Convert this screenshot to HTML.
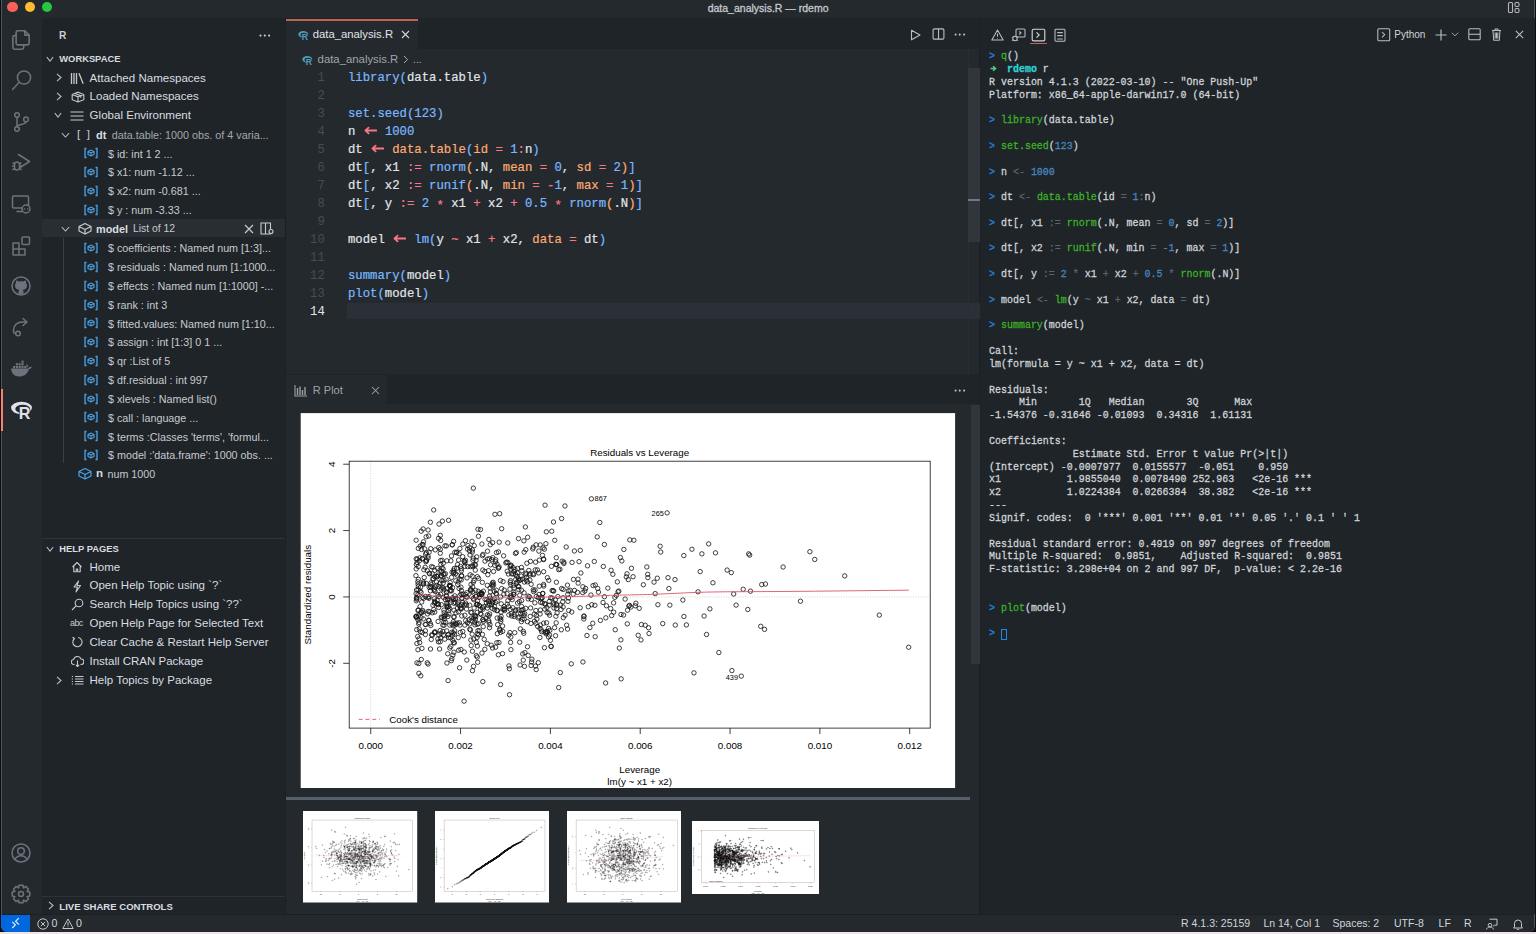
<!DOCTYPE html><html><head><meta charset="utf-8"><style>*{margin:0;padding:0;box-sizing:border-box}
html,body{width:1536px;height:934px;overflow:hidden}
body{background:#efe4e8;position:relative;font-family:"Liberation Sans",sans-serif}
.a{position:absolute}
.t{position:absolute;white-space:pre}
</style></head><body>
<div class="a" style="left:0px;top:0px;width:1536px;height:932px;background:#0c0d0f;"></div>
<div class="a" style="left:1px;top:0px;width:1534px;height:932px;background:#24292e;border-radius:0 0 6px 6px;border-left:1px solid #50555c;border-right:1px solid #50555c"></div>
<div class="a" style="left:2px;top:0px;width:1532px;height:18px;background:#24292e;"></div>
<div class="a" style="left:2px;top:17.5px;width:1532px;height:1px;background:#1b1f23;"></div>
<div class="a" style="left:7.4px;top:1.5999999999999996px;width:10.8px;height:10.8px;border-radius:50%;background:#fe5f57"></div>
<div class="a" style="left:24.6px;top:1.5999999999999996px;width:10.8px;height:10.8px;border-radius:50%;background:#febc2e"></div>
<div class="a" style="left:41.6px;top:1.5999999999999996px;width:10.8px;height:10.8px;border-radius:50%;background:#28c840"></div>
<div class="t" style="left:707.7px;top:1.90px;font-size:10.5px;line-height:12.6px;color:#c5c9ce;font-weight:400;font-family:'Liberation Sans',sans-serif;-webkit-text-stroke:0.3px currentColor">data_analysis.R — rdemo</div>
<svg class="a" style="left:1507px;top:1px;" width="14" height="13" viewBox="0 0 14 13" fill="none"><rect x="1.5" y="1.5" width="4" height="10" rx="1" stroke="#b5b9bd" stroke-width="1.1"/><rect x="8" y="1.5" width="4" height="4" rx="1.2" stroke="#b5b9bd" stroke-width="1.1"/><rect x="8" y="7.5" width="4" height="4" rx="1.2" stroke="#b5b9bd" stroke-width="1.1"/></svg>
<div class="a" style="left:2px;top:18px;width:39.5px;height:896px;background:#24292e;"></div>
<div class="a" style="left:41.5px;top:18px;width:243.5px;height:896px;background:#1f2428;"></div>
<div class="a" style="left:284.5px;top:18px;width:1px;height:896px;background:#1b1f23;"></div>
<div class="a" style="left:285.5px;top:18px;width:694px;height:30.5px;background:#1f2428;"></div>
<div class="a" style="left:285.5px;top:48.5px;width:694px;height:325.5px;background:#24292e;"></div>
<div class="a" style="left:285.5px;top:374px;width:694px;height:30.5px;background:#1f2428;"></div>
<div class="a" style="left:285.5px;top:404px;width:694px;height:510px;background:#24292e;"></div>
<div class="a" style="left:979.5px;top:18px;width:555px;height:896px;background:#1f2428;"></div>
<div class="a" style="left:979.3px;top:18px;width:1px;height:896px;background:#1b1f23;"></div>
<div class="a" style="left:2px;top:914.5px;width:1532px;height:17.3px;background:#24292e;border-radius:0 0 6px 6px"></div>
<div class="a" style="left:1.3px;top:914.5px;width:28.7px;height:17.3px;background:#0068de;border-radius:0 0 0 6px"></div>
<svg class="a" style="left:8.0px;top:26.700000000000003px;" width="26" height="26" viewBox="0 0 24 24" fill="none"><path d="M9 3.5h6.5l4 4V15a1.5 1.5 0 0 1-1.5 1.5H9A1.5 1.5 0 0 1 7.5 15V5A1.5 1.5 0 0 1 9 3.5z" stroke="#6b737c" stroke-width="1.5" stroke-linecap="round" stroke-linejoin="round"/><path d="M15.5 3.5v4h4" stroke="#6b737c" stroke-width="1.5" stroke-linecap="round" stroke-linejoin="round"/><path d="M7.5 8H6A1.5 1.5 0 0 0 4.5 9.5V19A1.5 1.5 0 0 0 6 20.5h7A1.5 1.5 0 0 0 14.5 19v-2.5" stroke="#6b737c" stroke-width="1.5" stroke-linecap="round" stroke-linejoin="round"/></svg>
<svg class="a" style="left:10px;top:68.4px;" width="24" height="24" viewBox="0 0 24 24" fill="none"><circle cx="14" cy="9.5" r="6.6" stroke="#6b737c" stroke-width="1.5" stroke-linecap="round" stroke-linejoin="round"/><path d="M9.4 14.1L2.6 21.4" stroke="#6b737c" stroke-width="1.5" stroke-linecap="round" stroke-linejoin="round"/></svg>
<svg class="a" style="left:9.9px;top:109.6px;" width="24" height="24" viewBox="0 0 24 24" fill="none"><circle cx="7" cy="5" r="2.3" stroke="#6b737c" stroke-width="1.5" stroke-linecap="round" stroke-linejoin="round"/><circle cx="7" cy="19" r="2.3" stroke="#6b737c" stroke-width="1.5" stroke-linecap="round" stroke-linejoin="round"/><circle cx="16" cy="9.4" r="2.3" stroke="#6b737c" stroke-width="1.5" stroke-linecap="round" stroke-linejoin="round"/><path d="M7 7.3v9.4M16 11.7c0 3.5-9 2-9 5" stroke="#6b737c" stroke-width="1.5" stroke-linecap="round" stroke-linejoin="round"/></svg>
<svg class="a" style="left:9.3px;top:150.0px;" width="24" height="24" viewBox="0 0 24 24" fill="none"><path d="M9.5 4.5L20.5 11.5L11 17.5" stroke="#6b737c" stroke-width="1.5" stroke-linecap="round" stroke-linejoin="round"/><path d="M5.5 14.5a2.5 2.5 0 0 1 5 0v3a2.5 2.5 0 0 1-5 0z" stroke="#6b737c" stroke-width="1.5" stroke-linecap="round" stroke-linejoin="round"/><path d="M3.5 16h2M10.5 16h2M3.8 19.5l1.8-.8M12.2 19.5l-1.8-.8M4 13l1.6.8M12 13l-1.6.8" stroke="#6b737c" stroke-width="1.5" stroke-linecap="round" stroke-linejoin="round"/></svg>
<svg class="a" style="left:9.3px;top:192.0px;" width="24" height="24" viewBox="0 0 24 24" fill="none"><rect x="3.5" y="4" width="16" height="12" rx="1" stroke="#6b737c" stroke-width="1.5" stroke-linecap="round" stroke-linejoin="round"/><path d="M8 19.5h5" stroke="#6b737c" stroke-width="1.5" stroke-linecap="round" stroke-linejoin="round"/><circle cx="17" cy="17" r="4" stroke="#6b737c" stroke-width="1.5" fill="#24292e"/><path d="M15.8 16.2l-1 1 1 1M18.2 16.2l1 1-1 1" stroke="#6b737c" stroke-width="1"/></svg>
<svg class="a" style="left:9.3px;top:233.5px;" width="24" height="24" viewBox="0 0 24 24" fill="none"><path d="M4 9h6v6H4zM4 15h6v6H4zM10 15h6v6h-6z" stroke="#6b737c" stroke-width="1.5" stroke-linecap="round" stroke-linejoin="round"/><rect x="13" y="3" width="7.5" height="7.5" rx="1" stroke="#6b737c" stroke-width="1.5" stroke-linecap="round" stroke-linejoin="round"/></svg>
<svg class="a" style="left:9.3px;top:274.0px;" width="24" height="24" viewBox="0 0 24 24" fill="none"><circle cx="12" cy="12" r="9" stroke="#6b737c" stroke-width="1.5" stroke-linecap="round" stroke-linejoin="round"/><path d="M9.5 20.5v-3c0-.8.3-1.4.8-1.8-2.8-.3-4.3-1.5-4.3-4.3 0-1 .4-1.9 1-2.6-.1-.7-.1-1.6.2-2.3 0 0 .9-.2 2.6 1a8 8 0 0 1 4.4 0c1.7-1.2 2.6-1 2.6-1 .3.7.3 1.6.2 2.3.6.7 1 1.6 1 2.6 0 2.8-1.5 4-4.3 4.3.5.4.8 1 .8 1.8v3" fill="#6b737c" stroke="none"/></svg>
<svg class="a" style="left:9.3px;top:315.0px;" width="24" height="24" viewBox="0 0 24 24" fill="none"><path d="M4.5 15c0-5 4-8 9-8h3.5M14 3.5L18 7l-4 3.5" stroke="#6b737c" stroke-width="1.5" stroke-linecap="round" stroke-linejoin="round"/><circle cx="9" cy="18.5" r="2.3" stroke="#6b737c" stroke-width="1.5" stroke-linecap="round" stroke-linejoin="round"/><path d="M4.5 15.5c0 1 .2 2 .6 2.8" stroke="#6b737c" stroke-width="1.5" stroke-linecap="round" stroke-linejoin="round"/></svg>
<svg class="a" style="left:10px;top:360px;" width="23" height="18" viewBox="0 0 23 18" fill="none"><path d="M1 8.5h17.2c.6-1.3 1.8-2 3.6-1.6-.5 1.3-1.6 2-2.8 2.1C17.5 14 14 16.5 9 16.5 4.5 16.5 1.6 13.5 1 8.5z" fill="#6b737c"/><g fill="#6b737c"><rect x="3" y="6" width="2.2" height="2.2"/><rect x="5.8" y="6" width="2.2" height="2.2"/><rect x="8.6" y="6" width="2.2" height="2.2"/><rect x="11.4" y="6" width="2.2" height="2.2"/><rect x="14.2" y="6" width="2.2" height="2.2"/><rect x="5.8" y="3.2" width="2.2" height="2.2"/><rect x="8.6" y="3.2" width="2.2" height="2.2"/><rect x="11.4" y="3.2" width="2.2" height="2.2"/><rect x="11.4" y="0.6" width="2.2" height="2.2"/></g><path d="M16.5 4.5l1.3 2.6" stroke="#6b737c" stroke-width="1.2"/></svg>
<div class="a" style="left:1.2px;top:389px;width:1.8px;height:41.5px;background:#f9826c;"></div>
<svg class="a" style="left:9px;top:398px;" width="26" height="23" viewBox="0 0 26 23" fill="none"><path fill-rule="evenodd" d="M2.0999999999999996 10a10.4 6.2 0 1 0 20.8 0a10.4 6.2 0 1 0 -20.8 0zM6.299999999999999 10.9a7.4 4.2 0 1 0 14.8 0a7.4 4.2 0 1 0 -14.8 0z" fill="#dfe2e6"/><text x="9.8" y="20.7" font-family="Liberation Sans" font-weight="700" font-size="16.2" fill="#dfe2e6" stroke="#24292e" stroke-width="1.4" paint-order="stroke">R</text></svg>
<svg class="a" style="left:9.3px;top:840.5px;" width="24" height="24" viewBox="0 0 24 24" fill="none"><circle cx="12" cy="12" r="9" stroke="#6b737c" stroke-width="1.5" stroke-linecap="round" stroke-linejoin="round"/><circle cx="12" cy="10" r="3.3" stroke="#6b737c" stroke-width="1.5" stroke-linecap="round" stroke-linejoin="round"/><path d="M6 18.5c1.2-2.3 3.4-3.7 6-3.7s4.8 1.4 6 3.7" stroke="#6b737c" stroke-width="1.5" stroke-linecap="round" stroke-linejoin="round"/></svg>
<svg class="a" style="left:9.3px;top:881.5px;" width="24" height="24" viewBox="0 0 24 24" fill="none"><path d="M20.78 10.04 L20.78 13.96 L18.25 14.42 L18.13 14.70 L19.60 16.82 L16.82 19.60 L14.70 18.13 L14.42 18.25 L13.96 20.78 L10.04 20.78 L9.58 18.25 L9.30 18.13 L7.18 19.60 L4.40 16.82 L5.87 14.70 L5.75 14.42 L3.22 13.96 L3.22 10.04 L5.75 9.58 L5.87 9.30 L4.40 7.18 L7.18 4.40 L9.30 5.87 L9.58 5.75 L10.04 3.22 L13.96 3.22 L14.42 5.75 L14.70 5.87 L16.82 4.40 L19.60 7.18 L18.13 9.30 L18.25 9.58Z" stroke="#6b737c" stroke-width="1.5" stroke-linecap="round" stroke-linejoin="round"/><circle cx="12" cy="12" r="2.5" stroke="#6b737c" stroke-width="1.5" stroke-linecap="round" stroke-linejoin="round"/></svg>
<div class="t" style="left:59px;top:29.53px;font-size:10.2px;line-height:12.24px;color:#c9cdd1;font-weight:700;font-family:'Liberation Sans',sans-serif;">R</div>
<svg class="a" style="left:257px;top:31.6px;" width="16" height="7" viewBox="0 0 16 7" fill="none"><circle cx="3.5" cy="3.6" r="1.05" fill="#c9cdd1"/><circle cx="7.8" cy="3.6" r="1.05" fill="#c9cdd1"/><circle cx="12.1" cy="3.6" r="1.05" fill="#c9cdd1"/></svg>
<svg class="a" style="left:45.5px;top:55.6px;" width="8" height="6" viewBox="0 0 8 6" fill="none"><path d="M0.8 1L4.0 5L7.2 1" stroke="#b8bdc2" stroke-width="1.1" fill="none"/></svg>
<div class="t" style="left:59.3px;top:53.64px;font-size:9.35px;line-height:11.22px;color:#d9dde1;font-weight:700;font-family:'Liberation Sans',sans-serif;">WORKSPACE</div>
<svg class="a" style="left:55.5px;top:73.3px;" width="6" height="9" viewBox="0 0 6 9" fill="none"><path d="M1 0.8L5 4.5L1 8.2" stroke="#b8bdc2" stroke-width="1.1" fill="none"/></svg>
<svg class="a" style="left:70px;top:71.5px;" width="15" height="13" viewBox="0 0 15 13" fill="none"><path d="M1.5 1v11M4 1v11M6.5 1v11M9 1.2l4.2 10.6" stroke="#c6cacf" stroke-width="1.3"/></svg>
<div class="t" style="left:89.6px;top:71.52px;font-size:11.55px;line-height:13.86px;color:#d9dde1;font-weight:400;font-family:'Liberation Sans',sans-serif;">Attached Namespaces</div>
<svg class="a" style="left:55.5px;top:92.0px;" width="6" height="9" viewBox="0 0 6 9" fill="none"><path d="M1 0.8L5 4.5L1 8.2" stroke="#b8bdc2" stroke-width="1.1" fill="none"/></svg>
<svg class="a" style="left:70.5px;top:90.5px;" width="14" height="12" viewBox="0 0 14 12" fill="none"><path d="M1.2 3.5L7 1.2l5.8 2.3v5.2L7 11 1.2 8.7z M1.2 3.5L7 5.8l5.8-2.3 M7 5.8V11" stroke="#c6cacf" stroke-width="1.1" fill="none"/><path d="M4 2.4l5.8 2.3v2" stroke="#c6cacf" stroke-width="1.1"/></svg>
<div class="t" style="left:89.6px;top:90.22px;font-size:11.55px;line-height:13.86px;color:#d9dde1;font-weight:400;font-family:'Liberation Sans',sans-serif;">Loaded Namespaces</div>
<svg class="a" style="left:54px;top:112.2px;" width="8" height="6" viewBox="0 0 8 6" fill="none"><path d="M0.8 1L4.0 5L7.2 1" stroke="#b8bdc2" stroke-width="1.1" fill="none"/></svg>
<svg class="a" style="left:70px;top:109.5px;" width="14" height="12" viewBox="0 0 14 12" fill="none"><path d="M0.5 2h13M0.5 6h13M0.5 10h13" stroke="#c6cacf" stroke-width="1.2"/></svg>
<div class="t" style="left:89.6px;top:108.92px;font-size:11.55px;line-height:13.86px;color:#d9dde1;font-weight:400;font-family:'Liberation Sans',sans-serif;">Global Environment</div>
<svg class="a" style="left:60.5px;top:131.6px;" width="9" height="6" viewBox="0 0 9 6" fill="none"><path d="M0.8 1L4.5 5L8.2 1" stroke="#b8bdc2" stroke-width="1.1" fill="none"/></svg>
<div class="t" style="left:77px;top:128.15px;font-size:11.5px;line-height:13.8px;color:#c6cacf;font-weight:400;font-family:'Liberation Sans',sans-serif;letter-spacing:1.7px">[ ]</div>
<div class="t" style="left:96px;top:128.65px;font-size:11.0px;line-height:13.2px;color:#d9dde1;font-weight:700;font-family:'Liberation Sans',sans-serif;">dt</div>
<div class="t" style="left:111.8px;top:128.98px;font-size:10.78px;line-height:12.94px;color:#a3a8ae;font-weight:400;font-family:'Liberation Sans',sans-serif;">data.table: 1000 obs. of 4 varia...</div>
<svg class="a" style="left:84px;top:147.4px;" width="14" height="12" viewBox="0 0 14 12" fill="none"><path d="M2.5 1.5H1v9h1.5M11.5 1.5H13v9h-1.5" stroke="#4aa3e8" stroke-width="1.3" fill="none"/><path d="M4 4.5l3-1.5 3 1.5v3l-3 1.5-3-1.5z M4 4.5l3 1.5 3-1.5 M7 6v3" stroke="#4aa3e8" stroke-width="1.1" fill="none"/></svg>
<div class="t" style="left:108px;top:147.60px;font-size:10.75px;line-height:12.9px;color:#c6cacf;font-weight:400;font-family:'Liberation Sans',sans-serif;">$ id: int 1 2 ...</div>
<svg class="a" style="left:84px;top:166.25px;" width="14" height="12" viewBox="0 0 14 12" fill="none"><path d="M2.5 1.5H1v9h1.5M11.5 1.5H13v9h-1.5" stroke="#4aa3e8" stroke-width="1.3" fill="none"/><path d="M4 4.5l3-1.5 3 1.5v3l-3 1.5-3-1.5z M4 4.5l3 1.5 3-1.5 M7 6v3" stroke="#4aa3e8" stroke-width="1.1" fill="none"/></svg>
<div class="t" style="left:108px;top:166.45px;font-size:10.75px;line-height:12.9px;color:#c6cacf;font-weight:400;font-family:'Liberation Sans',sans-serif;">$ x1: num -1.12 ...</div>
<svg class="a" style="left:84px;top:185.10000000000002px;" width="14" height="12" viewBox="0 0 14 12" fill="none"><path d="M2.5 1.5H1v9h1.5M11.5 1.5H13v9h-1.5" stroke="#4aa3e8" stroke-width="1.3" fill="none"/><path d="M4 4.5l3-1.5 3 1.5v3l-3 1.5-3-1.5z M4 4.5l3 1.5 3-1.5 M7 6v3" stroke="#4aa3e8" stroke-width="1.1" fill="none"/></svg>
<div class="t" style="left:108px;top:185.30px;font-size:10.75px;line-height:12.9px;color:#c6cacf;font-weight:400;font-family:'Liberation Sans',sans-serif;">$ x2: num -0.681 ...</div>
<svg class="a" style="left:84px;top:203.95000000000002px;" width="14" height="12" viewBox="0 0 14 12" fill="none"><path d="M2.5 1.5H1v9h1.5M11.5 1.5H13v9h-1.5" stroke="#4aa3e8" stroke-width="1.3" fill="none"/><path d="M4 4.5l3-1.5 3 1.5v3l-3 1.5-3-1.5z M4 4.5l3 1.5 3-1.5 M7 6v3" stroke="#4aa3e8" stroke-width="1.1" fill="none"/></svg>
<div class="t" style="left:108px;top:204.15px;font-size:10.75px;line-height:12.9px;color:#c6cacf;font-weight:400;font-family:'Liberation Sans',sans-serif;">$ y : num -3.33 ...</div>
<div class="a" style="left:42px;top:218.6px;width:242.5px;height:18.8px;background:#282e34;"></div>
<svg class="a" style="left:60.5px;top:225.7px;" width="9" height="6" viewBox="0 0 9 6" fill="none"><path d="M0.8 1L4.5 5L8.2 1" stroke="#b8bdc2" stroke-width="1.1" fill="none"/></svg>
<svg class="a" style="left:77.5px;top:222.2px;" width="14" height="13" viewBox="0 0 14 13" fill="none"><path d="M1 4.5L7 1.5l6 3v4.5L7 12 1 9z M1 4.5L7 7.5l6-3 M7 7.5V12" stroke="#c6cacf" stroke-width="1.2" fill="none" stroke-linejoin="round"/></svg>
<div class="t" style="left:96px;top:222.81px;font-size:10.9px;line-height:13.08px;color:#d9dde1;font-weight:700;font-family:'Liberation Sans',sans-serif;">model</div>
<div class="t" style="left:133px;top:223.24px;font-size:10.35px;line-height:12.42px;color:#c6cacf;font-weight:400;font-family:'Liberation Sans',sans-serif;">List of 12</div>
<svg class="a" style="left:243.5px;top:223.5px;" width="10" height="10" viewBox="0 0 10 10" fill="none"><path d="M1 1l8 8M9 1L1 9" stroke="#c6cacf" stroke-width="1.2"/></svg>
<svg class="a" style="left:259.5px;top:222px;" width="14" height="13" viewBox="0 0 14 13" fill="none"><path d="M1 1h9.5v11H1zM5.5 1v11" stroke="#c6cacf" stroke-width="1.1" fill="none"/><circle cx="11" cy="9.5" r="2" stroke="#c6cacf" stroke-width="1.1" fill="#282e34"/></svg>
<div class="a" style="left:62.5px;top:238px;width:0.8px;height:225px;background:#3a4047;"></div>
<svg class="a" style="left:84px;top:242.1px;" width="14" height="12" viewBox="0 0 14 12" fill="none"><path d="M2.5 1.5H1v9h1.5M11.5 1.5H13v9h-1.5" stroke="#4aa3e8" stroke-width="1.3" fill="none"/><path d="M4 4.5l3-1.5 3 1.5v3l-3 1.5-3-1.5z M4 4.5l3 1.5 3-1.5 M7 6v3" stroke="#4aa3e8" stroke-width="1.1" fill="none"/></svg>
<div class="t" style="left:108px;top:242.30px;font-size:10.75px;line-height:12.9px;color:#c6cacf;font-weight:400;font-family:'Liberation Sans',sans-serif;">$ coefficients : Named num [1:3]...</div>
<svg class="a" style="left:84px;top:260.92px;" width="14" height="12" viewBox="0 0 14 12" fill="none"><path d="M2.5 1.5H1v9h1.5M11.5 1.5H13v9h-1.5" stroke="#4aa3e8" stroke-width="1.3" fill="none"/><path d="M4 4.5l3-1.5 3 1.5v3l-3 1.5-3-1.5z M4 4.5l3 1.5 3-1.5 M7 6v3" stroke="#4aa3e8" stroke-width="1.1" fill="none"/></svg>
<div class="t" style="left:108px;top:261.12px;font-size:10.75px;line-height:12.9px;color:#c6cacf;font-weight:400;font-family:'Liberation Sans',sans-serif;">$ residuals : Named num [1:1000...</div>
<svg class="a" style="left:84px;top:279.74px;" width="14" height="12" viewBox="0 0 14 12" fill="none"><path d="M2.5 1.5H1v9h1.5M11.5 1.5H13v9h-1.5" stroke="#4aa3e8" stroke-width="1.3" fill="none"/><path d="M4 4.5l3-1.5 3 1.5v3l-3 1.5-3-1.5z M4 4.5l3 1.5 3-1.5 M7 6v3" stroke="#4aa3e8" stroke-width="1.1" fill="none"/></svg>
<div class="t" style="left:108px;top:279.94px;font-size:10.75px;line-height:12.9px;color:#c6cacf;font-weight:400;font-family:'Liberation Sans',sans-serif;">$ effects : Named num [1:1000] -...</div>
<svg class="a" style="left:84px;top:298.56px;" width="14" height="12" viewBox="0 0 14 12" fill="none"><path d="M2.5 1.5H1v9h1.5M11.5 1.5H13v9h-1.5" stroke="#4aa3e8" stroke-width="1.3" fill="none"/><path d="M4 4.5l3-1.5 3 1.5v3l-3 1.5-3-1.5z M4 4.5l3 1.5 3-1.5 M7 6v3" stroke="#4aa3e8" stroke-width="1.1" fill="none"/></svg>
<div class="t" style="left:108px;top:298.76px;font-size:10.75px;line-height:12.9px;color:#c6cacf;font-weight:400;font-family:'Liberation Sans',sans-serif;">$ rank : int 3</div>
<svg class="a" style="left:84px;top:317.38px;" width="14" height="12" viewBox="0 0 14 12" fill="none"><path d="M2.5 1.5H1v9h1.5M11.5 1.5H13v9h-1.5" stroke="#4aa3e8" stroke-width="1.3" fill="none"/><path d="M4 4.5l3-1.5 3 1.5v3l-3 1.5-3-1.5z M4 4.5l3 1.5 3-1.5 M7 6v3" stroke="#4aa3e8" stroke-width="1.1" fill="none"/></svg>
<div class="t" style="left:108px;top:317.58px;font-size:10.75px;line-height:12.9px;color:#c6cacf;font-weight:400;font-family:'Liberation Sans',sans-serif;">$ fitted.values: Named num [1:10...</div>
<svg class="a" style="left:84px;top:336.2px;" width="14" height="12" viewBox="0 0 14 12" fill="none"><path d="M2.5 1.5H1v9h1.5M11.5 1.5H13v9h-1.5" stroke="#4aa3e8" stroke-width="1.3" fill="none"/><path d="M4 4.5l3-1.5 3 1.5v3l-3 1.5-3-1.5z M4 4.5l3 1.5 3-1.5 M7 6v3" stroke="#4aa3e8" stroke-width="1.1" fill="none"/></svg>
<div class="t" style="left:108px;top:336.40px;font-size:10.75px;line-height:12.9px;color:#c6cacf;font-weight:400;font-family:'Liberation Sans',sans-serif;">$ assign : int [1:3] 0 1 ...</div>
<svg class="a" style="left:84px;top:355.02px;" width="14" height="12" viewBox="0 0 14 12" fill="none"><path d="M2.5 1.5H1v9h1.5M11.5 1.5H13v9h-1.5" stroke="#4aa3e8" stroke-width="1.3" fill="none"/><path d="M4 4.5l3-1.5 3 1.5v3l-3 1.5-3-1.5z M4 4.5l3 1.5 3-1.5 M7 6v3" stroke="#4aa3e8" stroke-width="1.1" fill="none"/></svg>
<div class="t" style="left:108px;top:355.22px;font-size:10.75px;line-height:12.9px;color:#c6cacf;font-weight:400;font-family:'Liberation Sans',sans-serif;">$ qr :List of 5</div>
<svg class="a" style="left:84px;top:373.84000000000003px;" width="14" height="12" viewBox="0 0 14 12" fill="none"><path d="M2.5 1.5H1v9h1.5M11.5 1.5H13v9h-1.5" stroke="#4aa3e8" stroke-width="1.3" fill="none"/><path d="M4 4.5l3-1.5 3 1.5v3l-3 1.5-3-1.5z M4 4.5l3 1.5 3-1.5 M7 6v3" stroke="#4aa3e8" stroke-width="1.1" fill="none"/></svg>
<div class="t" style="left:108px;top:374.04px;font-size:10.75px;line-height:12.9px;color:#c6cacf;font-weight:400;font-family:'Liberation Sans',sans-serif;">$ df.residual : int 997</div>
<svg class="a" style="left:84px;top:392.65999999999997px;" width="14" height="12" viewBox="0 0 14 12" fill="none"><path d="M2.5 1.5H1v9h1.5M11.5 1.5H13v9h-1.5" stroke="#4aa3e8" stroke-width="1.3" fill="none"/><path d="M4 4.5l3-1.5 3 1.5v3l-3 1.5-3-1.5z M4 4.5l3 1.5 3-1.5 M7 6v3" stroke="#4aa3e8" stroke-width="1.1" fill="none"/></svg>
<div class="t" style="left:108px;top:392.86px;font-size:10.75px;line-height:12.9px;color:#c6cacf;font-weight:400;font-family:'Liberation Sans',sans-serif;">$ xlevels : Named list()</div>
<svg class="a" style="left:84px;top:411.48px;" width="14" height="12" viewBox="0 0 14 12" fill="none"><path d="M2.5 1.5H1v9h1.5M11.5 1.5H13v9h-1.5" stroke="#4aa3e8" stroke-width="1.3" fill="none"/><path d="M4 4.5l3-1.5 3 1.5v3l-3 1.5-3-1.5z M4 4.5l3 1.5 3-1.5 M7 6v3" stroke="#4aa3e8" stroke-width="1.1" fill="none"/></svg>
<div class="t" style="left:108px;top:411.68px;font-size:10.75px;line-height:12.9px;color:#c6cacf;font-weight:400;font-family:'Liberation Sans',sans-serif;">$ call : language ...</div>
<svg class="a" style="left:84px;top:430.29999999999995px;" width="14" height="12" viewBox="0 0 14 12" fill="none"><path d="M2.5 1.5H1v9h1.5M11.5 1.5H13v9h-1.5" stroke="#4aa3e8" stroke-width="1.3" fill="none"/><path d="M4 4.5l3-1.5 3 1.5v3l-3 1.5-3-1.5z M4 4.5l3 1.5 3-1.5 M7 6v3" stroke="#4aa3e8" stroke-width="1.1" fill="none"/></svg>
<div class="t" style="left:108px;top:430.50px;font-size:10.75px;line-height:12.9px;color:#c6cacf;font-weight:400;font-family:'Liberation Sans',sans-serif;">$ terms :Classes 'terms', 'formul...</div>
<svg class="a" style="left:84px;top:449.12px;" width="14" height="12" viewBox="0 0 14 12" fill="none"><path d="M2.5 1.5H1v9h1.5M11.5 1.5H13v9h-1.5" stroke="#4aa3e8" stroke-width="1.3" fill="none"/><path d="M4 4.5l3-1.5 3 1.5v3l-3 1.5-3-1.5z M4 4.5l3 1.5 3-1.5 M7 6v3" stroke="#4aa3e8" stroke-width="1.1" fill="none"/></svg>
<div class="t" style="left:108px;top:449.32px;font-size:10.75px;line-height:12.9px;color:#c6cacf;font-weight:400;font-family:'Liberation Sans',sans-serif;">$ model :'data.frame': 1000 obs. ...</div>
<svg class="a" style="left:77.5px;top:467.2px;" width="14" height="13" viewBox="0 0 14 13" fill="none"><path d="M1 4.5L7 1.5l6 3v4.5L7 12 1 9z M1 4.5L7 7.5l6-3 M7 7.5V12" stroke="#4aa3e8" stroke-width="1.2" fill="none" stroke-linejoin="round"/></svg>
<div class="t" style="left:96px;top:467.35px;font-size:11.5px;line-height:13.8px;color:#d9dde1;font-weight:700;font-family:'Liberation Sans',sans-serif;">n</div>
<div class="t" style="left:107.6px;top:468.03px;font-size:10.7px;line-height:12.84px;color:#c6cacf;font-weight:400;font-family:'Liberation Sans',sans-serif;">num 1000</div>
<div class="a" style="left:42px;top:538.3px;width:242.5px;height:1px;background:#2d3339;"></div>
<svg class="a" style="left:45.5px;top:545.6px;" width="8" height="6" viewBox="0 0 8 6" fill="none"><path d="M0.8 1L4.0 5L7.2 1" stroke="#b8bdc2" stroke-width="1.1" fill="none"/></svg>
<div class="t" style="left:59.3px;top:543.64px;font-size:9.35px;line-height:11.22px;color:#d9dde1;font-weight:700;font-family:'Liberation Sans',sans-serif;">HELP PAGES</div>
<div class="t" style="left:89.5px;top:560.55px;font-size:11.5px;line-height:13.8px;color:#d9dde1;font-weight:400;font-family:'Liberation Sans',sans-serif;">Home</div>
<div class="t" style="left:89.5px;top:579.45px;font-size:11.5px;line-height:13.8px;color:#d9dde1;font-weight:400;font-family:'Liberation Sans',sans-serif;">Open Help Topic using `?`</div>
<div class="t" style="left:89.5px;top:598.35px;font-size:11.5px;line-height:13.8px;color:#d9dde1;font-weight:400;font-family:'Liberation Sans',sans-serif;">Search Help Topics using `??`</div>
<div class="t" style="left:89.5px;top:617.25px;font-size:11.5px;line-height:13.8px;color:#d9dde1;font-weight:400;font-family:'Liberation Sans',sans-serif;">Open Help Page for Selected Text</div>
<div class="t" style="left:89.5px;top:636.15px;font-size:11.5px;line-height:13.8px;color:#d9dde1;font-weight:400;font-family:'Liberation Sans',sans-serif;">Clear Cache &amp; Restart Help Server</div>
<div class="t" style="left:89.5px;top:655.05px;font-size:11.5px;line-height:13.8px;color:#d9dde1;font-weight:400;font-family:'Liberation Sans',sans-serif;">Install CRAN Package</div>
<div class="t" style="left:89.5px;top:673.95px;font-size:11.5px;line-height:13.8px;color:#d9dde1;font-weight:400;font-family:'Liberation Sans',sans-serif;">Help Topics by Package</div>
<svg class="a" style="left:71px;top:561px;" width="12" height="12" viewBox="0 0 12 12" fill="none"><path d="M1.5 6L6 1.5 10.5 6M2.8 4.8v6h2.5V8h1.4v2.8h2.5v-6" stroke="#c6cacf" stroke-width="1.1" fill="none" stroke-linejoin="round"/></svg>
<svg class="a" style="left:71px;top:579.5px;" width="12" height="13" viewBox="0 0 12 13" fill="none"><path d="M7.5 1L3 7h3.5L5 12l4.5-6.5H6z" stroke="#c6cacf" stroke-width="1.1" fill="none" stroke-linejoin="round"/></svg>
<svg class="a" style="left:70.5px;top:598px;" width="13" height="13" viewBox="0 0 13 13" fill="none"><circle cx="8" cy="5" r="3.8" stroke="#c6cacf" stroke-width="1.1" fill="none" stroke-linejoin="round"/><path d="M5.3 7.7L1 12" stroke="#c6cacf" stroke-width="1.1" fill="none" stroke-linejoin="round"/></svg>
<div class="t" style="left:70px;top:618.35px;font-size:9px;line-height:10.8px;color:#c6cacf;font-weight:400;font-family:'Liberation Sans',sans-serif;letter-spacing:-0.6px">abc</div>
<svg class="a" style="left:71px;top:636px;" width="12" height="12" viewBox="0 0 12 12" fill="none"><path d="M3.5 2.5A4.6 4.6 0 1 0 7 1.5M1.5 1.2l2 1.3-1.2 2" stroke="#c6cacf" stroke-width="1.1" fill="none" stroke-linejoin="round"/></svg>
<svg class="a" style="left:70.5px;top:655px;" width="13" height="12" viewBox="0 0 13 12" fill="none"><path d="M3.5 9.5H3a2.5 2.5 0 0 1-.3-5A3.8 3.8 0 0 1 10 4a2.6 2.6 0 0 1 .2 5.5H9.5M6.5 5.5v6M4.8 9.8l1.7 1.7 1.7-1.7" stroke="#c6cacf" stroke-width="1.1" fill="none" stroke-linejoin="round"/></svg>
<svg class="a" style="left:55.5px;top:675.5px;" width="6" height="9" viewBox="0 0 6 9" fill="none"><path d="M1 0.8L5 4.5L1 8.2" stroke="#b8bdc2" stroke-width="1.1" fill="none"/></svg>
<svg class="a" style="left:70.5px;top:674.5px;" width="13" height="11" viewBox="0 0 13 11" fill="none"><path d="M0.8 1.5h1.2M0.8 4h1.2M0.8 6.5h1.2M0.8 9h1.2M4 1.5h8.5M4 4h8.5M4 6.5h8.5M4 9h8.5" stroke="#c6cacf" stroke-width="1.1"/></svg>
<div class="a" style="left:42px;top:895.5px;width:242.5px;height:1px;background:#2d3339;"></div>
<svg class="a" style="left:48px;top:901.1px;" width="6" height="9" viewBox="0 0 6 9" fill="none"><path d="M1 0.8L5 4.5L1 8.2" stroke="#b8bdc2" stroke-width="1.1" fill="none"/></svg>
<div class="t" style="left:59.3px;top:900.52px;font-size:9.55px;line-height:11.46px;color:#d9dde1;font-weight:700;font-family:'Liberation Sans',sans-serif;">LIVE SHARE CONTROLS</div>
<div class="a" style="left:285.5px;top:18.5px;width:132.5px;height:30px;background:#24292e;"></div>
<div class="a" style="left:285.5px;top:18.9px;width:132.5px;height:1.7px;background:#bd6452;"></div>
<svg class="a" style="left:297.5px;top:29.5px;" width="12.0" height="10.0" viewBox="0 0 12 10" fill="none"><path fill-rule="evenodd" d="M0.2999999999999998 4.3a5.0 3.3 0 1 0 10.0 0a5.0 3.3 0 1 0 -10.0 0zM2.5000000000000004 4.8a3.4 2.1 0 1 0 6.8 0a3.4 2.1 0 1 0 -6.8 0z" fill="#519aba"/><text x="3.7" y="9.6" font-family="Liberation Sans" font-weight="700" font-size="8.6" fill="#519aba" stroke="#24292e" stroke-width="0.9" paint-order="stroke">R</text></svg>
<div class="t" style="left:312.7px;top:27.52px;font-size:11.3px;line-height:13.56px;color:#e1e4e8;font-weight:400;font-family:'Liberation Sans',sans-serif;">data_analysis.R</div>
<svg class="a" style="left:401px;top:30px;" width="9" height="9" viewBox="0 0 9 9" fill="none"><path d="M1 1l7 7M8 1L1 8" stroke="#d1d5da" stroke-width="1.1"/></svg>
<svg class="a" style="left:909.5px;top:28.5px;" width="11" height="12" viewBox="0 0 11 12" fill="none"><path d="M1.5 1.2L10 6 1.5 10.8z" stroke="#b9bec3" stroke-width="1.1" fill="none" stroke-linejoin="round"/></svg>
<svg class="a" style="left:931.5px;top:28.3px;" width="13" height="12" viewBox="0 0 13 12" fill="none"><rect x="1.1" y="0.9" width="10.8" height="10.2" rx="1.2" stroke="#b9bec3" stroke-width="1.1" fill="none"/><path d="M6.5 1v10" stroke="#b9bec3" stroke-width="1.1"/></svg>
<svg class="a" style="left:952px;top:31px;" width="16" height="7" viewBox="0 0 16 7" fill="none"><circle cx="3.6" cy="3.6" r="1.05" fill="#b9bec3"/><circle cx="7.7" cy="3.6" r="1.05" fill="#b9bec3"/><circle cx="12.1" cy="3.6" r="1.05" fill="#b9bec3"/></svg>
<svg class="a" style="left:302px;top:54.5px;" width="12.0" height="10.0" viewBox="0 0 12 10" fill="none"><path fill-rule="evenodd" d="M0.2999999999999998 4.3a5.0 3.3 0 1 0 10.0 0a5.0 3.3 0 1 0 -10.0 0zM2.5000000000000004 4.8a3.4 2.1 0 1 0 6.8 0a3.4 2.1 0 1 0 -6.8 0z" fill="#519aba"/><text x="3.7" y="9.6" font-family="Liberation Sans" font-weight="700" font-size="8.6" fill="#519aba" stroke="#24292e" stroke-width="0.9" paint-order="stroke">R</text></svg>
<div class="t" style="left:317.6px;top:52.79px;font-size:11.35px;line-height:13.62px;color:#a0a5ab;font-weight:400;font-family:'Liberation Sans',sans-serif;">data_analysis.R</div>
<svg class="a" style="left:403px;top:54.5px;" width="6" height="9" viewBox="0 0 6 9" fill="none"><path d="M1 1l3.5 3.5L1 8" stroke="#a8adb2" stroke-width="1" fill="none"/></svg>
<div class="t" style="left:413px;top:53.30px;font-size:10.5px;line-height:12.6px;color:#a8adb2;font-weight:400;font-family:'Liberation Sans',sans-serif;">...</div>
<div class="a" style="left:347px;top:302.6px;width:632.5px;height:16.9px;background:#2b3036;"></div>
<div class="a" style="left:968px;top:48.5px;width:0.8px;height:325.5px;background:#292e34;"></div>
<div class="a" style="left:968px;top:68.2px;width:11.5px;height:173.5px;background:#30363c;"></div>
<div class="a" style="left:968px;top:199.3px;width:11.5px;height:1.8px;background:#6f7a85;"></div>
<div class="t" style="left:317.425px;top:68.75px;font-size:12.29px;line-height:18px;color:#454d55;font-weight:400;font-family:'Liberation Mono',monospace;">1</div>
<div class="t" style="left:348px;top:68.75px;font-size:12.29px;line-height:18px;color:#e1e4e8;font-weight:400;font-family:'Liberation Mono',monospace;-webkit-text-stroke:0.2px currentColor"><span style="color:#79b8ff">library</span><span style="color:#79b8ff">(</span><span style="color:#e1e4e8">data.table</span><span style="color:#79b8ff">)</span></div>
<div class="t" style="left:317.425px;top:86.75px;font-size:12.29px;line-height:18px;color:#454d55;font-weight:400;font-family:'Liberation Mono',monospace;">2</div>
<div class="t" style="left:317.425px;top:104.75px;font-size:12.29px;line-height:18px;color:#454d55;font-weight:400;font-family:'Liberation Mono',monospace;">3</div>
<div class="t" style="left:348px;top:104.75px;font-size:12.29px;line-height:18px;color:#e1e4e8;font-weight:400;font-family:'Liberation Mono',monospace;-webkit-text-stroke:0.2px currentColor"><span style="color:#79b8ff">set.seed</span><span style="color:#79b8ff">(</span><span style="color:#79b8ff">123</span><span style="color:#79b8ff">)</span></div>
<div class="t" style="left:317.425px;top:122.75px;font-size:12.29px;line-height:18px;color:#454d55;font-weight:400;font-family:'Liberation Mono',monospace;">4</div>
<div class="t" style="left:348px;top:122.75px;font-size:12.29px;line-height:18px;color:#e1e4e8;font-weight:400;font-family:'Liberation Mono',monospace;-webkit-text-stroke:0.2px currentColor"><span style="color:#e1e4e8">n </span><span style="display:inline-block;width:14.75px;height:10px;position:relative"><svg style="position:absolute;left:1px;top:1px" width="13" height="9" viewBox="0 0 13 9"><path d="M1.5 4.5h11M4.6 1.6L1.5 4.5 4.6 7.4" stroke="#f97583" stroke-width="1.8" fill="none" stroke-linejoin="round" stroke-linecap="round"/></svg></span><span style="color:#e1e4e8"> </span><span style="color:#79b8ff">1000</span></div>
<div class="t" style="left:317.425px;top:140.75px;font-size:12.29px;line-height:18px;color:#454d55;font-weight:400;font-family:'Liberation Mono',monospace;">5</div>
<div class="t" style="left:348px;top:140.75px;font-size:12.29px;line-height:18px;color:#e1e4e8;font-weight:400;font-family:'Liberation Mono',monospace;-webkit-text-stroke:0.2px currentColor"><span style="color:#e1e4e8">dt </span><span style="display:inline-block;width:14.75px;height:10px;position:relative"><svg style="position:absolute;left:1px;top:1px" width="13" height="9" viewBox="0 0 13 9"><path d="M1.5 4.5h11M4.6 1.6L1.5 4.5 4.6 7.4" stroke="#f97583" stroke-width="1.8" fill="none" stroke-linejoin="round" stroke-linecap="round"/></svg></span><span style="color:#e1e4e8"> </span><span style="color:#ffab70">data.table</span><span style="color:#79b8ff">(</span><span style="color:#ffab70">id</span><span style="color:#e1e4e8"> </span><span style="color:#f97583">=</span><span style="color:#e1e4e8"> </span><span style="color:#79b8ff">1</span><span style="color:#f97583">:</span><span style="color:#e1e4e8">n</span><span style="color:#79b8ff">)</span></div>
<div class="t" style="left:317.425px;top:158.75px;font-size:12.29px;line-height:18px;color:#454d55;font-weight:400;font-family:'Liberation Mono',monospace;">6</div>
<div class="t" style="left:348px;top:158.75px;font-size:12.29px;line-height:18px;color:#e1e4e8;font-weight:400;font-family:'Liberation Mono',monospace;-webkit-text-stroke:0.2px currentColor"><span style="color:#e1e4e8">dt</span><span style="color:#79b8ff">[</span><span style="color:#e1e4e8">, x1 </span><span style="color:#f97583">:=</span><span style="color:#e1e4e8"> </span><span style="color:#79b8ff">rnorm</span><span style="color:#ffab70">(</span><span style="color:#e1e4e8">.N, </span><span style="color:#ffab70">mean</span><span style="color:#e1e4e8"> </span><span style="color:#f97583">=</span><span style="color:#e1e4e8"> </span><span style="color:#79b8ff">0</span><span style="color:#e1e4e8">, </span><span style="color:#ffab70">sd</span><span style="color:#e1e4e8"> </span><span style="color:#f97583">=</span><span style="color:#e1e4e8"> </span><span style="color:#79b8ff">2</span><span style="color:#ffab70">)</span><span style="color:#79b8ff">]</span></div>
<div class="t" style="left:317.425px;top:176.75px;font-size:12.29px;line-height:18px;color:#454d55;font-weight:400;font-family:'Liberation Mono',monospace;">7</div>
<div class="t" style="left:348px;top:176.75px;font-size:12.29px;line-height:18px;color:#e1e4e8;font-weight:400;font-family:'Liberation Mono',monospace;-webkit-text-stroke:0.2px currentColor"><span style="color:#e1e4e8">dt</span><span style="color:#79b8ff">[</span><span style="color:#e1e4e8">, x2 </span><span style="color:#f97583">:=</span><span style="color:#e1e4e8"> </span><span style="color:#79b8ff">runif</span><span style="color:#ffab70">(</span><span style="color:#e1e4e8">.N, </span><span style="color:#ffab70">min</span><span style="color:#e1e4e8"> </span><span style="color:#f97583">=</span><span style="color:#e1e4e8"> </span><span style="color:#f97583">-</span><span style="color:#79b8ff">1</span><span style="color:#e1e4e8">, </span><span style="color:#ffab70">max</span><span style="color:#e1e4e8"> </span><span style="color:#f97583">=</span><span style="color:#e1e4e8"> </span><span style="color:#79b8ff">1</span><span style="color:#ffab70">)</span><span style="color:#79b8ff">]</span></div>
<div class="t" style="left:317.425px;top:194.75px;font-size:12.29px;line-height:18px;color:#454d55;font-weight:400;font-family:'Liberation Mono',monospace;">8</div>
<div class="t" style="left:348px;top:194.75px;font-size:12.29px;line-height:18px;color:#e1e4e8;font-weight:400;font-family:'Liberation Mono',monospace;-webkit-text-stroke:0.2px currentColor"><span style="color:#e1e4e8">dt</span><span style="color:#79b8ff">[</span><span style="color:#e1e4e8">, y </span><span style="color:#f97583">:=</span><span style="color:#e1e4e8"> </span><span style="color:#79b8ff">2</span><span style="color:#e1e4e8"> </span><span style="color:#f97583;position:relative;top:2.5px">*</span><span style="color:#e1e4e8"> x1 </span><span style="color:#f97583">+</span><span style="color:#e1e4e8"> x2 </span><span style="color:#f97583">+</span><span style="color:#e1e4e8"> </span><span style="color:#79b8ff">0.5</span><span style="color:#e1e4e8"> </span><span style="color:#f97583;position:relative;top:2.5px">*</span><span style="color:#e1e4e8"> </span><span style="color:#79b8ff">rnorm</span><span style="color:#ffab70">(</span><span style="color:#e1e4e8">.N</span><span style="color:#ffab70">)</span><span style="color:#79b8ff">]</span></div>
<div class="t" style="left:317.425px;top:212.75px;font-size:12.29px;line-height:18px;color:#454d55;font-weight:400;font-family:'Liberation Mono',monospace;">9</div>
<div class="t" style="left:310.05px;top:230.75px;font-size:12.29px;line-height:18px;color:#454d55;font-weight:400;font-family:'Liberation Mono',monospace;">10</div>
<div class="t" style="left:348px;top:230.75px;font-size:12.29px;line-height:18px;color:#e1e4e8;font-weight:400;font-family:'Liberation Mono',monospace;-webkit-text-stroke:0.2px currentColor"><span style="color:#e1e4e8">model </span><span style="display:inline-block;width:14.75px;height:10px;position:relative"><svg style="position:absolute;left:1px;top:1px" width="13" height="9" viewBox="0 0 13 9"><path d="M1.5 4.5h11M4.6 1.6L1.5 4.5 4.6 7.4" stroke="#f97583" stroke-width="1.8" fill="none" stroke-linejoin="round" stroke-linecap="round"/></svg></span><span style="color:#e1e4e8"> </span><span style="color:#79b8ff">lm</span><span style="color:#79b8ff">(</span><span style="color:#e1e4e8">y </span><span style="color:#f97583">~</span><span style="color:#e1e4e8"> x1 </span><span style="color:#f97583">+</span><span style="color:#e1e4e8"> x2, </span><span style="color:#ffab70">data</span><span style="color:#e1e4e8"> </span><span style="color:#f97583">=</span><span style="color:#e1e4e8"> dt</span><span style="color:#79b8ff">)</span></div>
<div class="t" style="left:310.05px;top:248.75px;font-size:12.29px;line-height:18px;color:#454d55;font-weight:400;font-family:'Liberation Mono',monospace;">11</div>
<div class="t" style="left:310.05px;top:266.75px;font-size:12.29px;line-height:18px;color:#454d55;font-weight:400;font-family:'Liberation Mono',monospace;">12</div>
<div class="t" style="left:348px;top:266.75px;font-size:12.29px;line-height:18px;color:#e1e4e8;font-weight:400;font-family:'Liberation Mono',monospace;-webkit-text-stroke:0.2px currentColor"><span style="color:#79b8ff">summary</span><span style="color:#79b8ff">(</span><span style="color:#e1e4e8">model</span><span style="color:#79b8ff">)</span></div>
<div class="t" style="left:310.05px;top:284.75px;font-size:12.29px;line-height:18px;color:#454d55;font-weight:400;font-family:'Liberation Mono',monospace;">13</div>
<div class="t" style="left:348px;top:284.75px;font-size:12.29px;line-height:18px;color:#e1e4e8;font-weight:400;font-family:'Liberation Mono',monospace;-webkit-text-stroke:0.2px currentColor"><span style="color:#79b8ff">plot</span><span style="color:#79b8ff">(</span><span style="color:#e1e4e8">model</span><span style="color:#79b8ff">)</span></div>
<div class="t" style="left:310.05px;top:302.75px;font-size:12.29px;line-height:18px;color:#e1e4e8;font-weight:400;font-family:'Liberation Mono',monospace;">14</div>
<svg class="a" style="left:991px;top:28.5px;" width="13" height="12" viewBox="0 0 13 12" fill="none"><path d="M6.5 1L12.2 11H0.8z" stroke="#b9bec3" stroke-width="1.05" fill="none" stroke-linejoin="round"/><path d="M6.5 4.5v3.3M6.5 9v.6" stroke="#b9bec3" stroke-width="1.05" fill="none" stroke-linejoin="round"/></svg>
<svg class="a" style="left:1010.5px;top:27.5px;" width="15" height="14" viewBox="0 0 15 14" fill="none"><rect x="5" y="1" width="9" height="8" rx="1" stroke="#b9bec3" stroke-width="1.05" fill="none" stroke-linejoin="round"/><path d="M8.2 3.5l1.8 1.5-1.8 1.5" stroke="#b9bec3" stroke-width="1.05" fill="none" stroke-linejoin="round"/><circle cx="4" cy="10.5" r="2.2" stroke="#b9bec3" stroke-width="1.05" fill="none" stroke-linejoin="round"/><path d="M1 9l1 .6M7 9l-1 .6M1 12.5l1-.5M7 12.5l-1-.5" stroke="#b9bec3" stroke-width="1.05" fill="none" stroke-linejoin="round"/></svg>
<svg class="a" style="left:1031px;top:27.5px;" width="15" height="14" viewBox="0 0 15 14" fill="none"><rect x="1.2" y="1.2" width="12.6" height="11.6" rx="1.3" stroke="#d1d5da" stroke-width="1.15" fill="none"/><path d="M5.5 4.3l2.7 2.7-2.7 2.7" stroke="#d1d5da" stroke-width="1.15" fill="none"/></svg>
<div class="a" style="left:1030px;top:42.8px;width:17.2px;height:1.6px;background:#bf6553;"></div>
<svg class="a" style="left:1053.5px;top:27.5px;" width="12" height="14" viewBox="0 0 12 14" fill="none"><rect x="1" y="1.2" width="10" height="12" rx="1" stroke="#b9bec3" stroke-width="1.05" fill="none" stroke-linejoin="round"/><path d="M3.2 4.6h5.6M3.2 7.6h5.6M3.2 11h5.6" stroke="#b9bec3" stroke-width="1.05" fill="none" stroke-linejoin="round"/></svg>
<svg class="a" style="left:1377px;top:28px;" width="13.5" height="13.5" viewBox="0 0 13.5 13.5" fill="none"><rect x="0.8" y="0.8" width="11.9" height="11.9" rx="1" stroke="#b9bec3" stroke-width="1.05" fill="none" stroke-linejoin="round"/><path d="M5 4l2.7 2.7L5 9.4" stroke="#b9bec3" stroke-width="1.05" fill="none" stroke-linejoin="round"/></svg>
<div class="t" style="left:1394.3px;top:28.60px;font-size:10.0px;line-height:12.0px;color:#d1d5da;font-weight:400;font-family:'Liberation Sans',sans-serif;">Python</div>
<svg class="a" style="left:1434.5px;top:28.5px;" width="12" height="12" viewBox="0 0 12 12" fill="none"><path d="M6 0.5v11M0.5 6h11" stroke="#b9bec3" stroke-width="1.15"/></svg>
<svg class="a" style="left:1450.5px;top:32px;" width="8" height="5" viewBox="0 0 8 5" fill="none"><path d="M0.8 0.8L4 3.8 7.2 0.8" stroke="#9aa0a6" stroke-width="1" fill="none"/></svg>
<svg class="a" style="left:1467.5px;top:28px;" width="13" height="12.5" viewBox="0 0 13 12.5" fill="none"><rect x="0.8" y="0.8" width="11.4" height="10.9" rx="1" stroke="#b9bec3" stroke-width="1.05" fill="none" stroke-linejoin="round"/><path d="M1 6.25h11" stroke="#b9bec3" stroke-width="1.05" fill="none" stroke-linejoin="round"/></svg>
<svg class="a" style="left:1490.5px;top:28px;" width="11" height="13" viewBox="0 0 11 13" fill="none"><path d="M1 2.5h9M4 2.5V1h3v1.5M2 2.5l.7 9.7h5.6L9 2.5M4.2 4.5v6M5.5 4.5v6M6.8 4.5v6" stroke="#b9bec3" stroke-width="1.05" fill="none" stroke-linejoin="round"/></svg>
<svg class="a" style="left:1514.5px;top:29.5px;" width="9" height="9" viewBox="0 0 9 9" fill="none"><path d="M0.8 0.8l7.4 7.4M8.2 0.8L0.8 8.2" stroke="#b9bec3" stroke-width="1.1"/></svg>
<div class="t" style="left:989px;top:51.04px;font-size:9.97px;line-height:12.83px;color:#d1d5da;font-weight:400;font-family:'Liberation Mono',monospace;transform:scaleY(1.17);-webkit-text-stroke:0.25px currentColor"><span style="color:#2188e6">&gt; </span><span style="color:#3db325">q</span>()</div>
<div class="t" style="left:989px;top:63.87px;font-size:9.97px;line-height:12.83px;color:#d1d5da;font-weight:400;font-family:'Liberation Mono',monospace;transform:scaleY(1.17);-webkit-text-stroke:0.25px currentColor">   <span style="color:#2fd3db;font-weight:700">rdemo</span> r</div>
<svg class="a" style="left:989.5px;top:65.2px;" width="7" height="7" viewBox="0 0 7 7" fill="none"><path d="M0.5 3.5h4.2M3 1.2l2.6 2.3L3 5.8" stroke="#4fd07a" stroke-width="1.5" fill="none"/></svg>
<div class="t" style="left:989px;top:76.69px;font-size:9.97px;line-height:12.83px;color:#d1d5da;font-weight:400;font-family:'Liberation Mono',monospace;transform:scaleY(1.17);-webkit-text-stroke:0.25px currentColor">R version 4.1.3 (2022-03-10) -- "One Push-Up"</div>
<div class="t" style="left:989px;top:89.52px;font-size:9.97px;line-height:12.83px;color:#d1d5da;font-weight:400;font-family:'Liberation Mono',monospace;transform:scaleY(1.17);-webkit-text-stroke:0.25px currentColor">Platform: x86_64-apple-darwin17.0 (64-bit)</div>
<div class="t" style="left:989px;top:115.19px;font-size:9.97px;line-height:12.83px;color:#d1d5da;font-weight:400;font-family:'Liberation Mono',monospace;transform:scaleY(1.17);-webkit-text-stroke:0.25px currentColor"><span style="color:#2188e6">&gt; </span><span style="color:#3db325">library</span>(data.table)</div>
<div class="t" style="left:989px;top:140.84px;font-size:9.97px;line-height:12.83px;color:#d1d5da;font-weight:400;font-family:'Liberation Mono',monospace;transform:scaleY(1.17);-webkit-text-stroke:0.25px currentColor"><span style="color:#2188e6">&gt; </span><span style="color:#3db325">set.seed</span>(<span style="color:#4a86c0">123</span>)</div>
<div class="t" style="left:989px;top:166.51px;font-size:9.97px;line-height:12.83px;color:#d1d5da;font-weight:400;font-family:'Liberation Mono',monospace;transform:scaleY(1.17);-webkit-text-stroke:0.25px currentColor"><span style="color:#2188e6">&gt; </span>n <span style="color:#5b636b">&lt;-</span> <span style="color:#4a86c0">1000</span></div>
<div class="t" style="left:989px;top:192.16px;font-size:9.97px;line-height:12.83px;color:#d1d5da;font-weight:400;font-family:'Liberation Mono',monospace;transform:scaleY(1.17);-webkit-text-stroke:0.25px currentColor"><span style="color:#2188e6">&gt; </span>dt <span style="color:#5b636b">&lt;-</span> <span style="color:#3db325">data.table</span>(id <span style="color:#5b636b">=</span> <span style="color:#4a86c0">1</span><span style="color:#5b636b">:</span>n)</div>
<div class="t" style="left:989px;top:217.83px;font-size:9.97px;line-height:12.83px;color:#d1d5da;font-weight:400;font-family:'Liberation Mono',monospace;transform:scaleY(1.17);-webkit-text-stroke:0.25px currentColor"><span style="color:#2188e6">&gt; </span>dt[, x1 <span style="color:#5b636b">:=</span> <span style="color:#3db325">rnorm</span>(.N, mean <span style="color:#5b636b">=</span> <span style="color:#4a86c0">0</span>, sd <span style="color:#5b636b">=</span> <span style="color:#4a86c0">2</span>)]</div>
<div class="t" style="left:989px;top:243.48px;font-size:9.97px;line-height:12.83px;color:#d1d5da;font-weight:400;font-family:'Liberation Mono',monospace;transform:scaleY(1.17);-webkit-text-stroke:0.25px currentColor"><span style="color:#2188e6">&gt; </span>dt[, x2 <span style="color:#5b636b">:=</span> <span style="color:#3db325">runif</span>(.N, min <span style="color:#5b636b">=</span> <span style="color:#4a86c0">-1</span>, max <span style="color:#5b636b">=</span> <span style="color:#4a86c0">1</span>)]</div>
<div class="t" style="left:989px;top:269.14px;font-size:9.97px;line-height:12.83px;color:#d1d5da;font-weight:400;font-family:'Liberation Mono',monospace;transform:scaleY(1.17);-webkit-text-stroke:0.25px currentColor"><span style="color:#2188e6">&gt; </span>dt[, y <span style="color:#5b636b">:=</span> <span style="color:#4a86c0">2</span> <span style="color:#5b636b">*</span> x1 <span style="color:#5b636b">+</span> x2 <span style="color:#5b636b">+</span> <span style="color:#4a86c0">0.5</span> <span style="color:#5b636b">*</span> <span style="color:#3db325">rnorm</span>(.N)]</div>
<div class="t" style="left:989px;top:294.81px;font-size:9.97px;line-height:12.83px;color:#d1d5da;font-weight:400;font-family:'Liberation Mono',monospace;transform:scaleY(1.17);-webkit-text-stroke:0.25px currentColor"><span style="color:#2188e6">&gt; </span>model <span style="color:#5b636b">&lt;-</span> <span style="color:#3db325">lm</span>(y <span style="color:#5b636b">~</span> x1 <span style="color:#5b636b">+</span> x2, data <span style="color:#5b636b">=</span> dt)</div>
<div class="t" style="left:989px;top:320.46px;font-size:9.97px;line-height:12.83px;color:#d1d5da;font-weight:400;font-family:'Liberation Mono',monospace;transform:scaleY(1.17);-webkit-text-stroke:0.25px currentColor"><span style="color:#2188e6">&gt; </span><span style="color:#3db325">summary</span>(model)</div>
<div class="t" style="left:989px;top:346.12px;font-size:9.97px;line-height:12.83px;color:#d1d5da;font-weight:400;font-family:'Liberation Mono',monospace;transform:scaleY(1.17);-webkit-text-stroke:0.25px currentColor">Call:</div>
<div class="t" style="left:989px;top:358.95px;font-size:9.97px;line-height:12.83px;color:#d1d5da;font-weight:400;font-family:'Liberation Mono',monospace;transform:scaleY(1.17);-webkit-text-stroke:0.25px currentColor">lm(formula = y ~ x1 + x2, data = dt)</div>
<div class="t" style="left:989px;top:384.61px;font-size:9.97px;line-height:12.83px;color:#d1d5da;font-weight:400;font-family:'Liberation Mono',monospace;transform:scaleY(1.17);-webkit-text-stroke:0.25px currentColor">Residuals:</div>
<div class="t" style="left:989px;top:397.44px;font-size:9.97px;line-height:12.83px;color:#d1d5da;font-weight:400;font-family:'Liberation Mono',monospace;transform:scaleY(1.17);-webkit-text-stroke:0.25px currentColor">     Min       1Q   Median       3Q      Max </div>
<div class="t" style="left:989px;top:410.27px;font-size:9.97px;line-height:12.83px;color:#d1d5da;font-weight:400;font-family:'Liberation Mono',monospace;transform:scaleY(1.17);-webkit-text-stroke:0.25px currentColor">-1.54376 -0.31646 -0.01093  0.34316  1.61131 </div>
<div class="t" style="left:989px;top:435.93px;font-size:9.97px;line-height:12.83px;color:#d1d5da;font-weight:400;font-family:'Liberation Mono',monospace;transform:scaleY(1.17);-webkit-text-stroke:0.25px currentColor">Coefficients:</div>
<div class="t" style="left:989px;top:448.76px;font-size:9.97px;line-height:12.83px;color:#d1d5da;font-weight:400;font-family:'Liberation Mono',monospace;transform:scaleY(1.17);-webkit-text-stroke:0.25px currentColor">              Estimate Std. Error t value Pr(&gt;|t|)    </div>
<div class="t" style="left:989px;top:461.59px;font-size:9.97px;line-height:12.83px;color:#d1d5da;font-weight:400;font-family:'Liberation Mono',monospace;transform:scaleY(1.17);-webkit-text-stroke:0.25px currentColor">(Intercept) -0.0007977  0.0155577  -0.051    0.959    </div>
<div class="t" style="left:989px;top:474.42px;font-size:9.97px;line-height:12.83px;color:#d1d5da;font-weight:400;font-family:'Liberation Mono',monospace;transform:scaleY(1.17);-webkit-text-stroke:0.25px currentColor">x1           1.9855040  0.0078490 252.963   &lt;2e-16 ***</div>
<div class="t" style="left:989px;top:487.25px;font-size:9.97px;line-height:12.83px;color:#d1d5da;font-weight:400;font-family:'Liberation Mono',monospace;transform:scaleY(1.17);-webkit-text-stroke:0.25px currentColor">x2           1.0224384  0.0266384  38.382   &lt;2e-16 ***</div>
<div class="t" style="left:989px;top:500.08px;font-size:9.97px;line-height:12.83px;color:#d1d5da;font-weight:400;font-family:'Liberation Mono',monospace;transform:scaleY(1.17);-webkit-text-stroke:0.25px currentColor">---</div>
<div class="t" style="left:989px;top:512.92px;font-size:9.97px;line-height:12.83px;color:#d1d5da;font-weight:400;font-family:'Liberation Mono',monospace;transform:scaleY(1.17);-webkit-text-stroke:0.25px currentColor">Signif. codes:  0 '***' 0.001 '**' 0.01 '*' 0.05 '.' 0.1 ' ' 1</div>
<div class="t" style="left:989px;top:538.58px;font-size:9.97px;line-height:12.83px;color:#d1d5da;font-weight:400;font-family:'Liberation Mono',monospace;transform:scaleY(1.17);-webkit-text-stroke:0.25px currentColor">Residual standard error: 0.4919 on 997 degrees of freedom</div>
<div class="t" style="left:989px;top:551.41px;font-size:9.97px;line-height:12.83px;color:#d1d5da;font-weight:400;font-family:'Liberation Mono',monospace;transform:scaleY(1.17);-webkit-text-stroke:0.25px currentColor">Multiple R-squared:  0.9851,    Adjusted R-squared:  0.9851 </div>
<div class="t" style="left:989px;top:564.24px;font-size:9.97px;line-height:12.83px;color:#d1d5da;font-weight:400;font-family:'Liberation Mono',monospace;transform:scaleY(1.17);-webkit-text-stroke:0.25px currentColor">F-statistic: 3.298e+04 on 2 and 997 DF,  p-value: &lt; 2.2e-16</div>
<div class="t" style="left:989px;top:602.73px;font-size:9.97px;line-height:12.83px;color:#d1d5da;font-weight:400;font-family:'Liberation Mono',monospace;transform:scaleY(1.17);-webkit-text-stroke:0.25px currentColor"><span style="color:#2188e6">&gt; </span><span style="color:#3db325">plot</span>(model)</div>
<div class="t" style="left:989px;top:628.39px;font-size:9.97px;line-height:12.83px;color:#d1d5da;font-weight:400;font-family:'Liberation Mono',monospace;transform:scaleY(1.17);-webkit-text-stroke:0.25px currentColor"><span style="color:#2188e6">&gt; </span></div>
<div class="a" style="left:1000.964px;top:628.5000000000001px;width:5.9px;height:11.6px;background:transparent;border:1px solid #2188e6"></div>
<div class="a" style="left:285.5px;top:374.6px;width:101.8px;height:29.9px;background:#24292e;"></div>
<svg class="a" style="left:293.5px;top:383.5px;" width="14" height="13" viewBox="0 0 14 13" fill="none"><path d="M1 1v11h12" stroke="#9aa0a6" stroke-width="1.1" fill="none"/><path d="M3.5 11V4M6 11V2.5M8.5 11V6M11 11V3" stroke="#9aa0a6" stroke-width="1.4"/></svg>
<div class="t" style="left:312.8px;top:383.60px;font-size:11.0px;line-height:13.2px;color:#9da3a9;font-weight:400;font-family:'Liberation Sans',sans-serif;">R Plot</div>
<svg class="a" style="left:370.5px;top:386px;" width="9" height="9" viewBox="0 0 9 9" fill="none"><path d="M1 1l7 7M8 1L1 8" stroke="#9aa0a6" stroke-width="1.05"/></svg>
<svg class="a" style="left:952px;top:386.6px;" width="16" height="7" viewBox="0 0 16 7" fill="none"><circle cx="3.6" cy="3.6" r="1.05" fill="#b9bec3"/><circle cx="7.7" cy="3.6" r="1.05" fill="#b9bec3"/><circle cx="12.1" cy="3.6" r="1.05" fill="#b9bec3"/></svg>
<div class="a" style="left:286px;top:796.6px;width:684px;height:3.4px;background:#56606a;"></div>
<div class="a" style="left:971px;top:404.8px;width:8.5px;height:259.4px;background:#30363c;"></div>
<svg class="a" style="left:0;top:0" width="1536" height="934" viewBox="0 0 1536 934" fill="none"><rect x="300.7" y="413.1" width="654.4" height="374.9" fill="#fff"/><path d="M349.2 596.94H930.2M370.72 461.2V728.1" stroke="#bebebe" stroke-width="0.8" stroke-dasharray="0.8 1.6"/><path d="M492.13 624.67a2.2 2.2 0 1 0 -4.4 0a2.2 2.2 0 1 0 4.4 0M486.03 606.63a2.2 2.2 0 1 0 -4.4 0a2.2 2.2 0 1 0 4.4 0M594.99 623.26a2.2 2.2 0 1 0 -4.4 0a2.2 2.2 0 1 0 4.4 0M418.10 575.63a2.2 2.2 0 1 0 -4.4 0a2.2 2.2 0 1 0 4.4 0M418.44 558.80a2.2 2.2 0 1 0 -4.4 0a2.2 2.2 0 1 0 4.4 0M555.70 521.99a2.2 2.2 0 1 0 -4.4 0a2.2 2.2 0 1 0 4.4 0M428.43 583.47a2.2 2.2 0 1 0 -4.4 0a2.2 2.2 0 1 0 4.4 0M592.10 627.59a2.2 2.2 0 1 0 -4.4 0a2.2 2.2 0 1 0 4.4 0M566.05 562.10a2.2 2.2 0 1 0 -4.4 0a2.2 2.2 0 1 0 4.4 0M467.01 566.37a2.2 2.2 0 1 0 -4.4 0a2.2 2.2 0 1 0 4.4 0M546.86 603.60a2.2 2.2 0 1 0 -4.4 0a2.2 2.2 0 1 0 4.4 0M452.00 648.06a2.2 2.2 0 1 0 -4.4 0a2.2 2.2 0 1 0 4.4 0M429.59 570.71a2.2 2.2 0 1 0 -4.4 0a2.2 2.2 0 1 0 4.4 0M424.54 558.89a2.2 2.2 0 1 0 -4.4 0a2.2 2.2 0 1 0 4.4 0M563.23 609.44a2.2 2.2 0 1 0 -4.4 0a2.2 2.2 0 1 0 4.4 0M615.08 574.31a2.2 2.2 0 1 0 -4.4 0a2.2 2.2 0 1 0 4.4 0M461.75 605.99a2.2 2.2 0 1 0 -4.4 0a2.2 2.2 0 1 0 4.4 0M628.50 576.88a2.2 2.2 0 1 0 -4.4 0a2.2 2.2 0 1 0 4.4 0M455.61 598.95a2.2 2.2 0 1 0 -4.4 0a2.2 2.2 0 1 0 4.4 0M556.12 607.95a2.2 2.2 0 1 0 -4.4 0a2.2 2.2 0 1 0 4.4 0M606.67 596.71a2.2 2.2 0 1 0 -4.4 0a2.2 2.2 0 1 0 4.4 0M422.17 606.68a2.2 2.2 0 1 0 -4.4 0a2.2 2.2 0 1 0 4.4 0M602.59 620.39a2.2 2.2 0 1 0 -4.4 0a2.2 2.2 0 1 0 4.4 0M489.58 608.06a2.2 2.2 0 1 0 -4.4 0a2.2 2.2 0 1 0 4.4 0M513.77 597.20a2.2 2.2 0 1 0 -4.4 0a2.2 2.2 0 1 0 4.4 0M579.73 592.42a2.2 2.2 0 1 0 -4.4 0a2.2 2.2 0 1 0 4.4 0M465.04 544.06a2.2 2.2 0 1 0 -4.4 0a2.2 2.2 0 1 0 4.4 0M421.88 642.64a2.2 2.2 0 1 0 -4.4 0a2.2 2.2 0 1 0 4.4 0M481.64 605.60a2.2 2.2 0 1 0 -4.4 0a2.2 2.2 0 1 0 4.4 0M513.81 573.79a2.2 2.2 0 1 0 -4.4 0a2.2 2.2 0 1 0 4.4 0M428.32 536.81a2.2 2.2 0 1 0 -4.4 0a2.2 2.2 0 1 0 4.4 0M425.74 583.32a2.2 2.2 0 1 0 -4.4 0a2.2 2.2 0 1 0 4.4 0M456.99 595.87a2.2 2.2 0 1 0 -4.4 0a2.2 2.2 0 1 0 4.4 0M493.62 604.71a2.2 2.2 0 1 0 -4.4 0a2.2 2.2 0 1 0 4.4 0M532.11 580.07a2.2 2.2 0 1 0 -4.4 0a2.2 2.2 0 1 0 4.4 0M467.16 562.86a2.2 2.2 0 1 0 -4.4 0a2.2 2.2 0 1 0 4.4 0M437.44 602.34a2.2 2.2 0 1 0 -4.4 0a2.2 2.2 0 1 0 4.4 0M526.31 592.84a2.2 2.2 0 1 0 -4.4 0a2.2 2.2 0 1 0 4.4 0M535.78 591.55a2.2 2.2 0 1 0 -4.4 0a2.2 2.2 0 1 0 4.4 0M457.70 573.75a2.2 2.2 0 1 0 -4.4 0a2.2 2.2 0 1 0 4.4 0M442.76 560.53a2.2 2.2 0 1 0 -4.4 0a2.2 2.2 0 1 0 4.4 0M474.85 586.88a2.2 2.2 0 1 0 -4.4 0a2.2 2.2 0 1 0 4.4 0M494.47 601.74a2.2 2.2 0 1 0 -4.4 0a2.2 2.2 0 1 0 4.4 0M662.33 546.24a2.2 2.2 0 1 0 -4.4 0a2.2 2.2 0 1 0 4.4 0M572.24 590.22a2.2 2.2 0 1 0 -4.4 0a2.2 2.2 0 1 0 4.4 0M568.38 546.99a2.2 2.2 0 1 0 -4.4 0a2.2 2.2 0 1 0 4.4 0M479.76 600.72a2.2 2.2 0 1 0 -4.4 0a2.2 2.2 0 1 0 4.4 0M474.49 576.16a2.2 2.2 0 1 0 -4.4 0a2.2 2.2 0 1 0 4.4 0M553.27 646.23a2.2 2.2 0 1 0 -4.4 0a2.2 2.2 0 1 0 4.4 0M418.48 600.77a2.2 2.2 0 1 0 -4.4 0a2.2 2.2 0 1 0 4.4 0M424.69 597.40a2.2 2.2 0 1 0 -4.4 0a2.2 2.2 0 1 0 4.4 0M502.93 621.33a2.2 2.2 0 1 0 -4.4 0a2.2 2.2 0 1 0 4.4 0M525.97 633.33a2.2 2.2 0 1 0 -4.4 0a2.2 2.2 0 1 0 4.4 0M564.30 561.13a2.2 2.2 0 1 0 -4.4 0a2.2 2.2 0 1 0 4.4 0M515.50 567.72a2.2 2.2 0 1 0 -4.4 0a2.2 2.2 0 1 0 4.4 0M597.37 636.69a2.2 2.2 0 1 0 -4.4 0a2.2 2.2 0 1 0 4.4 0M545.94 586.07a2.2 2.2 0 1 0 -4.4 0a2.2 2.2 0 1 0 4.4 0M474.35 634.16a2.2 2.2 0 1 0 -4.4 0a2.2 2.2 0 1 0 4.4 0M455.44 632.92a2.2 2.2 0 1 0 -4.4 0a2.2 2.2 0 1 0 4.4 0M435.35 579.25a2.2 2.2 0 1 0 -4.4 0a2.2 2.2 0 1 0 4.4 0M502.17 618.14a2.2 2.2 0 1 0 -4.4 0a2.2 2.2 0 1 0 4.4 0M497.02 565.38a2.2 2.2 0 1 0 -4.4 0a2.2 2.2 0 1 0 4.4 0M431.23 596.59a2.2 2.2 0 1 0 -4.4 0a2.2 2.2 0 1 0 4.4 0M529.51 581.78a2.2 2.2 0 1 0 -4.4 0a2.2 2.2 0 1 0 4.4 0M526.25 615.67a2.2 2.2 0 1 0 -4.4 0a2.2 2.2 0 1 0 4.4 0M548.29 633.70a2.2 2.2 0 1 0 -4.4 0a2.2 2.2 0 1 0 4.4 0M443.09 564.60a2.2 2.2 0 1 0 -4.4 0a2.2 2.2 0 1 0 4.4 0M445.57 588.05a2.2 2.2 0 1 0 -4.4 0a2.2 2.2 0 1 0 4.4 0M509.43 604.14a2.2 2.2 0 1 0 -4.4 0a2.2 2.2 0 1 0 4.4 0M700.27 591.83a2.2 2.2 0 1 0 -4.4 0a2.2 2.2 0 1 0 4.4 0M500.66 551.94a2.2 2.2 0 1 0 -4.4 0a2.2 2.2 0 1 0 4.4 0M762.91 626.32a2.2 2.2 0 1 0 -4.4 0a2.2 2.2 0 1 0 4.4 0M467.84 620.53a2.2 2.2 0 1 0 -4.4 0a2.2 2.2 0 1 0 4.4 0M446.47 618.88a2.2 2.2 0 1 0 -4.4 0a2.2 2.2 0 1 0 4.4 0M456.11 652.23a2.2 2.2 0 1 0 -4.4 0a2.2 2.2 0 1 0 4.4 0M500.57 568.00a2.2 2.2 0 1 0 -4.4 0a2.2 2.2 0 1 0 4.4 0M422.31 591.01a2.2 2.2 0 1 0 -4.4 0a2.2 2.2 0 1 0 4.4 0M492.57 591.96a2.2 2.2 0 1 0 -4.4 0a2.2 2.2 0 1 0 4.4 0M533.51 599.40a2.2 2.2 0 1 0 -4.4 0a2.2 2.2 0 1 0 4.4 0M524.93 613.02a2.2 2.2 0 1 0 -4.4 0a2.2 2.2 0 1 0 4.4 0M480.63 623.62a2.2 2.2 0 1 0 -4.4 0a2.2 2.2 0 1 0 4.4 0M444.23 567.97a2.2 2.2 0 1 0 -4.4 0a2.2 2.2 0 1 0 4.4 0M453.01 646.44a2.2 2.2 0 1 0 -4.4 0a2.2 2.2 0 1 0 4.4 0M517.93 579.56a2.2 2.2 0 1 0 -4.4 0a2.2 2.2 0 1 0 4.4 0M420.95 623.95a2.2 2.2 0 1 0 -4.4 0a2.2 2.2 0 1 0 4.4 0M432.91 587.14a2.2 2.2 0 1 0 -4.4 0a2.2 2.2 0 1 0 4.4 0M477.50 619.43a2.2 2.2 0 1 0 -4.4 0a2.2 2.2 0 1 0 4.4 0M551.80 615.20a2.2 2.2 0 1 0 -4.4 0a2.2 2.2 0 1 0 4.4 0M440.73 538.34a2.2 2.2 0 1 0 -4.4 0a2.2 2.2 0 1 0 4.4 0M495.75 571.50a2.2 2.2 0 1 0 -4.4 0a2.2 2.2 0 1 0 4.4 0M526.67 666.35a2.2 2.2 0 1 0 -4.4 0a2.2 2.2 0 1 0 4.4 0M452.09 590.94a2.2 2.2 0 1 0 -4.4 0a2.2 2.2 0 1 0 4.4 0M506.80 610.45a2.2 2.2 0 1 0 -4.4 0a2.2 2.2 0 1 0 4.4 0M551.81 635.09a2.2 2.2 0 1 0 -4.4 0a2.2 2.2 0 1 0 4.4 0M521.04 586.56a2.2 2.2 0 1 0 -4.4 0a2.2 2.2 0 1 0 4.4 0M467.65 594.40a2.2 2.2 0 1 0 -4.4 0a2.2 2.2 0 1 0 4.4 0M738.29 605.11a2.2 2.2 0 1 0 -4.4 0a2.2 2.2 0 1 0 4.4 0M527.57 526.98a2.2 2.2 0 1 0 -4.4 0a2.2 2.2 0 1 0 4.4 0M421.07 673.29a2.2 2.2 0 1 0 -4.4 0a2.2 2.2 0 1 0 4.4 0M562.15 569.25a2.2 2.2 0 1 0 -4.4 0a2.2 2.2 0 1 0 4.4 0M451.76 608.42a2.2 2.2 0 1 0 -4.4 0a2.2 2.2 0 1 0 4.4 0M431.85 573.78a2.2 2.2 0 1 0 -4.4 0a2.2 2.2 0 1 0 4.4 0M423.73 612.46a2.2 2.2 0 1 0 -4.4 0a2.2 2.2 0 1 0 4.4 0M539.14 619.03a2.2 2.2 0 1 0 -4.4 0a2.2 2.2 0 1 0 4.4 0M479.51 657.05a2.2 2.2 0 1 0 -4.4 0a2.2 2.2 0 1 0 4.4 0M443.57 604.70a2.2 2.2 0 1 0 -4.4 0a2.2 2.2 0 1 0 4.4 0M501.92 513.70a2.2 2.2 0 1 0 -4.4 0a2.2 2.2 0 1 0 4.4 0M589.75 565.79a2.2 2.2 0 1 0 -4.4 0a2.2 2.2 0 1 0 4.4 0M501.39 542.18a2.2 2.2 0 1 0 -4.4 0a2.2 2.2 0 1 0 4.4 0M513.39 565.20a2.2 2.2 0 1 0 -4.4 0a2.2 2.2 0 1 0 4.4 0M460.78 560.05a2.2 2.2 0 1 0 -4.4 0a2.2 2.2 0 1 0 4.4 0M459.74 564.55a2.2 2.2 0 1 0 -4.4 0a2.2 2.2 0 1 0 4.4 0M580.38 583.10a2.2 2.2 0 1 0 -4.4 0a2.2 2.2 0 1 0 4.4 0M418.08 616.63a2.2 2.2 0 1 0 -4.4 0a2.2 2.2 0 1 0 4.4 0M429.62 613.92a2.2 2.2 0 1 0 -4.4 0a2.2 2.2 0 1 0 4.4 0M463.08 649.49a2.2 2.2 0 1 0 -4.4 0a2.2 2.2 0 1 0 4.4 0M454.89 597.67a2.2 2.2 0 1 0 -4.4 0a2.2 2.2 0 1 0 4.4 0M553.69 566.30a2.2 2.2 0 1 0 -4.4 0a2.2 2.2 0 1 0 4.4 0M477.37 564.34a2.2 2.2 0 1 0 -4.4 0a2.2 2.2 0 1 0 4.4 0M531.69 596.71a2.2 2.2 0 1 0 -4.4 0a2.2 2.2 0 1 0 4.4 0M516.41 616.46a2.2 2.2 0 1 0 -4.4 0a2.2 2.2 0 1 0 4.4 0M475.55 488.13a2.2 2.2 0 1 0 -4.4 0a2.2 2.2 0 1 0 4.4 0M456.27 572.28a2.2 2.2 0 1 0 -4.4 0a2.2 2.2 0 1 0 4.4 0M462.08 548.57a2.2 2.2 0 1 0 -4.4 0a2.2 2.2 0 1 0 4.4 0M637.49 605.80a2.2 2.2 0 1 0 -4.4 0a2.2 2.2 0 1 0 4.4 0M554.31 598.00a2.2 2.2 0 1 0 -4.4 0a2.2 2.2 0 1 0 4.4 0M484.53 582.33a2.2 2.2 0 1 0 -4.4 0a2.2 2.2 0 1 0 4.4 0M418.34 540.23a2.2 2.2 0 1 0 -4.4 0a2.2 2.2 0 1 0 4.4 0M463.23 609.08a2.2 2.2 0 1 0 -4.4 0a2.2 2.2 0 1 0 4.4 0M517.11 569.50a2.2 2.2 0 1 0 -4.4 0a2.2 2.2 0 1 0 4.4 0M573.49 663.84a2.2 2.2 0 1 0 -4.4 0a2.2 2.2 0 1 0 4.4 0M434.45 612.75a2.2 2.2 0 1 0 -4.4 0a2.2 2.2 0 1 0 4.4 0M486.43 639.33a2.2 2.2 0 1 0 -4.4 0a2.2 2.2 0 1 0 4.4 0M489.64 559.05a2.2 2.2 0 1 0 -4.4 0a2.2 2.2 0 1 0 4.4 0M633.10 607.01a2.2 2.2 0 1 0 -4.4 0a2.2 2.2 0 1 0 4.4 0M476.33 608.04a2.2 2.2 0 1 0 -4.4 0a2.2 2.2 0 1 0 4.4 0M517.68 553.41a2.2 2.2 0 1 0 -4.4 0a2.2 2.2 0 1 0 4.4 0M491.58 558.68a2.2 2.2 0 1 0 -4.4 0a2.2 2.2 0 1 0 4.4 0M688.60 624.93a2.2 2.2 0 1 0 -4.4 0a2.2 2.2 0 1 0 4.4 0M515.67 585.30a2.2 2.2 0 1 0 -4.4 0a2.2 2.2 0 1 0 4.4 0M460.47 637.60a2.2 2.2 0 1 0 -4.4 0a2.2 2.2 0 1 0 4.4 0M473.91 612.49a2.2 2.2 0 1 0 -4.4 0a2.2 2.2 0 1 0 4.4 0M542.41 544.90a2.2 2.2 0 1 0 -4.4 0a2.2 2.2 0 1 0 4.4 0M626.04 549.44a2.2 2.2 0 1 0 -4.4 0a2.2 2.2 0 1 0 4.4 0M596.50 561.47a2.2 2.2 0 1 0 -4.4 0a2.2 2.2 0 1 0 4.4 0M513.93 615.99a2.2 2.2 0 1 0 -4.4 0a2.2 2.2 0 1 0 4.4 0M540.51 662.65a2.2 2.2 0 1 0 -4.4 0a2.2 2.2 0 1 0 4.4 0M445.54 634.88a2.2 2.2 0 1 0 -4.4 0a2.2 2.2 0 1 0 4.4 0M624.09 560.96a2.2 2.2 0 1 0 -4.4 0a2.2 2.2 0 1 0 4.4 0M520.42 609.85a2.2 2.2 0 1 0 -4.4 0a2.2 2.2 0 1 0 4.4 0M461.75 667.82a2.2 2.2 0 1 0 -4.4 0a2.2 2.2 0 1 0 4.4 0M555.87 602.88a2.2 2.2 0 1 0 -4.4 0a2.2 2.2 0 1 0 4.4 0M442.57 549.23a2.2 2.2 0 1 0 -4.4 0a2.2 2.2 0 1 0 4.4 0M523.32 576.09a2.2 2.2 0 1 0 -4.4 0a2.2 2.2 0 1 0 4.4 0M427.39 624.43a2.2 2.2 0 1 0 -4.4 0a2.2 2.2 0 1 0 4.4 0M441.75 649.01a2.2 2.2 0 1 0 -4.4 0a2.2 2.2 0 1 0 4.4 0M432.55 623.55a2.2 2.2 0 1 0 -4.4 0a2.2 2.2 0 1 0 4.4 0M481.22 597.43a2.2 2.2 0 1 0 -4.4 0a2.2 2.2 0 1 0 4.4 0M499.25 564.17a2.2 2.2 0 1 0 -4.4 0a2.2 2.2 0 1 0 4.4 0M429.42 662.79a2.2 2.2 0 1 0 -4.4 0a2.2 2.2 0 1 0 4.4 0M581.25 561.66a2.2 2.2 0 1 0 -4.4 0a2.2 2.2 0 1 0 4.4 0M540.58 597.61a2.2 2.2 0 1 0 -4.4 0a2.2 2.2 0 1 0 4.4 0M502.72 580.50a2.2 2.2 0 1 0 -4.4 0a2.2 2.2 0 1 0 4.4 0M910.88 647.22a2.2 2.2 0 1 0 -4.4 0a2.2 2.2 0 1 0 4.4 0M431.22 620.47a2.2 2.2 0 1 0 -4.4 0a2.2 2.2 0 1 0 4.4 0M551.06 612.95a2.2 2.2 0 1 0 -4.4 0a2.2 2.2 0 1 0 4.4 0M545.77 558.98a2.2 2.2 0 1 0 -4.4 0a2.2 2.2 0 1 0 4.4 0M558.35 564.57a2.2 2.2 0 1 0 -4.4 0a2.2 2.2 0 1 0 4.4 0M460.46 581.93a2.2 2.2 0 1 0 -4.4 0a2.2 2.2 0 1 0 4.4 0M425.71 541.83a2.2 2.2 0 1 0 -4.4 0a2.2 2.2 0 1 0 4.4 0M482.63 613.66a2.2 2.2 0 1 0 -4.4 0a2.2 2.2 0 1 0 4.4 0M419.27 562.43a2.2 2.2 0 1 0 -4.4 0a2.2 2.2 0 1 0 4.4 0M469.22 597.21a2.2 2.2 0 1 0 -4.4 0a2.2 2.2 0 1 0 4.4 0M625.80 615.06a2.2 2.2 0 1 0 -4.4 0a2.2 2.2 0 1 0 4.4 0M500.57 568.12a2.2 2.2 0 1 0 -4.4 0a2.2 2.2 0 1 0 4.4 0M576.59 550.98a2.2 2.2 0 1 0 -4.4 0a2.2 2.2 0 1 0 4.4 0M433.69 566.64a2.2 2.2 0 1 0 -4.4 0a2.2 2.2 0 1 0 4.4 0M483.33 614.51a2.2 2.2 0 1 0 -4.4 0a2.2 2.2 0 1 0 4.4 0M538.06 610.51a2.2 2.2 0 1 0 -4.4 0a2.2 2.2 0 1 0 4.4 0M474.48 552.15a2.2 2.2 0 1 0 -4.4 0a2.2 2.2 0 1 0 4.4 0M587.79 588.44a2.2 2.2 0 1 0 -4.4 0a2.2 2.2 0 1 0 4.4 0M501.36 566.88a2.2 2.2 0 1 0 -4.4 0a2.2 2.2 0 1 0 4.4 0M549.08 607.52a2.2 2.2 0 1 0 -4.4 0a2.2 2.2 0 1 0 4.4 0M453.74 555.91a2.2 2.2 0 1 0 -4.4 0a2.2 2.2 0 1 0 4.4 0M446.20 625.30a2.2 2.2 0 1 0 -4.4 0a2.2 2.2 0 1 0 4.4 0M535.77 574.71a2.2 2.2 0 1 0 -4.4 0a2.2 2.2 0 1 0 4.4 0M533.16 623.36a2.2 2.2 0 1 0 -4.4 0a2.2 2.2 0 1 0 4.4 0M450.28 680.59a2.2 2.2 0 1 0 -4.4 0a2.2 2.2 0 1 0 4.4 0M473.01 640.03a2.2 2.2 0 1 0 -4.4 0a2.2 2.2 0 1 0 4.4 0M463.15 594.00a2.2 2.2 0 1 0 -4.4 0a2.2 2.2 0 1 0 4.4 0M435.15 567.19a2.2 2.2 0 1 0 -4.4 0a2.2 2.2 0 1 0 4.4 0M478.51 655.66a2.2 2.2 0 1 0 -4.4 0a2.2 2.2 0 1 0 4.4 0M433.44 639.44a2.2 2.2 0 1 0 -4.4 0a2.2 2.2 0 1 0 4.4 0M556.96 540.31a2.2 2.2 0 1 0 -4.4 0a2.2 2.2 0 1 0 4.4 0M567.25 615.18a2.2 2.2 0 1 0 -4.4 0a2.2 2.2 0 1 0 4.4 0M635.27 576.71a2.2 2.2 0 1 0 -4.4 0a2.2 2.2 0 1 0 4.4 0M451.13 614.06a2.2 2.2 0 1 0 -4.4 0a2.2 2.2 0 1 0 4.4 0M496.71 609.69a2.2 2.2 0 1 0 -4.4 0a2.2 2.2 0 1 0 4.4 0M440.18 594.84a2.2 2.2 0 1 0 -4.4 0a2.2 2.2 0 1 0 4.4 0M552.83 597.71a2.2 2.2 0 1 0 -4.4 0a2.2 2.2 0 1 0 4.4 0M685.06 600.06a2.2 2.2 0 1 0 -4.4 0a2.2 2.2 0 1 0 4.4 0M517.68 610.84a2.2 2.2 0 1 0 -4.4 0a2.2 2.2 0 1 0 4.4 0M466.28 701.17a2.2 2.2 0 1 0 -4.4 0a2.2 2.2 0 1 0 4.4 0M553.95 531.21a2.2 2.2 0 1 0 -4.4 0a2.2 2.2 0 1 0 4.4 0M480.63 536.25a2.2 2.2 0 1 0 -4.4 0a2.2 2.2 0 1 0 4.4 0M434.56 635.27a2.2 2.2 0 1 0 -4.4 0a2.2 2.2 0 1 0 4.4 0M537.02 602.84a2.2 2.2 0 1 0 -4.4 0a2.2 2.2 0 1 0 4.4 0M458.79 552.25a2.2 2.2 0 1 0 -4.4 0a2.2 2.2 0 1 0 4.4 0M541.53 560.11a2.2 2.2 0 1 0 -4.4 0a2.2 2.2 0 1 0 4.4 0M442.48 553.24a2.2 2.2 0 1 0 -4.4 0a2.2 2.2 0 1 0 4.4 0M424.38 632.49a2.2 2.2 0 1 0 -4.4 0a2.2 2.2 0 1 0 4.4 0M435.89 509.95a2.2 2.2 0 1 0 -4.4 0a2.2 2.2 0 1 0 4.4 0M548.17 631.74a2.2 2.2 0 1 0 -4.4 0a2.2 2.2 0 1 0 4.4 0M509.44 571.24a2.2 2.2 0 1 0 -4.4 0a2.2 2.2 0 1 0 4.4 0M465.27 594.16a2.2 2.2 0 1 0 -4.4 0a2.2 2.2 0 1 0 4.4 0M631.04 606.05a2.2 2.2 0 1 0 -4.4 0a2.2 2.2 0 1 0 4.4 0M512.53 609.33a2.2 2.2 0 1 0 -4.4 0a2.2 2.2 0 1 0 4.4 0M454.12 632.19a2.2 2.2 0 1 0 -4.4 0a2.2 2.2 0 1 0 4.4 0M492.44 544.70a2.2 2.2 0 1 0 -4.4 0a2.2 2.2 0 1 0 4.4 0M513.03 595.79a2.2 2.2 0 1 0 -4.4 0a2.2 2.2 0 1 0 4.4 0M461.26 588.55a2.2 2.2 0 1 0 -4.4 0a2.2 2.2 0 1 0 4.4 0M443.26 589.00a2.2 2.2 0 1 0 -4.4 0a2.2 2.2 0 1 0 4.4 0M528.00 608.39a2.2 2.2 0 1 0 -4.4 0a2.2 2.2 0 1 0 4.4 0M547.38 632.45a2.2 2.2 0 1 0 -4.4 0a2.2 2.2 0 1 0 4.4 0M554.26 590.51a2.2 2.2 0 1 0 -4.4 0a2.2 2.2 0 1 0 4.4 0M537.71 666.05a2.2 2.2 0 1 0 -4.4 0a2.2 2.2 0 1 0 4.4 0M493.44 645.20a2.2 2.2 0 1 0 -4.4 0a2.2 2.2 0 1 0 4.4 0M456.73 634.10a2.2 2.2 0 1 0 -4.4 0a2.2 2.2 0 1 0 4.4 0M516.94 632.66a2.2 2.2 0 1 0 -4.4 0a2.2 2.2 0 1 0 4.4 0M516.16 594.29a2.2 2.2 0 1 0 -4.4 0a2.2 2.2 0 1 0 4.4 0M632.00 539.88a2.2 2.2 0 1 0 -4.4 0a2.2 2.2 0 1 0 4.4 0M487.02 649.32a2.2 2.2 0 1 0 -4.4 0a2.2 2.2 0 1 0 4.4 0M420.05 581.74a2.2 2.2 0 1 0 -4.4 0a2.2 2.2 0 1 0 4.4 0M456.51 568.41a2.2 2.2 0 1 0 -4.4 0a2.2 2.2 0 1 0 4.4 0M448.90 630.88a2.2 2.2 0 1 0 -4.4 0a2.2 2.2 0 1 0 4.4 0M499.37 601.14a2.2 2.2 0 1 0 -4.4 0a2.2 2.2 0 1 0 4.4 0M524.08 570.76a2.2 2.2 0 1 0 -4.4 0a2.2 2.2 0 1 0 4.4 0M459.77 603.92a2.2 2.2 0 1 0 -4.4 0a2.2 2.2 0 1 0 4.4 0M542.72 602.26a2.2 2.2 0 1 0 -4.4 0a2.2 2.2 0 1 0 4.4 0M565.33 589.43a2.2 2.2 0 1 0 -4.4 0a2.2 2.2 0 1 0 4.4 0M476.03 599.73a2.2 2.2 0 1 0 -4.4 0a2.2 2.2 0 1 0 4.4 0M443.46 617.09a2.2 2.2 0 1 0 -4.4 0a2.2 2.2 0 1 0 4.4 0M617.02 597.35a2.2 2.2 0 1 0 -4.4 0a2.2 2.2 0 1 0 4.4 0M599.41 536.88a2.2 2.2 0 1 0 -4.4 0a2.2 2.2 0 1 0 4.4 0M513.10 568.99a2.2 2.2 0 1 0 -4.4 0a2.2 2.2 0 1 0 4.4 0M647.39 625.21a2.2 2.2 0 1 0 -4.4 0a2.2 2.2 0 1 0 4.4 0M421.30 638.86a2.2 2.2 0 1 0 -4.4 0a2.2 2.2 0 1 0 4.4 0M549.34 612.56a2.2 2.2 0 1 0 -4.4 0a2.2 2.2 0 1 0 4.4 0M458.85 552.72a2.2 2.2 0 1 0 -4.4 0a2.2 2.2 0 1 0 4.4 0M451.68 585.42a2.2 2.2 0 1 0 -4.4 0a2.2 2.2 0 1 0 4.4 0M558.38 622.84a2.2 2.2 0 1 0 -4.4 0a2.2 2.2 0 1 0 4.4 0M560.90 569.64a2.2 2.2 0 1 0 -4.4 0a2.2 2.2 0 1 0 4.4 0M423.90 602.00a2.2 2.2 0 1 0 -4.4 0a2.2 2.2 0 1 0 4.4 0M454.57 635.33a2.2 2.2 0 1 0 -4.4 0a2.2 2.2 0 1 0 4.4 0M549.58 577.65a2.2 2.2 0 1 0 -4.4 0a2.2 2.2 0 1 0 4.4 0M454.40 544.81a2.2 2.2 0 1 0 -4.4 0a2.2 2.2 0 1 0 4.4 0M476.24 580.45a2.2 2.2 0 1 0 -4.4 0a2.2 2.2 0 1 0 4.4 0M449.01 588.68a2.2 2.2 0 1 0 -4.4 0a2.2 2.2 0 1 0 4.4 0M520.29 617.93a2.2 2.2 0 1 0 -4.4 0a2.2 2.2 0 1 0 4.4 0M656.21 582.12a2.2 2.2 0 1 0 -4.4 0a2.2 2.2 0 1 0 4.4 0M450.70 634.61a2.2 2.2 0 1 0 -4.4 0a2.2 2.2 0 1 0 4.4 0M500.55 654.77a2.2 2.2 0 1 0 -4.4 0a2.2 2.2 0 1 0 4.4 0M418.61 598.14a2.2 2.2 0 1 0 -4.4 0a2.2 2.2 0 1 0 4.4 0M569.93 594.37a2.2 2.2 0 1 0 -4.4 0a2.2 2.2 0 1 0 4.4 0M669.33 512.90a2.2 2.2 0 1 0 -4.4 0a2.2 2.2 0 1 0 4.4 0M651.25 633.54a2.2 2.2 0 1 0 -4.4 0a2.2 2.2 0 1 0 4.4 0M477.84 590.35a2.2 2.2 0 1 0 -4.4 0a2.2 2.2 0 1 0 4.4 0M649.90 574.30a2.2 2.2 0 1 0 -4.4 0a2.2 2.2 0 1 0 4.4 0M487.18 561.12a2.2 2.2 0 1 0 -4.4 0a2.2 2.2 0 1 0 4.4 0M448.55 596.34a2.2 2.2 0 1 0 -4.4 0a2.2 2.2 0 1 0 4.4 0M484.97 619.55a2.2 2.2 0 1 0 -4.4 0a2.2 2.2 0 1 0 4.4 0M478.48 596.65a2.2 2.2 0 1 0 -4.4 0a2.2 2.2 0 1 0 4.4 0M480.16 529.20a2.2 2.2 0 1 0 -4.4 0a2.2 2.2 0 1 0 4.4 0M619.51 581.87a2.2 2.2 0 1 0 -4.4 0a2.2 2.2 0 1 0 4.4 0M533.31 665.51a2.2 2.2 0 1 0 -4.4 0a2.2 2.2 0 1 0 4.4 0M541.08 551.05a2.2 2.2 0 1 0 -4.4 0a2.2 2.2 0 1 0 4.4 0M522.45 579.62a2.2 2.2 0 1 0 -4.4 0a2.2 2.2 0 1 0 4.4 0M419.09 597.73a2.2 2.2 0 1 0 -4.4 0a2.2 2.2 0 1 0 4.4 0M427.74 596.46a2.2 2.2 0 1 0 -4.4 0a2.2 2.2 0 1 0 4.4 0M523.82 600.53a2.2 2.2 0 1 0 -4.4 0a2.2 2.2 0 1 0 4.4 0M555.92 591.05a2.2 2.2 0 1 0 -4.4 0a2.2 2.2 0 1 0 4.4 0M522.93 613.66a2.2 2.2 0 1 0 -4.4 0a2.2 2.2 0 1 0 4.4 0M433.01 586.39a2.2 2.2 0 1 0 -4.4 0a2.2 2.2 0 1 0 4.4 0M421.49 628.84a2.2 2.2 0 1 0 -4.4 0a2.2 2.2 0 1 0 4.4 0M418.73 589.98a2.2 2.2 0 1 0 -4.4 0a2.2 2.2 0 1 0 4.4 0M475.56 558.25a2.2 2.2 0 1 0 -4.4 0a2.2 2.2 0 1 0 4.4 0M420.54 579.38a2.2 2.2 0 1 0 -4.4 0a2.2 2.2 0 1 0 4.4 0M622.60 557.52a2.2 2.2 0 1 0 -4.4 0a2.2 2.2 0 1 0 4.4 0M427.59 634.47a2.2 2.2 0 1 0 -4.4 0a2.2 2.2 0 1 0 4.4 0M419.97 594.84a2.2 2.2 0 1 0 -4.4 0a2.2 2.2 0 1 0 4.4 0M519.56 572.92a2.2 2.2 0 1 0 -4.4 0a2.2 2.2 0 1 0 4.4 0M549.57 632.12a2.2 2.2 0 1 0 -4.4 0a2.2 2.2 0 1 0 4.4 0M526.10 540.83a2.2 2.2 0 1 0 -4.4 0a2.2 2.2 0 1 0 4.4 0M436.72 632.70a2.2 2.2 0 1 0 -4.4 0a2.2 2.2 0 1 0 4.4 0M671.07 588.55a2.2 2.2 0 1 0 -4.4 0a2.2 2.2 0 1 0 4.4 0M453.78 590.83a2.2 2.2 0 1 0 -4.4 0a2.2 2.2 0 1 0 4.4 0M599.91 588.48a2.2 2.2 0 1 0 -4.4 0a2.2 2.2 0 1 0 4.4 0M582.33 607.79a2.2 2.2 0 1 0 -4.4 0a2.2 2.2 0 1 0 4.4 0M425.48 582.02a2.2 2.2 0 1 0 -4.4 0a2.2 2.2 0 1 0 4.4 0M551.99 630.36a2.2 2.2 0 1 0 -4.4 0a2.2 2.2 0 1 0 4.4 0M442.43 641.73a2.2 2.2 0 1 0 -4.4 0a2.2 2.2 0 1 0 4.4 0M529.59 621.67a2.2 2.2 0 1 0 -4.4 0a2.2 2.2 0 1 0 4.4 0M514.42 599.65a2.2 2.2 0 1 0 -4.4 0a2.2 2.2 0 1 0 4.4 0M478.94 556.88a2.2 2.2 0 1 0 -4.4 0a2.2 2.2 0 1 0 4.4 0M454.46 544.83a2.2 2.2 0 1 0 -4.4 0a2.2 2.2 0 1 0 4.4 0M473.20 584.51a2.2 2.2 0 1 0 -4.4 0a2.2 2.2 0 1 0 4.4 0M610.04 588.14a2.2 2.2 0 1 0 -4.4 0a2.2 2.2 0 1 0 4.4 0M435.10 605.21a2.2 2.2 0 1 0 -4.4 0a2.2 2.2 0 1 0 4.4 0M575.40 594.11a2.2 2.2 0 1 0 -4.4 0a2.2 2.2 0 1 0 4.4 0M623.11 639.86a2.2 2.2 0 1 0 -4.4 0a2.2 2.2 0 1 0 4.4 0M494.14 584.68a2.2 2.2 0 1 0 -4.4 0a2.2 2.2 0 1 0 4.4 0M574.00 612.00a2.2 2.2 0 1 0 -4.4 0a2.2 2.2 0 1 0 4.4 0M563.83 588.56a2.2 2.2 0 1 0 -4.4 0a2.2 2.2 0 1 0 4.4 0M446.10 610.15a2.2 2.2 0 1 0 -4.4 0a2.2 2.2 0 1 0 4.4 0M430.83 620.23a2.2 2.2 0 1 0 -4.4 0a2.2 2.2 0 1 0 4.4 0M491.68 603.87a2.2 2.2 0 1 0 -4.4 0a2.2 2.2 0 1 0 4.4 0M494.54 608.32a2.2 2.2 0 1 0 -4.4 0a2.2 2.2 0 1 0 4.4 0M508.02 562.87a2.2 2.2 0 1 0 -4.4 0a2.2 2.2 0 1 0 4.4 0M595.28 585.60a2.2 2.2 0 1 0 -4.4 0a2.2 2.2 0 1 0 4.4 0M458.02 580.76a2.2 2.2 0 1 0 -4.4 0a2.2 2.2 0 1 0 4.4 0M440.09 638.89a2.2 2.2 0 1 0 -4.4 0a2.2 2.2 0 1 0 4.4 0M484.12 544.04a2.2 2.2 0 1 0 -4.4 0a2.2 2.2 0 1 0 4.4 0M509.30 593.73a2.2 2.2 0 1 0 -4.4 0a2.2 2.2 0 1 0 4.4 0M456.94 625.10a2.2 2.2 0 1 0 -4.4 0a2.2 2.2 0 1 0 4.4 0M431.35 587.40a2.2 2.2 0 1 0 -4.4 0a2.2 2.2 0 1 0 4.4 0M477.33 565.34a2.2 2.2 0 1 0 -4.4 0a2.2 2.2 0 1 0 4.4 0M419.12 643.55a2.2 2.2 0 1 0 -4.4 0a2.2 2.2 0 1 0 4.4 0M529.83 537.27a2.2 2.2 0 1 0 -4.4 0a2.2 2.2 0 1 0 4.4 0M530.39 598.87a2.2 2.2 0 1 0 -4.4 0a2.2 2.2 0 1 0 4.4 0M419.46 559.20a2.2 2.2 0 1 0 -4.4 0a2.2 2.2 0 1 0 4.4 0M587.04 590.99a2.2 2.2 0 1 0 -4.4 0a2.2 2.2 0 1 0 4.4 0M525.20 609.56a2.2 2.2 0 1 0 -4.4 0a2.2 2.2 0 1 0 4.4 0M453.48 660.65a2.2 2.2 0 1 0 -4.4 0a2.2 2.2 0 1 0 4.4 0M543.88 631.74a2.2 2.2 0 1 0 -4.4 0a2.2 2.2 0 1 0 4.4 0M463.86 598.38a2.2 2.2 0 1 0 -4.4 0a2.2 2.2 0 1 0 4.4 0M702.38 571.59a2.2 2.2 0 1 0 -4.4 0a2.2 2.2 0 1 0 4.4 0M585.14 661.95a2.2 2.2 0 1 0 -4.4 0a2.2 2.2 0 1 0 4.4 0M526.35 552.16a2.2 2.2 0 1 0 -4.4 0a2.2 2.2 0 1 0 4.4 0M546.60 549.22a2.2 2.2 0 1 0 -4.4 0a2.2 2.2 0 1 0 4.4 0M513.05 636.98a2.2 2.2 0 1 0 -4.4 0a2.2 2.2 0 1 0 4.4 0M446.14 580.17a2.2 2.2 0 1 0 -4.4 0a2.2 2.2 0 1 0 4.4 0M522.60 628.88a2.2 2.2 0 1 0 -4.4 0a2.2 2.2 0 1 0 4.4 0M627.33 599.08a2.2 2.2 0 1 0 -4.4 0a2.2 2.2 0 1 0 4.4 0M512.26 566.68a2.2 2.2 0 1 0 -4.4 0a2.2 2.2 0 1 0 4.4 0M475.04 566.66a2.2 2.2 0 1 0 -4.4 0a2.2 2.2 0 1 0 4.4 0M650.76 627.75a2.2 2.2 0 1 0 -4.4 0a2.2 2.2 0 1 0 4.4 0M420.52 609.93a2.2 2.2 0 1 0 -4.4 0a2.2 2.2 0 1 0 4.4 0M442.42 630.54a2.2 2.2 0 1 0 -4.4 0a2.2 2.2 0 1 0 4.4 0M463.18 587.21a2.2 2.2 0 1 0 -4.4 0a2.2 2.2 0 1 0 4.4 0M420.15 649.74a2.2 2.2 0 1 0 -4.4 0a2.2 2.2 0 1 0 4.4 0M502.80 684.54a2.2 2.2 0 1 0 -4.4 0a2.2 2.2 0 1 0 4.4 0M662.93 552.04a2.2 2.2 0 1 0 -4.4 0a2.2 2.2 0 1 0 4.4 0M450.76 520.32a2.2 2.2 0 1 0 -4.4 0a2.2 2.2 0 1 0 4.4 0M446.33 612.71a2.2 2.2 0 1 0 -4.4 0a2.2 2.2 0 1 0 4.4 0M455.65 572.93a2.2 2.2 0 1 0 -4.4 0a2.2 2.2 0 1 0 4.4 0M521.95 595.17a2.2 2.2 0 1 0 -4.4 0a2.2 2.2 0 1 0 4.4 0M538.28 544.86a2.2 2.2 0 1 0 -4.4 0a2.2 2.2 0 1 0 4.4 0M453.75 577.45a2.2 2.2 0 1 0 -4.4 0a2.2 2.2 0 1 0 4.4 0M735.87 593.97a2.2 2.2 0 1 0 -4.4 0a2.2 2.2 0 1 0 4.4 0M721.02 652.51a2.2 2.2 0 1 0 -4.4 0a2.2 2.2 0 1 0 4.4 0M421.54 560.89a2.2 2.2 0 1 0 -4.4 0a2.2 2.2 0 1 0 4.4 0M459.66 608.10a2.2 2.2 0 1 0 -4.4 0a2.2 2.2 0 1 0 4.4 0M456.60 642.94a2.2 2.2 0 1 0 -4.4 0a2.2 2.2 0 1 0 4.4 0M544.48 602.89a2.2 2.2 0 1 0 -4.4 0a2.2 2.2 0 1 0 4.4 0M447.45 599.51a2.2 2.2 0 1 0 -4.4 0a2.2 2.2 0 1 0 4.4 0M449.06 560.82a2.2 2.2 0 1 0 -4.4 0a2.2 2.2 0 1 0 4.4 0M441.13 635.00a2.2 2.2 0 1 0 -4.4 0a2.2 2.2 0 1 0 4.4 0M475.77 618.06a2.2 2.2 0 1 0 -4.4 0a2.2 2.2 0 1 0 4.4 0M476.49 545.65a2.2 2.2 0 1 0 -4.4 0a2.2 2.2 0 1 0 4.4 0M431.30 552.15a2.2 2.2 0 1 0 -4.4 0a2.2 2.2 0 1 0 4.4 0M750.84 553.89a2.2 2.2 0 1 0 -4.4 0a2.2 2.2 0 1 0 4.4 0M548.09 543.70a2.2 2.2 0 1 0 -4.4 0a2.2 2.2 0 1 0 4.4 0M472.64 590.01a2.2 2.2 0 1 0 -4.4 0a2.2 2.2 0 1 0 4.4 0M448.36 614.82a2.2 2.2 0 1 0 -4.4 0a2.2 2.2 0 1 0 4.4 0M436.92 576.78a2.2 2.2 0 1 0 -4.4 0a2.2 2.2 0 1 0 4.4 0M466.69 561.53a2.2 2.2 0 1 0 -4.4 0a2.2 2.2 0 1 0 4.4 0M563.77 518.55a2.2 2.2 0 1 0 -4.4 0a2.2 2.2 0 1 0 4.4 0M419.17 662.80a2.2 2.2 0 1 0 -4.4 0a2.2 2.2 0 1 0 4.4 0M541.53 586.20a2.2 2.2 0 1 0 -4.4 0a2.2 2.2 0 1 0 4.4 0M677.19 579.58a2.2 2.2 0 1 0 -4.4 0a2.2 2.2 0 1 0 4.4 0M425.98 598.28a2.2 2.2 0 1 0 -4.4 0a2.2 2.2 0 1 0 4.4 0M546.65 647.66a2.2 2.2 0 1 0 -4.4 0a2.2 2.2 0 1 0 4.4 0M540.79 572.94a2.2 2.2 0 1 0 -4.4 0a2.2 2.2 0 1 0 4.4 0M477.08 624.88a2.2 2.2 0 1 0 -4.4 0a2.2 2.2 0 1 0 4.4 0M550.96 580.33a2.2 2.2 0 1 0 -4.4 0a2.2 2.2 0 1 0 4.4 0M574.26 562.41a2.2 2.2 0 1 0 -4.4 0a2.2 2.2 0 1 0 4.4 0M428.62 552.85a2.2 2.2 0 1 0 -4.4 0a2.2 2.2 0 1 0 4.4 0M527.11 652.63a2.2 2.2 0 1 0 -4.4 0a2.2 2.2 0 1 0 4.4 0M475.07 560.28a2.2 2.2 0 1 0 -4.4 0a2.2 2.2 0 1 0 4.4 0M446.00 622.39a2.2 2.2 0 1 0 -4.4 0a2.2 2.2 0 1 0 4.4 0M440.65 641.85a2.2 2.2 0 1 0 -4.4 0a2.2 2.2 0 1 0 4.4 0M751.87 555.12a2.2 2.2 0 1 0 -4.4 0a2.2 2.2 0 1 0 4.4 0M484.63 555.71a2.2 2.2 0 1 0 -4.4 0a2.2 2.2 0 1 0 4.4 0M450.77 606.61a2.2 2.2 0 1 0 -4.4 0a2.2 2.2 0 1 0 4.4 0M532.24 573.64a2.2 2.2 0 1 0 -4.4 0a2.2 2.2 0 1 0 4.4 0M643.61 624.54a2.2 2.2 0 1 0 -4.4 0a2.2 2.2 0 1 0 4.4 0M488.61 602.62a2.2 2.2 0 1 0 -4.4 0a2.2 2.2 0 1 0 4.4 0M450.18 598.53a2.2 2.2 0 1 0 -4.4 0a2.2 2.2 0 1 0 4.4 0M505.14 609.27a2.2 2.2 0 1 0 -4.4 0a2.2 2.2 0 1 0 4.4 0M510.58 574.00a2.2 2.2 0 1 0 -4.4 0a2.2 2.2 0 1 0 4.4 0M447.14 545.84a2.2 2.2 0 1 0 -4.4 0a2.2 2.2 0 1 0 4.4 0M489.52 614.89a2.2 2.2 0 1 0 -4.4 0a2.2 2.2 0 1 0 4.4 0M475.52 598.39a2.2 2.2 0 1 0 -4.4 0a2.2 2.2 0 1 0 4.4 0M509.94 542.92a2.2 2.2 0 1 0 -4.4 0a2.2 2.2 0 1 0 4.4 0M484.71 607.60a2.2 2.2 0 1 0 -4.4 0a2.2 2.2 0 1 0 4.4 0M560.88 687.55a2.2 2.2 0 1 0 -4.4 0a2.2 2.2 0 1 0 4.4 0M462.02 579.39a2.2 2.2 0 1 0 -4.4 0a2.2 2.2 0 1 0 4.4 0M455.35 625.80a2.2 2.2 0 1 0 -4.4 0a2.2 2.2 0 1 0 4.4 0M462.52 632.36a2.2 2.2 0 1 0 -4.4 0a2.2 2.2 0 1 0 4.4 0M420.52 548.39a2.2 2.2 0 1 0 -4.4 0a2.2 2.2 0 1 0 4.4 0M497.12 514.35a2.2 2.2 0 1 0 -4.4 0a2.2 2.2 0 1 0 4.4 0M436.80 631.98a2.2 2.2 0 1 0 -4.4 0a2.2 2.2 0 1 0 4.4 0M497.88 559.76a2.2 2.2 0 1 0 -4.4 0a2.2 2.2 0 1 0 4.4 0M542.93 598.82a2.2 2.2 0 1 0 -4.4 0a2.2 2.2 0 1 0 4.4 0M498.60 594.01a2.2 2.2 0 1 0 -4.4 0a2.2 2.2 0 1 0 4.4 0M816.93 559.44a2.2 2.2 0 1 0 -4.4 0a2.2 2.2 0 1 0 4.4 0M436.53 589.28a2.2 2.2 0 1 0 -4.4 0a2.2 2.2 0 1 0 4.4 0M428.04 624.57a2.2 2.2 0 1 0 -4.4 0a2.2 2.2 0 1 0 4.4 0M436.95 612.06a2.2 2.2 0 1 0 -4.4 0a2.2 2.2 0 1 0 4.4 0M445.48 574.32a2.2 2.2 0 1 0 -4.4 0a2.2 2.2 0 1 0 4.4 0M562.50 672.58a2.2 2.2 0 1 0 -4.4 0a2.2 2.2 0 1 0 4.4 0M478.27 560.34a2.2 2.2 0 1 0 -4.4 0a2.2 2.2 0 1 0 4.4 0M432.69 649.02a2.2 2.2 0 1 0 -4.4 0a2.2 2.2 0 1 0 4.4 0M498.25 593.29a2.2 2.2 0 1 0 -4.4 0a2.2 2.2 0 1 0 4.4 0M449.14 605.03a2.2 2.2 0 1 0 -4.4 0a2.2 2.2 0 1 0 4.4 0M427.78 554.12a2.2 2.2 0 1 0 -4.4 0a2.2 2.2 0 1 0 4.4 0M763.94 584.59a2.2 2.2 0 1 0 -4.4 0a2.2 2.2 0 1 0 4.4 0M481.41 594.47a2.2 2.2 0 1 0 -4.4 0a2.2 2.2 0 1 0 4.4 0M539.60 569.93a2.2 2.2 0 1 0 -4.4 0a2.2 2.2 0 1 0 4.4 0M550.73 628.41a2.2 2.2 0 1 0 -4.4 0a2.2 2.2 0 1 0 4.4 0M466.70 604.76a2.2 2.2 0 1 0 -4.4 0a2.2 2.2 0 1 0 4.4 0M430.26 556.07a2.2 2.2 0 1 0 -4.4 0a2.2 2.2 0 1 0 4.4 0M545.84 571.73a2.2 2.2 0 1 0 -4.4 0a2.2 2.2 0 1 0 4.4 0M499.02 642.67a2.2 2.2 0 1 0 -4.4 0a2.2 2.2 0 1 0 4.4 0M515.37 573.99a2.2 2.2 0 1 0 -4.4 0a2.2 2.2 0 1 0 4.4 0M473.40 645.60a2.2 2.2 0 1 0 -4.4 0a2.2 2.2 0 1 0 4.4 0M516.44 614.55a2.2 2.2 0 1 0 -4.4 0a2.2 2.2 0 1 0 4.4 0M485.21 554.40a2.2 2.2 0 1 0 -4.4 0a2.2 2.2 0 1 0 4.4 0M743.47 676.13a2.2 2.2 0 1 0 -4.4 0a2.2 2.2 0 1 0 4.4 0M530.41 655.47a2.2 2.2 0 1 0 -4.4 0a2.2 2.2 0 1 0 4.4 0M505.82 555.85a2.2 2.2 0 1 0 -4.4 0a2.2 2.2 0 1 0 4.4 0M461.55 622.72a2.2 2.2 0 1 0 -4.4 0a2.2 2.2 0 1 0 4.4 0M498.68 552.56a2.2 2.2 0 1 0 -4.4 0a2.2 2.2 0 1 0 4.4 0M521.55 601.62a2.2 2.2 0 1 0 -4.4 0a2.2 2.2 0 1 0 4.4 0M558.59 582.22a2.2 2.2 0 1 0 -4.4 0a2.2 2.2 0 1 0 4.4 0M477.53 570.11a2.2 2.2 0 1 0 -4.4 0a2.2 2.2 0 1 0 4.4 0M456.27 617.28a2.2 2.2 0 1 0 -4.4 0a2.2 2.2 0 1 0 4.4 0M558.56 604.10a2.2 2.2 0 1 0 -4.4 0a2.2 2.2 0 1 0 4.4 0M623.20 614.48a2.2 2.2 0 1 0 -4.4 0a2.2 2.2 0 1 0 4.4 0M547.25 505.17a2.2 2.2 0 1 0 -4.4 0a2.2 2.2 0 1 0 4.4 0M555.35 590.74a2.2 2.2 0 1 0 -4.4 0a2.2 2.2 0 1 0 4.4 0M480.83 578.38a2.2 2.2 0 1 0 -4.4 0a2.2 2.2 0 1 0 4.4 0M496.71 606.43a2.2 2.2 0 1 0 -4.4 0a2.2 2.2 0 1 0 4.4 0M478.62 604.48a2.2 2.2 0 1 0 -4.4 0a2.2 2.2 0 1 0 4.4 0M527.99 549.65a2.2 2.2 0 1 0 -4.4 0a2.2 2.2 0 1 0 4.4 0M881.51 615.09a2.2 2.2 0 1 0 -4.4 0a2.2 2.2 0 1 0 4.4 0M484.19 594.50a2.2 2.2 0 1 0 -4.4 0a2.2 2.2 0 1 0 4.4 0M459.93 584.36a2.2 2.2 0 1 0 -4.4 0a2.2 2.2 0 1 0 4.4 0M430.47 611.43a2.2 2.2 0 1 0 -4.4 0a2.2 2.2 0 1 0 4.4 0M423.37 531.20a2.2 2.2 0 1 0 -4.4 0a2.2 2.2 0 1 0 4.4 0M501.19 642.50a2.2 2.2 0 1 0 -4.4 0a2.2 2.2 0 1 0 4.4 0M430.30 530.01a2.2 2.2 0 1 0 -4.4 0a2.2 2.2 0 1 0 4.4 0M547.01 609.19a2.2 2.2 0 1 0 -4.4 0a2.2 2.2 0 1 0 4.4 0M471.75 550.92a2.2 2.2 0 1 0 -4.4 0a2.2 2.2 0 1 0 4.4 0M475.71 666.32a2.2 2.2 0 1 0 -4.4 0a2.2 2.2 0 1 0 4.4 0M497.77 561.74a2.2 2.2 0 1 0 -4.4 0a2.2 2.2 0 1 0 4.4 0M558.08 564.40a2.2 2.2 0 1 0 -4.4 0a2.2 2.2 0 1 0 4.4 0M640.39 635.28a2.2 2.2 0 1 0 -4.4 0a2.2 2.2 0 1 0 4.4 0M421.29 622.44a2.2 2.2 0 1 0 -4.4 0a2.2 2.2 0 1 0 4.4 0M585.07 586.76a2.2 2.2 0 1 0 -4.4 0a2.2 2.2 0 1 0 4.4 0M717.68 552.84a2.2 2.2 0 1 0 -4.4 0a2.2 2.2 0 1 0 4.4 0M476.86 622.31a2.2 2.2 0 1 0 -4.4 0a2.2 2.2 0 1 0 4.4 0M506.32 606.67a2.2 2.2 0 1 0 -4.4 0a2.2 2.2 0 1 0 4.4 0M425.23 544.59a2.2 2.2 0 1 0 -4.4 0a2.2 2.2 0 1 0 4.4 0M433.84 634.85a2.2 2.2 0 1 0 -4.4 0a2.2 2.2 0 1 0 4.4 0M418.69 564.59a2.2 2.2 0 1 0 -4.4 0a2.2 2.2 0 1 0 4.4 0M580.18 579.12a2.2 2.2 0 1 0 -4.4 0a2.2 2.2 0 1 0 4.4 0M479.58 633.86a2.2 2.2 0 1 0 -4.4 0a2.2 2.2 0 1 0 4.4 0M485.47 619.75a2.2 2.2 0 1 0 -4.4 0a2.2 2.2 0 1 0 4.4 0M436.98 570.35a2.2 2.2 0 1 0 -4.4 0a2.2 2.2 0 1 0 4.4 0M454.77 587.63a2.2 2.2 0 1 0 -4.4 0a2.2 2.2 0 1 0 4.4 0M441.05 547.59a2.2 2.2 0 1 0 -4.4 0a2.2 2.2 0 1 0 4.4 0M538.48 615.49a2.2 2.2 0 1 0 -4.4 0a2.2 2.2 0 1 0 4.4 0M449.92 653.77a2.2 2.2 0 1 0 -4.4 0a2.2 2.2 0 1 0 4.4 0M532.68 561.37a2.2 2.2 0 1 0 -4.4 0a2.2 2.2 0 1 0 4.4 0M511.05 614.85a2.2 2.2 0 1 0 -4.4 0a2.2 2.2 0 1 0 4.4 0M498.58 590.17a2.2 2.2 0 1 0 -4.4 0a2.2 2.2 0 1 0 4.4 0M442.91 540.37a2.2 2.2 0 1 0 -4.4 0a2.2 2.2 0 1 0 4.4 0M570.13 601.42a2.2 2.2 0 1 0 -4.4 0a2.2 2.2 0 1 0 4.4 0M448.58 545.95a2.2 2.2 0 1 0 -4.4 0a2.2 2.2 0 1 0 4.4 0M450.05 634.86a2.2 2.2 0 1 0 -4.4 0a2.2 2.2 0 1 0 4.4 0M537.78 562.14a2.2 2.2 0 1 0 -4.4 0a2.2 2.2 0 1 0 4.4 0M494.73 586.23a2.2 2.2 0 1 0 -4.4 0a2.2 2.2 0 1 0 4.4 0M568.85 625.18a2.2 2.2 0 1 0 -4.4 0a2.2 2.2 0 1 0 4.4 0M478.58 642.44a2.2 2.2 0 1 0 -4.4 0a2.2 2.2 0 1 0 4.4 0M570.71 598.00a2.2 2.2 0 1 0 -4.4 0a2.2 2.2 0 1 0 4.4 0M512.11 589.18a2.2 2.2 0 1 0 -4.4 0a2.2 2.2 0 1 0 4.4 0M440.99 586.57a2.2 2.2 0 1 0 -4.4 0a2.2 2.2 0 1 0 4.4 0M435.16 578.51a2.2 2.2 0 1 0 -4.4 0a2.2 2.2 0 1 0 4.4 0M499.48 610.27a2.2 2.2 0 1 0 -4.4 0a2.2 2.2 0 1 0 4.4 0M503.30 616.41a2.2 2.2 0 1 0 -4.4 0a2.2 2.2 0 1 0 4.4 0M480.49 591.33a2.2 2.2 0 1 0 -4.4 0a2.2 2.2 0 1 0 4.4 0M491.84 613.87a2.2 2.2 0 1 0 -4.4 0a2.2 2.2 0 1 0 4.4 0M461.35 553.69a2.2 2.2 0 1 0 -4.4 0a2.2 2.2 0 1 0 4.4 0M541.23 594.46a2.2 2.2 0 1 0 -4.4 0a2.2 2.2 0 1 0 4.4 0M419.01 617.72a2.2 2.2 0 1 0 -4.4 0a2.2 2.2 0 1 0 4.4 0M469.03 660.09a2.2 2.2 0 1 0 -4.4 0a2.2 2.2 0 1 0 4.4 0M664.92 623.59a2.2 2.2 0 1 0 -4.4 0a2.2 2.2 0 1 0 4.4 0M503.87 528.70a2.2 2.2 0 1 0 -4.4 0a2.2 2.2 0 1 0 4.4 0M418.71 616.04a2.2 2.2 0 1 0 -4.4 0a2.2 2.2 0 1 0 4.4 0M479.22 624.26a2.2 2.2 0 1 0 -4.4 0a2.2 2.2 0 1 0 4.4 0M447.63 573.72a2.2 2.2 0 1 0 -4.4 0a2.2 2.2 0 1 0 4.4 0M524.33 579.14a2.2 2.2 0 1 0 -4.4 0a2.2 2.2 0 1 0 4.4 0M455.75 570.31a2.2 2.2 0 1 0 -4.4 0a2.2 2.2 0 1 0 4.4 0M463.73 608.15a2.2 2.2 0 1 0 -4.4 0a2.2 2.2 0 1 0 4.4 0M453.04 560.81a2.2 2.2 0 1 0 -4.4 0a2.2 2.2 0 1 0 4.4 0M419.91 636.56a2.2 2.2 0 1 0 -4.4 0a2.2 2.2 0 1 0 4.4 0M431.19 598.33a2.2 2.2 0 1 0 -4.4 0a2.2 2.2 0 1 0 4.4 0M469.57 622.78a2.2 2.2 0 1 0 -4.4 0a2.2 2.2 0 1 0 4.4 0M434.38 573.75a2.2 2.2 0 1 0 -4.4 0a2.2 2.2 0 1 0 4.4 0M496.33 591.42a2.2 2.2 0 1 0 -4.4 0a2.2 2.2 0 1 0 4.4 0M428.47 560.06a2.2 2.2 0 1 0 -4.4 0a2.2 2.2 0 1 0 4.4 0M482.71 529.57a2.2 2.2 0 1 0 -4.4 0a2.2 2.2 0 1 0 4.4 0M474.92 591.70a2.2 2.2 0 1 0 -4.4 0a2.2 2.2 0 1 0 4.4 0M479.37 612.44a2.2 2.2 0 1 0 -4.4 0a2.2 2.2 0 1 0 4.4 0M542.54 625.03a2.2 2.2 0 1 0 -4.4 0a2.2 2.2 0 1 0 4.4 0M494.82 602.97a2.2 2.2 0 1 0 -4.4 0a2.2 2.2 0 1 0 4.4 0M512.32 597.68a2.2 2.2 0 1 0 -4.4 0a2.2 2.2 0 1 0 4.4 0M425.35 528.96a2.2 2.2 0 1 0 -4.4 0a2.2 2.2 0 1 0 4.4 0M542.08 637.49a2.2 2.2 0 1 0 -4.4 0a2.2 2.2 0 1 0 4.4 0M499.51 633.70a2.2 2.2 0 1 0 -4.4 0a2.2 2.2 0 1 0 4.4 0M431.88 611.79a2.2 2.2 0 1 0 -4.4 0a2.2 2.2 0 1 0 4.4 0M528.60 580.32a2.2 2.2 0 1 0 -4.4 0a2.2 2.2 0 1 0 4.4 0M418.41 568.93a2.2 2.2 0 1 0 -4.4 0a2.2 2.2 0 1 0 4.4 0M677.49 625.08a2.2 2.2 0 1 0 -4.4 0a2.2 2.2 0 1 0 4.4 0M535.50 589.78a2.2 2.2 0 1 0 -4.4 0a2.2 2.2 0 1 0 4.4 0M478.25 596.04a2.2 2.2 0 1 0 -4.4 0a2.2 2.2 0 1 0 4.4 0M464.87 556.69a2.2 2.2 0 1 0 -4.4 0a2.2 2.2 0 1 0 4.4 0M510.01 562.41a2.2 2.2 0 1 0 -4.4 0a2.2 2.2 0 1 0 4.4 0M506.22 609.04a2.2 2.2 0 1 0 -4.4 0a2.2 2.2 0 1 0 4.4 0M473.88 596.81a2.2 2.2 0 1 0 -4.4 0a2.2 2.2 0 1 0 4.4 0M490.02 574.71a2.2 2.2 0 1 0 -4.4 0a2.2 2.2 0 1 0 4.4 0M466.47 652.02a2.2 2.2 0 1 0 -4.4 0a2.2 2.2 0 1 0 4.4 0M523.40 610.50a2.2 2.2 0 1 0 -4.4 0a2.2 2.2 0 1 0 4.4 0M463.75 576.27a2.2 2.2 0 1 0 -4.4 0a2.2 2.2 0 1 0 4.4 0M536.49 614.11a2.2 2.2 0 1 0 -4.4 0a2.2 2.2 0 1 0 4.4 0M490.60 600.92a2.2 2.2 0 1 0 -4.4 0a2.2 2.2 0 1 0 4.4 0M544.20 597.73a2.2 2.2 0 1 0 -4.4 0a2.2 2.2 0 1 0 4.4 0M686.10 616.47a2.2 2.2 0 1 0 -4.4 0a2.2 2.2 0 1 0 4.4 0M480.15 630.63a2.2 2.2 0 1 0 -4.4 0a2.2 2.2 0 1 0 4.4 0M453.16 602.25a2.2 2.2 0 1 0 -4.4 0a2.2 2.2 0 1 0 4.4 0M507.03 609.09a2.2 2.2 0 1 0 -4.4 0a2.2 2.2 0 1 0 4.4 0M472.70 566.61a2.2 2.2 0 1 0 -4.4 0a2.2 2.2 0 1 0 4.4 0M424.36 544.50a2.2 2.2 0 1 0 -4.4 0a2.2 2.2 0 1 0 4.4 0M593.16 595.04a2.2 2.2 0 1 0 -4.4 0a2.2 2.2 0 1 0 4.4 0M520.26 586.46a2.2 2.2 0 1 0 -4.4 0a2.2 2.2 0 1 0 4.4 0M418.96 599.23a2.2 2.2 0 1 0 -4.4 0a2.2 2.2 0 1 0 4.4 0M479.52 576.68a2.2 2.2 0 1 0 -4.4 0a2.2 2.2 0 1 0 4.4 0M420.25 589.81a2.2 2.2 0 1 0 -4.4 0a2.2 2.2 0 1 0 4.4 0M472.95 589.32a2.2 2.2 0 1 0 -4.4 0a2.2 2.2 0 1 0 4.4 0M467.66 560.38a2.2 2.2 0 1 0 -4.4 0a2.2 2.2 0 1 0 4.4 0M502.23 630.21a2.2 2.2 0 1 0 -4.4 0a2.2 2.2 0 1 0 4.4 0M474.64 549.96a2.2 2.2 0 1 0 -4.4 0a2.2 2.2 0 1 0 4.4 0M519.30 581.98a2.2 2.2 0 1 0 -4.4 0a2.2 2.2 0 1 0 4.4 0M484.09 593.02a2.2 2.2 0 1 0 -4.4 0a2.2 2.2 0 1 0 4.4 0M477.01 616.61a2.2 2.2 0 1 0 -4.4 0a2.2 2.2 0 1 0 4.4 0M557.53 599.89a2.2 2.2 0 1 0 -4.4 0a2.2 2.2 0 1 0 4.4 0M452.44 582.54a2.2 2.2 0 1 0 -4.4 0a2.2 2.2 0 1 0 4.4 0M511.12 665.92a2.2 2.2 0 1 0 -4.4 0a2.2 2.2 0 1 0 4.4 0M473.32 618.01a2.2 2.2 0 1 0 -4.4 0a2.2 2.2 0 1 0 4.4 0M459.29 575.13a2.2 2.2 0 1 0 -4.4 0a2.2 2.2 0 1 0 4.4 0M518.00 609.78a2.2 2.2 0 1 0 -4.4 0a2.2 2.2 0 1 0 4.4 0M451.96 625.12a2.2 2.2 0 1 0 -4.4 0a2.2 2.2 0 1 0 4.4 0M423.20 617.57a2.2 2.2 0 1 0 -4.4 0a2.2 2.2 0 1 0 4.4 0M503.82 588.62a2.2 2.2 0 1 0 -4.4 0a2.2 2.2 0 1 0 4.4 0M621.51 648.06a2.2 2.2 0 1 0 -4.4 0a2.2 2.2 0 1 0 4.4 0M558.97 564.67a2.2 2.2 0 1 0 -4.4 0a2.2 2.2 0 1 0 4.4 0M511.58 668.72a2.2 2.2 0 1 0 -4.4 0a2.2 2.2 0 1 0 4.4 0M532.42 616.42a2.2 2.2 0 1 0 -4.4 0a2.2 2.2 0 1 0 4.4 0M454.21 624.20a2.2 2.2 0 1 0 -4.4 0a2.2 2.2 0 1 0 4.4 0M455.04 640.39a2.2 2.2 0 1 0 -4.4 0a2.2 2.2 0 1 0 4.4 0M502.81 632.27a2.2 2.2 0 1 0 -4.4 0a2.2 2.2 0 1 0 4.4 0M600.64 592.15a2.2 2.2 0 1 0 -4.4 0a2.2 2.2 0 1 0 4.4 0M496.30 598.87a2.2 2.2 0 1 0 -4.4 0a2.2 2.2 0 1 0 4.4 0M468.75 609.03a2.2 2.2 0 1 0 -4.4 0a2.2 2.2 0 1 0 4.4 0M422.96 675.83a2.2 2.2 0 1 0 -4.4 0a2.2 2.2 0 1 0 4.4 0M521.88 642.18a2.2 2.2 0 1 0 -4.4 0a2.2 2.2 0 1 0 4.4 0M503.42 603.82a2.2 2.2 0 1 0 -4.4 0a2.2 2.2 0 1 0 4.4 0M433.02 625.47a2.2 2.2 0 1 0 -4.4 0a2.2 2.2 0 1 0 4.4 0M504.81 626.02a2.2 2.2 0 1 0 -4.4 0a2.2 2.2 0 1 0 4.4 0M785.30 566.98a2.2 2.2 0 1 0 -4.4 0a2.2 2.2 0 1 0 4.4 0M472.89 590.94a2.2 2.2 0 1 0 -4.4 0a2.2 2.2 0 1 0 4.4 0M456.87 630.86a2.2 2.2 0 1 0 -4.4 0a2.2 2.2 0 1 0 4.4 0M503.19 612.07a2.2 2.2 0 1 0 -4.4 0a2.2 2.2 0 1 0 4.4 0M479.37 604.58a2.2 2.2 0 1 0 -4.4 0a2.2 2.2 0 1 0 4.4 0M545.81 623.17a2.2 2.2 0 1 0 -4.4 0a2.2 2.2 0 1 0 4.4 0M418.95 629.60a2.2 2.2 0 1 0 -4.4 0a2.2 2.2 0 1 0 4.4 0M638.08 603.28a2.2 2.2 0 1 0 -4.4 0a2.2 2.2 0 1 0 4.4 0M530.99 570.49a2.2 2.2 0 1 0 -4.4 0a2.2 2.2 0 1 0 4.4 0M597.51 584.95a2.2 2.2 0 1 0 -4.4 0a2.2 2.2 0 1 0 4.4 0M510.10 600.71a2.2 2.2 0 1 0 -4.4 0a2.2 2.2 0 1 0 4.4 0M425.77 584.21a2.2 2.2 0 1 0 -4.4 0a2.2 2.2 0 1 0 4.4 0M426.10 569.77a2.2 2.2 0 1 0 -4.4 0a2.2 2.2 0 1 0 4.4 0M608.67 605.78a2.2 2.2 0 1 0 -4.4 0a2.2 2.2 0 1 0 4.4 0M520.72 578.80a2.2 2.2 0 1 0 -4.4 0a2.2 2.2 0 1 0 4.4 0M480.74 634.94a2.2 2.2 0 1 0 -4.4 0a2.2 2.2 0 1 0 4.4 0M449.55 607.01a2.2 2.2 0 1 0 -4.4 0a2.2 2.2 0 1 0 4.4 0M559.29 612.90a2.2 2.2 0 1 0 -4.4 0a2.2 2.2 0 1 0 4.4 0M437.29 591.36a2.2 2.2 0 1 0 -4.4 0a2.2 2.2 0 1 0 4.4 0M452.26 586.52a2.2 2.2 0 1 0 -4.4 0a2.2 2.2 0 1 0 4.4 0M457.50 602.56a2.2 2.2 0 1 0 -4.4 0a2.2 2.2 0 1 0 4.4 0M499.83 624.65a2.2 2.2 0 1 0 -4.4 0a2.2 2.2 0 1 0 4.4 0M629.46 623.84a2.2 2.2 0 1 0 -4.4 0a2.2 2.2 0 1 0 4.4 0M422.75 587.22a2.2 2.2 0 1 0 -4.4 0a2.2 2.2 0 1 0 4.4 0M469.80 549.10a2.2 2.2 0 1 0 -4.4 0a2.2 2.2 0 1 0 4.4 0M766.75 629.39a2.2 2.2 0 1 0 -4.4 0a2.2 2.2 0 1 0 4.4 0M482.79 609.77a2.2 2.2 0 1 0 -4.4 0a2.2 2.2 0 1 0 4.4 0M444.23 587.31a2.2 2.2 0 1 0 -4.4 0a2.2 2.2 0 1 0 4.4 0M488.07 618.01a2.2 2.2 0 1 0 -4.4 0a2.2 2.2 0 1 0 4.4 0M621.00 591.06a2.2 2.2 0 1 0 -4.4 0a2.2 2.2 0 1 0 4.4 0M605.22 602.51a2.2 2.2 0 1 0 -4.4 0a2.2 2.2 0 1 0 4.4 0M485.75 621.42a2.2 2.2 0 1 0 -4.4 0a2.2 2.2 0 1 0 4.4 0M469.83 566.57a2.2 2.2 0 1 0 -4.4 0a2.2 2.2 0 1 0 4.4 0M439.81 568.57a2.2 2.2 0 1 0 -4.4 0a2.2 2.2 0 1 0 4.4 0M492.81 564.81a2.2 2.2 0 1 0 -4.4 0a2.2 2.2 0 1 0 4.4 0M456.97 552.27a2.2 2.2 0 1 0 -4.4 0a2.2 2.2 0 1 0 4.4 0M458.18 612.81a2.2 2.2 0 1 0 -4.4 0a2.2 2.2 0 1 0 4.4 0M526.84 613.64a2.2 2.2 0 1 0 -4.4 0a2.2 2.2 0 1 0 4.4 0M523.68 590.22a2.2 2.2 0 1 0 -4.4 0a2.2 2.2 0 1 0 4.4 0M729.32 570.07a2.2 2.2 0 1 0 -4.4 0a2.2 2.2 0 1 0 4.4 0M456.18 610.19a2.2 2.2 0 1 0 -4.4 0a2.2 2.2 0 1 0 4.4 0M613.83 615.58a2.2 2.2 0 1 0 -4.4 0a2.2 2.2 0 1 0 4.4 0M463.97 615.95a2.2 2.2 0 1 0 -4.4 0a2.2 2.2 0 1 0 4.4 0M422.39 546.16a2.2 2.2 0 1 0 -4.4 0a2.2 2.2 0 1 0 4.4 0M607.84 682.96a2.2 2.2 0 1 0 -4.4 0a2.2 2.2 0 1 0 4.4 0M672.05 605.14a2.2 2.2 0 1 0 -4.4 0a2.2 2.2 0 1 0 4.4 0M502.69 597.02a2.2 2.2 0 1 0 -4.4 0a2.2 2.2 0 1 0 4.4 0M481.74 630.78a2.2 2.2 0 1 0 -4.4 0a2.2 2.2 0 1 0 4.4 0M445.41 583.05a2.2 2.2 0 1 0 -4.4 0a2.2 2.2 0 1 0 4.4 0M430.29 664.11a2.2 2.2 0 1 0 -4.4 0a2.2 2.2 0 1 0 4.4 0M474.78 565.61a2.2 2.2 0 1 0 -4.4 0a2.2 2.2 0 1 0 4.4 0M524.94 653.89a2.2 2.2 0 1 0 -4.4 0a2.2 2.2 0 1 0 4.4 0M538.39 669.55a2.2 2.2 0 1 0 -4.4 0a2.2 2.2 0 1 0 4.4 0M490.90 620.46a2.2 2.2 0 1 0 -4.4 0a2.2 2.2 0 1 0 4.4 0M544.83 593.61a2.2 2.2 0 1 0 -4.4 0a2.2 2.2 0 1 0 4.4 0M499.33 618.03a2.2 2.2 0 1 0 -4.4 0a2.2 2.2 0 1 0 4.4 0M586.05 618.93a2.2 2.2 0 1 0 -4.4 0a2.2 2.2 0 1 0 4.4 0M452.53 585.56a2.2 2.2 0 1 0 -4.4 0a2.2 2.2 0 1 0 4.4 0M445.09 631.42a2.2 2.2 0 1 0 -4.4 0a2.2 2.2 0 1 0 4.4 0M560.04 596.55a2.2 2.2 0 1 0 -4.4 0a2.2 2.2 0 1 0 4.4 0M645.57 584.76a2.2 2.2 0 1 0 -4.4 0a2.2 2.2 0 1 0 4.4 0M494.83 542.64a2.2 2.2 0 1 0 -4.4 0a2.2 2.2 0 1 0 4.4 0M512.75 580.68a2.2 2.2 0 1 0 -4.4 0a2.2 2.2 0 1 0 4.4 0M636.10 540.24a2.2 2.2 0 1 0 -4.4 0a2.2 2.2 0 1 0 4.4 0M463.44 579.86a2.2 2.2 0 1 0 -4.4 0a2.2 2.2 0 1 0 4.4 0M457.34 598.94a2.2 2.2 0 1 0 -4.4 0a2.2 2.2 0 1 0 4.4 0M474.69 670.66a2.2 2.2 0 1 0 -4.4 0a2.2 2.2 0 1 0 4.4 0M452.87 637.80a2.2 2.2 0 1 0 -4.4 0a2.2 2.2 0 1 0 4.4 0M556.12 604.77a2.2 2.2 0 1 0 -4.4 0a2.2 2.2 0 1 0 4.4 0M431.46 573.09a2.2 2.2 0 1 0 -4.4 0a2.2 2.2 0 1 0 4.4 0M490.19 605.27a2.2 2.2 0 1 0 -4.4 0a2.2 2.2 0 1 0 4.4 0M532.08 575.12a2.2 2.2 0 1 0 -4.4 0a2.2 2.2 0 1 0 4.4 0M617.41 629.71a2.2 2.2 0 1 0 -4.4 0a2.2 2.2 0 1 0 4.4 0M471.89 605.22a2.2 2.2 0 1 0 -4.4 0a2.2 2.2 0 1 0 4.4 0M657.38 593.61a2.2 2.2 0 1 0 -4.4 0a2.2 2.2 0 1 0 4.4 0M436.00 609.51a2.2 2.2 0 1 0 -4.4 0a2.2 2.2 0 1 0 4.4 0M423.26 592.42a2.2 2.2 0 1 0 -4.4 0a2.2 2.2 0 1 0 4.4 0M420.23 619.95a2.2 2.2 0 1 0 -4.4 0a2.2 2.2 0 1 0 4.4 0M432.95 583.00a2.2 2.2 0 1 0 -4.4 0a2.2 2.2 0 1 0 4.4 0M538.54 596.51a2.2 2.2 0 1 0 -4.4 0a2.2 2.2 0 1 0 4.4 0M544.16 598.07a2.2 2.2 0 1 0 -4.4 0a2.2 2.2 0 1 0 4.4 0M479.88 662.25a2.2 2.2 0 1 0 -4.4 0a2.2 2.2 0 1 0 4.4 0M471.16 619.75a2.2 2.2 0 1 0 -4.4 0a2.2 2.2 0 1 0 4.4 0M497.87 647.18a2.2 2.2 0 1 0 -4.4 0a2.2 2.2 0 1 0 4.4 0M513.12 649.65a2.2 2.2 0 1 0 -4.4 0a2.2 2.2 0 1 0 4.4 0M706.32 616.02a2.2 2.2 0 1 0 -4.4 0a2.2 2.2 0 1 0 4.4 0M479.66 604.25a2.2 2.2 0 1 0 -4.4 0a2.2 2.2 0 1 0 4.4 0M570.53 590.97a2.2 2.2 0 1 0 -4.4 0a2.2 2.2 0 1 0 4.4 0M466.25 561.20a2.2 2.2 0 1 0 -4.4 0a2.2 2.2 0 1 0 4.4 0M442.12 583.07a2.2 2.2 0 1 0 -4.4 0a2.2 2.2 0 1 0 4.4 0M428.02 561.72a2.2 2.2 0 1 0 -4.4 0a2.2 2.2 0 1 0 4.4 0M472.93 612.28a2.2 2.2 0 1 0 -4.4 0a2.2 2.2 0 1 0 4.4 0M542.56 610.01a2.2 2.2 0 1 0 -4.4 0a2.2 2.2 0 1 0 4.4 0M566.08 563.46a2.2 2.2 0 1 0 -4.4 0a2.2 2.2 0 1 0 4.4 0M492.43 598.22a2.2 2.2 0 1 0 -4.4 0a2.2 2.2 0 1 0 4.4 0M455.10 655.11a2.2 2.2 0 1 0 -4.4 0a2.2 2.2 0 1 0 4.4 0M462.13 625.07a2.2 2.2 0 1 0 -4.4 0a2.2 2.2 0 1 0 4.4 0M529.08 563.23a2.2 2.2 0 1 0 -4.4 0a2.2 2.2 0 1 0 4.4 0M521.34 616.82a2.2 2.2 0 1 0 -4.4 0a2.2 2.2 0 1 0 4.4 0M752.65 591.16a2.2 2.2 0 1 0 -4.4 0a2.2 2.2 0 1 0 4.4 0M461.96 595.70a2.2 2.2 0 1 0 -4.4 0a2.2 2.2 0 1 0 4.4 0M499.21 610.77a2.2 2.2 0 1 0 -4.4 0a2.2 2.2 0 1 0 4.4 0M559.13 605.25a2.2 2.2 0 1 0 -4.4 0a2.2 2.2 0 1 0 4.4 0M451.85 585.46a2.2 2.2 0 1 0 -4.4 0a2.2 2.2 0 1 0 4.4 0M545.00 593.31a2.2 2.2 0 1 0 -4.4 0a2.2 2.2 0 1 0 4.4 0M812.08 551.72a2.2 2.2 0 1 0 -4.4 0a2.2 2.2 0 1 0 4.4 0M467.76 603.02a2.2 2.2 0 1 0 -4.4 0a2.2 2.2 0 1 0 4.4 0M471.94 629.20a2.2 2.2 0 1 0 -4.4 0a2.2 2.2 0 1 0 4.4 0M432.65 590.82a2.2 2.2 0 1 0 -4.4 0a2.2 2.2 0 1 0 4.4 0M670.22 577.66a2.2 2.2 0 1 0 -4.4 0a2.2 2.2 0 1 0 4.4 0M444.57 521.11a2.2 2.2 0 1 0 -4.4 0a2.2 2.2 0 1 0 4.4 0M558.07 616.25a2.2 2.2 0 1 0 -4.4 0a2.2 2.2 0 1 0 4.4 0M532.80 607.98a2.2 2.2 0 1 0 -4.4 0a2.2 2.2 0 1 0 4.4 0M427.36 567.26a2.2 2.2 0 1 0 -4.4 0a2.2 2.2 0 1 0 4.4 0M544.66 555.40a2.2 2.2 0 1 0 -4.4 0a2.2 2.2 0 1 0 4.4 0M524.29 619.25a2.2 2.2 0 1 0 -4.4 0a2.2 2.2 0 1 0 4.4 0M472.35 574.82a2.2 2.2 0 1 0 -4.4 0a2.2 2.2 0 1 0 4.4 0M526.35 618.83a2.2 2.2 0 1 0 -4.4 0a2.2 2.2 0 1 0 4.4 0M472.69 629.88a2.2 2.2 0 1 0 -4.4 0a2.2 2.2 0 1 0 4.4 0M446.28 574.13a2.2 2.2 0 1 0 -4.4 0a2.2 2.2 0 1 0 4.4 0M584.95 592.65a2.2 2.2 0 1 0 -4.4 0a2.2 2.2 0 1 0 4.4 0M420.23 584.16a2.2 2.2 0 1 0 -4.4 0a2.2 2.2 0 1 0 4.4 0M418.39 616.65a2.2 2.2 0 1 0 -4.4 0a2.2 2.2 0 1 0 4.4 0M430.88 536.00a2.2 2.2 0 1 0 -4.4 0a2.2 2.2 0 1 0 4.4 0M613.29 570.25a2.2 2.2 0 1 0 -4.4 0a2.2 2.2 0 1 0 4.4 0M558.78 608.57a2.2 2.2 0 1 0 -4.4 0a2.2 2.2 0 1 0 4.4 0M490.71 570.67a2.2 2.2 0 1 0 -4.4 0a2.2 2.2 0 1 0 4.4 0M442.87 637.82a2.2 2.2 0 1 0 -4.4 0a2.2 2.2 0 1 0 4.4 0M436.72 601.28a2.2 2.2 0 1 0 -4.4 0a2.2 2.2 0 1 0 4.4 0M426.93 548.94a2.2 2.2 0 1 0 -4.4 0a2.2 2.2 0 1 0 4.4 0M590.44 606.74a2.2 2.2 0 1 0 -4.4 0a2.2 2.2 0 1 0 4.4 0M633.62 568.28a2.2 2.2 0 1 0 -4.4 0a2.2 2.2 0 1 0 4.4 0M436.61 603.25a2.2 2.2 0 1 0 -4.4 0a2.2 2.2 0 1 0 4.4 0M623.36 678.86a2.2 2.2 0 1 0 -4.4 0a2.2 2.2 0 1 0 4.4 0M491.71 627.73a2.2 2.2 0 1 0 -4.4 0a2.2 2.2 0 1 0 4.4 0M506.46 590.10a2.2 2.2 0 1 0 -4.4 0a2.2 2.2 0 1 0 4.4 0M471.79 547.78a2.2 2.2 0 1 0 -4.4 0a2.2 2.2 0 1 0 4.4 0M477.51 615.54a2.2 2.2 0 1 0 -4.4 0a2.2 2.2 0 1 0 4.4 0M516.38 587.85a2.2 2.2 0 1 0 -4.4 0a2.2 2.2 0 1 0 4.4 0M539.83 626.39a2.2 2.2 0 1 0 -4.4 0a2.2 2.2 0 1 0 4.4 0M556.74 627.62a2.2 2.2 0 1 0 -4.4 0a2.2 2.2 0 1 0 4.4 0M491.23 622.25a2.2 2.2 0 1 0 -4.4 0a2.2 2.2 0 1 0 4.4 0M686.02 555.59a2.2 2.2 0 1 0 -4.4 0a2.2 2.2 0 1 0 4.4 0M508.86 562.16a2.2 2.2 0 1 0 -4.4 0a2.2 2.2 0 1 0 4.4 0M469.17 577.89a2.2 2.2 0 1 0 -4.4 0a2.2 2.2 0 1 0 4.4 0M430.27 558.12a2.2 2.2 0 1 0 -4.4 0a2.2 2.2 0 1 0 4.4 0M450.89 610.53a2.2 2.2 0 1 0 -4.4 0a2.2 2.2 0 1 0 4.4 0M454.28 572.22a2.2 2.2 0 1 0 -4.4 0a2.2 2.2 0 1 0 4.4 0M436.33 590.51a2.2 2.2 0 1 0 -4.4 0a2.2 2.2 0 1 0 4.4 0M525.44 631.38a2.2 2.2 0 1 0 -4.4 0a2.2 2.2 0 1 0 4.4 0M459.35 622.97a2.2 2.2 0 1 0 -4.4 0a2.2 2.2 0 1 0 4.4 0M516.07 592.29a2.2 2.2 0 1 0 -4.4 0a2.2 2.2 0 1 0 4.4 0M767.61 584.00a2.2 2.2 0 1 0 -4.4 0a2.2 2.2 0 1 0 4.4 0M562.70 604.97a2.2 2.2 0 1 0 -4.4 0a2.2 2.2 0 1 0 4.4 0M504.85 631.35a2.2 2.2 0 1 0 -4.4 0a2.2 2.2 0 1 0 4.4 0M696.16 672.89a2.2 2.2 0 1 0 -4.4 0a2.2 2.2 0 1 0 4.4 0M846.92 575.89a2.2 2.2 0 1 0 -4.4 0a2.2 2.2 0 1 0 4.4 0M510.74 606.59a2.2 2.2 0 1 0 -4.4 0a2.2 2.2 0 1 0 4.4 0M733.51 572.63a2.2 2.2 0 1 0 -4.4 0a2.2 2.2 0 1 0 4.4 0M424.11 648.40a2.2 2.2 0 1 0 -4.4 0a2.2 2.2 0 1 0 4.4 0M550.70 636.93a2.2 2.2 0 1 0 -4.4 0a2.2 2.2 0 1 0 4.4 0M494.44 599.70a2.2 2.2 0 1 0 -4.4 0a2.2 2.2 0 1 0 4.4 0M512.78 642.40a2.2 2.2 0 1 0 -4.4 0a2.2 2.2 0 1 0 4.4 0M421.06 663.53a2.2 2.2 0 1 0 -4.4 0a2.2 2.2 0 1 0 4.4 0M442.21 570.16a2.2 2.2 0 1 0 -4.4 0a2.2 2.2 0 1 0 4.4 0M420.41 566.54a2.2 2.2 0 1 0 -4.4 0a2.2 2.2 0 1 0 4.4 0M542.22 628.54a2.2 2.2 0 1 0 -4.4 0a2.2 2.2 0 1 0 4.4 0M514.96 607.74a2.2 2.2 0 1 0 -4.4 0a2.2 2.2 0 1 0 4.4 0M643.18 639.94a2.2 2.2 0 1 0 -4.4 0a2.2 2.2 0 1 0 4.4 0M420.56 586.47a2.2 2.2 0 1 0 -4.4 0a2.2 2.2 0 1 0 4.4 0M445.61 597.35a2.2 2.2 0 1 0 -4.4 0a2.2 2.2 0 1 0 4.4 0M458.51 624.39a2.2 2.2 0 1 0 -4.4 0a2.2 2.2 0 1 0 4.4 0M447.91 622.30a2.2 2.2 0 1 0 -4.4 0a2.2 2.2 0 1 0 4.4 0M557.80 635.71a2.2 2.2 0 1 0 -4.4 0a2.2 2.2 0 1 0 4.4 0M438.72 581.95a2.2 2.2 0 1 0 -4.4 0a2.2 2.2 0 1 0 4.4 0M463.76 575.45a2.2 2.2 0 1 0 -4.4 0a2.2 2.2 0 1 0 4.4 0M512.37 582.31a2.2 2.2 0 1 0 -4.4 0a2.2 2.2 0 1 0 4.4 0M445.04 625.11a2.2 2.2 0 1 0 -4.4 0a2.2 2.2 0 1 0 4.4 0M454.03 658.53a2.2 2.2 0 1 0 -4.4 0a2.2 2.2 0 1 0 4.4 0M519.15 576.26a2.2 2.2 0 1 0 -4.4 0a2.2 2.2 0 1 0 4.4 0M660.10 604.70a2.2 2.2 0 1 0 -4.4 0a2.2 2.2 0 1 0 4.4 0M436.50 598.65a2.2 2.2 0 1 0 -4.4 0a2.2 2.2 0 1 0 4.4 0M428.69 560.98a2.2 2.2 0 1 0 -4.4 0a2.2 2.2 0 1 0 4.4 0M543.58 629.95a2.2 2.2 0 1 0 -4.4 0a2.2 2.2 0 1 0 4.4 0M422.04 557.87a2.2 2.2 0 1 0 -4.4 0a2.2 2.2 0 1 0 4.4 0M641.41 608.28a2.2 2.2 0 1 0 -4.4 0a2.2 2.2 0 1 0 4.4 0M455.47 621.77a2.2 2.2 0 1 0 -4.4 0a2.2 2.2 0 1 0 4.4 0M519.73 603.06a2.2 2.2 0 1 0 -4.4 0a2.2 2.2 0 1 0 4.4 0M505.27 581.62a2.2 2.2 0 1 0 -4.4 0a2.2 2.2 0 1 0 4.4 0M440.19 603.85a2.2 2.2 0 1 0 -4.4 0a2.2 2.2 0 1 0 4.4 0M467.03 625.11a2.2 2.2 0 1 0 -4.4 0a2.2 2.2 0 1 0 4.4 0M481.18 605.33a2.2 2.2 0 1 0 -4.4 0a2.2 2.2 0 1 0 4.4 0M485.00 681.62a2.2 2.2 0 1 0 -4.4 0a2.2 2.2 0 1 0 4.4 0M608.01 617.83a2.2 2.2 0 1 0 -4.4 0a2.2 2.2 0 1 0 4.4 0M569.64 585.13a2.2 2.2 0 1 0 -4.4 0a2.2 2.2 0 1 0 4.4 0M439.03 604.01a2.2 2.2 0 1 0 -4.4 0a2.2 2.2 0 1 0 4.4 0M528.15 573.28a2.2 2.2 0 1 0 -4.4 0a2.2 2.2 0 1 0 4.4 0M715.14 582.78a2.2 2.2 0 1 0 -4.4 0a2.2 2.2 0 1 0 4.4 0M630.49 579.61a2.2 2.2 0 1 0 -4.4 0a2.2 2.2 0 1 0 4.4 0M528.61 577.24a2.2 2.2 0 1 0 -4.4 0a2.2 2.2 0 1 0 4.4 0M504.71 653.65a2.2 2.2 0 1 0 -4.4 0a2.2 2.2 0 1 0 4.4 0M457.71 598.43a2.2 2.2 0 1 0 -4.4 0a2.2 2.2 0 1 0 4.4 0M467.65 540.64a2.2 2.2 0 1 0 -4.4 0a2.2 2.2 0 1 0 4.4 0M423.10 612.34a2.2 2.2 0 1 0 -4.4 0a2.2 2.2 0 1 0 4.4 0M494.60 583.06a2.2 2.2 0 1 0 -4.4 0a2.2 2.2 0 1 0 4.4 0M452.90 590.14a2.2 2.2 0 1 0 -4.4 0a2.2 2.2 0 1 0 4.4 0M426.43 577.53a2.2 2.2 0 1 0 -4.4 0a2.2 2.2 0 1 0 4.4 0M440.81 607.40a2.2 2.2 0 1 0 -4.4 0a2.2 2.2 0 1 0 4.4 0M444.18 617.66a2.2 2.2 0 1 0 -4.4 0a2.2 2.2 0 1 0 4.4 0M515.76 594.37a2.2 2.2 0 1 0 -4.4 0a2.2 2.2 0 1 0 4.4 0M492.27 588.07a2.2 2.2 0 1 0 -4.4 0a2.2 2.2 0 1 0 4.4 0M440.72 604.60a2.2 2.2 0 1 0 -4.4 0a2.2 2.2 0 1 0 4.4 0M483.36 593.40a2.2 2.2 0 1 0 -4.4 0a2.2 2.2 0 1 0 4.4 0M575.68 579.42a2.2 2.2 0 1 0 -4.4 0a2.2 2.2 0 1 0 4.4 0M457.16 623.34a2.2 2.2 0 1 0 -4.4 0a2.2 2.2 0 1 0 4.4 0M424.60 558.46a2.2 2.2 0 1 0 -4.4 0a2.2 2.2 0 1 0 4.4 0M432.56 522.25a2.2 2.2 0 1 0 -4.4 0a2.2 2.2 0 1 0 4.4 0M710.88 543.88a2.2 2.2 0 1 0 -4.4 0a2.2 2.2 0 1 0 4.4 0M425.16 611.95a2.2 2.2 0 1 0 -4.4 0a2.2 2.2 0 1 0 4.4 0M525.47 660.13a2.2 2.2 0 1 0 -4.4 0a2.2 2.2 0 1 0 4.4 0M802.66 601.20a2.2 2.2 0 1 0 -4.4 0a2.2 2.2 0 1 0 4.4 0M537.50 569.86a2.2 2.2 0 1 0 -4.4 0a2.2 2.2 0 1 0 4.4 0M443.86 571.43a2.2 2.2 0 1 0 -4.4 0a2.2 2.2 0 1 0 4.4 0M475.97 638.99a2.2 2.2 0 1 0 -4.4 0a2.2 2.2 0 1 0 4.4 0M510.98 635.19a2.2 2.2 0 1 0 -4.4 0a2.2 2.2 0 1 0 4.4 0M521.04 589.64a2.2 2.2 0 1 0 -4.4 0a2.2 2.2 0 1 0 4.4 0M527.84 574.73a2.2 2.2 0 1 0 -4.4 0a2.2 2.2 0 1 0 4.4 0M605.52 566.47a2.2 2.2 0 1 0 -4.4 0a2.2 2.2 0 1 0 4.4 0M463.57 570.79a2.2 2.2 0 1 0 -4.4 0a2.2 2.2 0 1 0 4.4 0M512.13 632.58a2.2 2.2 0 1 0 -4.4 0a2.2 2.2 0 1 0 4.4 0M489.40 643.69a2.2 2.2 0 1 0 -4.4 0a2.2 2.2 0 1 0 4.4 0M449.13 663.02a2.2 2.2 0 1 0 -4.4 0a2.2 2.2 0 1 0 4.4 0M443.94 580.66a2.2 2.2 0 1 0 -4.4 0a2.2 2.2 0 1 0 4.4 0M519.75 568.51a2.2 2.2 0 1 0 -4.4 0a2.2 2.2 0 1 0 4.4 0M495.79 584.92a2.2 2.2 0 1 0 -4.4 0a2.2 2.2 0 1 0 4.4 0M443.27 633.39a2.2 2.2 0 1 0 -4.4 0a2.2 2.2 0 1 0 4.4 0M470.14 545.55a2.2 2.2 0 1 0 -4.4 0a2.2 2.2 0 1 0 4.4 0M615.88 612.17a2.2 2.2 0 1 0 -4.4 0a2.2 2.2 0 1 0 4.4 0M491.08 539.46a2.2 2.2 0 1 0 -4.4 0a2.2 2.2 0 1 0 4.4 0M521.49 580.71a2.2 2.2 0 1 0 -4.4 0a2.2 2.2 0 1 0 4.4 0M472.19 554.95a2.2 2.2 0 1 0 -4.4 0a2.2 2.2 0 1 0 4.4 0M437.64 587.09a2.2 2.2 0 1 0 -4.4 0a2.2 2.2 0 1 0 4.4 0M464.28 598.11a2.2 2.2 0 1 0 -4.4 0a2.2 2.2 0 1 0 4.4 0M569.77 629.09a2.2 2.2 0 1 0 -4.4 0a2.2 2.2 0 1 0 4.4 0M420.81 615.96a2.2 2.2 0 1 0 -4.4 0a2.2 2.2 0 1 0 4.4 0M430.09 597.52a2.2 2.2 0 1 0 -4.4 0a2.2 2.2 0 1 0 4.4 0M620.25 591.76a2.2 2.2 0 1 0 -4.4 0a2.2 2.2 0 1 0 4.4 0M449.90 599.64a2.2 2.2 0 1 0 -4.4 0a2.2 2.2 0 1 0 4.4 0M448.94 603.51a2.2 2.2 0 1 0 -4.4 0a2.2 2.2 0 1 0 4.4 0M485.58 591.16a2.2 2.2 0 1 0 -4.4 0a2.2 2.2 0 1 0 4.4 0M446.80 615.89a2.2 2.2 0 1 0 -4.4 0a2.2 2.2 0 1 0 4.4 0M749.98 609.47a2.2 2.2 0 1 0 -4.4 0a2.2 2.2 0 1 0 4.4 0M494.77 648.00a2.2 2.2 0 1 0 -4.4 0a2.2 2.2 0 1 0 4.4 0M445.35 568.88a2.2 2.2 0 1 0 -4.4 0a2.2 2.2 0 1 0 4.4 0M442.80 594.38a2.2 2.2 0 1 0 -4.4 0a2.2 2.2 0 1 0 4.4 0M439.35 600.36a2.2 2.2 0 1 0 -4.4 0a2.2 2.2 0 1 0 4.4 0M471.77 623.91a2.2 2.2 0 1 0 -4.4 0a2.2 2.2 0 1 0 4.4 0M497.62 602.48a2.2 2.2 0 1 0 -4.4 0a2.2 2.2 0 1 0 4.4 0M563.54 629.77a2.2 2.2 0 1 0 -4.4 0a2.2 2.2 0 1 0 4.4 0M464.98 631.45a2.2 2.2 0 1 0 -4.4 0a2.2 2.2 0 1 0 4.4 0M533.74 661.96a2.2 2.2 0 1 0 -4.4 0a2.2 2.2 0 1 0 4.4 0M445.49 563.25a2.2 2.2 0 1 0 -4.4 0a2.2 2.2 0 1 0 4.4 0M463.61 590.64a2.2 2.2 0 1 0 -4.4 0a2.2 2.2 0 1 0 4.4 0M589.12 635.50a2.2 2.2 0 1 0 -4.4 0a2.2 2.2 0 1 0 4.4 0M704.07 553.85a2.2 2.2 0 1 0 -4.4 0a2.2 2.2 0 1 0 4.4 0M439.57 576.70a2.2 2.2 0 1 0 -4.4 0a2.2 2.2 0 1 0 4.4 0M517.71 574.54a2.2 2.2 0 1 0 -4.4 0a2.2 2.2 0 1 0 4.4 0M523.75 606.50a2.2 2.2 0 1 0 -4.4 0a2.2 2.2 0 1 0 4.4 0M424.95 610.53a2.2 2.2 0 1 0 -4.4 0a2.2 2.2 0 1 0 4.4 0M565.30 597.76a2.2 2.2 0 1 0 -4.4 0a2.2 2.2 0 1 0 4.4 0M495.40 582.29a2.2 2.2 0 1 0 -4.4 0a2.2 2.2 0 1 0 4.4 0M463.50 568.71a2.2 2.2 0 1 0 -4.4 0a2.2 2.2 0 1 0 4.4 0M606.60 544.52a2.2 2.2 0 1 0 -4.4 0a2.2 2.2 0 1 0 4.4 0M467.06 615.25a2.2 2.2 0 1 0 -4.4 0a2.2 2.2 0 1 0 4.4 0M437.62 632.03a2.2 2.2 0 1 0 -4.4 0a2.2 2.2 0 1 0 4.4 0M745.37 589.27a2.2 2.2 0 1 0 -4.4 0a2.2 2.2 0 1 0 4.4 0M593.59 498.82a2.2 2.2 0 1 0 -4.4 0a2.2 2.2 0 1 0 4.4 0M570.91 610.47a2.2 2.2 0 1 0 -4.4 0a2.2 2.2 0 1 0 4.4 0M558.50 557.69a2.2 2.2 0 1 0 -4.4 0a2.2 2.2 0 1 0 4.4 0M551.43 601.46a2.2 2.2 0 1 0 -4.4 0a2.2 2.2 0 1 0 4.4 0M491.22 615.71a2.2 2.2 0 1 0 -4.4 0a2.2 2.2 0 1 0 4.4 0M503.06 619.38a2.2 2.2 0 1 0 -4.4 0a2.2 2.2 0 1 0 4.4 0M593.98 604.71a2.2 2.2 0 1 0 -4.4 0a2.2 2.2 0 1 0 4.4 0M520.71 538.59a2.2 2.2 0 1 0 -4.4 0a2.2 2.2 0 1 0 4.4 0M545.76 584.52a2.2 2.2 0 1 0 -4.4 0a2.2 2.2 0 1 0 4.4 0M650.06 577.64a2.2 2.2 0 1 0 -4.4 0a2.2 2.2 0 1 0 4.4 0M462.66 566.48a2.2 2.2 0 1 0 -4.4 0a2.2 2.2 0 1 0 4.4 0M602.02 522.51a2.2 2.2 0 1 0 -4.4 0a2.2 2.2 0 1 0 4.4 0M523.67 567.46a2.2 2.2 0 1 0 -4.4 0a2.2 2.2 0 1 0 4.4 0M529.69 646.74a2.2 2.2 0 1 0 -4.4 0a2.2 2.2 0 1 0 4.4 0M427.56 630.82a2.2 2.2 0 1 0 -4.4 0a2.2 2.2 0 1 0 4.4 0M484.14 653.05a2.2 2.2 0 1 0 -4.4 0a2.2 2.2 0 1 0 4.4 0M511.72 694.72a2.2 2.2 0 1 0 -4.4 0a2.2 2.2 0 1 0 4.4 0M489.67 551.24a2.2 2.2 0 1 0 -4.4 0a2.2 2.2 0 1 0 4.4 0M460.71 611.77a2.2 2.2 0 1 0 -4.4 0a2.2 2.2 0 1 0 4.4 0M518.46 583.91a2.2 2.2 0 1 0 -4.4 0a2.2 2.2 0 1 0 4.4 0M494.24 559.65a2.2 2.2 0 1 0 -4.4 0a2.2 2.2 0 1 0 4.4 0M542.34 613.98a2.2 2.2 0 1 0 -4.4 0a2.2 2.2 0 1 0 4.4 0M456.08 603.34a2.2 2.2 0 1 0 -4.4 0a2.2 2.2 0 1 0 4.4 0M489.50 585.35a2.2 2.2 0 1 0 -4.4 0a2.2 2.2 0 1 0 4.4 0M537.25 590.04a2.2 2.2 0 1 0 -4.4 0a2.2 2.2 0 1 0 4.4 0M537.97 623.31a2.2 2.2 0 1 0 -4.4 0a2.2 2.2 0 1 0 4.4 0M583.09 572.97a2.2 2.2 0 1 0 -4.4 0a2.2 2.2 0 1 0 4.4 0M629.17 573.84a2.2 2.2 0 1 0 -4.4 0a2.2 2.2 0 1 0 4.4 0M547.54 604.28a2.2 2.2 0 1 0 -4.4 0a2.2 2.2 0 1 0 4.4 0M447.01 639.18a2.2 2.2 0 1 0 -4.4 0a2.2 2.2 0 1 0 4.4 0M443.18 575.67a2.2 2.2 0 1 0 -4.4 0a2.2 2.2 0 1 0 4.4 0M437.49 549.87a2.2 2.2 0 1 0 -4.4 0a2.2 2.2 0 1 0 4.4 0M423.71 549.53a2.2 2.2 0 1 0 -4.4 0a2.2 2.2 0 1 0 4.4 0M512.91 565.66a2.2 2.2 0 1 0 -4.4 0a2.2 2.2 0 1 0 4.4 0M585.99 616.62a2.2 2.2 0 1 0 -4.4 0a2.2 2.2 0 1 0 4.4 0M450.03 616.55a2.2 2.2 0 1 0 -4.4 0a2.2 2.2 0 1 0 4.4 0M446.16 616.79a2.2 2.2 0 1 0 -4.4 0a2.2 2.2 0 1 0 4.4 0M565.29 606.93a2.2 2.2 0 1 0 -4.4 0a2.2 2.2 0 1 0 4.4 0M516.24 571.72a2.2 2.2 0 1 0 -4.4 0a2.2 2.2 0 1 0 4.4 0M446.22 589.84a2.2 2.2 0 1 0 -4.4 0a2.2 2.2 0 1 0 4.4 0M534.10 659.22a2.2 2.2 0 1 0 -4.4 0a2.2 2.2 0 1 0 4.4 0M423.51 659.45a2.2 2.2 0 1 0 -4.4 0a2.2 2.2 0 1 0 4.4 0M441.04 596.48a2.2 2.2 0 1 0 -4.4 0a2.2 2.2 0 1 0 4.4 0M448.77 592.01a2.2 2.2 0 1 0 -4.4 0a2.2 2.2 0 1 0 4.4 0M734.07 670.55a2.2 2.2 0 1 0 -4.4 0a2.2 2.2 0 1 0 4.4 0M485.41 626.58a2.2 2.2 0 1 0 -4.4 0a2.2 2.2 0 1 0 4.4 0M468.25 596.69a2.2 2.2 0 1 0 -4.4 0a2.2 2.2 0 1 0 4.4 0M582.47 550.37a2.2 2.2 0 1 0 -4.4 0a2.2 2.2 0 1 0 4.4 0M522.29 664.98a2.2 2.2 0 1 0 -4.4 0a2.2 2.2 0 1 0 4.4 0M479.26 637.52a2.2 2.2 0 1 0 -4.4 0a2.2 2.2 0 1 0 4.4 0M549.26 631.40a2.2 2.2 0 1 0 -4.4 0a2.2 2.2 0 1 0 4.4 0M618.52 595.38a2.2 2.2 0 1 0 -4.4 0a2.2 2.2 0 1 0 4.4 0M438.82 585.40a2.2 2.2 0 1 0 -4.4 0a2.2 2.2 0 1 0 4.4 0M551.28 605.21a2.2 2.2 0 1 0 -4.4 0a2.2 2.2 0 1 0 4.4 0M474.65 651.20a2.2 2.2 0 1 0 -4.4 0a2.2 2.2 0 1 0 4.4 0M425.60 618.87a2.2 2.2 0 1 0 -4.4 0a2.2 2.2 0 1 0 4.4 0M456.07 616.68a2.2 2.2 0 1 0 -4.4 0a2.2 2.2 0 1 0 4.4 0M460.31 602.21a2.2 2.2 0 1 0 -4.4 0a2.2 2.2 0 1 0 4.4 0M455.80 541.38a2.2 2.2 0 1 0 -4.4 0a2.2 2.2 0 1 0 4.4 0M586.25 615.94a2.2 2.2 0 1 0 -4.4 0a2.2 2.2 0 1 0 4.4 0M448.56 595.21a2.2 2.2 0 1 0 -4.4 0a2.2 2.2 0 1 0 4.4 0M523.57 621.68a2.2 2.2 0 1 0 -4.4 0a2.2 2.2 0 1 0 4.4 0M708.74 634.48a2.2 2.2 0 1 0 -4.4 0a2.2 2.2 0 1 0 4.4 0M440.21 575.08a2.2 2.2 0 1 0 -4.4 0a2.2 2.2 0 1 0 4.4 0M422.55 631.72a2.2 2.2 0 1 0 -4.4 0a2.2 2.2 0 1 0 4.4 0M567.15 505.97a2.2 2.2 0 1 0 -4.4 0a2.2 2.2 0 1 0 4.4 0M418.29 593.66a2.2 2.2 0 1 0 -4.4 0a2.2 2.2 0 1 0 4.4 0M506.06 594.05a2.2 2.2 0 1 0 -4.4 0a2.2 2.2 0 1 0 4.4 0M452.31 599.92a2.2 2.2 0 1 0 -4.4 0a2.2 2.2 0 1 0 4.4 0M442.48 535.38a2.2 2.2 0 1 0 -4.4 0a2.2 2.2 0 1 0 4.4 0M443.35 576.02a2.2 2.2 0 1 0 -4.4 0a2.2 2.2 0 1 0 4.4 0M449.08 606.41a2.2 2.2 0 1 0 -4.4 0a2.2 2.2 0 1 0 4.4 0M465.73 635.77a2.2 2.2 0 1 0 -4.4 0a2.2 2.2 0 1 0 4.4 0M501.79 629.39a2.2 2.2 0 1 0 -4.4 0a2.2 2.2 0 1 0 4.4 0M474.20 620.99a2.2 2.2 0 1 0 -4.4 0a2.2 2.2 0 1 0 4.4 0M495.00 557.66a2.2 2.2 0 1 0 -4.4 0a2.2 2.2 0 1 0 4.4 0M631.70 605.35a2.2 2.2 0 1 0 -4.4 0a2.2 2.2 0 1 0 4.4 0M548.73 622.80a2.2 2.2 0 1 0 -4.4 0a2.2 2.2 0 1 0 4.4 0M484.97 570.02a2.2 2.2 0 1 0 -4.4 0a2.2 2.2 0 1 0 4.4 0M518.55 552.56a2.2 2.2 0 1 0 -4.4 0a2.2 2.2 0 1 0 4.4 0M440.28 621.45a2.2 2.2 0 1 0 -4.4 0a2.2 2.2 0 1 0 4.4 0M612.78 608.52a2.2 2.2 0 1 0 -4.4 0a2.2 2.2 0 1 0 4.4 0M533.37 584.34a2.2 2.2 0 1 0 -4.4 0a2.2 2.2 0 1 0 4.4 0M487.25 599.33a2.2 2.2 0 1 0 -4.4 0a2.2 2.2 0 1 0 4.4 0M526.54 582.05a2.2 2.2 0 1 0 -4.4 0a2.2 2.2 0 1 0 4.4 0M474.25 541.34a2.2 2.2 0 1 0 -4.4 0a2.2 2.2 0 1 0 4.4 0M489.04 599.72a2.2 2.2 0 1 0 -4.4 0a2.2 2.2 0 1 0 4.4 0M468.77 604.98a2.2 2.2 0 1 0 -4.4 0a2.2 2.2 0 1 0 4.4 0M448.35 579.14a2.2 2.2 0 1 0 -4.4 0a2.2 2.2 0 1 0 4.4 0M615.80 602.84a2.2 2.2 0 1 0 -4.4 0a2.2 2.2 0 1 0 4.4 0M535.15 573.82a2.2 2.2 0 1 0 -4.4 0a2.2 2.2 0 1 0 4.4 0M463.60 604.69a2.2 2.2 0 1 0 -4.4 0a2.2 2.2 0 1 0 4.4 0M512.86 584.55a2.2 2.2 0 1 0 -4.4 0a2.2 2.2 0 1 0 4.4 0M553.36 646.58a2.2 2.2 0 1 0 -4.4 0a2.2 2.2 0 1 0 4.4 0M530.28 596.11a2.2 2.2 0 1 0 -4.4 0a2.2 2.2 0 1 0 4.4 0M712.08 608.90a2.2 2.2 0 1 0 -4.4 0a2.2 2.2 0 1 0 4.4 0M450.76 637.51a2.2 2.2 0 1 0 -4.4 0a2.2 2.2 0 1 0 4.4 0M420.26 610.52a2.2 2.2 0 1 0 -4.4 0a2.2 2.2 0 1 0 4.4 0M433.60 584.66a2.2 2.2 0 1 0 -4.4 0a2.2 2.2 0 1 0 4.4 0M469.10 592.68a2.2 2.2 0 1 0 -4.4 0a2.2 2.2 0 1 0 4.4 0M659.49 578.21a2.2 2.2 0 1 0 -4.4 0a2.2 2.2 0 1 0 4.4 0M649.03 566.96a2.2 2.2 0 1 0 -4.4 0a2.2 2.2 0 1 0 4.4 0M458.88 568.22a2.2 2.2 0 1 0 -4.4 0a2.2 2.2 0 1 0 4.4 0M462.65 608.25a2.2 2.2 0 1 0 -4.4 0a2.2 2.2 0 1 0 4.4 0M455.84 642.42a2.2 2.2 0 1 0 -4.4 0a2.2 2.2 0 1 0 4.4 0M629.77 610.16a2.2 2.2 0 1 0 -4.4 0a2.2 2.2 0 1 0 4.4 0M545.85 559.62a2.2 2.2 0 1 0 -4.4 0a2.2 2.2 0 1 0 4.4 0M564.88 601.87a2.2 2.2 0 1 0 -4.4 0a2.2 2.2 0 1 0 4.4 0M460.86 650.23a2.2 2.2 0 1 0 -4.4 0a2.2 2.2 0 1 0 4.4 0M475.45 582.29a2.2 2.2 0 1 0 -4.4 0a2.2 2.2 0 1 0 4.4 0M576.68 590.40a2.2 2.2 0 1 0 -4.4 0a2.2 2.2 0 1 0 4.4 0M485.14 609.17a2.2 2.2 0 1 0 -4.4 0a2.2 2.2 0 1 0 4.4 0M483.14 592.67a2.2 2.2 0 1 0 -4.4 0a2.2 2.2 0 1 0 4.4 0M534.99 548.90a2.2 2.2 0 1 0 -4.4 0a2.2 2.2 0 1 0 4.4 0M694.11 549.23a2.2 2.2 0 1 0 -4.4 0a2.2 2.2 0 1 0 4.4 0M513.48 613.68a2.2 2.2 0 1 0 -4.4 0a2.2 2.2 0 1 0 4.4 0M491.80 596.01a2.2 2.2 0 1 0 -4.4 0a2.2 2.2 0 1 0 4.4 0M479.59 646.05a2.2 2.2 0 1 0 -4.4 0a2.2 2.2 0 1 0 4.4 0M565.49 617.65a2.2 2.2 0 1 0 -4.4 0a2.2 2.2 0 1 0 4.4 0M548.55 531.85a2.2 2.2 0 1 0 -4.4 0a2.2 2.2 0 1 0 4.4 0M545.25 547.91a2.2 2.2 0 1 0 -4.4 0a2.2 2.2 0 1 0 4.4 0M464.84 602.51a2.2 2.2 0 1 0 -4.4 0a2.2 2.2 0 1 0 4.4 0M536.65 621.25a2.2 2.2 0 1 0 -4.4 0a2.2 2.2 0 1 0 4.4 0M552.65 640.31a2.2 2.2 0 1 0 -4.4 0a2.2 2.2 0 1 0 4.4 0M441.24 524.06a2.2 2.2 0 1 0 -4.4 0a2.2 2.2 0 1 0 4.4 0M483.56 594.64a2.2 2.2 0 1 0 -4.4 0a2.2 2.2 0 1 0 4.4 0M478.01 617.00a2.2 2.2 0 1 0 -4.4 0a2.2 2.2 0 1 0 4.4 0M444.33 560.26a2.2 2.2 0 1 0 -4.4 0a2.2 2.2 0 1 0 4.4 0M484.64 634.45a2.2 2.2 0 1 0 -4.4 0a2.2 2.2 0 1 0 4.4 0M486.95 571.42a2.2 2.2 0 1 0 -4.4 0a2.2 2.2 0 1 0 4.4 0M535.42 547.20a2.2 2.2 0 1 0 -4.4 0a2.2 2.2 0 1 0 4.4 0M597.08 605.32a2.2 2.2 0 1 0 -4.4 0a2.2 2.2 0 1 0 4.4 0M432.98 548.73a2.2 2.2 0 1 0 -4.4 0a2.2 2.2 0 1 0 4.4 0M438.77 576.26a2.2 2.2 0 1 0 -4.4 0a2.2 2.2 0 1 0 4.4 0" stroke="#111" stroke-width="0.8" fill="none"/><path d="M415.88 594.26 L416.14 594.28 L416.24 594.29 L416.49 594.31 L416.75 594.33 L416.89 594.34 L417.07 594.36 L417.77 594.42 L418.03 594.44 L418.06 594.44 L418.32 594.46 L418.61 594.49 L418.87 594.51 L419.29 594.54 L419.84 594.59 L420.19 594.62 L420.76 594.67 L421.06 594.69 L421.51 594.73 L421.91 594.76 L422.34 594.80 L422.75 594.83 L423.15 594.86 L423.51 594.89 L423.78 594.92 L424.73 594.99 L425.36 595.05 L425.58 595.06 L426.12 595.11 L426.42 595.13 L427.39 595.21 L428.06 595.26 L428.10 595.26 L428.68 595.31 L429.03 595.34 L429.26 595.35 L430.35 595.44 L430.49 595.45 L430.78 595.47 L431.24 595.51 L431.64 595.54 L432.36 595.59 L432.96 595.64 L433.80 595.70 L434.33 595.74 L434.52 595.75 L434.75 595.77 L435.24 595.81 L435.44 595.82 L436.62 595.91 L437.37 595.96 L437.98 596.00 L438.08 596.01 L438.53 596.04 L438.84 596.06 L439.04 596.08 L440.01 596.15 L440.28 596.16 L440.56 596.18 L440.71 596.19 L441.06 596.22 L441.26 596.23 L441.74 596.26 L442.03 596.28 L442.84 596.34 L443.21 596.36 L443.34 596.37 L443.80 596.40 L443.96 596.41 L444.08 596.42 L444.60 596.46 L445.25 596.50 L446.15 596.56 L446.36 596.57 L446.70 596.60 L446.86 596.61 L446.94 596.61 L447.72 596.66 L447.98 596.68 L448.56 596.72 L448.69 596.73 L449.56 596.78 L449.80 596.80 L450.11 596.82 L450.67 596.86 L450.84 596.87 L451.54 596.92 L451.83 596.94 L452.08 596.95 L452.37 596.97 L452.84 597.00 L453.24 597.03 L453.45 597.04 L453.64 597.06 L453.91 597.08 L454.07 597.09 L454.53 597.12 L454.77 597.13 L455.14 597.16 L455.51 597.19 L456.31 597.24 L456.68 597.27 L457.46 597.33 L457.73 597.35 L458.27 597.38 L458.66 597.41 L459.35 597.46 L459.76 597.49 L459.93 597.51 L460.46 597.55 L460.98 597.59 L461.30 597.61 L461.41 597.62 L461.56 597.63 L462.08 597.67 L462.78 597.73 L463.53 597.79 L464.27 597.84 L464.81 597.89 L464.96 597.90 L465.46 597.94 L466.05 597.98 L466.83 598.04 L467.02 598.05 L467.63 598.10 L469.55 598.20 L469.69 598.20 L470.15 598.20 L470.50 598.19 L470.75 598.19 L471.12 598.19 L471.71 598.19 L472.15 598.19 L472.44 598.19 L472.58 598.19 L472.84 598.19 L473.32 598.19 L473.51 598.19 L473.83 598.19 L474.29 598.18 L474.88 598.17 L475.30 598.16 L475.64 598.16 L476.07 598.15 L476.38 598.14 L477.02 598.13 L477.17 598.13 L477.38 598.13 L477.56 598.13 L477.96 598.12 L478.43 598.11 L478.98 598.10 L479.44 598.09 L480.51 598.07 L481.13 598.05 L481.89 598.04 L481.99 598.03 L482.44 598.02 L482.77 598.02 L483.01 598.01 L483.38 598.00 L484.23 597.98 L484.98 597.96 L486.41 597.93 L487.30 597.90 L487.44 597.90 L487.99 597.89 L488.70 597.87 L489.03 597.86 L489.51 597.84 L489.93 597.83 L490.24 597.83 L491.24 597.80 L492.04 597.78 L492.34 597.77 L492.57 597.76 L492.80 597.76 L493.59 597.74 L494.51 597.72 L494.92 597.72 L495.67 597.70 L496.38 597.69 L496.82 597.68 L497.13 597.67 L497.31 597.67 L498.37 597.67 L498.99 597.67 L499.59 597.68 L500.03 597.68 L500.60 597.68 L500.86 597.68 L501.22 597.68 L502.51 597.69 L502.94 597.70 L503.86 597.71 L504.26 597.71 L505.82 597.73 L507.23 597.75 L507.81 597.76 L508.54 597.76 L508.92 597.76 L509.91 597.77 L510.12 597.77 L510.55 597.78 L510.71 597.78 L510.90 597.78 L511.28 597.78 L511.73 597.78 L513.17 597.78 L513.56 597.77 L514.04 597.77 L514.24 597.77 L515.48 597.76 L515.73 597.76 L516.35 597.76 L517.36 597.74 L518.06 597.72 L518.51 597.72 L518.84 597.71 L519.35 597.70 L520.09 597.69 L520.73 597.67 L521.37 597.66 L521.55 597.66 L522.09 597.64 L522.74 597.63 L523.27 597.62 L524.05 597.60 L524.15 597.60 L524.64 597.58 L525.64 597.56 L525.95 597.55 L526.88 597.53 L527.49 597.51 L528.19 597.49 L529.49 597.45 L530.04 597.44 L530.60 597.42 L531.17 597.40 L531.90 597.38 L533.22 597.34 L533.58 597.33 L534.82 597.29 L535.51 597.27 L535.86 597.26 L536.28 597.25 L537.40 597.22 L538.38 597.19 L539.03 597.18 L539.88 597.15 L540.21 597.14 L540.52 597.14 L541.68 597.11 L542.28 597.10 L542.80 597.09 L543.57 597.07 L543.65 597.07 L544.45 597.05 L545.05 597.04 L545.89 597.02 L546.35 597.02 L547.06 597.00 L547.38 596.99 L548.76 596.97 L549.23 596.96 L549.79 596.95 L551.07 596.93 L551.75 596.92 L553.15 596.90 L553.72 596.89 L554.54 596.87 L555.60 596.86 L556.15 596.86 L556.36 596.86 L556.77 596.85 L557.84 596.84 L559.95 596.83 L561.03 596.82 L561.63 596.81 L563.09 596.80 L563.29 596.80 L564.95 596.77 L566.65 596.75 L567.73 596.73 L568.51 596.72 L571.29 596.66 L573.20 596.61 L574.48 596.58 L578.18 596.48 L580.27 596.42 L582.87 596.34 L583.85 596.31 L585.59 596.26 L588.24 596.17 L591.39 596.06 L593.08 596.01 L595.17 595.93 L597.71 595.84 L600.39 595.74 L604.40 595.60 L605.81 595.55 L610.58 595.39 L612.88 595.32 L614.82 595.26 L617.31 595.19 L619.31 595.14 L621.00 595.09 L623.60 595.03 L626.30 594.97 L627.57 594.94 L629.50 594.90 L631.42 594.86 L635.29 594.78 L639.21 594.69 L643.37 594.60 L647.70 594.48 L649.05 594.44 L657.29 594.15 L660.73 594.01 L668.02 593.69 L674.99 593.36 L683.82 592.93 L691.91 592.57 L700.18 592.27 L706.54 592.10 L712.94 591.97 L727.12 591.79 L733.67 591.74 L743.17 591.69 L749.67 591.66 L761.74 591.60 L783.10 591.48 L814.73 591.21 L908.68 590.17 L908.68 590.17" stroke="#DF536B" stroke-width="0.9" fill="none"/><rect x="349.2" y="461.2" width="581.00" height="266.90" stroke="#111" stroke-width="0.8" fill="none"/><path d="M370.72 728.1v6M460.55 728.1v6M550.38 728.1v6M640.22 728.1v6M730.05 728.1v6M819.88 728.1v6M909.71 728.1v6M349.2 663.29h-6M349.2 596.94h-6M349.2 530.58h-6M349.2 464.22h-6" stroke="#111" stroke-width="0.8"/><g style="font-family:'Liberation Sans',sans-serif"><text x="370.72" y="749.30" font-size="9.79" text-anchor="middle" fill="#000">0.000</text><text x="460.55" y="749.30" font-size="9.79" text-anchor="middle" fill="#000">0.002</text><text x="550.38" y="749.30" font-size="9.79" text-anchor="middle" fill="#000">0.004</text><text x="640.22" y="749.30" font-size="9.79" text-anchor="middle" fill="#000">0.006</text><text x="730.05" y="749.30" font-size="9.79" text-anchor="middle" fill="#000">0.008</text><text x="819.88" y="749.30" font-size="9.79" text-anchor="middle" fill="#000">0.010</text><text x="909.71" y="749.30" font-size="9.79" text-anchor="middle" fill="#000">0.012</text><text x="334.80" y="663.29" font-size="9.79" text-anchor="middle" fill="#000" transform="rotate(-90 334.80 663.29)">-2</text><text x="334.80" y="596.94" font-size="9.79" text-anchor="middle" fill="#000" transform="rotate(-90 334.80 596.94)">0</text><text x="334.80" y="530.58" font-size="9.79" text-anchor="middle" fill="#000" transform="rotate(-90 334.80 530.58)">2</text><text x="334.80" y="464.22" font-size="9.79" text-anchor="middle" fill="#000" transform="rotate(-90 334.80 464.22)">4</text><text x="639.70" y="456.00" font-size="9.79" text-anchor="middle" fill="#000">Residuals vs Leverage</text><text x="639.70" y="772.80" font-size="9.79" text-anchor="middle" fill="#000">Leverage</text><text x="639.70" y="784.50" font-size="9.79" text-anchor="middle" fill="#000">lm(y ~ x1 + x2)</text><text x="311.30" y="594.65" font-size="9.79" text-anchor="middle" fill="#000" transform="rotate(-90 311.30 594.65)">Standardized residuals</text><path d="M358.7 719.35H379.8" stroke="#DF536B" stroke-width="0.9" stroke-dasharray="3.9 2.9"/><text x="389.20" y="722.90" font-size="9.79" text-anchor="start" fill="#000">Cook's distance</text><text x="737.97" y="680.43" font-size="7.34" text-anchor="end" fill="#000">439</text><text x="594.59" y="501.42" font-size="7.34" text-anchor="start" fill="#000">867</text><text x="663.83" y="515.50" font-size="7.34" text-anchor="end" fill="#000">265</text></g></svg>
<svg class="a" style="left:303.4px;top:811.3px" width="114.2" height="91.5" viewBox="0 0 611 489" preserveAspectRatio="none" fill="none"><rect width="611" height="489" fill="#fff"/><path d="M48.175 241.9H586.325" stroke="#bebebe" stroke-width="0.94" stroke-dasharray="0.94 1.88"/><path d="M240.3 281.5a2.20 2.20 0 1 0 -4.41 0a2.20 2.20 0 1 0 4.41 0M266.2 255.7a2.20 2.20 0 1 0 -4.41 0a2.20 2.20 0 1 0 4.41 0M410.3 279.4a2.20 2.20 0 1 0 -4.41 0a2.20 2.20 0 1 0 4.41 0M305.7 211.5a2.20 2.20 0 1 0 -4.41 0a2.20 2.20 0 1 0 4.41 0M309.6 187.4a2.20 2.20 0 1 0 -4.41 0a2.20 2.20 0 1 0 4.41 0M442.2 135.0a2.20 2.20 0 1 0 -4.41 0a2.20 2.20 0 1 0 4.41 0M334.4 222.6a2.20 2.20 0 1 0 -4.41 0a2.20 2.20 0 1 0 4.41 0M179.3 285.6a2.20 2.20 0 1 0 -4.41 0a2.20 2.20 0 1 0 4.41 0M223.7 192.2a2.20 2.20 0 1 0 -4.41 0a2.20 2.20 0 1 0 4.41 0M252.1 198.3a2.20 2.20 0 1 0 -4.41 0a2.20 2.20 0 1 0 4.41 0M412.5 251.4a2.20 2.20 0 1 0 -4.41 0a2.20 2.20 0 1 0 4.41 0M318.8 314.9a2.20 2.20 0 1 0 -4.41 0a2.20 2.20 0 1 0 4.41 0M335.8 204.4a2.20 2.20 0 1 0 -4.41 0a2.20 2.20 0 1 0 4.41 0M312.9 187.6a2.20 2.20 0 1 0 -4.41 0a2.20 2.20 0 1 0 4.41 0M275.1 259.7a2.20 2.20 0 1 0 -4.41 0a2.20 2.20 0 1 0 4.41 0M430.4 209.6a2.20 2.20 0 1 0 -4.41 0a2.20 2.20 0 1 0 4.41 0M350.0 254.8a2.20 2.20 0 1 0 -4.41 0a2.20 2.20 0 1 0 4.41 0M130.6 213.3a2.20 2.20 0 1 0 -4.41 0a2.20 2.20 0 1 0 4.41 0M348.7 244.7a2.20 2.20 0 1 0 -4.41 0a2.20 2.20 0 1 0 4.41 0M240.9 257.6a2.20 2.20 0 1 0 -4.41 0a2.20 2.20 0 1 0 4.41 0M234.2 241.6a2.20 2.20 0 1 0 -4.41 0a2.20 2.20 0 1 0 4.41 0M279.4 255.8a2.20 2.20 0 1 0 -4.41 0a2.20 2.20 0 1 0 4.41 0M237.5 275.3a2.20 2.20 0 1 0 -4.41 0a2.20 2.20 0 1 0 4.41 0M228.3 257.8a2.20 2.20 0 1 0 -4.41 0a2.20 2.20 0 1 0 4.41 0M233.1 242.3a2.20 2.20 0 1 0 -4.41 0a2.20 2.20 0 1 0 4.41 0M153.5 235.4a2.20 2.20 0 1 0 -4.41 0a2.20 2.20 0 1 0 4.41 0M374.3 166.4a2.20 2.20 0 1 0 -4.41 0a2.20 2.20 0 1 0 4.41 0M315.0 307.1a2.20 2.20 0 1 0 -4.41 0a2.20 2.20 0 1 0 4.41 0M204.4 254.2a2.20 2.20 0 1 0 -4.41 0a2.20 2.20 0 1 0 4.41 0M409.8 208.9a2.20 2.20 0 1 0 -4.41 0a2.20 2.20 0 1 0 4.41 0M336.8 156.0a2.20 2.20 0 1 0 -4.41 0a2.20 2.20 0 1 0 4.41 0M278.9 222.4a2.20 2.20 0 1 0 -4.41 0a2.20 2.20 0 1 0 4.41 0M375.2 240.4a2.20 2.20 0 1 0 -4.41 0a2.20 2.20 0 1 0 4.41 0M358.6 253.0a2.20 2.20 0 1 0 -4.41 0a2.20 2.20 0 1 0 4.41 0M349.1 217.8a2.20 2.20 0 1 0 -4.41 0a2.20 2.20 0 1 0 4.41 0M364.6 193.2a2.20 2.20 0 1 0 -4.41 0a2.20 2.20 0 1 0 4.41 0M348.7 249.6a2.20 2.20 0 1 0 -4.41 0a2.20 2.20 0 1 0 4.41 0M313.2 236.0a2.20 2.20 0 1 0 -4.41 0a2.20 2.20 0 1 0 4.41 0M293.9 234.2a2.20 2.20 0 1 0 -4.41 0a2.20 2.20 0 1 0 4.41 0M279.0 208.8a2.20 2.20 0 1 0 -4.41 0a2.20 2.20 0 1 0 4.41 0M240.9 189.9a2.20 2.20 0 1 0 -4.41 0a2.20 2.20 0 1 0 4.41 0M269.3 227.5a2.20 2.20 0 1 0 -4.41 0a2.20 2.20 0 1 0 4.41 0M195.0 248.7a2.20 2.20 0 1 0 -4.41 0a2.20 2.20 0 1 0 4.41 0M484.8 169.7a2.20 2.20 0 1 0 -4.41 0a2.20 2.20 0 1 0 4.41 0M414.0 232.3a2.20 2.20 0 1 0 -4.41 0a2.20 2.20 0 1 0 4.41 0M226.0 170.7a2.20 2.20 0 1 0 -4.41 0a2.20 2.20 0 1 0 4.41 0M280.1 247.3a2.20 2.20 0 1 0 -4.41 0a2.20 2.20 0 1 0 4.41 0M249.5 212.2a2.20 2.20 0 1 0 -4.41 0a2.20 2.20 0 1 0 4.41 0M343.5 312.2a2.20 2.20 0 1 0 -4.41 0a2.20 2.20 0 1 0 4.41 0M291.9 247.4a2.20 2.20 0 1 0 -4.41 0a2.20 2.20 0 1 0 4.41 0M323.6 242.5a2.20 2.20 0 1 0 -4.41 0a2.20 2.20 0 1 0 4.41 0M280.4 276.7a2.20 2.20 0 1 0 -4.41 0a2.20 2.20 0 1 0 4.41 0M314.7 293.8a2.20 2.20 0 1 0 -4.41 0a2.20 2.20 0 1 0 4.41 0M395.6 190.8a2.20 2.20 0 1 0 -4.41 0a2.20 2.20 0 1 0 4.41 0M298.8 200.2a2.20 2.20 0 1 0 -4.41 0a2.20 2.20 0 1 0 4.41 0M406.0 298.5a2.20 2.20 0 1 0 -4.41 0a2.20 2.20 0 1 0 4.41 0M181.6 226.4a2.20 2.20 0 1 0 -4.41 0a2.20 2.20 0 1 0 4.41 0M358.2 295.0a2.20 2.20 0 1 0 -4.41 0a2.20 2.20 0 1 0 4.41 0M320.4 293.2a2.20 2.20 0 1 0 -4.41 0a2.20 2.20 0 1 0 4.41 0M324.0 216.6a2.20 2.20 0 1 0 -4.41 0a2.20 2.20 0 1 0 4.41 0M314.1 272.1a2.20 2.20 0 1 0 -4.41 0a2.20 2.20 0 1 0 4.41 0M273.6 196.9a2.20 2.20 0 1 0 -4.41 0a2.20 2.20 0 1 0 4.41 0M277.5 241.4a2.20 2.20 0 1 0 -4.41 0a2.20 2.20 0 1 0 4.41 0M231.5 220.3a2.20 2.20 0 1 0 -4.41 0a2.20 2.20 0 1 0 4.41 0M199.6 268.6a2.20 2.20 0 1 0 -4.41 0a2.20 2.20 0 1 0 4.41 0M303.6 294.3a2.20 2.20 0 1 0 -4.41 0a2.20 2.20 0 1 0 4.41 0M328.2 195.7a2.20 2.20 0 1 0 -4.41 0a2.20 2.20 0 1 0 4.41 0M294.2 229.2a2.20 2.20 0 1 0 -4.41 0a2.20 2.20 0 1 0 4.41 0M387.1 252.2a2.20 2.20 0 1 0 -4.41 0a2.20 2.20 0 1 0 4.41 0M482.3 234.6a2.20 2.20 0 1 0 -4.41 0a2.20 2.20 0 1 0 4.41 0M244.5 177.7a2.20 2.20 0 1 0 -4.41 0a2.20 2.20 0 1 0 4.41 0M130.8 283.7a2.20 2.20 0 1 0 -4.41 0a2.20 2.20 0 1 0 4.41 0M384.7 275.6a2.20 2.20 0 1 0 -4.41 0a2.20 2.20 0 1 0 4.41 0M238.3 273.2a2.20 2.20 0 1 0 -4.41 0a2.20 2.20 0 1 0 4.41 0M251.0 320.8a2.20 2.20 0 1 0 -4.41 0a2.20 2.20 0 1 0 4.41 0M393.0 200.6a2.20 2.20 0 1 0 -4.41 0a2.20 2.20 0 1 0 4.41 0M277.5 233.4a2.20 2.20 0 1 0 -4.41 0a2.20 2.20 0 1 0 4.41 0M196.9 234.8a2.20 2.20 0 1 0 -4.41 0a2.20 2.20 0 1 0 4.41 0M333.3 245.4a2.20 2.20 0 1 0 -4.41 0a2.20 2.20 0 1 0 4.41 0M269.6 264.8a2.20 2.20 0 1 0 -4.41 0a2.20 2.20 0 1 0 4.41 0M285.6 280.0a2.20 2.20 0 1 0 -4.41 0a2.20 2.20 0 1 0 4.41 0M338.6 200.5a2.20 2.20 0 1 0 -4.41 0a2.20 2.20 0 1 0 4.41 0M279.1 312.5a2.20 2.20 0 1 0 -4.41 0a2.20 2.20 0 1 0 4.41 0M335.1 217.1a2.20 2.20 0 1 0 -4.41 0a2.20 2.20 0 1 0 4.41 0M280.3 280.5a2.20 2.20 0 1 0 -4.41 0a2.20 2.20 0 1 0 4.41 0M332.0 227.9a2.20 2.20 0 1 0 -4.41 0a2.20 2.20 0 1 0 4.41 0M383.4 274.0a2.20 2.20 0 1 0 -4.41 0a2.20 2.20 0 1 0 4.41 0M354.8 267.9a2.20 2.20 0 1 0 -4.41 0a2.20 2.20 0 1 0 4.41 0M280.6 158.2a2.20 2.20 0 1 0 -4.41 0a2.20 2.20 0 1 0 4.41 0M384.2 205.6a2.20 2.20 0 1 0 -4.41 0a2.20 2.20 0 1 0 4.41 0M365.0 340.9a2.20 2.20 0 1 0 -4.41 0a2.20 2.20 0 1 0 4.41 0M335.3 233.3a2.20 2.20 0 1 0 -4.41 0a2.20 2.20 0 1 0 4.41 0M301.9 261.2a2.20 2.20 0 1 0 -4.41 0a2.20 2.20 0 1 0 4.41 0M229.4 296.3a2.20 2.20 0 1 0 -4.41 0a2.20 2.20 0 1 0 4.41 0M401.1 227.1a2.20 2.20 0 1 0 -4.41 0a2.20 2.20 0 1 0 4.41 0M261.2 238.3a2.20 2.20 0 1 0 -4.41 0a2.20 2.20 0 1 0 4.41 0M494.5 253.5a2.20 2.20 0 1 0 -4.41 0a2.20 2.20 0 1 0 4.41 0M419.2 142.1a2.20 2.20 0 1 0 -4.41 0a2.20 2.20 0 1 0 4.41 0M281.4 350.9a2.20 2.20 0 1 0 -4.41 0a2.20 2.20 0 1 0 4.41 0M199.0 202.4a2.20 2.20 0 1 0 -4.41 0a2.20 2.20 0 1 0 4.41 0M247.7 258.3a2.20 2.20 0 1 0 -4.41 0a2.20 2.20 0 1 0 4.41 0M314.0 208.8a2.20 2.20 0 1 0 -4.41 0a2.20 2.20 0 1 0 4.41 0M276.5 264.0a2.20 2.20 0 1 0 -4.41 0a2.20 2.20 0 1 0 4.41 0M290.7 273.4a2.20 2.20 0 1 0 -4.41 0a2.20 2.20 0 1 0 4.41 0M230.4 327.7a2.20 2.20 0 1 0 -4.41 0a2.20 2.20 0 1 0 4.41 0M304.9 253.0a2.20 2.20 0 1 0 -4.41 0a2.20 2.20 0 1 0 4.41 0M222.7 123.1a2.20 2.20 0 1 0 -4.41 0a2.20 2.20 0 1 0 4.41 0M153.0 197.5a2.20 2.20 0 1 0 -4.41 0a2.20 2.20 0 1 0 4.41 0M284.5 163.8a2.20 2.20 0 1 0 -4.41 0a2.20 2.20 0 1 0 4.41 0M387.4 196.6a2.20 2.20 0 1 0 -4.41 0a2.20 2.20 0 1 0 4.41 0M262.3 189.2a2.20 2.20 0 1 0 -4.41 0a2.20 2.20 0 1 0 4.41 0M339.3 195.7a2.20 2.20 0 1 0 -4.41 0a2.20 2.20 0 1 0 4.41 0M157.3 222.2a2.20 2.20 0 1 0 -4.41 0a2.20 2.20 0 1 0 4.41 0M294.7 270.0a2.20 2.20 0 1 0 -4.41 0a2.20 2.20 0 1 0 4.41 0M342.1 266.1a2.20 2.20 0 1 0 -4.41 0a2.20 2.20 0 1 0 4.41 0M312.1 316.9a2.20 2.20 0 1 0 -4.41 0a2.20 2.20 0 1 0 4.41 0M318.9 242.9a2.20 2.20 0 1 0 -4.41 0a2.20 2.20 0 1 0 4.41 0M228.2 198.2a2.20 2.20 0 1 0 -4.41 0a2.20 2.20 0 1 0 4.41 0M239.9 195.4a2.20 2.20 0 1 0 -4.41 0a2.20 2.20 0 1 0 4.41 0M231.2 241.6a2.20 2.20 0 1 0 -4.41 0a2.20 2.20 0 1 0 4.41 0M326.8 269.7a2.20 2.20 0 1 0 -4.41 0a2.20 2.20 0 1 0 4.41 0M230.0 86.6a2.20 2.20 0 1 0 -4.41 0a2.20 2.20 0 1 0 4.41 0M250.5 206.7a2.20 2.20 0 1 0 -4.41 0a2.20 2.20 0 1 0 4.41 0M267.2 172.9a2.20 2.20 0 1 0 -4.41 0a2.20 2.20 0 1 0 4.41 0M463.0 254.5a2.20 2.20 0 1 0 -4.41 0a2.20 2.20 0 1 0 4.41 0M227.3 243.4a2.20 2.20 0 1 0 -4.41 0a2.20 2.20 0 1 0 4.41 0M332.9 221.0a2.20 2.20 0 1 0 -4.41 0a2.20 2.20 0 1 0 4.41 0M306.7 160.9a2.20 2.20 0 1 0 -4.41 0a2.20 2.20 0 1 0 4.41 0M219.4 259.2a2.20 2.20 0 1 0 -4.41 0a2.20 2.20 0 1 0 4.41 0M311.6 202.7a2.20 2.20 0 1 0 -4.41 0a2.20 2.20 0 1 0 4.41 0M401.8 337.3a2.20 2.20 0 1 0 -4.41 0a2.20 2.20 0 1 0 4.41 0M330.8 264.5a2.20 2.20 0 1 0 -4.41 0a2.20 2.20 0 1 0 4.41 0M287.8 302.4a2.20 2.20 0 1 0 -4.41 0a2.20 2.20 0 1 0 4.41 0M251.0 187.8a2.20 2.20 0 1 0 -4.41 0a2.20 2.20 0 1 0 4.41 0M141.6 256.2a2.20 2.20 0 1 0 -4.41 0a2.20 2.20 0 1 0 4.41 0M393.0 257.7a2.20 2.20 0 1 0 -4.41 0a2.20 2.20 0 1 0 4.41 0M180.8 179.8a2.20 2.20 0 1 0 -4.41 0a2.20 2.20 0 1 0 4.41 0M371.9 187.3a2.20 2.20 0 1 0 -4.41 0a2.20 2.20 0 1 0 4.41 0M472.2 281.7a2.20 2.20 0 1 0 -4.41 0a2.20 2.20 0 1 0 4.41 0M184.0 225.3a2.20 2.20 0 1 0 -4.41 0a2.20 2.20 0 1 0 4.41 0M364.3 299.9a2.20 2.20 0 1 0 -4.41 0a2.20 2.20 0 1 0 4.41 0M265.1 264.1a2.20 2.20 0 1 0 -4.41 0a2.20 2.20 0 1 0 4.41 0M167.0 167.7a2.20 2.20 0 1 0 -4.41 0a2.20 2.20 0 1 0 4.41 0M159.0 174.2a2.20 2.20 0 1 0 -4.41 0a2.20 2.20 0 1 0 4.41 0M156.2 191.3a2.20 2.20 0 1 0 -4.41 0a2.20 2.20 0 1 0 4.41 0M240.2 269.1a2.20 2.20 0 1 0 -4.41 0a2.20 2.20 0 1 0 4.41 0M172.8 335.6a2.20 2.20 0 1 0 -4.41 0a2.20 2.20 0 1 0 4.41 0M350.1 296.0a2.20 2.20 0 1 0 -4.41 0a2.20 2.20 0 1 0 4.41 0M473.9 190.6a2.20 2.20 0 1 0 -4.41 0a2.20 2.20 0 1 0 4.41 0M204.5 260.3a2.20 2.20 0 1 0 -4.41 0a2.20 2.20 0 1 0 4.41 0M355.6 343.0a2.20 2.20 0 1 0 -4.41 0a2.20 2.20 0 1 0 4.41 0M380.6 250.3a2.20 2.20 0 1 0 -4.41 0a2.20 2.20 0 1 0 4.41 0M334.3 173.8a2.20 2.20 0 1 0 -4.41 0a2.20 2.20 0 1 0 4.41 0M204.3 212.2a2.20 2.20 0 1 0 -4.41 0a2.20 2.20 0 1 0 4.41 0M284.4 281.1a2.20 2.20 0 1 0 -4.41 0a2.20 2.20 0 1 0 4.41 0M268.7 316.2a2.20 2.20 0 1 0 -4.41 0a2.20 2.20 0 1 0 4.41 0M343.0 279.9a2.20 2.20 0 1 0 -4.41 0a2.20 2.20 0 1 0 4.41 0M282.9 242.6a2.20 2.20 0 1 0 -4.41 0a2.20 2.20 0 1 0 4.41 0M367.0 195.1a2.20 2.20 0 1 0 -4.41 0a2.20 2.20 0 1 0 4.41 0M265.3 335.9a2.20 2.20 0 1 0 -4.41 0a2.20 2.20 0 1 0 4.41 0M403.7 191.6a2.20 2.20 0 1 0 -4.41 0a2.20 2.20 0 1 0 4.41 0M199.5 242.8a2.20 2.20 0 1 0 -4.41 0a2.20 2.20 0 1 0 4.41 0M203.5 218.4a2.20 2.20 0 1 0 -4.41 0a2.20 2.20 0 1 0 4.41 0M568.6 313.3a2.20 2.20 0 1 0 -4.41 0a2.20 2.20 0 1 0 4.41 0M269.7 275.5a2.20 2.20 0 1 0 -4.41 0a2.20 2.20 0 1 0 4.41 0M344.0 264.7a2.20 2.20 0 1 0 -4.41 0a2.20 2.20 0 1 0 4.41 0M331.8 187.8a2.20 2.20 0 1 0 -4.41 0a2.20 2.20 0 1 0 4.41 0M280.8 195.7a2.20 2.20 0 1 0 -4.41 0a2.20 2.20 0 1 0 4.41 0M351.2 220.5a2.20 2.20 0 1 0 -4.41 0a2.20 2.20 0 1 0 4.41 0M326.5 163.2a2.20 2.20 0 1 0 -4.41 0a2.20 2.20 0 1 0 4.41 0M267.8 265.7a2.20 2.20 0 1 0 -4.41 0a2.20 2.20 0 1 0 4.41 0M302.6 192.6a2.20 2.20 0 1 0 -4.41 0a2.20 2.20 0 1 0 4.41 0M283.7 242.3a2.20 2.20 0 1 0 -4.41 0a2.20 2.20 0 1 0 4.41 0M467.6 267.7a2.20 2.20 0 1 0 -4.41 0a2.20 2.20 0 1 0 4.41 0M253.1 200.8a2.20 2.20 0 1 0 -4.41 0a2.20 2.20 0 1 0 4.41 0M192.7 176.4a2.20 2.20 0 1 0 -4.41 0a2.20 2.20 0 1 0 4.41 0M295.3 198.6a2.20 2.20 0 1 0 -4.41 0a2.20 2.20 0 1 0 4.41 0M338.6 267.0a2.20 2.20 0 1 0 -4.41 0a2.20 2.20 0 1 0 4.41 0M315.5 261.2a2.20 2.20 0 1 0 -4.41 0a2.20 2.20 0 1 0 4.41 0M274.7 178.0a2.20 2.20 0 1 0 -4.41 0a2.20 2.20 0 1 0 4.41 0M233.0 229.8a2.20 2.20 0 1 0 -4.41 0a2.20 2.20 0 1 0 4.41 0M407.7 199.0a2.20 2.20 0 1 0 -4.41 0a2.20 2.20 0 1 0 4.41 0M251.0 257.0a2.20 2.20 0 1 0 -4.41 0a2.20 2.20 0 1 0 4.41 0M228.4 183.3a2.20 2.20 0 1 0 -4.41 0a2.20 2.20 0 1 0 4.41 0M289.4 282.4a2.20 2.20 0 1 0 -4.41 0a2.20 2.20 0 1 0 4.41 0M264.1 210.2a2.20 2.20 0 1 0 -4.41 0a2.20 2.20 0 1 0 4.41 0M403.0 279.6a2.20 2.20 0 1 0 -4.41 0a2.20 2.20 0 1 0 4.41 0M316.5 361.3a2.20 2.20 0 1 0 -4.41 0a2.20 2.20 0 1 0 4.41 0M350.3 303.4a2.20 2.20 0 1 0 -4.41 0a2.20 2.20 0 1 0 4.41 0M269.5 237.7a2.20 2.20 0 1 0 -4.41 0a2.20 2.20 0 1 0 4.41 0M323.8 199.4a2.20 2.20 0 1 0 -4.41 0a2.20 2.20 0 1 0 4.41 0M259.8 325.7a2.20 2.20 0 1 0 -4.41 0a2.20 2.20 0 1 0 4.41 0M314.1 302.6a2.20 2.20 0 1 0 -4.41 0a2.20 2.20 0 1 0 4.41 0M245.3 161.1a2.20 2.20 0 1 0 -4.41 0a2.20 2.20 0 1 0 4.41 0M208.6 267.9a2.20 2.20 0 1 0 -4.41 0a2.20 2.20 0 1 0 4.41 0M471.7 213.1a2.20 2.20 0 1 0 -4.41 0a2.20 2.20 0 1 0 4.41 0M355.5 266.3a2.20 2.20 0 1 0 -4.41 0a2.20 2.20 0 1 0 4.41 0M202.6 260.1a2.20 2.20 0 1 0 -4.41 0a2.20 2.20 0 1 0 4.41 0M246.3 238.9a2.20 2.20 0 1 0 -4.41 0a2.20 2.20 0 1 0 4.41 0M188.7 243.0a2.20 2.20 0 1 0 -4.41 0a2.20 2.20 0 1 0 4.41 0M489.6 246.3a2.20 2.20 0 1 0 -4.41 0a2.20 2.20 0 1 0 4.41 0M414.0 261.7a2.20 2.20 0 1 0 -4.41 0a2.20 2.20 0 1 0 4.41 0M290.1 390.6a2.20 2.20 0 1 0 -4.41 0a2.20 2.20 0 1 0 4.41 0M323.2 148.2a2.20 2.20 0 1 0 -4.41 0a2.20 2.20 0 1 0 4.41 0M252.6 155.3a2.20 2.20 0 1 0 -4.41 0a2.20 2.20 0 1 0 4.41 0M265.2 296.6a2.20 2.20 0 1 0 -4.41 0a2.20 2.20 0 1 0 4.41 0M218.7 250.3a2.20 2.20 0 1 0 -4.41 0a2.20 2.20 0 1 0 4.41 0M260.2 178.1a2.20 2.20 0 1 0 -4.41 0a2.20 2.20 0 1 0 4.41 0M434.9 189.4a2.20 2.20 0 1 0 -4.41 0a2.20 2.20 0 1 0 4.41 0M286.1 179.5a2.20 2.20 0 1 0 -4.41 0a2.20 2.20 0 1 0 4.41 0M304.6 292.6a2.20 2.20 0 1 0 -4.41 0a2.20 2.20 0 1 0 4.41 0M326.2 117.7a2.20 2.20 0 1 0 -4.41 0a2.20 2.20 0 1 0 4.41 0M384.6 291.5a2.20 2.20 0 1 0 -4.41 0a2.20 2.20 0 1 0 4.41 0M241.7 205.2a2.20 2.20 0 1 0 -4.41 0a2.20 2.20 0 1 0 4.41 0M221.0 237.9a2.20 2.20 0 1 0 -4.41 0a2.20 2.20 0 1 0 4.41 0M417.8 254.9a2.20 2.20 0 1 0 -4.41 0a2.20 2.20 0 1 0 4.41 0M247.1 259.6a2.20 2.20 0 1 0 -4.41 0a2.20 2.20 0 1 0 4.41 0M247.1 292.2a2.20 2.20 0 1 0 -4.41 0a2.20 2.20 0 1 0 4.41 0M202.7 167.4a2.20 2.20 0 1 0 -4.41 0a2.20 2.20 0 1 0 4.41 0M188.1 240.2a2.20 2.20 0 1 0 -4.41 0a2.20 2.20 0 1 0 4.41 0M243.6 229.9a2.20 2.20 0 1 0 -4.41 0a2.20 2.20 0 1 0 4.41 0M354.7 230.5a2.20 2.20 0 1 0 -4.41 0a2.20 2.20 0 1 0 4.41 0M402.4 258.2a2.20 2.20 0 1 0 -4.41 0a2.20 2.20 0 1 0 4.41 0M337.8 292.5a2.20 2.20 0 1 0 -4.41 0a2.20 2.20 0 1 0 4.41 0M290.6 232.7a2.20 2.20 0 1 0 -4.41 0a2.20 2.20 0 1 0 4.41 0M284.5 340.4a2.20 2.20 0 1 0 -4.41 0a2.20 2.20 0 1 0 4.41 0M229.5 310.7a2.20 2.20 0 1 0 -4.41 0a2.20 2.20 0 1 0 4.41 0M234.7 294.9a2.20 2.20 0 1 0 -4.41 0a2.20 2.20 0 1 0 4.41 0M385.3 292.8a2.20 2.20 0 1 0 -4.41 0a2.20 2.20 0 1 0 4.41 0M204.7 238.1a2.20 2.20 0 1 0 -4.41 0a2.20 2.20 0 1 0 4.41 0M469.0 160.6a2.20 2.20 0 1 0 -4.41 0a2.20 2.20 0 1 0 4.41 0M307.1 316.6a2.20 2.20 0 1 0 -4.41 0a2.20 2.20 0 1 0 4.41 0M315.6 220.2a2.20 2.20 0 1 0 -4.41 0a2.20 2.20 0 1 0 4.41 0M246.2 201.2a2.20 2.20 0 1 0 -4.41 0a2.20 2.20 0 1 0 4.41 0M246.0 290.3a2.20 2.20 0 1 0 -4.41 0a2.20 2.20 0 1 0 4.41 0M192.1 247.9a2.20 2.20 0 1 0 -4.41 0a2.20 2.20 0 1 0 4.41 0M303.1 204.5a2.20 2.20 0 1 0 -4.41 0a2.20 2.20 0 1 0 4.41 0M322.6 251.8a2.20 2.20 0 1 0 -4.41 0a2.20 2.20 0 1 0 4.41 0M305.8 249.5a2.20 2.20 0 1 0 -4.41 0a2.20 2.20 0 1 0 4.41 0M255.9 231.2a2.20 2.20 0 1 0 -4.41 0a2.20 2.20 0 1 0 4.41 0M226.1 245.9a2.20 2.20 0 1 0 -4.41 0a2.20 2.20 0 1 0 4.41 0M265.4 270.6a2.20 2.20 0 1 0 -4.41 0a2.20 2.20 0 1 0 4.41 0M402.2 242.5a2.20 2.20 0 1 0 -4.41 0a2.20 2.20 0 1 0 4.41 0M227.4 156.3a2.20 2.20 0 1 0 -4.41 0a2.20 2.20 0 1 0 4.41 0M302.4 202.0a2.20 2.20 0 1 0 -4.41 0a2.20 2.20 0 1 0 4.41 0M467.7 282.1a2.20 2.20 0 1 0 -4.41 0a2.20 2.20 0 1 0 4.41 0M288.2 301.7a2.20 2.20 0 1 0 -4.41 0a2.20 2.20 0 1 0 4.41 0M201.7 264.2a2.20 2.20 0 1 0 -4.41 0a2.20 2.20 0 1 0 4.41 0M237.7 178.8a2.20 2.20 0 1 0 -4.41 0a2.20 2.20 0 1 0 4.41 0M329.8 225.4a2.20 2.20 0 1 0 -4.41 0a2.20 2.20 0 1 0 4.41 0M289.9 278.8a2.20 2.20 0 1 0 -4.41 0a2.20 2.20 0 1 0 4.41 0M274.4 203.0a2.20 2.20 0 1 0 -4.41 0a2.20 2.20 0 1 0 4.41 0M271.0 249.1a2.20 2.20 0 1 0 -4.41 0a2.20 2.20 0 1 0 4.41 0M317.6 296.7a2.20 2.20 0 1 0 -4.41 0a2.20 2.20 0 1 0 4.41 0M420.9 214.4a2.20 2.20 0 1 0 -4.41 0a2.20 2.20 0 1 0 4.41 0M281.4 167.5a2.20 2.20 0 1 0 -4.41 0a2.20 2.20 0 1 0 4.41 0M391.3 218.4a2.20 2.20 0 1 0 -4.41 0a2.20 2.20 0 1 0 4.41 0M343.6 230.1a2.20 2.20 0 1 0 -4.41 0a2.20 2.20 0 1 0 4.41 0M272.0 271.8a2.20 2.20 0 1 0 -4.41 0a2.20 2.20 0 1 0 4.41 0M196.1 220.8a2.20 2.20 0 1 0 -4.41 0a2.20 2.20 0 1 0 4.41 0M265.3 295.7a2.20 2.20 0 1 0 -4.41 0a2.20 2.20 0 1 0 4.41 0M275.1 324.4a2.20 2.20 0 1 0 -4.41 0a2.20 2.20 0 1 0 4.41 0M301.7 243.6a2.20 2.20 0 1 0 -4.41 0a2.20 2.20 0 1 0 4.41 0M388.5 238.2a2.20 2.20 0 1 0 -4.41 0a2.20 2.20 0 1 0 4.41 0M491.4 122.2a2.20 2.20 0 1 0 -4.41 0a2.20 2.20 0 1 0 4.41 0M404.1 294.0a2.20 2.20 0 1 0 -4.41 0a2.20 2.20 0 1 0 4.41 0M274.8 232.5a2.20 2.20 0 1 0 -4.41 0a2.20 2.20 0 1 0 4.41 0M174.6 209.6a2.20 2.20 0 1 0 -4.41 0a2.20 2.20 0 1 0 4.41 0M253.8 190.8a2.20 2.20 0 1 0 -4.41 0a2.20 2.20 0 1 0 4.41 0M296.6 241.0a2.20 2.20 0 1 0 -4.41 0a2.20 2.20 0 1 0 4.41 0M356.8 274.1a2.20 2.20 0 1 0 -4.41 0a2.20 2.20 0 1 0 4.41 0M369.1 241.5a2.20 2.20 0 1 0 -4.41 0a2.20 2.20 0 1 0 4.41 0M343.0 145.2a2.20 2.20 0 1 0 -4.41 0a2.20 2.20 0 1 0 4.41 0M167.8 220.4a2.20 2.20 0 1 0 -4.41 0a2.20 2.20 0 1 0 4.41 0M384.5 339.7a2.20 2.20 0 1 0 -4.41 0a2.20 2.20 0 1 0 4.41 0M282.6 176.5a2.20 2.20 0 1 0 -4.41 0a2.20 2.20 0 1 0 4.41 0M331.9 217.2a2.20 2.20 0 1 0 -4.41 0a2.20 2.20 0 1 0 4.41 0M303.5 243.0a2.20 2.20 0 1 0 -4.41 0a2.20 2.20 0 1 0 4.41 0M331.3 241.2a2.20 2.20 0 1 0 -4.41 0a2.20 2.20 0 1 0 4.41 0M282.8 247.0a2.20 2.20 0 1 0 -4.41 0a2.20 2.20 0 1 0 4.41 0M159.5 233.5a2.20 2.20 0 1 0 -4.41 0a2.20 2.20 0 1 0 4.41 0M375.1 265.7a2.20 2.20 0 1 0 -4.41 0a2.20 2.20 0 1 0 4.41 0M325.2 226.8a2.20 2.20 0 1 0 -4.41 0a2.20 2.20 0 1 0 4.41 0M278.2 287.4a2.20 2.20 0 1 0 -4.41 0a2.20 2.20 0 1 0 4.41 0M310.1 231.9a2.20 2.20 0 1 0 -4.41 0a2.20 2.20 0 1 0 4.41 0M296.6 186.7a2.20 2.20 0 1 0 -4.41 0a2.20 2.20 0 1 0 4.41 0M318.8 216.8a2.20 2.20 0 1 0 -4.41 0a2.20 2.20 0 1 0 4.41 0M415.3 185.7a2.20 2.20 0 1 0 -4.41 0a2.20 2.20 0 1 0 4.41 0M286.6 295.5a2.20 2.20 0 1 0 -4.41 0a2.20 2.20 0 1 0 4.41 0M314.8 238.9a2.20 2.20 0 1 0 -4.41 0a2.20 2.20 0 1 0 4.41 0M382.2 207.6a2.20 2.20 0 1 0 -4.41 0a2.20 2.20 0 1 0 4.41 0M400.9 292.1a2.20 2.20 0 1 0 -4.41 0a2.20 2.20 0 1 0 4.41 0M379.1 161.9a2.20 2.20 0 1 0 -4.41 0a2.20 2.20 0 1 0 4.41 0M249.8 292.9a2.20 2.20 0 1 0 -4.41 0a2.20 2.20 0 1 0 4.41 0M476.4 229.9a2.20 2.20 0 1 0 -4.41 0a2.20 2.20 0 1 0 4.41 0M294.0 233.2a2.20 2.20 0 1 0 -4.41 0a2.20 2.20 0 1 0 4.41 0M441.0 229.8a2.20 2.20 0 1 0 -4.41 0a2.20 2.20 0 1 0 4.41 0M206.4 257.3a2.20 2.20 0 1 0 -4.41 0a2.20 2.20 0 1 0 4.41 0M306.1 220.6a2.20 2.20 0 1 0 -4.41 0a2.20 2.20 0 1 0 4.41 0M414.8 289.5a2.20 2.20 0 1 0 -4.41 0a2.20 2.20 0 1 0 4.41 0M241.0 305.8a2.20 2.20 0 1 0 -4.41 0a2.20 2.20 0 1 0 4.41 0M255.2 277.1a2.20 2.20 0 1 0 -4.41 0a2.20 2.20 0 1 0 4.41 0M210.3 245.8a2.20 2.20 0 1 0 -4.41 0a2.20 2.20 0 1 0 4.41 0M219.8 184.7a2.20 2.20 0 1 0 -4.41 0a2.20 2.20 0 1 0 4.41 0M273.5 167.5a2.20 2.20 0 1 0 -4.41 0a2.20 2.20 0 1 0 4.41 0M313.3 224.1a2.20 2.20 0 1 0 -4.41 0a2.20 2.20 0 1 0 4.41 0M140.3 229.3a2.20 2.20 0 1 0 -4.41 0a2.20 2.20 0 1 0 4.41 0M323.6 253.7a2.20 2.20 0 1 0 -4.41 0a2.20 2.20 0 1 0 4.41 0M416.3 237.8a2.20 2.20 0 1 0 -4.41 0a2.20 2.20 0 1 0 4.41 0M456.1 303.0a2.20 2.20 0 1 0 -4.41 0a2.20 2.20 0 1 0 4.41 0M406.1 224.4a2.20 2.20 0 1 0 -4.41 0a2.20 2.20 0 1 0 4.41 0M339.8 263.4a2.20 2.20 0 1 0 -4.41 0a2.20 2.20 0 1 0 4.41 0M155.2 229.9a2.20 2.20 0 1 0 -4.41 0a2.20 2.20 0 1 0 4.41 0M256.8 260.7a2.20 2.20 0 1 0 -4.41 0a2.20 2.20 0 1 0 4.41 0M275.7 275.1a2.20 2.20 0 1 0 -4.41 0a2.20 2.20 0 1 0 4.41 0M369.2 251.8a2.20 2.20 0 1 0 -4.41 0a2.20 2.20 0 1 0 4.41 0M275.1 258.1a2.20 2.20 0 1 0 -4.41 0a2.20 2.20 0 1 0 4.41 0M205.0 193.3a2.20 2.20 0 1 0 -4.41 0a2.20 2.20 0 1 0 4.41 0M422.6 225.7a2.20 2.20 0 1 0 -4.41 0a2.20 2.20 0 1 0 4.41 0M376.4 218.8a2.20 2.20 0 1 0 -4.41 0a2.20 2.20 0 1 0 4.41 0M326.6 301.8a2.20 2.20 0 1 0 -4.41 0a2.20 2.20 0 1 0 4.41 0M398.6 166.4a2.20 2.20 0 1 0 -4.41 0a2.20 2.20 0 1 0 4.41 0M186.4 237.3a2.20 2.20 0 1 0 -4.41 0a2.20 2.20 0 1 0 4.41 0M360.8 282.1a2.20 2.20 0 1 0 -4.41 0a2.20 2.20 0 1 0 4.41 0M256.3 228.3a2.20 2.20 0 1 0 -4.41 0a2.20 2.20 0 1 0 4.41 0M343.3 196.8a2.20 2.20 0 1 0 -4.41 0a2.20 2.20 0 1 0 4.41 0M292.7 308.4a2.20 2.20 0 1 0 -4.41 0a2.20 2.20 0 1 0 4.41 0M332.9 156.8a2.20 2.20 0 1 0 -4.41 0a2.20 2.20 0 1 0 4.41 0M396.8 244.6a2.20 2.20 0 1 0 -4.41 0a2.20 2.20 0 1 0 4.41 0M302.3 188.0a2.20 2.20 0 1 0 -4.41 0a2.20 2.20 0 1 0 4.41 0M361.5 233.4a2.20 2.20 0 1 0 -4.41 0a2.20 2.20 0 1 0 4.41 0M191.9 259.9a2.20 2.20 0 1 0 -4.41 0a2.20 2.20 0 1 0 4.41 0M247.1 332.8a2.20 2.20 0 1 0 -4.41 0a2.20 2.20 0 1 0 4.41 0M430.6 291.5a2.20 2.20 0 1 0 -4.41 0a2.20 2.20 0 1 0 4.41 0M341.3 243.9a2.20 2.20 0 1 0 -4.41 0a2.20 2.20 0 1 0 4.41 0M116.7 205.8a2.20 2.20 0 1 0 -4.41 0a2.20 2.20 0 1 0 4.41 0M173.1 334.5a2.20 2.20 0 1 0 -4.41 0a2.20 2.20 0 1 0 4.41 0M301.8 178.0a2.20 2.20 0 1 0 -4.41 0a2.20 2.20 0 1 0 4.41 0M386.9 173.8a2.20 2.20 0 1 0 -4.41 0a2.20 2.20 0 1 0 4.41 0M308.7 299.0a2.20 2.20 0 1 0 -4.41 0a2.20 2.20 0 1 0 4.41 0M355.9 218.0a2.20 2.20 0 1 0 -4.41 0a2.20 2.20 0 1 0 4.41 0M362.4 287.4a2.20 2.20 0 1 0 -4.41 0a2.20 2.20 0 1 0 4.41 0M450.9 244.9a2.20 2.20 0 1 0 -4.41 0a2.20 2.20 0 1 0 4.41 0M321.4 198.7a2.20 2.20 0 1 0 -4.41 0a2.20 2.20 0 1 0 4.41 0M281.6 198.7a2.20 2.20 0 1 0 -4.41 0a2.20 2.20 0 1 0 4.41 0M140.8 285.8a2.20 2.20 0 1 0 -4.41 0a2.20 2.20 0 1 0 4.41 0M310.2 260.4a2.20 2.20 0 1 0 -4.41 0a2.20 2.20 0 1 0 4.41 0M247.9 289.9a2.20 2.20 0 1 0 -4.41 0a2.20 2.20 0 1 0 4.41 0M219.5 228.0a2.20 2.20 0 1 0 -4.41 0a2.20 2.20 0 1 0 4.41 0M283.5 317.3a2.20 2.20 0 1 0 -4.41 0a2.20 2.20 0 1 0 4.41 0M392.6 366.9a2.20 2.20 0 1 0 -4.41 0a2.20 2.20 0 1 0 4.41 0M152.6 178.0a2.20 2.20 0 1 0 -4.41 0a2.20 2.20 0 1 0 4.41 0M256.1 132.5a2.20 2.20 0 1 0 -4.41 0a2.20 2.20 0 1 0 4.41 0M318.4 264.4a2.20 2.20 0 1 0 -4.41 0a2.20 2.20 0 1 0 4.41 0M227.4 207.6a2.20 2.20 0 1 0 -4.41 0a2.20 2.20 0 1 0 4.41 0M308.3 239.4a2.20 2.20 0 1 0 -4.41 0a2.20 2.20 0 1 0 4.41 0M313.4 167.6a2.20 2.20 0 1 0 -4.41 0a2.20 2.20 0 1 0 4.41 0M285.9 214.1a2.20 2.20 0 1 0 -4.41 0a2.20 2.20 0 1 0 4.41 0M89.4 237.7a2.20 2.20 0 1 0 -4.41 0a2.20 2.20 0 1 0 4.41 0M503.1 321.0a2.20 2.20 0 1 0 -4.41 0a2.20 2.20 0 1 0 4.41 0M285.0 190.4a2.20 2.20 0 1 0 -4.41 0a2.20 2.20 0 1 0 4.41 0M360.7 257.8a2.20 2.20 0 1 0 -4.41 0a2.20 2.20 0 1 0 4.41 0M310.7 307.5a2.20 2.20 0 1 0 -4.41 0a2.20 2.20 0 1 0 4.41 0M398.3 250.4a2.20 2.20 0 1 0 -4.41 0a2.20 2.20 0 1 0 4.41 0M364.5 245.6a2.20 2.20 0 1 0 -4.41 0a2.20 2.20 0 1 0 4.41 0M272.8 190.3a2.20 2.20 0 1 0 -4.41 0a2.20 2.20 0 1 0 4.41 0M322.4 296.2a2.20 2.20 0 1 0 -4.41 0a2.20 2.20 0 1 0 4.41 0M230.2 272.0a2.20 2.20 0 1 0 -4.41 0a2.20 2.20 0 1 0 4.41 0M377.8 168.7a2.20 2.20 0 1 0 -4.41 0a2.20 2.20 0 1 0 4.41 0M265.3 177.9a2.20 2.20 0 1 0 -4.41 0a2.20 2.20 0 1 0 4.41 0M509.5 180.6a2.20 2.20 0 1 0 -4.41 0a2.20 2.20 0 1 0 4.41 0M162.9 166.0a2.20 2.20 0 1 0 -4.41 0a2.20 2.20 0 1 0 4.41 0M249.9 232.0a2.20 2.20 0 1 0 -4.41 0a2.20 2.20 0 1 0 4.41 0M364.6 267.4a2.20 2.20 0 1 0 -4.41 0a2.20 2.20 0 1 0 4.41 0M335.5 213.1a2.20 2.20 0 1 0 -4.41 0a2.20 2.20 0 1 0 4.41 0M241.6 191.3a2.20 2.20 0 1 0 -4.41 0a2.20 2.20 0 1 0 4.41 0M236.9 130.1a2.20 2.20 0 1 0 -4.41 0a2.20 2.20 0 1 0 4.41 0M309.7 335.9a2.20 2.20 0 1 0 -4.41 0a2.20 2.20 0 1 0 4.41 0M278.2 226.6a2.20 2.20 0 1 0 -4.41 0a2.20 2.20 0 1 0 4.41 0M173.8 217.2a2.20 2.20 0 1 0 -4.41 0a2.20 2.20 0 1 0 4.41 0M297.0 243.8a2.20 2.20 0 1 0 -4.41 0a2.20 2.20 0 1 0 4.41 0M294.4 314.2a2.20 2.20 0 1 0 -4.41 0a2.20 2.20 0 1 0 4.41 0M333.4 207.7a2.20 2.20 0 1 0 -4.41 0a2.20 2.20 0 1 0 4.41 0M209.5 281.8a2.20 2.20 0 1 0 -4.41 0a2.20 2.20 0 1 0 4.41 0M357.9 218.2a2.20 2.20 0 1 0 -4.41 0a2.20 2.20 0 1 0 4.41 0M395.4 192.7a2.20 2.20 0 1 0 -4.41 0a2.20 2.20 0 1 0 4.41 0M338.7 178.9a2.20 2.20 0 1 0 -4.41 0a2.20 2.20 0 1 0 4.41 0M220.3 321.3a2.20 2.20 0 1 0 -4.41 0a2.20 2.20 0 1 0 4.41 0M251.7 189.6a2.20 2.20 0 1 0 -4.41 0a2.20 2.20 0 1 0 4.41 0M336.0 278.2a2.20 2.20 0 1 0 -4.41 0a2.20 2.20 0 1 0 4.41 0M250.1 306.0a2.20 2.20 0 1 0 -4.41 0a2.20 2.20 0 1 0 4.41 0M105.6 182.4a2.20 2.20 0 1 0 -4.41 0a2.20 2.20 0 1 0 4.41 0M360.5 183.1a2.20 2.20 0 1 0 -4.41 0a2.20 2.20 0 1 0 4.41 0M231.5 255.7a2.20 2.20 0 1 0 -4.41 0a2.20 2.20 0 1 0 4.41 0M271.0 208.7a2.20 2.20 0 1 0 -4.41 0a2.20 2.20 0 1 0 4.41 0M440.9 281.2a2.20 2.20 0 1 0 -4.41 0a2.20 2.20 0 1 0 4.41 0M225.2 250.0a2.20 2.20 0 1 0 -4.41 0a2.20 2.20 0 1 0 4.41 0M369.4 244.2a2.20 2.20 0 1 0 -4.41 0a2.20 2.20 0 1 0 4.41 0M204.1 259.5a2.20 2.20 0 1 0 -4.41 0a2.20 2.20 0 1 0 4.41 0M287.6 209.2a2.20 2.20 0 1 0 -4.41 0a2.20 2.20 0 1 0 4.41 0M303.2 168.9a2.20 2.20 0 1 0 -4.41 0a2.20 2.20 0 1 0 4.41 0M210.0 267.5a2.20 2.20 0 1 0 -4.41 0a2.20 2.20 0 1 0 4.41 0M237.0 244.0a2.20 2.20 0 1 0 -4.41 0a2.20 2.20 0 1 0 4.41 0M314.4 164.8a2.20 2.20 0 1 0 -4.41 0a2.20 2.20 0 1 0 4.41 0M365.9 257.1a2.20 2.20 0 1 0 -4.41 0a2.20 2.20 0 1 0 4.41 0M158.9 371.1a2.20 2.20 0 1 0 -4.41 0a2.20 2.20 0 1 0 4.41 0M260.0 216.8a2.20 2.20 0 1 0 -4.41 0a2.20 2.20 0 1 0 4.41 0M366.8 283.1a2.20 2.20 0 1 0 -4.41 0a2.20 2.20 0 1 0 4.41 0M265.9 292.4a2.20 2.20 0 1 0 -4.41 0a2.20 2.20 0 1 0 4.41 0M316.3 172.6a2.20 2.20 0 1 0 -4.41 0a2.20 2.20 0 1 0 4.41 0M354.1 124.0a2.20 2.20 0 1 0 -4.41 0a2.20 2.20 0 1 0 4.41 0M328.2 291.9a2.20 2.20 0 1 0 -4.41 0a2.20 2.20 0 1 0 4.41 0M338.0 188.8a2.20 2.20 0 1 0 -4.41 0a2.20 2.20 0 1 0 4.41 0M269.4 244.6a2.20 2.20 0 1 0 -4.41 0a2.20 2.20 0 1 0 4.41 0M281.3 237.7a2.20 2.20 0 1 0 -4.41 0a2.20 2.20 0 1 0 4.41 0M70.3 188.6a2.20 2.20 0 1 0 -4.41 0a2.20 2.20 0 1 0 4.41 0M284.2 231.0a2.20 2.20 0 1 0 -4.41 0a2.20 2.20 0 1 0 4.41 0M331.4 281.3a2.20 2.20 0 1 0 -4.41 0a2.20 2.20 0 1 0 4.41 0M347.3 263.5a2.20 2.20 0 1 0 -4.41 0a2.20 2.20 0 1 0 4.41 0M248.1 209.6a2.20 2.20 0 1 0 -4.41 0a2.20 2.20 0 1 0 4.41 0M445.9 349.7a2.20 2.20 0 1 0 -4.41 0a2.20 2.20 0 1 0 4.41 0M336.1 189.7a2.20 2.20 0 1 0 -4.41 0a2.20 2.20 0 1 0 4.41 0M302.8 316.2a2.20 2.20 0 1 0 -4.41 0a2.20 2.20 0 1 0 4.41 0M396.9 236.7a2.20 2.20 0 1 0 -4.41 0a2.20 2.20 0 1 0 4.41 0M246.0 253.4a2.20 2.20 0 1 0 -4.41 0a2.20 2.20 0 1 0 4.41 0M263.1 180.7a2.20 2.20 0 1 0 -4.41 0a2.20 2.20 0 1 0 4.41 0M476.1 224.3a2.20 2.20 0 1 0 -4.41 0a2.20 2.20 0 1 0 4.41 0M314.7 238.4a2.20 2.20 0 1 0 -4.41 0a2.20 2.20 0 1 0 4.41 0M428.6 203.4a2.20 2.20 0 1 0 -4.41 0a2.20 2.20 0 1 0 4.41 0M194.1 286.8a2.20 2.20 0 1 0 -4.41 0a2.20 2.20 0 1 0 4.41 0M296.4 253.1a2.20 2.20 0 1 0 -4.41 0a2.20 2.20 0 1 0 4.41 0M325.4 183.5a2.20 2.20 0 1 0 -4.41 0a2.20 2.20 0 1 0 4.41 0M303.5 205.9a2.20 2.20 0 1 0 -4.41 0a2.20 2.20 0 1 0 4.41 0M228.6 307.1a2.20 2.20 0 1 0 -4.41 0a2.20 2.20 0 1 0 4.41 0M283.1 209.1a2.20 2.20 0 1 0 -4.41 0a2.20 2.20 0 1 0 4.41 0M214.1 311.3a2.20 2.20 0 1 0 -4.41 0a2.20 2.20 0 1 0 4.41 0M341.2 267.0a2.20 2.20 0 1 0 -4.41 0a2.20 2.20 0 1 0 4.41 0M394.0 181.2a2.20 2.20 0 1 0 -4.41 0a2.20 2.20 0 1 0 4.41 0M102.1 354.6a2.20 2.20 0 1 0 -4.41 0a2.20 2.20 0 1 0 4.41 0M411.2 325.4a2.20 2.20 0 1 0 -4.41 0a2.20 2.20 0 1 0 4.41 0M206.4 183.3a2.20 2.20 0 1 0 -4.41 0a2.20 2.20 0 1 0 4.41 0M325.4 278.7a2.20 2.20 0 1 0 -4.41 0a2.20 2.20 0 1 0 4.41 0M338.5 178.6a2.20 2.20 0 1 0 -4.41 0a2.20 2.20 0 1 0 4.41 0M265.1 248.6a2.20 2.20 0 1 0 -4.41 0a2.20 2.20 0 1 0 4.41 0M227.5 220.9a2.20 2.20 0 1 0 -4.41 0a2.20 2.20 0 1 0 4.41 0M326.6 203.6a2.20 2.20 0 1 0 -4.41 0a2.20 2.20 0 1 0 4.41 0M324.9 270.9a2.20 2.20 0 1 0 -4.41 0a2.20 2.20 0 1 0 4.41 0M352.1 252.1a2.20 2.20 0 1 0 -4.41 0a2.20 2.20 0 1 0 4.41 0M128.1 266.9a2.20 2.20 0 1 0 -4.41 0a2.20 2.20 0 1 0 4.41 0M171.2 111.0a2.20 2.20 0 1 0 -4.41 0a2.20 2.20 0 1 0 4.41 0M427.1 233.0a2.20 2.20 0 1 0 -4.41 0a2.20 2.20 0 1 0 4.41 0M377.0 215.4a2.20 2.20 0 1 0 -4.41 0a2.20 2.20 0 1 0 4.41 0M319.3 255.4a2.20 2.20 0 1 0 -4.41 0a2.20 2.20 0 1 0 4.41 0M368.3 252.6a2.20 2.20 0 1 0 -4.41 0a2.20 2.20 0 1 0 4.41 0M388.9 174.4a2.20 2.20 0 1 0 -4.41 0a2.20 2.20 0 1 0 4.41 0M105.6 267.7a2.20 2.20 0 1 0 -4.41 0a2.20 2.20 0 1 0 4.41 0M395.2 238.4a2.20 2.20 0 1 0 -4.41 0a2.20 2.20 0 1 0 4.41 0M250.3 223.9a2.20 2.20 0 1 0 -4.41 0a2.20 2.20 0 1 0 4.41 0M323.9 262.6a2.20 2.20 0 1 0 -4.41 0a2.20 2.20 0 1 0 4.41 0M273.7 148.0a2.20 2.20 0 1 0 -4.41 0a2.20 2.20 0 1 0 4.41 0M357.0 306.9a2.20 2.20 0 1 0 -4.41 0a2.20 2.20 0 1 0 4.41 0M275.8 146.3a2.20 2.20 0 1 0 -4.41 0a2.20 2.20 0 1 0 4.41 0M360.8 259.3a2.20 2.20 0 1 0 -4.41 0a2.20 2.20 0 1 0 4.41 0M255.6 176.2a2.20 2.20 0 1 0 -4.41 0a2.20 2.20 0 1 0 4.41 0M208.9 340.9a2.20 2.20 0 1 0 -4.41 0a2.20 2.20 0 1 0 4.41 0M390.1 191.7a2.20 2.20 0 1 0 -4.41 0a2.20 2.20 0 1 0 4.41 0M339.7 195.5a2.20 2.20 0 1 0 -4.41 0a2.20 2.20 0 1 0 4.41 0M421.5 296.5a2.20 2.20 0 1 0 -4.41 0a2.20 2.20 0 1 0 4.41 0M301.3 278.3a2.20 2.20 0 1 0 -4.41 0a2.20 2.20 0 1 0 4.41 0M371.2 227.4a2.20 2.20 0 1 0 -4.41 0a2.20 2.20 0 1 0 4.41 0M438.7 179.1a2.20 2.20 0 1 0 -4.41 0a2.20 2.20 0 1 0 4.41 0M263.3 278.1a2.20 2.20 0 1 0 -4.41 0a2.20 2.20 0 1 0 4.41 0M188.0 255.8a2.20 2.20 0 1 0 -4.41 0a2.20 2.20 0 1 0 4.41 0M283.9 167.1a2.20 2.20 0 1 0 -4.41 0a2.20 2.20 0 1 0 4.41 0M275.5 296.0a2.20 2.20 0 1 0 -4.41 0a2.20 2.20 0 1 0 4.41 0M311.4 195.7a2.20 2.20 0 1 0 -4.41 0a2.20 2.20 0 1 0 4.41 0M447.6 216.5a2.20 2.20 0 1 0 -4.41 0a2.20 2.20 0 1 0 4.41 0M259.5 294.6a2.20 2.20 0 1 0 -4.41 0a2.20 2.20 0 1 0 4.41 0M343.7 274.4a2.20 2.20 0 1 0 -4.41 0a2.20 2.20 0 1 0 4.41 0M273.7 203.9a2.20 2.20 0 1 0 -4.41 0a2.20 2.20 0 1 0 4.41 0M290.1 228.6a2.20 2.20 0 1 0 -4.41 0a2.20 2.20 0 1 0 4.41 0M316.8 171.4a2.20 2.20 0 1 0 -4.41 0a2.20 2.20 0 1 0 4.41 0M418.3 268.3a2.20 2.20 0 1 0 -4.41 0a2.20 2.20 0 1 0 4.41 0M299.0 323.0a2.20 2.20 0 1 0 -4.41 0a2.20 2.20 0 1 0 4.41 0M374.3 191.2a2.20 2.20 0 1 0 -4.41 0a2.20 2.20 0 1 0 4.41 0M347.5 267.4a2.20 2.20 0 1 0 -4.41 0a2.20 2.20 0 1 0 4.41 0M361.3 232.2a2.20 2.20 0 1 0 -4.41 0a2.20 2.20 0 1 0 4.41 0M258.5 161.1a2.20 2.20 0 1 0 -4.41 0a2.20 2.20 0 1 0 4.41 0M420.3 248.3a2.20 2.20 0 1 0 -4.41 0a2.20 2.20 0 1 0 4.41 0M277.4 169.1a2.20 2.20 0 1 0 -4.41 0a2.20 2.20 0 1 0 4.41 0M301.0 296.0a2.20 2.20 0 1 0 -4.41 0a2.20 2.20 0 1 0 4.41 0M402.5 192.3a2.20 2.20 0 1 0 -4.41 0a2.20 2.20 0 1 0 4.41 0M406.6 226.6a2.20 2.20 0 1 0 -4.41 0a2.20 2.20 0 1 0 4.41 0M229.0 282.1a2.20 2.20 0 1 0 -4.41 0a2.20 2.20 0 1 0 4.41 0M237.9 306.8a2.20 2.20 0 1 0 -4.41 0a2.20 2.20 0 1 0 4.41 0M204.5 243.4a2.20 2.20 0 1 0 -4.41 0a2.20 2.20 0 1 0 4.41 0M331.5 230.8a2.20 2.20 0 1 0 -4.41 0a2.20 2.20 0 1 0 4.41 0M304.2 227.1a2.20 2.20 0 1 0 -4.41 0a2.20 2.20 0 1 0 4.41 0M335.0 215.6a2.20 2.20 0 1 0 -4.41 0a2.20 2.20 0 1 0 4.41 0M329.0 260.9a2.20 2.20 0 1 0 -4.41 0a2.20 2.20 0 1 0 4.41 0M265.7 269.7a2.20 2.20 0 1 0 -4.41 0a2.20 2.20 0 1 0 4.41 0M226.4 233.9a2.20 2.20 0 1 0 -4.41 0a2.20 2.20 0 1 0 4.41 0M391.7 266.0a2.20 2.20 0 1 0 -4.41 0a2.20 2.20 0 1 0 4.41 0M352.2 180.2a2.20 2.20 0 1 0 -4.41 0a2.20 2.20 0 1 0 4.41 0M185.0 238.4a2.20 2.20 0 1 0 -4.41 0a2.20 2.20 0 1 0 4.41 0M290.3 271.6a2.20 2.20 0 1 0 -4.41 0a2.20 2.20 0 1 0 4.41 0M233.6 332.0a2.20 2.20 0 1 0 -4.41 0a2.20 2.20 0 1 0 4.41 0M144.7 279.8a2.20 2.20 0 1 0 -4.41 0a2.20 2.20 0 1 0 4.41 0M328.2 144.5a2.20 2.20 0 1 0 -4.41 0a2.20 2.20 0 1 0 4.41 0M294.2 269.2a2.20 2.20 0 1 0 -4.41 0a2.20 2.20 0 1 0 4.41 0M277.5 280.9a2.20 2.20 0 1 0 -4.41 0a2.20 2.20 0 1 0 4.41 0M307.3 208.7a2.20 2.20 0 1 0 -4.41 0a2.20 2.20 0 1 0 4.41 0M355.3 216.5a2.20 2.20 0 1 0 -4.41 0a2.20 2.20 0 1 0 4.41 0M305.1 203.9a2.20 2.20 0 1 0 -4.41 0a2.20 2.20 0 1 0 4.41 0M259.1 257.9a2.20 2.20 0 1 0 -4.41 0a2.20 2.20 0 1 0 4.41 0M245.6 190.3a2.20 2.20 0 1 0 -4.41 0a2.20 2.20 0 1 0 4.41 0M286.9 298.5a2.20 2.20 0 1 0 -4.41 0a2.20 2.20 0 1 0 4.41 0M330.0 243.9a2.20 2.20 0 1 0 -4.41 0a2.20 2.20 0 1 0 4.41 0M217.0 278.8a2.20 2.20 0 1 0 -4.41 0a2.20 2.20 0 1 0 4.41 0M277.6 208.8a2.20 2.20 0 1 0 -4.41 0a2.20 2.20 0 1 0 4.41 0M388.5 234.0a2.20 2.20 0 1 0 -4.41 0a2.20 2.20 0 1 0 4.41 0M296.3 189.2a2.20 2.20 0 1 0 -4.41 0a2.20 2.20 0 1 0 4.41 0M254.6 145.8a2.20 2.20 0 1 0 -4.41 0a2.20 2.20 0 1 0 4.41 0M264.0 234.4a2.20 2.20 0 1 0 -4.41 0a2.20 2.20 0 1 0 4.41 0M384.8 264.0a2.20 2.20 0 1 0 -4.41 0a2.20 2.20 0 1 0 4.41 0M362.9 281.9a2.20 2.20 0 1 0 -4.41 0a2.20 2.20 0 1 0 4.41 0M393.8 250.5a2.20 2.20 0 1 0 -4.41 0a2.20 2.20 0 1 0 4.41 0M293.1 242.9a2.20 2.20 0 1 0 -4.41 0a2.20 2.20 0 1 0 4.41 0M333.7 144.8a2.20 2.20 0 1 0 -4.41 0a2.20 2.20 0 1 0 4.41 0M273.2 299.7a2.20 2.20 0 1 0 -4.41 0a2.20 2.20 0 1 0 4.41 0M362.9 294.3a2.20 2.20 0 1 0 -4.41 0a2.20 2.20 0 1 0 4.41 0M260.8 263.1a2.20 2.20 0 1 0 -4.41 0a2.20 2.20 0 1 0 4.41 0M192.0 218.2a2.20 2.20 0 1 0 -4.41 0a2.20 2.20 0 1 0 4.41 0M309.8 201.9a2.20 2.20 0 1 0 -4.41 0a2.20 2.20 0 1 0 4.41 0M473.5 281.9a2.20 2.20 0 1 0 -4.41 0a2.20 2.20 0 1 0 4.41 0M347.0 231.7a2.20 2.20 0 1 0 -4.41 0a2.20 2.20 0 1 0 4.41 0M393.1 240.6a2.20 2.20 0 1 0 -4.41 0a2.20 2.20 0 1 0 4.41 0M340.0 184.4a2.20 2.20 0 1 0 -4.41 0a2.20 2.20 0 1 0 4.41 0M265.8 192.6a2.20 2.20 0 1 0 -4.41 0a2.20 2.20 0 1 0 4.41 0M299.8 259.2a2.20 2.20 0 1 0 -4.41 0a2.20 2.20 0 1 0 4.41 0M290.4 241.7a2.20 2.20 0 1 0 -4.41 0a2.20 2.20 0 1 0 4.41 0M247.4 210.2a2.20 2.20 0 1 0 -4.41 0a2.20 2.20 0 1 0 4.41 0M365.6 320.5a2.20 2.20 0 1 0 -4.41 0a2.20 2.20 0 1 0 4.41 0M213.9 261.2a2.20 2.20 0 1 0 -4.41 0a2.20 2.20 0 1 0 4.41 0M375.8 212.4a2.20 2.20 0 1 0 -4.41 0a2.20 2.20 0 1 0 4.41 0M385.9 266.4a2.20 2.20 0 1 0 -4.41 0a2.20 2.20 0 1 0 4.41 0M198.5 247.6a2.20 2.20 0 1 0 -4.41 0a2.20 2.20 0 1 0 4.41 0M369.8 243.0a2.20 2.20 0 1 0 -4.41 0a2.20 2.20 0 1 0 4.41 0M493.1 269.7a2.20 2.20 0 1 0 -4.41 0a2.20 2.20 0 1 0 4.41 0M242.0 290.0a2.20 2.20 0 1 0 -4.41 0a2.20 2.20 0 1 0 4.41 0M371.2 249.5a2.20 2.20 0 1 0 -4.41 0a2.20 2.20 0 1 0 4.41 0M222.3 259.2a2.20 2.20 0 1 0 -4.41 0a2.20 2.20 0 1 0 4.41 0M389.6 198.6a2.20 2.20 0 1 0 -4.41 0a2.20 2.20 0 1 0 4.41 0M315.9 167.0a2.20 2.20 0 1 0 -4.41 0a2.20 2.20 0 1 0 4.41 0M445.9 239.2a2.20 2.20 0 1 0 -4.41 0a2.20 2.20 0 1 0 4.41 0M184.7 226.9a2.20 2.20 0 1 0 -4.41 0a2.20 2.20 0 1 0 4.41 0M293.5 245.2a2.20 2.20 0 1 0 -4.41 0a2.20 2.20 0 1 0 4.41 0M244.3 213.0a2.20 2.20 0 1 0 -4.41 0a2.20 2.20 0 1 0 4.41 0M282.4 231.7a2.20 2.20 0 1 0 -4.41 0a2.20 2.20 0 1 0 4.41 0M237.7 231.0a2.20 2.20 0 1 0 -4.41 0a2.20 2.20 0 1 0 4.41 0M224.7 189.7a2.20 2.20 0 1 0 -4.41 0a2.20 2.20 0 1 0 4.41 0M361.2 289.3a2.20 2.20 0 1 0 -4.41 0a2.20 2.20 0 1 0 4.41 0M209.7 174.8a2.20 2.20 0 1 0 -4.41 0a2.20 2.20 0 1 0 4.41 0M416.1 220.6a2.20 2.20 0 1 0 -4.41 0a2.20 2.20 0 1 0 4.41 0M202.9 236.3a2.20 2.20 0 1 0 -4.41 0a2.20 2.20 0 1 0 4.41 0M321.4 270.0a2.20 2.20 0 1 0 -4.41 0a2.20 2.20 0 1 0 4.41 0M322.0 246.1a2.20 2.20 0 1 0 -4.41 0a2.20 2.20 0 1 0 4.41 0M338.7 221.3a2.20 2.20 0 1 0 -4.41 0a2.20 2.20 0 1 0 4.41 0M258.0 340.3a2.20 2.20 0 1 0 -4.41 0a2.20 2.20 0 1 0 4.41 0M319.2 272.0a2.20 2.20 0 1 0 -4.41 0a2.20 2.20 0 1 0 4.41 0M375.6 210.8a2.20 2.20 0 1 0 -4.41 0a2.20 2.20 0 1 0 4.41 0M183.6 260.2a2.20 2.20 0 1 0 -4.41 0a2.20 2.20 0 1 0 4.41 0M232.2 282.1a2.20 2.20 0 1 0 -4.41 0a2.20 2.20 0 1 0 4.41 0M323.3 271.3a2.20 2.20 0 1 0 -4.41 0a2.20 2.20 0 1 0 4.41 0M247.7 230.0a2.20 2.20 0 1 0 -4.41 0a2.20 2.20 0 1 0 4.41 0M390.2 314.7a2.20 2.20 0 1 0 -4.41 0a2.20 2.20 0 1 0 4.41 0M333.9 195.9a2.20 2.20 0 1 0 -4.41 0a2.20 2.20 0 1 0 4.41 0M287.8 344.3a2.20 2.20 0 1 0 -4.41 0a2.20 2.20 0 1 0 4.41 0M172.4 269.7a2.20 2.20 0 1 0 -4.41 0a2.20 2.20 0 1 0 4.41 0M312.4 280.8a2.20 2.20 0 1 0 -4.41 0a2.20 2.20 0 1 0 4.41 0M284.1 303.9a2.20 2.20 0 1 0 -4.41 0a2.20 2.20 0 1 0 4.41 0M274.6 292.3a2.20 2.20 0 1 0 -4.41 0a2.20 2.20 0 1 0 4.41 0M223.5 235.1a2.20 2.20 0 1 0 -4.41 0a2.20 2.20 0 1 0 4.41 0M324.8 244.6a2.20 2.20 0 1 0 -4.41 0a2.20 2.20 0 1 0 4.41 0M215.2 259.1a2.20 2.20 0 1 0 -4.41 0a2.20 2.20 0 1 0 4.41 0M283.9 354.5a2.20 2.20 0 1 0 -4.41 0a2.20 2.20 0 1 0 4.41 0M348.0 306.4a2.20 2.20 0 1 0 -4.41 0a2.20 2.20 0 1 0 4.41 0M249.7 251.7a2.20 2.20 0 1 0 -4.41 0a2.20 2.20 0 1 0 4.41 0M347.7 282.6a2.20 2.20 0 1 0 -4.41 0a2.20 2.20 0 1 0 4.41 0M188.8 283.4a2.20 2.20 0 1 0 -4.41 0a2.20 2.20 0 1 0 4.41 0M75.4 199.3a2.20 2.20 0 1 0 -4.41 0a2.20 2.20 0 1 0 4.41 0M349.1 233.3a2.20 2.20 0 1 0 -4.41 0a2.20 2.20 0 1 0 4.41 0M372.3 290.3a2.20 2.20 0 1 0 -4.41 0a2.20 2.20 0 1 0 4.41 0M260.1 263.5a2.20 2.20 0 1 0 -4.41 0a2.20 2.20 0 1 0 4.41 0M327.2 252.8a2.20 2.20 0 1 0 -4.41 0a2.20 2.20 0 1 0 4.41 0M220.6 279.3a2.20 2.20 0 1 0 -4.41 0a2.20 2.20 0 1 0 4.41 0M288.4 288.5a2.20 2.20 0 1 0 -4.41 0a2.20 2.20 0 1 0 4.41 0M154.8 250.9a2.20 2.20 0 1 0 -4.41 0a2.20 2.20 0 1 0 4.41 0M407.6 204.2a2.20 2.20 0 1 0 -4.41 0a2.20 2.20 0 1 0 4.41 0M440.6 224.8a2.20 2.20 0 1 0 -4.41 0a2.20 2.20 0 1 0 4.41 0M374.5 247.3a2.20 2.20 0 1 0 -4.41 0a2.20 2.20 0 1 0 4.41 0M302.2 223.7a2.20 2.20 0 1 0 -4.41 0a2.20 2.20 0 1 0 4.41 0M291.5 203.1a2.20 2.20 0 1 0 -4.41 0a2.20 2.20 0 1 0 4.41 0M193.5 254.5a2.20 2.20 0 1 0 -4.41 0a2.20 2.20 0 1 0 4.41 0M347.5 216.0a2.20 2.20 0 1 0 -4.41 0a2.20 2.20 0 1 0 4.41 0M268.3 296.1a2.20 2.20 0 1 0 -4.41 0a2.20 2.20 0 1 0 4.41 0M252.4 256.3a2.20 2.20 0 1 0 -4.41 0a2.20 2.20 0 1 0 4.41 0M172.9 264.6a2.20 2.20 0 1 0 -4.41 0a2.20 2.20 0 1 0 4.41 0M282.2 233.9a2.20 2.20 0 1 0 -4.41 0a2.20 2.20 0 1 0 4.41 0M231.7 227.0a2.20 2.20 0 1 0 -4.41 0a2.20 2.20 0 1 0 4.41 0M277.5 249.9a2.20 2.20 0 1 0 -4.41 0a2.20 2.20 0 1 0 4.41 0M194.7 281.4a2.20 2.20 0 1 0 -4.41 0a2.20 2.20 0 1 0 4.41 0M419.1 280.2a2.20 2.20 0 1 0 -4.41 0a2.20 2.20 0 1 0 4.41 0M294.1 228.0a2.20 2.20 0 1 0 -4.41 0a2.20 2.20 0 1 0 4.41 0M387.7 173.6a2.20 2.20 0 1 0 -4.41 0a2.20 2.20 0 1 0 4.41 0M100.1 288.0a2.20 2.20 0 1 0 -4.41 0a2.20 2.20 0 1 0 4.41 0M249.4 260.2a2.20 2.20 0 1 0 -4.41 0a2.20 2.20 0 1 0 4.41 0M248.7 228.1a2.20 2.20 0 1 0 -4.41 0a2.20 2.20 0 1 0 4.41 0M201.1 271.9a2.20 2.20 0 1 0 -4.41 0a2.20 2.20 0 1 0 4.41 0M441.9 233.5a2.20 2.20 0 1 0 -4.41 0a2.20 2.20 0 1 0 4.41 0M202.6 249.8a2.20 2.20 0 1 0 -4.41 0a2.20 2.20 0 1 0 4.41 0M310.7 276.8a2.20 2.20 0 1 0 -4.41 0a2.20 2.20 0 1 0 4.41 0M359.6 198.5a2.20 2.20 0 1 0 -4.41 0a2.20 2.20 0 1 0 4.41 0M322.0 201.4a2.20 2.20 0 1 0 -4.41 0a2.20 2.20 0 1 0 4.41 0M240.0 196.0a2.20 2.20 0 1 0 -4.41 0a2.20 2.20 0 1 0 4.41 0M375.6 178.1a2.20 2.20 0 1 0 -4.41 0a2.20 2.20 0 1 0 4.41 0M301.9 264.5a2.20 2.20 0 1 0 -4.41 0a2.20 2.20 0 1 0 4.41 0M200.1 265.7a2.20 2.20 0 1 0 -4.41 0a2.20 2.20 0 1 0 4.41 0M180.2 232.3a2.20 2.20 0 1 0 -4.41 0a2.20 2.20 0 1 0 4.41 0M448.5 203.6a2.20 2.20 0 1 0 -4.41 0a2.20 2.20 0 1 0 4.41 0M251.9 260.8a2.20 2.20 0 1 0 -4.41 0a2.20 2.20 0 1 0 4.41 0M160.4 268.5a2.20 2.20 0 1 0 -4.41 0a2.20 2.20 0 1 0 4.41 0M331.9 269.0a2.20 2.20 0 1 0 -4.41 0a2.20 2.20 0 1 0 4.41 0M323.0 169.4a2.20 2.20 0 1 0 -4.41 0a2.20 2.20 0 1 0 4.41 0M171.7 364.5a2.20 2.20 0 1 0 -4.41 0a2.20 2.20 0 1 0 4.41 0M126.5 253.6a2.20 2.20 0 1 0 -4.41 0a2.20 2.20 0 1 0 4.41 0M306.5 242.0a2.20 2.20 0 1 0 -4.41 0a2.20 2.20 0 1 0 4.41 0M395.9 290.2a2.20 2.20 0 1 0 -4.41 0a2.20 2.20 0 1 0 4.41 0M356.5 222.1a2.20 2.20 0 1 0 -4.41 0a2.20 2.20 0 1 0 4.41 0M258.2 337.8a2.20 2.20 0 1 0 -4.41 0a2.20 2.20 0 1 0 4.41 0M223.2 197.2a2.20 2.20 0 1 0 -4.41 0a2.20 2.20 0 1 0 4.41 0M339.7 323.1a2.20 2.20 0 1 0 -4.41 0a2.20 2.20 0 1 0 4.41 0M292.4 345.4a2.20 2.20 0 1 0 -4.41 0a2.20 2.20 0 1 0 4.41 0M336.7 275.4a2.20 2.20 0 1 0 -4.41 0a2.20 2.20 0 1 0 4.41 0M287.1 237.1a2.20 2.20 0 1 0 -4.41 0a2.20 2.20 0 1 0 4.41 0M384.2 272.0a2.20 2.20 0 1 0 -4.41 0a2.20 2.20 0 1 0 4.41 0M253.3 273.2a2.20 2.20 0 1 0 -4.41 0a2.20 2.20 0 1 0 4.41 0M263.0 225.6a2.20 2.20 0 1 0 -4.41 0a2.20 2.20 0 1 0 4.41 0M362.4 291.1a2.20 2.20 0 1 0 -4.41 0a2.20 2.20 0 1 0 4.41 0M361.4 241.3a2.20 2.20 0 1 0 -4.41 0a2.20 2.20 0 1 0 4.41 0M156.0 224.5a2.20 2.20 0 1 0 -4.41 0a2.20 2.20 0 1 0 4.41 0M323.8 164.4a2.20 2.20 0 1 0 -4.41 0a2.20 2.20 0 1 0 4.41 0M364.6 218.7a2.20 2.20 0 1 0 -4.41 0a2.20 2.20 0 1 0 4.41 0M162.5 161.1a2.20 2.20 0 1 0 -4.41 0a2.20 2.20 0 1 0 4.41 0M327.4 217.5a2.20 2.20 0 1 0 -4.41 0a2.20 2.20 0 1 0 4.41 0M237.3 244.7a2.20 2.20 0 1 0 -4.41 0a2.20 2.20 0 1 0 4.41 0M375.8 347.1a2.20 2.20 0 1 0 -4.41 0a2.20 2.20 0 1 0 4.41 0M351.4 300.2a2.20 2.20 0 1 0 -4.41 0a2.20 2.20 0 1 0 4.41 0M342.3 253.0a2.20 2.20 0 1 0 -4.41 0a2.20 2.20 0 1 0 4.41 0M315.7 207.8a2.20 2.20 0 1 0 -4.41 0a2.20 2.20 0 1 0 4.41 0M357.8 253.8a2.20 2.20 0 1 0 -4.41 0a2.20 2.20 0 1 0 4.41 0M401.1 210.8a2.20 2.20 0 1 0 -4.41 0a2.20 2.20 0 1 0 4.41 0M467.3 288.6a2.20 2.20 0 1 0 -4.41 0a2.20 2.20 0 1 0 4.41 0M283.8 253.7a2.20 2.20 0 1 0 -4.41 0a2.20 2.20 0 1 0 4.41 0M113.8 237.1a2.20 2.20 0 1 0 -4.41 0a2.20 2.20 0 1 0 4.41 0M309.6 259.8a2.20 2.20 0 1 0 -4.41 0a2.20 2.20 0 1 0 4.41 0M312.5 235.4a2.20 2.20 0 1 0 -4.41 0a2.20 2.20 0 1 0 4.41 0M288.7 274.7a2.20 2.20 0 1 0 -4.41 0a2.20 2.20 0 1 0 4.41 0M343.3 222.0a2.20 2.20 0 1 0 -4.41 0a2.20 2.20 0 1 0 4.41 0M365.3 241.3a2.20 2.20 0 1 0 -4.41 0a2.20 2.20 0 1 0 4.41 0M238.4 243.5a2.20 2.20 0 1 0 -4.41 0a2.20 2.20 0 1 0 4.41 0M261.9 335.1a2.20 2.20 0 1 0 -4.41 0a2.20 2.20 0 1 0 4.41 0M343.8 274.4a2.20 2.20 0 1 0 -4.41 0a2.20 2.20 0 1 0 4.41 0M240.4 313.6a2.20 2.20 0 1 0 -4.41 0a2.20 2.20 0 1 0 4.41 0M289.2 317.1a2.20 2.20 0 1 0 -4.41 0a2.20 2.20 0 1 0 4.41 0M122.1 269.0a2.20 2.20 0 1 0 -4.41 0a2.20 2.20 0 1 0 4.41 0M206.0 252.3a2.20 2.20 0 1 0 -4.41 0a2.20 2.20 0 1 0 4.41 0M207.3 233.4a2.20 2.20 0 1 0 -4.41 0a2.20 2.20 0 1 0 4.41 0M223.8 190.9a2.20 2.20 0 1 0 -4.41 0a2.20 2.20 0 1 0 4.41 0M241.4 222.1a2.20 2.20 0 1 0 -4.41 0a2.20 2.20 0 1 0 4.41 0M326.6 191.6a2.20 2.20 0 1 0 -4.41 0a2.20 2.20 0 1 0 4.41 0M372.3 263.8a2.20 2.20 0 1 0 -4.41 0a2.20 2.20 0 1 0 4.41 0M258.7 260.5a2.20 2.20 0 1 0 -4.41 0a2.20 2.20 0 1 0 4.41 0M237.1 194.2a2.20 2.20 0 1 0 -4.41 0a2.20 2.20 0 1 0 4.41 0M206.6 243.7a2.20 2.20 0 1 0 -4.41 0a2.20 2.20 0 1 0 4.41 0M275.6 324.9a2.20 2.20 0 1 0 -4.41 0a2.20 2.20 0 1 0 4.41 0M268.5 282.0a2.20 2.20 0 1 0 -4.41 0a2.20 2.20 0 1 0 4.41 0M356.6 193.8a2.20 2.20 0 1 0 -4.41 0a2.20 2.20 0 1 0 4.41 0M255.6 270.2a2.20 2.20 0 1 0 -4.41 0a2.20 2.20 0 1 0 4.41 0M152.5 233.7a2.20 2.20 0 1 0 -4.41 0a2.20 2.20 0 1 0 4.41 0M280.1 240.1a2.20 2.20 0 1 0 -4.41 0a2.20 2.20 0 1 0 4.41 0M387.4 261.6a2.20 2.20 0 1 0 -4.41 0a2.20 2.20 0 1 0 4.41 0M379.6 253.7a2.20 2.20 0 1 0 -4.41 0a2.20 2.20 0 1 0 4.41 0M239.5 225.5a2.20 2.20 0 1 0 -4.41 0a2.20 2.20 0 1 0 4.41 0M181.5 236.7a2.20 2.20 0 1 0 -4.41 0a2.20 2.20 0 1 0 4.41 0M517.7 177.6a2.20 2.20 0 1 0 -4.41 0a2.20 2.20 0 1 0 4.41 0M273.7 250.6a2.20 2.20 0 1 0 -4.41 0a2.20 2.20 0 1 0 4.41 0M304.7 287.9a2.20 2.20 0 1 0 -4.41 0a2.20 2.20 0 1 0 4.41 0M338.2 233.2a2.20 2.20 0 1 0 -4.41 0a2.20 2.20 0 1 0 4.41 0M189.7 214.4a2.20 2.20 0 1 0 -4.41 0a2.20 2.20 0 1 0 4.41 0M238.5 133.6a2.20 2.20 0 1 0 -4.41 0a2.20 2.20 0 1 0 4.41 0M184.8 269.4a2.20 2.20 0 1 0 -4.41 0a2.20 2.20 0 1 0 4.41 0M226.1 257.6a2.20 2.20 0 1 0 -4.41 0a2.20 2.20 0 1 0 4.41 0M314.4 199.5a2.20 2.20 0 1 0 -4.41 0a2.20 2.20 0 1 0 4.41 0M177.9 182.6a2.20 2.20 0 1 0 -4.41 0a2.20 2.20 0 1 0 4.41 0M364.3 273.7a2.20 2.20 0 1 0 -4.41 0a2.20 2.20 0 1 0 4.41 0M335.6 210.3a2.20 2.20 0 1 0 -4.41 0a2.20 2.20 0 1 0 4.41 0M241.5 273.1a2.20 2.20 0 1 0 -4.41 0a2.20 2.20 0 1 0 4.41 0M330.8 288.9a2.20 2.20 0 1 0 -4.41 0a2.20 2.20 0 1 0 4.41 0M356.2 209.3a2.20 2.20 0 1 0 -4.41 0a2.20 2.20 0 1 0 4.41 0M404.6 235.8a2.20 2.20 0 1 0 -4.41 0a2.20 2.20 0 1 0 4.41 0M282.3 223.6a2.20 2.20 0 1 0 -4.41 0a2.20 2.20 0 1 0 4.41 0M291.9 270.0a2.20 2.20 0 1 0 -4.41 0a2.20 2.20 0 1 0 4.41 0M286.0 154.9a2.20 2.20 0 1 0 -4.41 0a2.20 2.20 0 1 0 4.41 0M397.5 203.8a2.20 2.20 0 1 0 -4.41 0a2.20 2.20 0 1 0 4.41 0M406.8 258.5a2.20 2.20 0 1 0 -4.41 0a2.20 2.20 0 1 0 4.41 0M355.0 204.4a2.20 2.20 0 1 0 -4.41 0a2.20 2.20 0 1 0 4.41 0M268.0 300.2a2.20 2.20 0 1 0 -4.41 0a2.20 2.20 0 1 0 4.41 0M336.0 248.1a2.20 2.20 0 1 0 -4.41 0a2.20 2.20 0 1 0 4.41 0M334.7 173.3a2.20 2.20 0 1 0 -4.41 0a2.20 2.20 0 1 0 4.41 0M235.2 255.9a2.20 2.20 0 1 0 -4.41 0a2.20 2.20 0 1 0 4.41 0M144.1 201.1a2.20 2.20 0 1 0 -4.41 0a2.20 2.20 0 1 0 4.41 0M352.9 250.9a2.20 2.20 0 1 0 -4.41 0a2.20 2.20 0 1 0 4.41 0M193.6 358.6a2.20 2.20 0 1 0 -4.41 0a2.20 2.20 0 1 0 4.41 0M315.0 285.8a2.20 2.20 0 1 0 -4.41 0a2.20 2.20 0 1 0 4.41 0M336.3 232.1a2.20 2.20 0 1 0 -4.41 0a2.20 2.20 0 1 0 4.41 0M356.4 171.7a2.20 2.20 0 1 0 -4.41 0a2.20 2.20 0 1 0 4.41 0M300.9 268.4a2.20 2.20 0 1 0 -4.41 0a2.20 2.20 0 1 0 4.41 0M224.8 228.9a2.20 2.20 0 1 0 -4.41 0a2.20 2.20 0 1 0 4.41 0M363.0 283.9a2.20 2.20 0 1 0 -4.41 0a2.20 2.20 0 1 0 4.41 0M436.5 285.6a2.20 2.20 0 1 0 -4.41 0a2.20 2.20 0 1 0 4.41 0M381.8 278.0a2.20 2.20 0 1 0 -4.41 0a2.20 2.20 0 1 0 4.41 0M159.9 183.0a2.20 2.20 0 1 0 -4.41 0a2.20 2.20 0 1 0 4.41 0M409.0 192.3a2.20 2.20 0 1 0 -4.41 0a2.20 2.20 0 1 0 4.41 0M307.8 214.7a2.20 2.20 0 1 0 -4.41 0a2.20 2.20 0 1 0 4.41 0M340.4 186.5a2.20 2.20 0 1 0 -4.41 0a2.20 2.20 0 1 0 4.41 0M356.9 261.3a2.20 2.20 0 1 0 -4.41 0a2.20 2.20 0 1 0 4.41 0M302.4 206.6a2.20 2.20 0 1 0 -4.41 0a2.20 2.20 0 1 0 4.41 0M301.0 232.7a2.20 2.20 0 1 0 -4.41 0a2.20 2.20 0 1 0 4.41 0M395.8 291.0a2.20 2.20 0 1 0 -4.41 0a2.20 2.20 0 1 0 4.41 0M348.9 279.0a2.20 2.20 0 1 0 -4.41 0a2.20 2.20 0 1 0 4.41 0M366.0 235.3a2.20 2.20 0 1 0 -4.41 0a2.20 2.20 0 1 0 4.41 0M474.3 223.5a2.20 2.20 0 1 0 -4.41 0a2.20 2.20 0 1 0 4.41 0M332.8 253.3a2.20 2.20 0 1 0 -4.41 0a2.20 2.20 0 1 0 4.41 0M332.8 291.0a2.20 2.20 0 1 0 -4.41 0a2.20 2.20 0 1 0 4.41 0M133.9 350.0a2.20 2.20 0 1 0 -4.41 0a2.20 2.20 0 1 0 4.41 0M498.5 212.0a2.20 2.20 0 1 0 -4.41 0a2.20 2.20 0 1 0 4.41 0M244.1 255.7a2.20 2.20 0 1 0 -4.41 0a2.20 2.20 0 1 0 4.41 0M477.0 207.3a2.20 2.20 0 1 0 -4.41 0a2.20 2.20 0 1 0 4.41 0M330.8 315.4a2.20 2.20 0 1 0 -4.41 0a2.20 2.20 0 1 0 4.41 0M432.9 298.9a2.20 2.20 0 1 0 -4.41 0a2.20 2.20 0 1 0 4.41 0M274.8 245.8a2.20 2.20 0 1 0 -4.41 0a2.20 2.20 0 1 0 4.41 0M324.2 306.7a2.20 2.20 0 1 0 -4.41 0a2.20 2.20 0 1 0 4.41 0M318.8 337.0a2.20 2.20 0 1 0 -4.41 0a2.20 2.20 0 1 0 4.41 0M275.8 203.7a2.20 2.20 0 1 0 -4.41 0a2.20 2.20 0 1 0 4.41 0M287.3 198.5a2.20 2.20 0 1 0 -4.41 0a2.20 2.20 0 1 0 4.41 0M365.1 286.9a2.20 2.20 0 1 0 -4.41 0a2.20 2.20 0 1 0 4.41 0M300.7 257.3a2.20 2.20 0 1 0 -4.41 0a2.20 2.20 0 1 0 4.41 0M145.2 303.1a2.20 2.20 0 1 0 -4.41 0a2.20 2.20 0 1 0 4.41 0M282.1 226.9a2.20 2.20 0 1 0 -4.41 0a2.20 2.20 0 1 0 4.41 0M350.0 242.5a2.20 2.20 0 1 0 -4.41 0a2.20 2.20 0 1 0 4.41 0M340.3 281.1a2.20 2.20 0 1 0 -4.41 0a2.20 2.20 0 1 0 4.41 0M355.8 278.1a2.20 2.20 0 1 0 -4.41 0a2.20 2.20 0 1 0 4.41 0M158.2 297.2a2.20 2.20 0 1 0 -4.41 0a2.20 2.20 0 1 0 4.41 0M336.2 220.5a2.20 2.20 0 1 0 -4.41 0a2.20 2.20 0 1 0 4.41 0M373.7 211.2a2.20 2.20 0 1 0 -4.41 0a2.20 2.20 0 1 0 4.41 0M410.9 221.0a2.20 2.20 0 1 0 -4.41 0a2.20 2.20 0 1 0 4.41 0M272.3 282.1a2.20 2.20 0 1 0 -4.41 0a2.20 2.20 0 1 0 4.41 0M283.4 329.8a2.20 2.20 0 1 0 -4.41 0a2.20 2.20 0 1 0 4.41 0M422.2 212.4a2.20 2.20 0 1 0 -4.41 0a2.20 2.20 0 1 0 4.41 0M145.6 252.9a2.20 2.20 0 1 0 -4.41 0a2.20 2.20 0 1 0 4.41 0M258.6 244.3a2.20 2.20 0 1 0 -4.41 0a2.20 2.20 0 1 0 4.41 0M333.8 190.5a2.20 2.20 0 1 0 -4.41 0a2.20 2.20 0 1 0 4.41 0M165.3 289.0a2.20 2.20 0 1 0 -4.41 0a2.20 2.20 0 1 0 4.41 0M323.8 186.1a2.20 2.20 0 1 0 -4.41 0a2.20 2.20 0 1 0 4.41 0M465.5 258.0a2.20 2.20 0 1 0 -4.41 0a2.20 2.20 0 1 0 4.41 0M310.1 277.3a2.20 2.20 0 1 0 -4.41 0a2.20 2.20 0 1 0 4.41 0M259.1 250.6a2.20 2.20 0 1 0 -4.41 0a2.20 2.20 0 1 0 4.41 0M321.8 220.0a2.20 2.20 0 1 0 -4.41 0a2.20 2.20 0 1 0 4.41 0M269.1 251.7a2.20 2.20 0 1 0 -4.41 0a2.20 2.20 0 1 0 4.41 0M357.0 282.1a2.20 2.20 0 1 0 -4.41 0a2.20 2.20 0 1 0 4.41 0M381.8 253.9a2.20 2.20 0 1 0 -4.41 0a2.20 2.20 0 1 0 4.41 0M284.8 362.7a2.20 2.20 0 1 0 -4.41 0a2.20 2.20 0 1 0 4.41 0M224.6 271.7a2.20 2.20 0 1 0 -4.41 0a2.20 2.20 0 1 0 4.41 0M208.1 225.1a2.20 2.20 0 1 0 -4.41 0a2.20 2.20 0 1 0 4.41 0M255.2 252.0a2.20 2.20 0 1 0 -4.41 0a2.20 2.20 0 1 0 4.41 0M380.1 208.1a2.20 2.20 0 1 0 -4.41 0a2.20 2.20 0 1 0 4.41 0M121.6 221.7a2.20 2.20 0 1 0 -4.41 0a2.20 2.20 0 1 0 4.41 0M159.5 217.2a2.20 2.20 0 1 0 -4.41 0a2.20 2.20 0 1 0 4.41 0M263.8 213.8a2.20 2.20 0 1 0 -4.41 0a2.20 2.20 0 1 0 4.41 0M315.1 322.8a2.20 2.20 0 1 0 -4.41 0a2.20 2.20 0 1 0 4.41 0M224.6 244.0a2.20 2.20 0 1 0 -4.41 0a2.20 2.20 0 1 0 4.41 0M378.0 161.5a2.20 2.20 0 1 0 -4.41 0a2.20 2.20 0 1 0 4.41 0M324.8 263.9a2.20 2.20 0 1 0 -4.41 0a2.20 2.20 0 1 0 4.41 0M301.3 222.1a2.20 2.20 0 1 0 -4.41 0a2.20 2.20 0 1 0 4.41 0M361.2 232.2a2.20 2.20 0 1 0 -4.41 0a2.20 2.20 0 1 0 4.41 0M333.5 214.2a2.20 2.20 0 1 0 -4.41 0a2.20 2.20 0 1 0 4.41 0M270.0 256.8a2.20 2.20 0 1 0 -4.41 0a2.20 2.20 0 1 0 4.41 0M309.2 271.5a2.20 2.20 0 1 0 -4.41 0a2.20 2.20 0 1 0 4.41 0M367.8 238.2a2.20 2.20 0 1 0 -4.41 0a2.20 2.20 0 1 0 4.41 0M313.1 229.2a2.20 2.20 0 1 0 -4.41 0a2.20 2.20 0 1 0 4.41 0M248.9 252.8a2.20 2.20 0 1 0 -4.41 0a2.20 2.20 0 1 0 4.41 0M358.0 236.8a2.20 2.20 0 1 0 -4.41 0a2.20 2.20 0 1 0 4.41 0M374.5 216.9a2.20 2.20 0 1 0 -4.41 0a2.20 2.20 0 1 0 4.41 0M332.6 279.6a2.20 2.20 0 1 0 -4.41 0a2.20 2.20 0 1 0 4.41 0M315.5 186.9a2.20 2.20 0 1 0 -4.41 0a2.20 2.20 0 1 0 4.41 0M286.5 135.3a2.20 2.20 0 1 0 -4.41 0a2.20 2.20 0 1 0 4.41 0M490.3 166.4a2.20 2.20 0 1 0 -4.41 0a2.20 2.20 0 1 0 4.41 0M325.4 263.3a2.20 2.20 0 1 0 -4.41 0a2.20 2.20 0 1 0 4.41 0M305.2 332.0a2.20 2.20 0 1 0 -4.41 0a2.20 2.20 0 1 0 4.41 0M114.4 247.9a2.20 2.20 0 1 0 -4.41 0a2.20 2.20 0 1 0 4.41 0M168.9 203.3a2.20 2.20 0 1 0 -4.41 0a2.20 2.20 0 1 0 4.41 0M302.3 205.5a2.20 2.20 0 1 0 -4.41 0a2.20 2.20 0 1 0 4.41 0M329.6 301.9a2.20 2.20 0 1 0 -4.41 0a2.20 2.20 0 1 0 4.41 0M338.9 296.5a2.20 2.20 0 1 0 -4.41 0a2.20 2.20 0 1 0 4.41 0M350.2 231.5a2.20 2.20 0 1 0 -4.41 0a2.20 2.20 0 1 0 4.41 0M265.0 210.2a2.20 2.20 0 1 0 -4.41 0a2.20 2.20 0 1 0 4.41 0M417.4 198.5a2.20 2.20 0 1 0 -4.41 0a2.20 2.20 0 1 0 4.41 0M220.8 204.6a2.20 2.20 0 1 0 -4.41 0a2.20 2.20 0 1 0 4.41 0M211.0 292.7a2.20 2.20 0 1 0 -4.41 0a2.20 2.20 0 1 0 4.41 0M201.7 308.6a2.20 2.20 0 1 0 -4.41 0a2.20 2.20 0 1 0 4.41 0M354.5 336.2a2.20 2.20 0 1 0 -4.41 0a2.20 2.20 0 1 0 4.41 0M301.8 218.7a2.20 2.20 0 1 0 -4.41 0a2.20 2.20 0 1 0 4.41 0M378.7 201.3a2.20 2.20 0 1 0 -4.41 0a2.20 2.20 0 1 0 4.41 0M262.2 224.7a2.20 2.20 0 1 0 -4.41 0a2.20 2.20 0 1 0 4.41 0M246.3 293.9a2.20 2.20 0 1 0 -4.41 0a2.20 2.20 0 1 0 4.41 0M281.8 168.5a2.20 2.20 0 1 0 -4.41 0a2.20 2.20 0 1 0 4.41 0M138.7 263.6a2.20 2.20 0 1 0 -4.41 0a2.20 2.20 0 1 0 4.41 0M210.4 159.9a2.20 2.20 0 1 0 -4.41 0a2.20 2.20 0 1 0 4.41 0M178.4 218.7a2.20 2.20 0 1 0 -4.41 0a2.20 2.20 0 1 0 4.41 0M388.6 182.0a2.20 2.20 0 1 0 -4.41 0a2.20 2.20 0 1 0 4.41 0M254.1 227.8a2.20 2.20 0 1 0 -4.41 0a2.20 2.20 0 1 0 4.41 0M371.0 243.6a2.20 2.20 0 1 0 -4.41 0a2.20 2.20 0 1 0 4.41 0M434.4 287.7a2.20 2.20 0 1 0 -4.41 0a2.20 2.20 0 1 0 4.41 0M282.1 269.0a2.20 2.20 0 1 0 -4.41 0a2.20 2.20 0 1 0 4.41 0M316.9 242.7a2.20 2.20 0 1 0 -4.41 0a2.20 2.20 0 1 0 4.41 0M172.0 234.5a2.20 2.20 0 1 0 -4.41 0a2.20 2.20 0 1 0 4.41 0M234.1 245.7a2.20 2.20 0 1 0 -4.41 0a2.20 2.20 0 1 0 4.41 0M314.0 251.3a2.20 2.20 0 1 0 -4.41 0a2.20 2.20 0 1 0 4.41 0M338.0 233.6a2.20 2.20 0 1 0 -4.41 0a2.20 2.20 0 1 0 4.41 0M235.9 268.9a2.20 2.20 0 1 0 -4.41 0a2.20 2.20 0 1 0 4.41 0M511.5 259.7a2.20 2.20 0 1 0 -4.41 0a2.20 2.20 0 1 0 4.41 0M277.1 314.7a2.20 2.20 0 1 0 -4.41 0a2.20 2.20 0 1 0 4.41 0M314.0 201.8a2.20 2.20 0 1 0 -4.41 0a2.20 2.20 0 1 0 4.41 0M356.5 238.2a2.20 2.20 0 1 0 -4.41 0a2.20 2.20 0 1 0 4.41 0M305.6 246.8a2.20 2.20 0 1 0 -4.41 0a2.20 2.20 0 1 0 4.41 0M258.0 280.4a2.20 2.20 0 1 0 -4.41 0a2.20 2.20 0 1 0 4.41 0M373.7 249.8a2.20 2.20 0 1 0 -4.41 0a2.20 2.20 0 1 0 4.41 0M420.1 288.7a2.20 2.20 0 1 0 -4.41 0a2.20 2.20 0 1 0 4.41 0M284.6 291.1a2.20 2.20 0 1 0 -4.41 0a2.20 2.20 0 1 0 4.41 0M363.0 334.6a2.20 2.20 0 1 0 -4.41 0a2.20 2.20 0 1 0 4.41 0M282.1 193.8a2.20 2.20 0 1 0 -4.41 0a2.20 2.20 0 1 0 4.41 0M381.1 232.9a2.20 2.20 0 1 0 -4.41 0a2.20 2.20 0 1 0 4.41 0M187.3 296.8a2.20 2.20 0 1 0 -4.41 0a2.20 2.20 0 1 0 4.41 0M498.6 180.5a2.20 2.20 0 1 0 -4.41 0a2.20 2.20 0 1 0 4.41 0M247.0 213.0a2.20 2.20 0 1 0 -4.41 0a2.20 2.20 0 1 0 4.41 0M180.5 209.9a2.20 2.20 0 1 0 -4.41 0a2.20 2.20 0 1 0 4.41 0M289.1 255.5a2.20 2.20 0 1 0 -4.41 0a2.20 2.20 0 1 0 4.41 0M306.7 261.3a2.20 2.20 0 1 0 -4.41 0a2.20 2.20 0 1 0 4.41 0M440.2 243.1a2.20 2.20 0 1 0 -4.41 0a2.20 2.20 0 1 0 4.41 0M384.5 221.0a2.20 2.20 0 1 0 -4.41 0a2.20 2.20 0 1 0 4.41 0M298.8 201.6a2.20 2.20 0 1 0 -4.41 0a2.20 2.20 0 1 0 4.41 0M169.3 167.2a2.20 2.20 0 1 0 -4.41 0a2.20 2.20 0 1 0 4.41 0M222.8 268.0a2.20 2.20 0 1 0 -4.41 0a2.20 2.20 0 1 0 4.41 0M293.9 292.0a2.20 2.20 0 1 0 -4.41 0a2.20 2.20 0 1 0 4.41 0M515.9 231.0a2.20 2.20 0 1 0 -4.41 0a2.20 2.20 0 1 0 4.41 0M156.2 102.0a2.20 2.20 0 1 0 -4.41 0a2.20 2.20 0 1 0 4.41 0M408.4 261.2a2.20 2.20 0 1 0 -4.41 0a2.20 2.20 0 1 0 4.41 0M236.5 185.9a2.20 2.20 0 1 0 -4.41 0a2.20 2.20 0 1 0 4.41 0M428.4 248.3a2.20 2.20 0 1 0 -4.41 0a2.20 2.20 0 1 0 4.41 0M213.8 268.7a2.20 2.20 0 1 0 -4.41 0a2.20 2.20 0 1 0 4.41 0M294.4 273.9a2.20 2.20 0 1 0 -4.41 0a2.20 2.20 0 1 0 4.41 0M190.9 253.0a2.20 2.20 0 1 0 -4.41 0a2.20 2.20 0 1 0 4.41 0M357.6 158.7a2.20 2.20 0 1 0 -4.41 0a2.20 2.20 0 1 0 4.41 0M429.0 224.2a2.20 2.20 0 1 0 -4.41 0a2.20 2.20 0 1 0 4.41 0M471.0 214.4a2.20 2.20 0 1 0 -4.41 0a2.20 2.20 0 1 0 4.41 0M356.4 198.4a2.20 2.20 0 1 0 -4.41 0a2.20 2.20 0 1 0 4.41 0M438.1 135.8a2.20 2.20 0 1 0 -4.41 0a2.20 2.20 0 1 0 4.41 0M389.1 199.8a2.20 2.20 0 1 0 -4.41 0a2.20 2.20 0 1 0 4.41 0M307.7 312.9a2.20 2.20 0 1 0 -4.41 0a2.20 2.20 0 1 0 4.41 0M337.7 290.3a2.20 2.20 0 1 0 -4.41 0a2.20 2.20 0 1 0 4.41 0M229.3 321.9a2.20 2.20 0 1 0 -4.41 0a2.20 2.20 0 1 0 4.41 0M301.8 381.4a2.20 2.20 0 1 0 -4.41 0a2.20 2.20 0 1 0 4.41 0M402.2 176.7a2.20 2.20 0 1 0 -4.41 0a2.20 2.20 0 1 0 4.41 0M333.2 263.1a2.20 2.20 0 1 0 -4.41 0a2.20 2.20 0 1 0 4.41 0M353.6 223.3a2.20 2.20 0 1 0 -4.41 0a2.20 2.20 0 1 0 4.41 0M224.7 188.7a2.20 2.20 0 1 0 -4.41 0a2.20 2.20 0 1 0 4.41 0M231.9 266.2a2.20 2.20 0 1 0 -4.41 0a2.20 2.20 0 1 0 4.41 0M243.5 251.0a2.20 2.20 0 1 0 -4.41 0a2.20 2.20 0 1 0 4.41 0M345.9 225.3a2.20 2.20 0 1 0 -4.41 0a2.20 2.20 0 1 0 4.41 0M204.0 232.0a2.20 2.20 0 1 0 -4.41 0a2.20 2.20 0 1 0 4.41 0M363.4 279.5a2.20 2.20 0 1 0 -4.41 0a2.20 2.20 0 1 0 4.41 0M190.6 207.7a2.20 2.20 0 1 0 -4.41 0a2.20 2.20 0 1 0 4.41 0M432.9 209.0a2.20 2.20 0 1 0 -4.41 0a2.20 2.20 0 1 0 4.41 0M316.8 252.4a2.20 2.20 0 1 0 -4.41 0a2.20 2.20 0 1 0 4.41 0M238.5 302.2a2.20 2.20 0 1 0 -4.41 0a2.20 2.20 0 1 0 4.41 0M327.5 211.5a2.20 2.20 0 1 0 -4.41 0a2.20 2.20 0 1 0 4.41 0M277.6 174.7a2.20 2.20 0 1 0 -4.41 0a2.20 2.20 0 1 0 4.41 0M328.7 174.2a2.20 2.20 0 1 0 -4.41 0a2.20 2.20 0 1 0 4.41 0M301.7 197.3a2.20 2.20 0 1 0 -4.41 0a2.20 2.20 0 1 0 4.41 0M237.3 269.9a2.20 2.20 0 1 0 -4.41 0a2.20 2.20 0 1 0 4.41 0M238.3 269.9a2.20 2.20 0 1 0 -4.41 0a2.20 2.20 0 1 0 4.41 0M332.5 270.2a2.20 2.20 0 1 0 -4.41 0a2.20 2.20 0 1 0 4.41 0M422.3 256.1a2.20 2.20 0 1 0 -4.41 0a2.20 2.20 0 1 0 4.41 0M399.2 205.9a2.20 2.20 0 1 0 -4.41 0a2.20 2.20 0 1 0 4.41 0M254.6 231.8a2.20 2.20 0 1 0 -4.41 0a2.20 2.20 0 1 0 4.41 0M382.8 330.7a2.20 2.20 0 1 0 -4.41 0a2.20 2.20 0 1 0 4.41 0M291.2 331.1a2.20 2.20 0 1 0 -4.41 0a2.20 2.20 0 1 0 4.41 0M315.7 241.2a2.20 2.20 0 1 0 -4.41 0a2.20 2.20 0 1 0 4.41 0M330.0 234.9a2.20 2.20 0 1 0 -4.41 0a2.20 2.20 0 1 0 4.41 0M514.7 346.6a2.20 2.20 0 1 0 -4.41 0a2.20 2.20 0 1 0 4.41 0M201.4 284.2a2.20 2.20 0 1 0 -4.41 0a2.20 2.20 0 1 0 4.41 0M320.3 241.5a2.20 2.20 0 1 0 -4.41 0a2.20 2.20 0 1 0 4.41 0M148.2 175.5a2.20 2.20 0 1 0 -4.41 0a2.20 2.20 0 1 0 4.41 0M364.1 338.9a2.20 2.20 0 1 0 -4.41 0a2.20 2.20 0 1 0 4.41 0M393.0 299.8a2.20 2.20 0 1 0 -4.41 0a2.20 2.20 0 1 0 4.41 0M427.2 291.0a2.20 2.20 0 1 0 -4.41 0a2.20 2.20 0 1 0 4.41 0M153.6 239.7a2.20 2.20 0 1 0 -4.41 0a2.20 2.20 0 1 0 4.41 0M339.4 225.4a2.20 2.20 0 1 0 -4.41 0a2.20 2.20 0 1 0 4.41 0M436.0 253.7a2.20 2.20 0 1 0 -4.41 0a2.20 2.20 0 1 0 4.41 0M253.4 319.3a2.20 2.20 0 1 0 -4.41 0a2.20 2.20 0 1 0 4.41 0M286.5 273.2a2.20 2.20 0 1 0 -4.41 0a2.20 2.20 0 1 0 4.41 0M307.6 270.1a2.20 2.20 0 1 0 -4.41 0a2.20 2.20 0 1 0 4.41 0M317.9 249.4a2.20 2.20 0 1 0 -4.41 0a2.20 2.20 0 1 0 4.41 0M360.9 162.6a2.20 2.20 0 1 0 -4.41 0a2.20 2.20 0 1 0 4.41 0M388.6 269.0a2.20 2.20 0 1 0 -4.41 0a2.20 2.20 0 1 0 4.41 0M301.6 239.4a2.20 2.20 0 1 0 -4.41 0a2.20 2.20 0 1 0 4.41 0M333.7 277.2a2.20 2.20 0 1 0 -4.41 0a2.20 2.20 0 1 0 4.41 0M506.4 295.3a2.20 2.20 0 1 0 -4.41 0a2.20 2.20 0 1 0 4.41 0M341.1 210.7a2.20 2.20 0 1 0 -4.41 0a2.20 2.20 0 1 0 4.41 0M311.3 291.6a2.20 2.20 0 1 0 -4.41 0a2.20 2.20 0 1 0 4.41 0M176.5 112.2a2.20 2.20 0 1 0 -4.41 0a2.20 2.20 0 1 0 4.41 0M298.4 237.2a2.20 2.20 0 1 0 -4.41 0a2.20 2.20 0 1 0 4.41 0M264.8 237.8a2.20 2.20 0 1 0 -4.41 0a2.20 2.20 0 1 0 4.41 0M309.1 246.1a2.20 2.20 0 1 0 -4.41 0a2.20 2.20 0 1 0 4.41 0M247.6 154.0a2.20 2.20 0 1 0 -4.41 0a2.20 2.20 0 1 0 4.41 0M247.0 212.0a2.20 2.20 0 1 0 -4.41 0a2.20 2.20 0 1 0 4.41 0M236.6 255.4a2.20 2.20 0 1 0 -4.41 0a2.20 2.20 0 1 0 4.41 0M269.9 297.3a2.20 2.20 0 1 0 -4.41 0a2.20 2.20 0 1 0 4.41 0M411.0 288.2a2.20 2.20 0 1 0 -4.41 0a2.20 2.20 0 1 0 4.41 0M379.1 276.2a2.20 2.20 0 1 0 -4.41 0a2.20 2.20 0 1 0 4.41 0M285.5 185.8a2.20 2.20 0 1 0 -4.41 0a2.20 2.20 0 1 0 4.41 0M147.0 253.9a2.20 2.20 0 1 0 -4.41 0a2.20 2.20 0 1 0 4.41 0M213.4 278.8a2.20 2.20 0 1 0 -4.41 0a2.20 2.20 0 1 0 4.41 0M248.8 203.5a2.20 2.20 0 1 0 -4.41 0a2.20 2.20 0 1 0 4.41 0M325.8 178.6a2.20 2.20 0 1 0 -4.41 0a2.20 2.20 0 1 0 4.41 0M243.8 276.9a2.20 2.20 0 1 0 -4.41 0a2.20 2.20 0 1 0 4.41 0M468.1 258.4a2.20 2.20 0 1 0 -4.41 0a2.20 2.20 0 1 0 4.41 0M258.3 223.9a2.20 2.20 0 1 0 -4.41 0a2.20 2.20 0 1 0 4.41 0M200.5 245.3a2.20 2.20 0 1 0 -4.41 0a2.20 2.20 0 1 0 4.41 0M269.3 220.7a2.20 2.20 0 1 0 -4.41 0a2.20 2.20 0 1 0 4.41 0M223.6 162.5a2.20 2.20 0 1 0 -4.41 0a2.20 2.20 0 1 0 4.41 0M327.1 245.9a2.20 2.20 0 1 0 -4.41 0a2.20 2.20 0 1 0 4.41 0M305.6 253.4a2.20 2.20 0 1 0 -4.41 0a2.20 2.20 0 1 0 4.41 0M319.0 216.5a2.20 2.20 0 1 0 -4.41 0a2.20 2.20 0 1 0 4.41 0M184.1 250.3a2.20 2.20 0 1 0 -4.41 0a2.20 2.20 0 1 0 4.41 0M297.8 208.9a2.20 2.20 0 1 0 -4.41 0a2.20 2.20 0 1 0 4.41 0M336.1 252.9a2.20 2.20 0 1 0 -4.41 0a2.20 2.20 0 1 0 4.41 0M183.3 224.2a2.20 2.20 0 1 0 -4.41 0a2.20 2.20 0 1 0 4.41 0M358.9 312.7a2.20 2.20 0 1 0 -4.41 0a2.20 2.20 0 1 0 4.41 0M379.4 240.7a2.20 2.20 0 1 0 -4.41 0a2.20 2.20 0 1 0 4.41 0M471.5 258.9a2.20 2.20 0 1 0 -4.41 0a2.20 2.20 0 1 0 4.41 0M322.3 299.8a2.20 2.20 0 1 0 -4.41 0a2.20 2.20 0 1 0 4.41 0M300.4 261.3a2.20 2.20 0 1 0 -4.41 0a2.20 2.20 0 1 0 4.41 0M314.3 224.3a2.20 2.20 0 1 0 -4.41 0a2.20 2.20 0 1 0 4.41 0M292.1 235.8a2.20 2.20 0 1 0 -4.41 0a2.20 2.20 0 1 0 4.41 0M166.6 215.2a2.20 2.20 0 1 0 -4.41 0a2.20 2.20 0 1 0 4.41 0M146.3 199.2a2.20 2.20 0 1 0 -4.41 0a2.20 2.20 0 1 0 4.41 0M281.6 200.9a2.20 2.20 0 1 0 -4.41 0a2.20 2.20 0 1 0 4.41 0M242.8 258.0a2.20 2.20 0 1 0 -4.41 0a2.20 2.20 0 1 0 4.41 0M314.9 306.8a2.20 2.20 0 1 0 -4.41 0a2.20 2.20 0 1 0 4.41 0M124.9 260.7a2.20 2.20 0 1 0 -4.41 0a2.20 2.20 0 1 0 4.41 0M169.7 188.7a2.20 2.20 0 1 0 -4.41 0a2.20 2.20 0 1 0 4.41 0M193.4 248.9a2.20 2.20 0 1 0 -4.41 0a2.20 2.20 0 1 0 4.41 0M378.8 317.9a2.20 2.20 0 1 0 -4.41 0a2.20 2.20 0 1 0 4.41 0M209.1 221.0a2.20 2.20 0 1 0 -4.41 0a2.20 2.20 0 1 0 4.41 0M255.3 232.6a2.20 2.20 0 1 0 -4.41 0a2.20 2.20 0 1 0 4.41 0M291.1 259.3a2.20 2.20 0 1 0 -4.41 0a2.20 2.20 0 1 0 4.41 0M287.3 235.8a2.20 2.20 0 1 0 -4.41 0a2.20 2.20 0 1 0 4.41 0M291.7 173.4a2.20 2.20 0 1 0 -4.41 0a2.20 2.20 0 1 0 4.41 0M496.4 174.0a2.20 2.20 0 1 0 -4.41 0a2.20 2.20 0 1 0 4.41 0M197.8 265.8a2.20 2.20 0 1 0 -4.41 0a2.20 2.20 0 1 0 4.41 0M259.7 240.6a2.20 2.20 0 1 0 -4.41 0a2.20 2.20 0 1 0 4.41 0M245.1 312.0a2.20 2.20 0 1 0 -4.41 0a2.20 2.20 0 1 0 4.41 0M409.3 271.4a2.20 2.20 0 1 0 -4.41 0a2.20 2.20 0 1 0 4.41 0M255.5 149.1a2.20 2.20 0 1 0 -4.41 0a2.20 2.20 0 1 0 4.41 0M313.1 172.0a2.20 2.20 0 1 0 -4.41 0a2.20 2.20 0 1 0 4.41 0M354.9 249.8a2.20 2.20 0 1 0 -4.41 0a2.20 2.20 0 1 0 4.41 0M199.3 276.6a2.20 2.20 0 1 0 -4.41 0a2.20 2.20 0 1 0 4.41 0M439.3 303.7a2.20 2.20 0 1 0 -4.41 0a2.20 2.20 0 1 0 4.41 0M357.3 137.8a2.20 2.20 0 1 0 -4.41 0a2.20 2.20 0 1 0 4.41 0M206.6 238.6a2.20 2.20 0 1 0 -4.41 0a2.20 2.20 0 1 0 4.41 0M349.0 270.5a2.20 2.20 0 1 0 -4.41 0a2.20 2.20 0 1 0 4.41 0M273.3 189.5a2.20 2.20 0 1 0 -4.41 0a2.20 2.20 0 1 0 4.41 0M339.0 295.4a2.20 2.20 0 1 0 -4.41 0a2.20 2.20 0 1 0 4.41 0M277.2 205.5a2.20 2.20 0 1 0 -4.41 0a2.20 2.20 0 1 0 4.41 0M400.6 171.0a2.20 2.20 0 1 0 -4.41 0a2.20 2.20 0 1 0 4.41 0M172.8 253.8a2.20 2.20 0 1 0 -4.41 0a2.20 2.20 0 1 0 4.41 0M254.7 173.1a2.20 2.20 0 1 0 -4.41 0a2.20 2.20 0 1 0 4.41 0M286.9 212.4a2.20 2.20 0 1 0 -4.41 0a2.20 2.20 0 1 0 4.41 0" stroke="#111" stroke-width="1.41" fill="none"/><path d="M68.1 233.4 L99.9 235.3 L112.2 236.0 L122.7 236.6 L128.6 237.0 L138.6 237.6 L143.0 237.9 L146.0 238.1 L151.3 238.4 L153.8 238.6 L156.0 238.7 L157.3 238.8 L160.7 239.0 L165.6 239.3 L168.9 239.4 L170.6 239.5 L171.6 239.6 L176.2 239.8 L178.6 239.9 L181.4 240.0 L182.6 240.1 L185.8 240.2 L187.5 240.2 L189.8 240.3 L191.3 240.4 L192.8 240.4 L196.3 240.5 L197.4 240.5 L199.2 240.6 L200.4 240.6 L201.8 240.6 L202.3 240.7 L203.7 240.7 L204.4 240.7 L206.6 240.8 L207.8 240.8 L211.2 241.0 L213.0 241.1 L217.3 241.4 L218.5 241.5 L220.6 241.6 L221.5 241.7 L222.5 241.7 L223.8 241.9 L225.1 242.0 L226.0 242.1 L226.8 242.1 L227.8 242.2 L229.3 242.4 L230.0 242.4 L231.9 242.6 L233.7 242.8 L234.8 242.9 L235.3 242.9 L236.1 243.0 L236.3 243.0 L237.9 243.1 L238.7 243.2 L239.4 243.2 L241.3 243.3 L242.1 243.3 L243.4 243.4 L244.1 243.4 L244.9 243.4 L245.4 243.4 L245.9 243.5 L247.2 243.5 L247.7 243.5 L248.8 243.5 L249.7 243.5 L250.9 243.5 L251.9 243.5 L253.0 243.4 L253.4 243.4 L254.1 243.4 L256.0 243.4 L256.5 243.4 L257.5 243.4 L258.0 243.4 L260.0 243.3 L261.1 243.3 L262.6 243.3 L263.0 243.3 L263.2 243.3 L264.0 243.2 L266.1 243.2 L267.1 243.2 L267.4 243.2 L268.8 243.1 L270.6 243.1 L271.4 243.1 L272.2 243.0 L272.6 243.0 L273.3 243.0 L273.6 243.0 L275.2 243.0 L275.3 243.0 L276.0 243.0 L277.2 242.9 L278.2 242.9 L279.2 242.9 L279.6 242.9 L280.0 242.9 L280.6 242.9 L281.3 242.8 L281.7 242.8 L282.3 242.8 L282.8 242.8 L283.8 242.8 L284.4 242.7 L285.1 242.7 L285.6 242.7 L286.9 242.7 L287.9 242.6 L288.4 242.6 L289.3 242.6 L289.9 242.6 L291.3 242.6 L291.9 242.5 L292.2 242.5 L294.2 242.5 L295.6 242.5 L296.8 242.4 L298.7 242.4 L299.1 242.4 L299.5 242.4 L299.7 242.4 L300.2 242.4 L300.9 242.4 L301.4 242.4 L302.7 242.4 L303.4 242.4 L304.3 242.4 L305.1 242.4 L306.1 242.4 L307.4 242.4 L307.9 242.4 L308.5 242.4 L309.9 242.4 L310.9 242.5 L311.2 242.5 L311.9 242.5 L312.2 242.5 L312.7 242.5 L313.2 242.5 L313.5 242.5 L314.5 242.5 L315.7 242.5 L316.6 242.5 L317.1 242.5 L319.2 242.5 L320.0 242.5 L321.0 242.5 L321.6 242.5 L321.8 242.5 L322.7 242.5 L323.2 242.5 L324.4 242.4 L324.9 242.4 L326.0 242.4 L326.8 242.4 L327.8 242.4 L329.1 242.3 L329.7 242.3 L330.4 242.3 L330.7 242.3 L331.3 242.3 L331.7 242.2 L332.8 242.2 L333.4 242.2 L333.9 242.2 L334.5 242.1 L335.8 242.1 L336.4 242.1 L336.7 242.1 L337.5 242.0 L338.1 242.0 L339.1 242.0 L340.8 241.9 L341.4 241.9 L343.7 241.8 L345.3 241.7 L346.5 241.7 L346.9 241.7 L348.0 241.7 L349.9 241.6 L351.9 241.6 L352.7 241.6 L353.4 241.5 L354.2 241.5 L354.4 241.5 L354.8 241.5 L355.7 241.5 L356.7 241.5 L358.6 241.4 L359.0 241.4 L360.2 241.4 L360.8 241.4 L362.1 241.4 L362.4 241.4 L363.1 241.4 L364.6 241.4 L366.9 241.4 L368.8 241.4 L370.1 241.4 L372.1 241.4 L372.9 241.4 L373.6 241.4 L375.6 241.4 L376.9 241.4 L377.9 241.4 L379.6 241.4 L382.0 241.3 L382.4 241.3 L383.7 241.3 L385.2 241.3 L386.4 241.2 L387.4 241.2 L389.5 241.1 L390.8 241.1 L393.0 241.0 L393.7 241.0 L396.1 240.8 L398.7 240.7 L400.0 240.7 L400.8 240.6 L403.8 240.5 L405.4 240.4 L407.1 240.3 L408.8 240.2 L411.8 240.0 L414.1 239.9 L416.9 239.8 L418.7 239.7 L420.4 239.6 L426.4 239.4 L430.7 239.2 L433.8 239.1 L437.1 239.0 L438.8 239.0 L443.7 238.9 L453.9 238.7 L465.4 238.5 L468.8 238.4 L471.3 238.4 L474.2 238.4 L487.4 238.1 L492.3 238.0 L500.9 237.9 L512.5 237.6" stroke="#DF536B" stroke-width="0.94" fill="none"/><rect x="48.2" y="48.2" width="538.2" height="380.9" stroke="#111" stroke-width="0.82" fill="none"/><path d="M94.7 429.1v5.9M196.0 429.1v5.9M297.3 429.1v5.9M398.5 429.1v5.9M499.8 429.1v5.9M48.2 386.4h-5.9M48.2 290.1h-5.9M48.2 193.7h-5.9M48.2 97.3h-5.9" stroke="#111" stroke-width="0.82"/><g style="font-family:'Liberation Sans',sans-serif" fill="#000" font-size="9.79"><text x="94.7" y="450.2" text-anchor="middle">-10</text><text x="196.0" y="450.2" text-anchor="middle">-5</text><text x="297.3" y="450.2" text-anchor="middle">0</text><text x="398.5" y="450.2" text-anchor="middle">5</text><text x="499.8" y="450.2" text-anchor="middle">10</text><text transform="rotate(-90 34.1 386.4)" x="34.1" y="386.4" text-anchor="middle">-1.5</text><text transform="rotate(-90 34.1 290.1)" x="34.1" y="290.1" text-anchor="middle">-0.5</text><text transform="rotate(-90 34.1 193.7)" x="34.1" y="193.7" text-anchor="middle">0.5</text><text transform="rotate(-90 34.1 97.3)" x="34.1" y="97.3" text-anchor="middle">1.5</text><text x="317.2" y="42.9" text-anchor="middle">Residuals vs Fitted</text><text x="317.2" y="473.7" text-anchor="middle">Fitted values</text><text x="317.2" y="485.5" text-anchor="middle">lm(y ~ x1 + x2)</text><text transform="rotate(-90 10.6 238.6)" x="10.6" y="238.6" text-anchor="middle">Residuals</text></g></svg>
<svg class="a" style="left:434.9px;top:811.3px" width="114.6" height="91.5" viewBox="0 0 611 489" preserveAspectRatio="none" fill="none"><rect width="611" height="489" fill="#fff"/><path d="M70.3 415.0a2.20 2.20 0 1 0 -4.41 0a2.20 2.20 0 1 0 4.41 0M94.7 405.0a2.20 2.20 0 1 0 -4.41 0a2.20 2.20 0 1 0 4.41 0M106.9 394.0a2.20 2.20 0 1 0 -4.41 0a2.20 2.20 0 1 0 4.41 0M115.3 389.4a2.20 2.20 0 1 0 -4.41 0a2.20 2.20 0 1 0 4.41 0M121.7 386.9a2.20 2.20 0 1 0 -4.41 0a2.20 2.20 0 1 0 4.41 0M126.9 384.9a2.20 2.20 0 1 0 -4.41 0a2.20 2.20 0 1 0 4.41 0M131.4 383.3a2.20 2.20 0 1 0 -4.41 0a2.20 2.20 0 1 0 4.41 0M135.3 380.6a2.20 2.20 0 1 0 -4.41 0a2.20 2.20 0 1 0 4.41 0M138.7 376.4a2.20 2.20 0 1 0 -4.41 0a2.20 2.20 0 1 0 4.41 0M141.9 375.9a2.20 2.20 0 1 0 -4.41 0a2.20 2.20 0 1 0 4.41 0M144.7 372.0a2.20 2.20 0 1 0 -4.41 0a2.20 2.20 0 1 0 4.41 0M147.3 371.4a2.20 2.20 0 1 0 -4.41 0a2.20 2.20 0 1 0 4.41 0M149.7 370.9a2.20 2.20 0 1 0 -4.41 0a2.20 2.20 0 1 0 4.41 0M152.0 368.0a2.20 2.20 0 1 0 -4.41 0a2.20 2.20 0 1 0 4.41 0M154.1 367.8a2.20 2.20 0 1 0 -4.41 0a2.20 2.20 0 1 0 4.41 0M156.1 366.3a2.20 2.20 0 1 0 -4.41 0a2.20 2.20 0 1 0 4.41 0M158.0 365.0a2.20 2.20 0 1 0 -4.41 0a2.20 2.20 0 1 0 4.41 0M159.8 363.6a2.20 2.20 0 1 0 -4.41 0a2.20 2.20 0 1 0 4.41 0M161.5 361.3a2.20 2.20 0 1 0 -4.41 0a2.20 2.20 0 1 0 4.41 0M163.2 361.3a2.20 2.20 0 1 0 -4.41 0a2.20 2.20 0 1 0 4.41 0M164.7 360.9a2.20 2.20 0 1 0 -4.41 0a2.20 2.20 0 1 0 4.41 0M166.2 360.7a2.20 2.20 0 1 0 -4.41 0a2.20 2.20 0 1 0 4.41 0M167.7 360.1a2.20 2.20 0 1 0 -4.41 0a2.20 2.20 0 1 0 4.41 0M169.1 359.2a2.20 2.20 0 1 0 -4.41 0a2.20 2.20 0 1 0 4.41 0M170.4 357.9a2.20 2.20 0 1 0 -4.41 0a2.20 2.20 0 1 0 4.41 0M171.7 357.5a2.20 2.20 0 1 0 -4.41 0a2.20 2.20 0 1 0 4.41 0M172.9 357.0a2.20 2.20 0 1 0 -4.41 0a2.20 2.20 0 1 0 4.41 0M174.2 356.2a2.20 2.20 0 1 0 -4.41 0a2.20 2.20 0 1 0 4.41 0M175.3 355.9a2.20 2.20 0 1 0 -4.41 0a2.20 2.20 0 1 0 4.41 0M176.5 355.9a2.20 2.20 0 1 0 -4.41 0a2.20 2.20 0 1 0 4.41 0M177.6 355.6a2.20 2.20 0 1 0 -4.41 0a2.20 2.20 0 1 0 4.41 0M178.7 355.0a2.20 2.20 0 1 0 -4.41 0a2.20 2.20 0 1 0 4.41 0M179.7 354.6a2.20 2.20 0 1 0 -4.41 0a2.20 2.20 0 1 0 4.41 0M180.8 354.6a2.20 2.20 0 1 0 -4.41 0a2.20 2.20 0 1 0 4.41 0M181.8 352.6a2.20 2.20 0 1 0 -4.41 0a2.20 2.20 0 1 0 4.41 0M182.8 351.8a2.20 2.20 0 1 0 -4.41 0a2.20 2.20 0 1 0 4.41 0M183.7 351.7a2.20 2.20 0 1 0 -4.41 0a2.20 2.20 0 1 0 4.41 0M184.6 350.7a2.20 2.20 0 1 0 -4.41 0a2.20 2.20 0 1 0 4.41 0M185.6 350.4a2.20 2.20 0 1 0 -4.41 0a2.20 2.20 0 1 0 4.41 0M186.5 349.3a2.20 2.20 0 1 0 -4.41 0a2.20 2.20 0 1 0 4.41 0M187.3 347.0a2.20 2.20 0 1 0 -4.41 0a2.20 2.20 0 1 0 4.41 0M188.2 344.9a2.20 2.20 0 1 0 -4.41 0a2.20 2.20 0 1 0 4.41 0M189.0 344.6a2.20 2.20 0 1 0 -4.41 0a2.20 2.20 0 1 0 4.41 0M189.9 344.0a2.20 2.20 0 1 0 -4.41 0a2.20 2.20 0 1 0 4.41 0M190.7 343.5a2.20 2.20 0 1 0 -4.41 0a2.20 2.20 0 1 0 4.41 0M191.5 342.2a2.20 2.20 0 1 0 -4.41 0a2.20 2.20 0 1 0 4.41 0M192.3 342.0a2.20 2.20 0 1 0 -4.41 0a2.20 2.20 0 1 0 4.41 0M193.0 341.8a2.20 2.20 0 1 0 -4.41 0a2.20 2.20 0 1 0 4.41 0M193.8 340.9a2.20 2.20 0 1 0 -4.41 0a2.20 2.20 0 1 0 4.41 0M194.5 340.2a2.20 2.20 0 1 0 -4.41 0a2.20 2.20 0 1 0 4.41 0M195.3 340.0a2.20 2.20 0 1 0 -4.41 0a2.20 2.20 0 1 0 4.41 0M196.0 339.6a2.20 2.20 0 1 0 -4.41 0a2.20 2.20 0 1 0 4.41 0M196.7 339.3a2.20 2.20 0 1 0 -4.41 0a2.20 2.20 0 1 0 4.41 0M197.4 338.0a2.20 2.20 0 1 0 -4.41 0a2.20 2.20 0 1 0 4.41 0M198.1 336.5a2.20 2.20 0 1 0 -4.41 0a2.20 2.20 0 1 0 4.41 0M198.8 335.8a2.20 2.20 0 1 0 -4.41 0a2.20 2.20 0 1 0 4.41 0M199.5 335.6a2.20 2.20 0 1 0 -4.41 0a2.20 2.20 0 1 0 4.41 0M200.1 335.4a2.20 2.20 0 1 0 -4.41 0a2.20 2.20 0 1 0 4.41 0M200.8 335.1a2.20 2.20 0 1 0 -4.41 0a2.20 2.20 0 1 0 4.41 0M201.4 334.7a2.20 2.20 0 1 0 -4.41 0a2.20 2.20 0 1 0 4.41 0M202.0 334.6a2.20 2.20 0 1 0 -4.41 0a2.20 2.20 0 1 0 4.41 0M202.7 333.7a2.20 2.20 0 1 0 -4.41 0a2.20 2.20 0 1 0 4.41 0M203.3 333.2a2.20 2.20 0 1 0 -4.41 0a2.20 2.20 0 1 0 4.41 0M203.9 333.2a2.20 2.20 0 1 0 -4.41 0a2.20 2.20 0 1 0 4.41 0M204.5 333.1a2.20 2.20 0 1 0 -4.41 0a2.20 2.20 0 1 0 4.41 0M205.1 332.6a2.20 2.20 0 1 0 -4.41 0a2.20 2.20 0 1 0 4.41 0M205.7 331.9a2.20 2.20 0 1 0 -4.41 0a2.20 2.20 0 1 0 4.41 0M206.3 331.8a2.20 2.20 0 1 0 -4.41 0a2.20 2.20 0 1 0 4.41 0M206.9 331.1a2.20 2.20 0 1 0 -4.41 0a2.20 2.20 0 1 0 4.41 0M207.4 330.9a2.20 2.20 0 1 0 -4.41 0a2.20 2.20 0 1 0 4.41 0M208.0 330.7a2.20 2.20 0 1 0 -4.41 0a2.20 2.20 0 1 0 4.41 0M208.6 330.4a2.20 2.20 0 1 0 -4.41 0a2.20 2.20 0 1 0 4.41 0M209.1 330.1a2.20 2.20 0 1 0 -4.41 0a2.20 2.20 0 1 0 4.41 0M209.6 329.4a2.20 2.20 0 1 0 -4.41 0a2.20 2.20 0 1 0 4.41 0M210.2 328.8a2.20 2.20 0 1 0 -4.41 0a2.20 2.20 0 1 0 4.41 0M210.7 326.5a2.20 2.20 0 1 0 -4.41 0a2.20 2.20 0 1 0 4.41 0M211.3 326.2a2.20 2.20 0 1 0 -4.41 0a2.20 2.20 0 1 0 4.41 0M211.8 325.3a2.20 2.20 0 1 0 -4.41 0a2.20 2.20 0 1 0 4.41 0M212.3 324.9a2.20 2.20 0 1 0 -4.41 0a2.20 2.20 0 1 0 4.41 0M212.8 324.8a2.20 2.20 0 1 0 -4.41 0a2.20 2.20 0 1 0 4.41 0M213.3 324.6a2.20 2.20 0 1 0 -4.41 0a2.20 2.20 0 1 0 4.41 0M213.8 324.5a2.20 2.20 0 1 0 -4.41 0a2.20 2.20 0 1 0 4.41 0M214.3 324.5a2.20 2.20 0 1 0 -4.41 0a2.20 2.20 0 1 0 4.41 0M214.8 324.5a2.20 2.20 0 1 0 -4.41 0a2.20 2.20 0 1 0 4.41 0M215.3 324.1a2.20 2.20 0 1 0 -4.41 0a2.20 2.20 0 1 0 4.41 0M215.8 323.6a2.20 2.20 0 1 0 -4.41 0a2.20 2.20 0 1 0 4.41 0M216.3 323.4a2.20 2.20 0 1 0 -4.41 0a2.20 2.20 0 1 0 4.41 0M216.8 321.4a2.20 2.20 0 1 0 -4.41 0a2.20 2.20 0 1 0 4.41 0M217.2 321.2a2.20 2.20 0 1 0 -4.41 0a2.20 2.20 0 1 0 4.41 0M217.7 320.8a2.20 2.20 0 1 0 -4.41 0a2.20 2.20 0 1 0 4.41 0M218.2 320.7a2.20 2.20 0 1 0 -4.41 0a2.20 2.20 0 1 0 4.41 0M218.6 320.5a2.20 2.20 0 1 0 -4.41 0a2.20 2.20 0 1 0 4.41 0M219.1 319.9a2.20 2.20 0 1 0 -4.41 0a2.20 2.20 0 1 0 4.41 0M219.5 319.7a2.20 2.20 0 1 0 -4.41 0a2.20 2.20 0 1 0 4.41 0M220.0 319.5a2.20 2.20 0 1 0 -4.41 0a2.20 2.20 0 1 0 4.41 0M220.4 319.2a2.20 2.20 0 1 0 -4.41 0a2.20 2.20 0 1 0 4.41 0M220.9 319.1a2.20 2.20 0 1 0 -4.41 0a2.20 2.20 0 1 0 4.41 0M221.3 319.0a2.20 2.20 0 1 0 -4.41 0a2.20 2.20 0 1 0 4.41 0M221.8 317.4a2.20 2.20 0 1 0 -4.41 0a2.20 2.20 0 1 0 4.41 0M222.2 317.4a2.20 2.20 0 1 0 -4.41 0a2.20 2.20 0 1 0 4.41 0M222.6 317.1a2.20 2.20 0 1 0 -4.41 0a2.20 2.20 0 1 0 4.41 0M223.1 316.9a2.20 2.20 0 1 0 -4.41 0a2.20 2.20 0 1 0 4.41 0M223.5 316.9a2.20 2.20 0 1 0 -4.41 0a2.20 2.20 0 1 0 4.41 0M223.9 316.9a2.20 2.20 0 1 0 -4.41 0a2.20 2.20 0 1 0 4.41 0M224.3 316.1a2.20 2.20 0 1 0 -4.41 0a2.20 2.20 0 1 0 4.41 0M224.7 316.0a2.20 2.20 0 1 0 -4.41 0a2.20 2.20 0 1 0 4.41 0M225.2 315.7a2.20 2.20 0 1 0 -4.41 0a2.20 2.20 0 1 0 4.41 0M225.6 315.5a2.20 2.20 0 1 0 -4.41 0a2.20 2.20 0 1 0 4.41 0M226.0 314.3a2.20 2.20 0 1 0 -4.41 0a2.20 2.20 0 1 0 4.41 0M226.4 314.2a2.20 2.20 0 1 0 -4.41 0a2.20 2.20 0 1 0 4.41 0M226.8 313.8a2.20 2.20 0 1 0 -4.41 0a2.20 2.20 0 1 0 4.41 0M227.2 313.6a2.20 2.20 0 1 0 -4.41 0a2.20 2.20 0 1 0 4.41 0M227.6 313.5a2.20 2.20 0 1 0 -4.41 0a2.20 2.20 0 1 0 4.41 0M228.0 313.5a2.20 2.20 0 1 0 -4.41 0a2.20 2.20 0 1 0 4.41 0M228.4 313.4a2.20 2.20 0 1 0 -4.41 0a2.20 2.20 0 1 0 4.41 0M228.8 313.2a2.20 2.20 0 1 0 -4.41 0a2.20 2.20 0 1 0 4.41 0M229.1 313.1a2.20 2.20 0 1 0 -4.41 0a2.20 2.20 0 1 0 4.41 0M229.5 313.0a2.20 2.20 0 1 0 -4.41 0a2.20 2.20 0 1 0 4.41 0M229.9 312.9a2.20 2.20 0 1 0 -4.41 0a2.20 2.20 0 1 0 4.41 0M230.3 312.8a2.20 2.20 0 1 0 -4.41 0a2.20 2.20 0 1 0 4.41 0M230.7 312.8a2.20 2.20 0 1 0 -4.41 0a2.20 2.20 0 1 0 4.41 0M231.1 312.5a2.20 2.20 0 1 0 -4.41 0a2.20 2.20 0 1 0 4.41 0M231.4 312.3a2.20 2.20 0 1 0 -4.41 0a2.20 2.20 0 1 0 4.41 0M231.8 312.2a2.20 2.20 0 1 0 -4.41 0a2.20 2.20 0 1 0 4.41 0M232.2 312.2a2.20 2.20 0 1 0 -4.41 0a2.20 2.20 0 1 0 4.41 0M232.5 311.8a2.20 2.20 0 1 0 -4.41 0a2.20 2.20 0 1 0 4.41 0M232.9 311.7a2.20 2.20 0 1 0 -4.41 0a2.20 2.20 0 1 0 4.41 0M233.3 311.3a2.20 2.20 0 1 0 -4.41 0a2.20 2.20 0 1 0 4.41 0M233.6 311.1a2.20 2.20 0 1 0 -4.41 0a2.20 2.20 0 1 0 4.41 0M234.0 311.1a2.20 2.20 0 1 0 -4.41 0a2.20 2.20 0 1 0 4.41 0M234.3 310.8a2.20 2.20 0 1 0 -4.41 0a2.20 2.20 0 1 0 4.41 0M234.7 310.6a2.20 2.20 0 1 0 -4.41 0a2.20 2.20 0 1 0 4.41 0M235.1 310.5a2.20 2.20 0 1 0 -4.41 0a2.20 2.20 0 1 0 4.41 0M235.4 309.9a2.20 2.20 0 1 0 -4.41 0a2.20 2.20 0 1 0 4.41 0M235.8 309.5a2.20 2.20 0 1 0 -4.41 0a2.20 2.20 0 1 0 4.41 0M236.1 309.5a2.20 2.20 0 1 0 -4.41 0a2.20 2.20 0 1 0 4.41 0M236.5 309.3a2.20 2.20 0 1 0 -4.41 0a2.20 2.20 0 1 0 4.41 0M236.8 309.2a2.20 2.20 0 1 0 -4.41 0a2.20 2.20 0 1 0 4.41 0M237.1 309.1a2.20 2.20 0 1 0 -4.41 0a2.20 2.20 0 1 0 4.41 0M237.5 309.0a2.20 2.20 0 1 0 -4.41 0a2.20 2.20 0 1 0 4.41 0M237.8 308.9a2.20 2.20 0 1 0 -4.41 0a2.20 2.20 0 1 0 4.41 0M238.2 308.7a2.20 2.20 0 1 0 -4.41 0a2.20 2.20 0 1 0 4.41 0M238.5 308.6a2.20 2.20 0 1 0 -4.41 0a2.20 2.20 0 1 0 4.41 0M238.8 308.5a2.20 2.20 0 1 0 -4.41 0a2.20 2.20 0 1 0 4.41 0M239.2 308.4a2.20 2.20 0 1 0 -4.41 0a2.20 2.20 0 1 0 4.41 0M239.5 308.1a2.20 2.20 0 1 0 -4.41 0a2.20 2.20 0 1 0 4.41 0M239.8 308.0a2.20 2.20 0 1 0 -4.41 0a2.20 2.20 0 1 0 4.41 0M240.2 308.0a2.20 2.20 0 1 0 -4.41 0a2.20 2.20 0 1 0 4.41 0M240.5 307.6a2.20 2.20 0 1 0 -4.41 0a2.20 2.20 0 1 0 4.41 0M240.8 307.6a2.20 2.20 0 1 0 -4.41 0a2.20 2.20 0 1 0 4.41 0M241.1 307.5a2.20 2.20 0 1 0 -4.41 0a2.20 2.20 0 1 0 4.41 0M241.5 307.5a2.20 2.20 0 1 0 -4.41 0a2.20 2.20 0 1 0 4.41 0M241.8 307.4a2.20 2.20 0 1 0 -4.41 0a2.20 2.20 0 1 0 4.41 0M242.1 306.7a2.20 2.20 0 1 0 -4.41 0a2.20 2.20 0 1 0 4.41 0M242.4 306.7a2.20 2.20 0 1 0 -4.41 0a2.20 2.20 0 1 0 4.41 0M242.7 306.6a2.20 2.20 0 1 0 -4.41 0a2.20 2.20 0 1 0 4.41 0M243.1 306.6a2.20 2.20 0 1 0 -4.41 0a2.20 2.20 0 1 0 4.41 0M243.4 306.3a2.20 2.20 0 1 0 -4.41 0a2.20 2.20 0 1 0 4.41 0M243.7 306.2a2.20 2.20 0 1 0 -4.41 0a2.20 2.20 0 1 0 4.41 0M244.0 305.9a2.20 2.20 0 1 0 -4.41 0a2.20 2.20 0 1 0 4.41 0M244.3 305.7a2.20 2.20 0 1 0 -4.41 0a2.20 2.20 0 1 0 4.41 0M244.6 305.3a2.20 2.20 0 1 0 -4.41 0a2.20 2.20 0 1 0 4.41 0M244.9 305.2a2.20 2.20 0 1 0 -4.41 0a2.20 2.20 0 1 0 4.41 0M245.2 305.0a2.20 2.20 0 1 0 -4.41 0a2.20 2.20 0 1 0 4.41 0M245.5 304.9a2.20 2.20 0 1 0 -4.41 0a2.20 2.20 0 1 0 4.41 0M245.9 304.7a2.20 2.20 0 1 0 -4.41 0a2.20 2.20 0 1 0 4.41 0M246.2 304.4a2.20 2.20 0 1 0 -4.41 0a2.20 2.20 0 1 0 4.41 0M246.5 304.4a2.20 2.20 0 1 0 -4.41 0a2.20 2.20 0 1 0 4.41 0M246.8 304.1a2.20 2.20 0 1 0 -4.41 0a2.20 2.20 0 1 0 4.41 0M247.1 304.0a2.20 2.20 0 1 0 -4.41 0a2.20 2.20 0 1 0 4.41 0M247.4 303.6a2.20 2.20 0 1 0 -4.41 0a2.20 2.20 0 1 0 4.41 0M247.7 303.6a2.20 2.20 0 1 0 -4.41 0a2.20 2.20 0 1 0 4.41 0M248.0 303.1a2.20 2.20 0 1 0 -4.41 0a2.20 2.20 0 1 0 4.41 0M248.2 302.9a2.20 2.20 0 1 0 -4.41 0a2.20 2.20 0 1 0 4.41 0M248.5 301.9a2.20 2.20 0 1 0 -4.41 0a2.20 2.20 0 1 0 4.41 0M248.8 301.9a2.20 2.20 0 1 0 -4.41 0a2.20 2.20 0 1 0 4.41 0M249.1 301.7a2.20 2.20 0 1 0 -4.41 0a2.20 2.20 0 1 0 4.41 0M249.4 301.7a2.20 2.20 0 1 0 -4.41 0a2.20 2.20 0 1 0 4.41 0M249.7 300.1a2.20 2.20 0 1 0 -4.41 0a2.20 2.20 0 1 0 4.41 0M250.0 299.8a2.20 2.20 0 1 0 -4.41 0a2.20 2.20 0 1 0 4.41 0M250.3 299.7a2.20 2.20 0 1 0 -4.41 0a2.20 2.20 0 1 0 4.41 0M250.6 299.2a2.20 2.20 0 1 0 -4.41 0a2.20 2.20 0 1 0 4.41 0M250.9 298.9a2.20 2.20 0 1 0 -4.41 0a2.20 2.20 0 1 0 4.41 0M251.1 298.4a2.20 2.20 0 1 0 -4.41 0a2.20 2.20 0 1 0 4.41 0M251.4 298.1a2.20 2.20 0 1 0 -4.41 0a2.20 2.20 0 1 0 4.41 0M251.7 298.0a2.20 2.20 0 1 0 -4.41 0a2.20 2.20 0 1 0 4.41 0M252.0 297.9a2.20 2.20 0 1 0 -4.41 0a2.20 2.20 0 1 0 4.41 0M252.3 297.8a2.20 2.20 0 1 0 -4.41 0a2.20 2.20 0 1 0 4.41 0M252.6 297.8a2.20 2.20 0 1 0 -4.41 0a2.20 2.20 0 1 0 4.41 0M252.8 297.8a2.20 2.20 0 1 0 -4.41 0a2.20 2.20 0 1 0 4.41 0M253.1 297.8a2.20 2.20 0 1 0 -4.41 0a2.20 2.20 0 1 0 4.41 0M253.4 297.8a2.20 2.20 0 1 0 -4.41 0a2.20 2.20 0 1 0 4.41 0M253.7 297.8a2.20 2.20 0 1 0 -4.41 0a2.20 2.20 0 1 0 4.41 0M254.0 297.7a2.20 2.20 0 1 0 -4.41 0a2.20 2.20 0 1 0 4.41 0M254.2 297.6a2.20 2.20 0 1 0 -4.41 0a2.20 2.20 0 1 0 4.41 0M254.5 297.5a2.20 2.20 0 1 0 -4.41 0a2.20 2.20 0 1 0 4.41 0M254.8 297.2a2.20 2.20 0 1 0 -4.41 0a2.20 2.20 0 1 0 4.41 0M255.1 297.1a2.20 2.20 0 1 0 -4.41 0a2.20 2.20 0 1 0 4.41 0M255.3 297.0a2.20 2.20 0 1 0 -4.41 0a2.20 2.20 0 1 0 4.41 0M255.6 297.0a2.20 2.20 0 1 0 -4.41 0a2.20 2.20 0 1 0 4.41 0M255.9 296.8a2.20 2.20 0 1 0 -4.41 0a2.20 2.20 0 1 0 4.41 0M256.1 296.7a2.20 2.20 0 1 0 -4.41 0a2.20 2.20 0 1 0 4.41 0M256.4 296.5a2.20 2.20 0 1 0 -4.41 0a2.20 2.20 0 1 0 4.41 0M256.7 296.4a2.20 2.20 0 1 0 -4.41 0a2.20 2.20 0 1 0 4.41 0M256.9 296.1a2.20 2.20 0 1 0 -4.41 0a2.20 2.20 0 1 0 4.41 0M257.2 296.0a2.20 2.20 0 1 0 -4.41 0a2.20 2.20 0 1 0 4.41 0M257.5 295.9a2.20 2.20 0 1 0 -4.41 0a2.20 2.20 0 1 0 4.41 0M257.7 295.5a2.20 2.20 0 1 0 -4.41 0a2.20 2.20 0 1 0 4.41 0M258.0 295.5a2.20 2.20 0 1 0 -4.41 0a2.20 2.20 0 1 0 4.41 0M258.3 295.4a2.20 2.20 0 1 0 -4.41 0a2.20 2.20 0 1 0 4.41 0M258.5 295.1a2.20 2.20 0 1 0 -4.41 0a2.20 2.20 0 1 0 4.41 0M258.8 295.1a2.20 2.20 0 1 0 -4.41 0a2.20 2.20 0 1 0 4.41 0M259.0 295.1a2.20 2.20 0 1 0 -4.41 0a2.20 2.20 0 1 0 4.41 0M259.3 295.0a2.20 2.20 0 1 0 -4.41 0a2.20 2.20 0 1 0 4.41 0M259.6 294.9a2.20 2.20 0 1 0 -4.41 0a2.20 2.20 0 1 0 4.41 0M259.8 294.5a2.20 2.20 0 1 0 -4.41 0a2.20 2.20 0 1 0 4.41 0M260.1 294.3a2.20 2.20 0 1 0 -4.41 0a2.20 2.20 0 1 0 4.41 0M260.3 294.3a2.20 2.20 0 1 0 -4.41 0a2.20 2.20 0 1 0 4.41 0M260.6 294.2a2.20 2.20 0 1 0 -4.41 0a2.20 2.20 0 1 0 4.41 0M260.9 294.2a2.20 2.20 0 1 0 -4.41 0a2.20 2.20 0 1 0 4.41 0M261.1 293.7a2.20 2.20 0 1 0 -4.41 0a2.20 2.20 0 1 0 4.41 0M261.4 293.7a2.20 2.20 0 1 0 -4.41 0a2.20 2.20 0 1 0 4.41 0M261.6 293.5a2.20 2.20 0 1 0 -4.41 0a2.20 2.20 0 1 0 4.41 0M261.9 293.5a2.20 2.20 0 1 0 -4.41 0a2.20 2.20 0 1 0 4.41 0M262.1 293.4a2.20 2.20 0 1 0 -4.41 0a2.20 2.20 0 1 0 4.41 0M262.4 292.7a2.20 2.20 0 1 0 -4.41 0a2.20 2.20 0 1 0 4.41 0M262.6 292.5a2.20 2.20 0 1 0 -4.41 0a2.20 2.20 0 1 0 4.41 0M262.9 292.5a2.20 2.20 0 1 0 -4.41 0a2.20 2.20 0 1 0 4.41 0M263.1 292.2a2.20 2.20 0 1 0 -4.41 0a2.20 2.20 0 1 0 4.41 0M263.4 292.2a2.20 2.20 0 1 0 -4.41 0a2.20 2.20 0 1 0 4.41 0M263.6 292.0a2.20 2.20 0 1 0 -4.41 0a2.20 2.20 0 1 0 4.41 0M263.9 291.9a2.20 2.20 0 1 0 -4.41 0a2.20 2.20 0 1 0 4.41 0M264.1 291.5a2.20 2.20 0 1 0 -4.41 0a2.20 2.20 0 1 0 4.41 0M264.4 290.8a2.20 2.20 0 1 0 -4.41 0a2.20 2.20 0 1 0 4.41 0M264.6 290.7a2.20 2.20 0 1 0 -4.41 0a2.20 2.20 0 1 0 4.41 0M264.9 290.7a2.20 2.20 0 1 0 -4.41 0a2.20 2.20 0 1 0 4.41 0M265.1 290.6a2.20 2.20 0 1 0 -4.41 0a2.20 2.20 0 1 0 4.41 0M265.4 290.3a2.20 2.20 0 1 0 -4.41 0a2.20 2.20 0 1 0 4.41 0M265.6 289.9a2.20 2.20 0 1 0 -4.41 0a2.20 2.20 0 1 0 4.41 0M265.9 289.6a2.20 2.20 0 1 0 -4.41 0a2.20 2.20 0 1 0 4.41 0M266.1 289.6a2.20 2.20 0 1 0 -4.41 0a2.20 2.20 0 1 0 4.41 0M266.3 289.3a2.20 2.20 0 1 0 -4.41 0a2.20 2.20 0 1 0 4.41 0M266.6 289.1a2.20 2.20 0 1 0 -4.41 0a2.20 2.20 0 1 0 4.41 0M266.8 289.0a2.20 2.20 0 1 0 -4.41 0a2.20 2.20 0 1 0 4.41 0M267.1 288.8a2.20 2.20 0 1 0 -4.41 0a2.20 2.20 0 1 0 4.41 0M267.3 288.5a2.20 2.20 0 1 0 -4.41 0a2.20 2.20 0 1 0 4.41 0M267.5 288.3a2.20 2.20 0 1 0 -4.41 0a2.20 2.20 0 1 0 4.41 0M267.8 288.2a2.20 2.20 0 1 0 -4.41 0a2.20 2.20 0 1 0 4.41 0M268.0 288.2a2.20 2.20 0 1 0 -4.41 0a2.20 2.20 0 1 0 4.41 0M268.3 288.2a2.20 2.20 0 1 0 -4.41 0a2.20 2.20 0 1 0 4.41 0M268.5 287.1a2.20 2.20 0 1 0 -4.41 0a2.20 2.20 0 1 0 4.41 0M268.7 287.0a2.20 2.20 0 1 0 -4.41 0a2.20 2.20 0 1 0 4.41 0M269.0 286.9a2.20 2.20 0 1 0 -4.41 0a2.20 2.20 0 1 0 4.41 0M269.2 286.9a2.20 2.20 0 1 0 -4.41 0a2.20 2.20 0 1 0 4.41 0M269.5 286.9a2.20 2.20 0 1 0 -4.41 0a2.20 2.20 0 1 0 4.41 0M269.7 286.8a2.20 2.20 0 1 0 -4.41 0a2.20 2.20 0 1 0 4.41 0M269.9 286.6a2.20 2.20 0 1 0 -4.41 0a2.20 2.20 0 1 0 4.41 0M270.2 286.5a2.20 2.20 0 1 0 -4.41 0a2.20 2.20 0 1 0 4.41 0M270.4 286.4a2.20 2.20 0 1 0 -4.41 0a2.20 2.20 0 1 0 4.41 0M270.6 286.4a2.20 2.20 0 1 0 -4.41 0a2.20 2.20 0 1 0 4.41 0M270.9 286.2a2.20 2.20 0 1 0 -4.41 0a2.20 2.20 0 1 0 4.41 0M271.1 285.8a2.20 2.20 0 1 0 -4.41 0a2.20 2.20 0 1 0 4.41 0M271.3 285.5a2.20 2.20 0 1 0 -4.41 0a2.20 2.20 0 1 0 4.41 0M271.6 285.3a2.20 2.20 0 1 0 -4.41 0a2.20 2.20 0 1 0 4.41 0M271.8 285.1a2.20 2.20 0 1 0 -4.41 0a2.20 2.20 0 1 0 4.41 0M272.0 285.0a2.20 2.20 0 1 0 -4.41 0a2.20 2.20 0 1 0 4.41 0M272.2 284.9a2.20 2.20 0 1 0 -4.41 0a2.20 2.20 0 1 0 4.41 0M272.5 284.8a2.20 2.20 0 1 0 -4.41 0a2.20 2.20 0 1 0 4.41 0M272.7 284.8a2.20 2.20 0 1 0 -4.41 0a2.20 2.20 0 1 0 4.41 0M272.9 284.8a2.20 2.20 0 1 0 -4.41 0a2.20 2.20 0 1 0 4.41 0M273.2 284.7a2.20 2.20 0 1 0 -4.41 0a2.20 2.20 0 1 0 4.41 0M273.4 284.7a2.20 2.20 0 1 0 -4.41 0a2.20 2.20 0 1 0 4.41 0M273.6 284.5a2.20 2.20 0 1 0 -4.41 0a2.20 2.20 0 1 0 4.41 0M273.9 284.5a2.20 2.20 0 1 0 -4.41 0a2.20 2.20 0 1 0 4.41 0M274.1 284.5a2.20 2.20 0 1 0 -4.41 0a2.20 2.20 0 1 0 4.41 0M274.3 284.4a2.20 2.20 0 1 0 -4.41 0a2.20 2.20 0 1 0 4.41 0M274.5 284.2a2.20 2.20 0 1 0 -4.41 0a2.20 2.20 0 1 0 4.41 0M274.8 283.9a2.20 2.20 0 1 0 -4.41 0a2.20 2.20 0 1 0 4.41 0M275.0 283.8a2.20 2.20 0 1 0 -4.41 0a2.20 2.20 0 1 0 4.41 0M275.2 283.8a2.20 2.20 0 1 0 -4.41 0a2.20 2.20 0 1 0 4.41 0M275.4 283.7a2.20 2.20 0 1 0 -4.41 0a2.20 2.20 0 1 0 4.41 0M275.7 283.7a2.20 2.20 0 1 0 -4.41 0a2.20 2.20 0 1 0 4.41 0M275.9 283.7a2.20 2.20 0 1 0 -4.41 0a2.20 2.20 0 1 0 4.41 0M276.1 283.6a2.20 2.20 0 1 0 -4.41 0a2.20 2.20 0 1 0 4.41 0M276.3 283.4a2.20 2.20 0 1 0 -4.41 0a2.20 2.20 0 1 0 4.41 0M276.6 283.3a2.20 2.20 0 1 0 -4.41 0a2.20 2.20 0 1 0 4.41 0M276.8 283.2a2.20 2.20 0 1 0 -4.41 0a2.20 2.20 0 1 0 4.41 0M277.0 283.1a2.20 2.20 0 1 0 -4.41 0a2.20 2.20 0 1 0 4.41 0M277.2 283.0a2.20 2.20 0 1 0 -4.41 0a2.20 2.20 0 1 0 4.41 0M277.4 282.7a2.20 2.20 0 1 0 -4.41 0a2.20 2.20 0 1 0 4.41 0M277.7 282.6a2.20 2.20 0 1 0 -4.41 0a2.20 2.20 0 1 0 4.41 0M277.9 282.5a2.20 2.20 0 1 0 -4.41 0a2.20 2.20 0 1 0 4.41 0M278.1 282.4a2.20 2.20 0 1 0 -4.41 0a2.20 2.20 0 1 0 4.41 0M278.3 282.4a2.20 2.20 0 1 0 -4.41 0a2.20 2.20 0 1 0 4.41 0M278.5 282.1a2.20 2.20 0 1 0 -4.41 0a2.20 2.20 0 1 0 4.41 0M278.8 282.0a2.20 2.20 0 1 0 -4.41 0a2.20 2.20 0 1 0 4.41 0M279.0 282.0a2.20 2.20 0 1 0 -4.41 0a2.20 2.20 0 1 0 4.41 0M279.2 281.6a2.20 2.20 0 1 0 -4.41 0a2.20 2.20 0 1 0 4.41 0M279.4 281.5a2.20 2.20 0 1 0 -4.41 0a2.20 2.20 0 1 0 4.41 0M279.6 281.5a2.20 2.20 0 1 0 -4.41 0a2.20 2.20 0 1 0 4.41 0M279.9 280.9a2.20 2.20 0 1 0 -4.41 0a2.20 2.20 0 1 0 4.41 0M280.1 280.8a2.20 2.20 0 1 0 -4.41 0a2.20 2.20 0 1 0 4.41 0M280.3 280.7a2.20 2.20 0 1 0 -4.41 0a2.20 2.20 0 1 0 4.41 0M280.5 280.6a2.20 2.20 0 1 0 -4.41 0a2.20 2.20 0 1 0 4.41 0M280.7 280.5a2.20 2.20 0 1 0 -4.41 0a2.20 2.20 0 1 0 4.41 0M280.9 280.2a2.20 2.20 0 1 0 -4.41 0a2.20 2.20 0 1 0 4.41 0M281.2 280.2a2.20 2.20 0 1 0 -4.41 0a2.20 2.20 0 1 0 4.41 0M281.4 280.2a2.20 2.20 0 1 0 -4.41 0a2.20 2.20 0 1 0 4.41 0M281.6 280.2a2.20 2.20 0 1 0 -4.41 0a2.20 2.20 0 1 0 4.41 0M281.8 279.2a2.20 2.20 0 1 0 -4.41 0a2.20 2.20 0 1 0 4.41 0M282.0 279.1a2.20 2.20 0 1 0 -4.41 0a2.20 2.20 0 1 0 4.41 0M282.2 279.0a2.20 2.20 0 1 0 -4.41 0a2.20 2.20 0 1 0 4.41 0M282.4 278.9a2.20 2.20 0 1 0 -4.41 0a2.20 2.20 0 1 0 4.41 0M282.7 278.8a2.20 2.20 0 1 0 -4.41 0a2.20 2.20 0 1 0 4.41 0M282.9 278.7a2.20 2.20 0 1 0 -4.41 0a2.20 2.20 0 1 0 4.41 0M283.1 278.5a2.20 2.20 0 1 0 -4.41 0a2.20 2.20 0 1 0 4.41 0M283.3 278.4a2.20 2.20 0 1 0 -4.41 0a2.20 2.20 0 1 0 4.41 0M283.5 278.3a2.20 2.20 0 1 0 -4.41 0a2.20 2.20 0 1 0 4.41 0M283.7 278.3a2.20 2.20 0 1 0 -4.41 0a2.20 2.20 0 1 0 4.41 0M283.9 278.2a2.20 2.20 0 1 0 -4.41 0a2.20 2.20 0 1 0 4.41 0M284.1 278.1a2.20 2.20 0 1 0 -4.41 0a2.20 2.20 0 1 0 4.41 0M284.4 277.9a2.20 2.20 0 1 0 -4.41 0a2.20 2.20 0 1 0 4.41 0M284.6 277.8a2.20 2.20 0 1 0 -4.41 0a2.20 2.20 0 1 0 4.41 0M284.8 277.7a2.20 2.20 0 1 0 -4.41 0a2.20 2.20 0 1 0 4.41 0M285.0 277.6a2.20 2.20 0 1 0 -4.41 0a2.20 2.20 0 1 0 4.41 0M285.2 277.6a2.20 2.20 0 1 0 -4.41 0a2.20 2.20 0 1 0 4.41 0M285.4 277.3a2.20 2.20 0 1 0 -4.41 0a2.20 2.20 0 1 0 4.41 0M285.6 277.3a2.20 2.20 0 1 0 -4.41 0a2.20 2.20 0 1 0 4.41 0M285.8 276.8a2.20 2.20 0 1 0 -4.41 0a2.20 2.20 0 1 0 4.41 0M286.0 275.9a2.20 2.20 0 1 0 -4.41 0a2.20 2.20 0 1 0 4.41 0M286.2 275.8a2.20 2.20 0 1 0 -4.41 0a2.20 2.20 0 1 0 4.41 0M286.5 275.4a2.20 2.20 0 1 0 -4.41 0a2.20 2.20 0 1 0 4.41 0M286.7 275.4a2.20 2.20 0 1 0 -4.41 0a2.20 2.20 0 1 0 4.41 0M286.9 275.4a2.20 2.20 0 1 0 -4.41 0a2.20 2.20 0 1 0 4.41 0M287.1 275.3a2.20 2.20 0 1 0 -4.41 0a2.20 2.20 0 1 0 4.41 0M287.3 275.3a2.20 2.20 0 1 0 -4.41 0a2.20 2.20 0 1 0 4.41 0M287.5 275.3a2.20 2.20 0 1 0 -4.41 0a2.20 2.20 0 1 0 4.41 0M287.7 275.3a2.20 2.20 0 1 0 -4.41 0a2.20 2.20 0 1 0 4.41 0M287.9 275.0a2.20 2.20 0 1 0 -4.41 0a2.20 2.20 0 1 0 4.41 0M288.1 274.9a2.20 2.20 0 1 0 -4.41 0a2.20 2.20 0 1 0 4.41 0M288.3 274.8a2.20 2.20 0 1 0 -4.41 0a2.20 2.20 0 1 0 4.41 0M288.5 274.8a2.20 2.20 0 1 0 -4.41 0a2.20 2.20 0 1 0 4.41 0M288.7 274.6a2.20 2.20 0 1 0 -4.41 0a2.20 2.20 0 1 0 4.41 0M288.9 274.5a2.20 2.20 0 1 0 -4.41 0a2.20 2.20 0 1 0 4.41 0M289.2 274.3a2.20 2.20 0 1 0 -4.41 0a2.20 2.20 0 1 0 4.41 0M289.4 274.2a2.20 2.20 0 1 0 -4.41 0a2.20 2.20 0 1 0 4.41 0M289.6 274.2a2.20 2.20 0 1 0 -4.41 0a2.20 2.20 0 1 0 4.41 0M289.8 274.1a2.20 2.20 0 1 0 -4.41 0a2.20 2.20 0 1 0 4.41 0M290.0 273.9a2.20 2.20 0 1 0 -4.41 0a2.20 2.20 0 1 0 4.41 0M290.2 273.8a2.20 2.20 0 1 0 -4.41 0a2.20 2.20 0 1 0 4.41 0M290.4 273.8a2.20 2.20 0 1 0 -4.41 0a2.20 2.20 0 1 0 4.41 0M290.6 273.7a2.20 2.20 0 1 0 -4.41 0a2.20 2.20 0 1 0 4.41 0M290.8 273.5a2.20 2.20 0 1 0 -4.41 0a2.20 2.20 0 1 0 4.41 0M291.0 273.4a2.20 2.20 0 1 0 -4.41 0a2.20 2.20 0 1 0 4.41 0M291.2 273.3a2.20 2.20 0 1 0 -4.41 0a2.20 2.20 0 1 0 4.41 0M291.4 273.3a2.20 2.20 0 1 0 -4.41 0a2.20 2.20 0 1 0 4.41 0M291.6 273.2a2.20 2.20 0 1 0 -4.41 0a2.20 2.20 0 1 0 4.41 0M291.8 273.2a2.20 2.20 0 1 0 -4.41 0a2.20 2.20 0 1 0 4.41 0M292.0 273.1a2.20 2.20 0 1 0 -4.41 0a2.20 2.20 0 1 0 4.41 0M292.2 273.1a2.20 2.20 0 1 0 -4.41 0a2.20 2.20 0 1 0 4.41 0M292.4 272.9a2.20 2.20 0 1 0 -4.41 0a2.20 2.20 0 1 0 4.41 0M292.6 272.4a2.20 2.20 0 1 0 -4.41 0a2.20 2.20 0 1 0 4.41 0M292.8 272.3a2.20 2.20 0 1 0 -4.41 0a2.20 2.20 0 1 0 4.41 0M293.0 272.1a2.20 2.20 0 1 0 -4.41 0a2.20 2.20 0 1 0 4.41 0M293.2 272.1a2.20 2.20 0 1 0 -4.41 0a2.20 2.20 0 1 0 4.41 0M293.4 272.0a2.20 2.20 0 1 0 -4.41 0a2.20 2.20 0 1 0 4.41 0M293.6 271.9a2.20 2.20 0 1 0 -4.41 0a2.20 2.20 0 1 0 4.41 0M293.8 271.9a2.20 2.20 0 1 0 -4.41 0a2.20 2.20 0 1 0 4.41 0M294.0 271.7a2.20 2.20 0 1 0 -4.41 0a2.20 2.20 0 1 0 4.41 0M294.2 271.6a2.20 2.20 0 1 0 -4.41 0a2.20 2.20 0 1 0 4.41 0M294.4 271.6a2.20 2.20 0 1 0 -4.41 0a2.20 2.20 0 1 0 4.41 0M294.6 271.5a2.20 2.20 0 1 0 -4.41 0a2.20 2.20 0 1 0 4.41 0M294.8 271.5a2.20 2.20 0 1 0 -4.41 0a2.20 2.20 0 1 0 4.41 0M295.0 271.4a2.20 2.20 0 1 0 -4.41 0a2.20 2.20 0 1 0 4.41 0M295.2 271.2a2.20 2.20 0 1 0 -4.41 0a2.20 2.20 0 1 0 4.41 0M295.4 271.1a2.20 2.20 0 1 0 -4.41 0a2.20 2.20 0 1 0 4.41 0M295.6 270.9a2.20 2.20 0 1 0 -4.41 0a2.20 2.20 0 1 0 4.41 0M295.8 270.8a2.20 2.20 0 1 0 -4.41 0a2.20 2.20 0 1 0 4.41 0M296.0 270.6a2.20 2.20 0 1 0 -4.41 0a2.20 2.20 0 1 0 4.41 0M296.2 270.0a2.20 2.20 0 1 0 -4.41 0a2.20 2.20 0 1 0 4.41 0M296.4 270.0a2.20 2.20 0 1 0 -4.41 0a2.20 2.20 0 1 0 4.41 0M296.6 269.8a2.20 2.20 0 1 0 -4.41 0a2.20 2.20 0 1 0 4.41 0M296.8 269.5a2.20 2.20 0 1 0 -4.41 0a2.20 2.20 0 1 0 4.41 0M297.0 269.5a2.20 2.20 0 1 0 -4.41 0a2.20 2.20 0 1 0 4.41 0M297.2 269.4a2.20 2.20 0 1 0 -4.41 0a2.20 2.20 0 1 0 4.41 0M297.4 269.4a2.20 2.20 0 1 0 -4.41 0a2.20 2.20 0 1 0 4.41 0M297.6 269.3a2.20 2.20 0 1 0 -4.41 0a2.20 2.20 0 1 0 4.41 0M297.8 269.3a2.20 2.20 0 1 0 -4.41 0a2.20 2.20 0 1 0 4.41 0M298.0 269.2a2.20 2.20 0 1 0 -4.41 0a2.20 2.20 0 1 0 4.41 0M298.2 269.1a2.20 2.20 0 1 0 -4.41 0a2.20 2.20 0 1 0 4.41 0M298.4 269.0a2.20 2.20 0 1 0 -4.41 0a2.20 2.20 0 1 0 4.41 0M298.6 268.5a2.20 2.20 0 1 0 -4.41 0a2.20 2.20 0 1 0 4.41 0M298.8 268.4a2.20 2.20 0 1 0 -4.41 0a2.20 2.20 0 1 0 4.41 0M299.0 268.1a2.20 2.20 0 1 0 -4.41 0a2.20 2.20 0 1 0 4.41 0M299.2 268.1a2.20 2.20 0 1 0 -4.41 0a2.20 2.20 0 1 0 4.41 0M299.4 267.8a2.20 2.20 0 1 0 -4.41 0a2.20 2.20 0 1 0 4.41 0M299.6 267.4a2.20 2.20 0 1 0 -4.41 0a2.20 2.20 0 1 0 4.41 0M299.8 267.4a2.20 2.20 0 1 0 -4.41 0a2.20 2.20 0 1 0 4.41 0M300.0 267.4a2.20 2.20 0 1 0 -4.41 0a2.20 2.20 0 1 0 4.41 0M300.2 267.3a2.20 2.20 0 1 0 -4.41 0a2.20 2.20 0 1 0 4.41 0M300.4 267.3a2.20 2.20 0 1 0 -4.41 0a2.20 2.20 0 1 0 4.41 0M300.6 267.2a2.20 2.20 0 1 0 -4.41 0a2.20 2.20 0 1 0 4.41 0M300.8 267.2a2.20 2.20 0 1 0 -4.41 0a2.20 2.20 0 1 0 4.41 0M301.0 267.2a2.20 2.20 0 1 0 -4.41 0a2.20 2.20 0 1 0 4.41 0M301.2 267.1a2.20 2.20 0 1 0 -4.41 0a2.20 2.20 0 1 0 4.41 0M301.3 267.0a2.20 2.20 0 1 0 -4.41 0a2.20 2.20 0 1 0 4.41 0M301.5 266.9a2.20 2.20 0 1 0 -4.41 0a2.20 2.20 0 1 0 4.41 0M301.7 266.8a2.20 2.20 0 1 0 -4.41 0a2.20 2.20 0 1 0 4.41 0M301.9 266.8a2.20 2.20 0 1 0 -4.41 0a2.20 2.20 0 1 0 4.41 0M302.1 266.5a2.20 2.20 0 1 0 -4.41 0a2.20 2.20 0 1 0 4.41 0M302.3 266.5a2.20 2.20 0 1 0 -4.41 0a2.20 2.20 0 1 0 4.41 0M302.5 266.4a2.20 2.20 0 1 0 -4.41 0a2.20 2.20 0 1 0 4.41 0M302.7 266.4a2.20 2.20 0 1 0 -4.41 0a2.20 2.20 0 1 0 4.41 0M302.9 266.4a2.20 2.20 0 1 0 -4.41 0a2.20 2.20 0 1 0 4.41 0M303.1 266.4a2.20 2.20 0 1 0 -4.41 0a2.20 2.20 0 1 0 4.41 0M303.3 266.4a2.20 2.20 0 1 0 -4.41 0a2.20 2.20 0 1 0 4.41 0M303.5 266.2a2.20 2.20 0 1 0 -4.41 0a2.20 2.20 0 1 0 4.41 0M303.7 266.2a2.20 2.20 0 1 0 -4.41 0a2.20 2.20 0 1 0 4.41 0M303.9 266.1a2.20 2.20 0 1 0 -4.41 0a2.20 2.20 0 1 0 4.41 0M304.1 265.8a2.20 2.20 0 1 0 -4.41 0a2.20 2.20 0 1 0 4.41 0M304.3 265.7a2.20 2.20 0 1 0 -4.41 0a2.20 2.20 0 1 0 4.41 0M304.5 265.5a2.20 2.20 0 1 0 -4.41 0a2.20 2.20 0 1 0 4.41 0M304.7 265.5a2.20 2.20 0 1 0 -4.41 0a2.20 2.20 0 1 0 4.41 0M304.8 265.3a2.20 2.20 0 1 0 -4.41 0a2.20 2.20 0 1 0 4.41 0M305.0 265.2a2.20 2.20 0 1 0 -4.41 0a2.20 2.20 0 1 0 4.41 0M305.2 265.1a2.20 2.20 0 1 0 -4.41 0a2.20 2.20 0 1 0 4.41 0M305.4 265.1a2.20 2.20 0 1 0 -4.41 0a2.20 2.20 0 1 0 4.41 0M305.6 265.1a2.20 2.20 0 1 0 -4.41 0a2.20 2.20 0 1 0 4.41 0M305.8 264.7a2.20 2.20 0 1 0 -4.41 0a2.20 2.20 0 1 0 4.41 0M306.0 264.6a2.20 2.20 0 1 0 -4.41 0a2.20 2.20 0 1 0 4.41 0M306.2 264.3a2.20 2.20 0 1 0 -4.41 0a2.20 2.20 0 1 0 4.41 0M306.4 264.2a2.20 2.20 0 1 0 -4.41 0a2.20 2.20 0 1 0 4.41 0M306.6 264.2a2.20 2.20 0 1 0 -4.41 0a2.20 2.20 0 1 0 4.41 0M306.8 263.9a2.20 2.20 0 1 0 -4.41 0a2.20 2.20 0 1 0 4.41 0M307.0 263.8a2.20 2.20 0 1 0 -4.41 0a2.20 2.20 0 1 0 4.41 0M307.2 263.7a2.20 2.20 0 1 0 -4.41 0a2.20 2.20 0 1 0 4.41 0M307.4 263.6a2.20 2.20 0 1 0 -4.41 0a2.20 2.20 0 1 0 4.41 0M307.5 263.6a2.20 2.20 0 1 0 -4.41 0a2.20 2.20 0 1 0 4.41 0M307.7 263.5a2.20 2.20 0 1 0 -4.41 0a2.20 2.20 0 1 0 4.41 0M307.9 263.5a2.20 2.20 0 1 0 -4.41 0a2.20 2.20 0 1 0 4.41 0M308.1 263.2a2.20 2.20 0 1 0 -4.41 0a2.20 2.20 0 1 0 4.41 0M308.3 263.1a2.20 2.20 0 1 0 -4.41 0a2.20 2.20 0 1 0 4.41 0M308.5 263.0a2.20 2.20 0 1 0 -4.41 0a2.20 2.20 0 1 0 4.41 0M308.7 263.0a2.20 2.20 0 1 0 -4.41 0a2.20 2.20 0 1 0 4.41 0M308.9 263.0a2.20 2.20 0 1 0 -4.41 0a2.20 2.20 0 1 0 4.41 0M309.1 262.8a2.20 2.20 0 1 0 -4.41 0a2.20 2.20 0 1 0 4.41 0M309.3 262.6a2.20 2.20 0 1 0 -4.41 0a2.20 2.20 0 1 0 4.41 0M309.5 262.6a2.20 2.20 0 1 0 -4.41 0a2.20 2.20 0 1 0 4.41 0M309.7 262.6a2.20 2.20 0 1 0 -4.41 0a2.20 2.20 0 1 0 4.41 0M309.8 262.2a2.20 2.20 0 1 0 -4.41 0a2.20 2.20 0 1 0 4.41 0M310.0 262.0a2.20 2.20 0 1 0 -4.41 0a2.20 2.20 0 1 0 4.41 0M310.2 261.8a2.20 2.20 0 1 0 -4.41 0a2.20 2.20 0 1 0 4.41 0M310.4 261.7a2.20 2.20 0 1 0 -4.41 0a2.20 2.20 0 1 0 4.41 0M310.6 261.4a2.20 2.20 0 1 0 -4.41 0a2.20 2.20 0 1 0 4.41 0M310.8 261.4a2.20 2.20 0 1 0 -4.41 0a2.20 2.20 0 1 0 4.41 0M311.0 261.1a2.20 2.20 0 1 0 -4.41 0a2.20 2.20 0 1 0 4.41 0M311.2 261.0a2.20 2.20 0 1 0 -4.41 0a2.20 2.20 0 1 0 4.41 0M311.4 260.9a2.20 2.20 0 1 0 -4.41 0a2.20 2.20 0 1 0 4.41 0M311.6 260.6a2.20 2.20 0 1 0 -4.41 0a2.20 2.20 0 1 0 4.41 0M311.8 260.4a2.20 2.20 0 1 0 -4.41 0a2.20 2.20 0 1 0 4.41 0M311.9 260.3a2.20 2.20 0 1 0 -4.41 0a2.20 2.20 0 1 0 4.41 0M312.1 260.3a2.20 2.20 0 1 0 -4.41 0a2.20 2.20 0 1 0 4.41 0M312.3 260.0a2.20 2.20 0 1 0 -4.41 0a2.20 2.20 0 1 0 4.41 0M312.5 259.7a2.20 2.20 0 1 0 -4.41 0a2.20 2.20 0 1 0 4.41 0M312.7 259.3a2.20 2.20 0 1 0 -4.41 0a2.20 2.20 0 1 0 4.41 0M312.9 259.0a2.20 2.20 0 1 0 -4.41 0a2.20 2.20 0 1 0 4.41 0M313.1 259.0a2.20 2.20 0 1 0 -4.41 0a2.20 2.20 0 1 0 4.41 0M313.3 258.7a2.20 2.20 0 1 0 -4.41 0a2.20 2.20 0 1 0 4.41 0M313.5 258.7a2.20 2.20 0 1 0 -4.41 0a2.20 2.20 0 1 0 4.41 0M313.7 258.7a2.20 2.20 0 1 0 -4.41 0a2.20 2.20 0 1 0 4.41 0M313.8 258.6a2.20 2.20 0 1 0 -4.41 0a2.20 2.20 0 1 0 4.41 0M314.0 258.6a2.20 2.20 0 1 0 -4.41 0a2.20 2.20 0 1 0 4.41 0M314.2 258.4a2.20 2.20 0 1 0 -4.41 0a2.20 2.20 0 1 0 4.41 0M314.4 258.2a2.20 2.20 0 1 0 -4.41 0a2.20 2.20 0 1 0 4.41 0M314.6 258.1a2.20 2.20 0 1 0 -4.41 0a2.20 2.20 0 1 0 4.41 0M314.8 258.0a2.20 2.20 0 1 0 -4.41 0a2.20 2.20 0 1 0 4.41 0M315.0 257.8a2.20 2.20 0 1 0 -4.41 0a2.20 2.20 0 1 0 4.41 0M315.2 257.5a2.20 2.20 0 1 0 -4.41 0a2.20 2.20 0 1 0 4.41 0M315.4 257.5a2.20 2.20 0 1 0 -4.41 0a2.20 2.20 0 1 0 4.41 0M315.6 257.4a2.20 2.20 0 1 0 -4.41 0a2.20 2.20 0 1 0 4.41 0M315.8 257.4a2.20 2.20 0 1 0 -4.41 0a2.20 2.20 0 1 0 4.41 0M315.9 257.4a2.20 2.20 0 1 0 -4.41 0a2.20 2.20 0 1 0 4.41 0M316.1 257.1a2.20 2.20 0 1 0 -4.41 0a2.20 2.20 0 1 0 4.41 0M316.3 256.9a2.20 2.20 0 1 0 -4.41 0a2.20 2.20 0 1 0 4.41 0M316.5 256.7a2.20 2.20 0 1 0 -4.41 0a2.20 2.20 0 1 0 4.41 0M316.7 256.7a2.20 2.20 0 1 0 -4.41 0a2.20 2.20 0 1 0 4.41 0M316.9 256.7a2.20 2.20 0 1 0 -4.41 0a2.20 2.20 0 1 0 4.41 0M317.1 256.6a2.20 2.20 0 1 0 -4.41 0a2.20 2.20 0 1 0 4.41 0M317.3 256.5a2.20 2.20 0 1 0 -4.41 0a2.20 2.20 0 1 0 4.41 0M317.5 256.4a2.20 2.20 0 1 0 -4.41 0a2.20 2.20 0 1 0 4.41 0M317.6 256.3a2.20 2.20 0 1 0 -4.41 0a2.20 2.20 0 1 0 4.41 0M317.8 256.3a2.20 2.20 0 1 0 -4.41 0a2.20 2.20 0 1 0 4.41 0M318.0 256.2a2.20 2.20 0 1 0 -4.41 0a2.20 2.20 0 1 0 4.41 0M318.2 256.1a2.20 2.20 0 1 0 -4.41 0a2.20 2.20 0 1 0 4.41 0M318.4 256.1a2.20 2.20 0 1 0 -4.41 0a2.20 2.20 0 1 0 4.41 0M318.6 255.7a2.20 2.20 0 1 0 -4.41 0a2.20 2.20 0 1 0 4.41 0M318.8 255.7a2.20 2.20 0 1 0 -4.41 0a2.20 2.20 0 1 0 4.41 0M319.0 255.7a2.20 2.20 0 1 0 -4.41 0a2.20 2.20 0 1 0 4.41 0M319.2 255.6a2.20 2.20 0 1 0 -4.41 0a2.20 2.20 0 1 0 4.41 0M319.4 255.6a2.20 2.20 0 1 0 -4.41 0a2.20 2.20 0 1 0 4.41 0M319.5 255.6a2.20 2.20 0 1 0 -4.41 0a2.20 2.20 0 1 0 4.41 0M319.7 255.5a2.20 2.20 0 1 0 -4.41 0a2.20 2.20 0 1 0 4.41 0M319.9 255.4a2.20 2.20 0 1 0 -4.41 0a2.20 2.20 0 1 0 4.41 0M320.1 255.2a2.20 2.20 0 1 0 -4.41 0a2.20 2.20 0 1 0 4.41 0M320.3 255.2a2.20 2.20 0 1 0 -4.41 0a2.20 2.20 0 1 0 4.41 0M320.5 255.1a2.20 2.20 0 1 0 -4.41 0a2.20 2.20 0 1 0 4.41 0M320.7 255.1a2.20 2.20 0 1 0 -4.41 0a2.20 2.20 0 1 0 4.41 0M320.9 254.9a2.20 2.20 0 1 0 -4.41 0a2.20 2.20 0 1 0 4.41 0M321.1 254.9a2.20 2.20 0 1 0 -4.41 0a2.20 2.20 0 1 0 4.41 0M321.3 254.6a2.20 2.20 0 1 0 -4.41 0a2.20 2.20 0 1 0 4.41 0M321.4 254.3a2.20 2.20 0 1 0 -4.41 0a2.20 2.20 0 1 0 4.41 0M321.6 254.1a2.20 2.20 0 1 0 -4.41 0a2.20 2.20 0 1 0 4.41 0M321.8 254.1a2.20 2.20 0 1 0 -4.41 0a2.20 2.20 0 1 0 4.41 0M322.0 254.1a2.20 2.20 0 1 0 -4.41 0a2.20 2.20 0 1 0 4.41 0M322.2 254.0a2.20 2.20 0 1 0 -4.41 0a2.20 2.20 0 1 0 4.41 0M322.4 253.9a2.20 2.20 0 1 0 -4.41 0a2.20 2.20 0 1 0 4.41 0M322.6 253.8a2.20 2.20 0 1 0 -4.41 0a2.20 2.20 0 1 0 4.41 0M322.8 253.8a2.20 2.20 0 1 0 -4.41 0a2.20 2.20 0 1 0 4.41 0M323.0 253.8a2.20 2.20 0 1 0 -4.41 0a2.20 2.20 0 1 0 4.41 0M323.2 253.7a2.20 2.20 0 1 0 -4.41 0a2.20 2.20 0 1 0 4.41 0M323.3 253.5a2.20 2.20 0 1 0 -4.41 0a2.20 2.20 0 1 0 4.41 0M323.5 253.2a2.20 2.20 0 1 0 -4.41 0a2.20 2.20 0 1 0 4.41 0M323.7 253.1a2.20 2.20 0 1 0 -4.41 0a2.20 2.20 0 1 0 4.41 0M323.9 253.0a2.20 2.20 0 1 0 -4.41 0a2.20 2.20 0 1 0 4.41 0M324.1 252.8a2.20 2.20 0 1 0 -4.41 0a2.20 2.20 0 1 0 4.41 0M324.3 252.7a2.20 2.20 0 1 0 -4.41 0a2.20 2.20 0 1 0 4.41 0M324.5 252.5a2.20 2.20 0 1 0 -4.41 0a2.20 2.20 0 1 0 4.41 0M324.7 252.1a2.20 2.20 0 1 0 -4.41 0a2.20 2.20 0 1 0 4.41 0M324.9 251.8a2.20 2.20 0 1 0 -4.41 0a2.20 2.20 0 1 0 4.41 0M325.1 251.7a2.20 2.20 0 1 0 -4.41 0a2.20 2.20 0 1 0 4.41 0M325.2 251.5a2.20 2.20 0 1 0 -4.41 0a2.20 2.20 0 1 0 4.41 0M325.4 251.2a2.20 2.20 0 1 0 -4.41 0a2.20 2.20 0 1 0 4.41 0M325.6 251.2a2.20 2.20 0 1 0 -4.41 0a2.20 2.20 0 1 0 4.41 0M325.8 250.9a2.20 2.20 0 1 0 -4.41 0a2.20 2.20 0 1 0 4.41 0M326.0 250.7a2.20 2.20 0 1 0 -4.41 0a2.20 2.20 0 1 0 4.41 0M326.2 250.6a2.20 2.20 0 1 0 -4.41 0a2.20 2.20 0 1 0 4.41 0M326.4 250.6a2.20 2.20 0 1 0 -4.41 0a2.20 2.20 0 1 0 4.41 0M326.6 250.5a2.20 2.20 0 1 0 -4.41 0a2.20 2.20 0 1 0 4.41 0M326.8 250.5a2.20 2.20 0 1 0 -4.41 0a2.20 2.20 0 1 0 4.41 0M327.0 250.5a2.20 2.20 0 1 0 -4.41 0a2.20 2.20 0 1 0 4.41 0M327.2 250.5a2.20 2.20 0 1 0 -4.41 0a2.20 2.20 0 1 0 4.41 0M327.3 250.4a2.20 2.20 0 1 0 -4.41 0a2.20 2.20 0 1 0 4.41 0M327.5 250.2a2.20 2.20 0 1 0 -4.41 0a2.20 2.20 0 1 0 4.41 0M327.7 250.1a2.20 2.20 0 1 0 -4.41 0a2.20 2.20 0 1 0 4.41 0M327.9 250.0a2.20 2.20 0 1 0 -4.41 0a2.20 2.20 0 1 0 4.41 0M328.1 249.9a2.20 2.20 0 1 0 -4.41 0a2.20 2.20 0 1 0 4.41 0M328.3 249.9a2.20 2.20 0 1 0 -4.41 0a2.20 2.20 0 1 0 4.41 0M328.5 249.9a2.20 2.20 0 1 0 -4.41 0a2.20 2.20 0 1 0 4.41 0M328.7 249.5a2.20 2.20 0 1 0 -4.41 0a2.20 2.20 0 1 0 4.41 0M328.9 249.4a2.20 2.20 0 1 0 -4.41 0a2.20 2.20 0 1 0 4.41 0M329.1 249.3a2.20 2.20 0 1 0 -4.41 0a2.20 2.20 0 1 0 4.41 0M329.3 249.3a2.20 2.20 0 1 0 -4.41 0a2.20 2.20 0 1 0 4.41 0M329.4 249.0a2.20 2.20 0 1 0 -4.41 0a2.20 2.20 0 1 0 4.41 0M329.6 248.9a2.20 2.20 0 1 0 -4.41 0a2.20 2.20 0 1 0 4.41 0M329.8 248.8a2.20 2.20 0 1 0 -4.41 0a2.20 2.20 0 1 0 4.41 0M330.0 248.4a2.20 2.20 0 1 0 -4.41 0a2.20 2.20 0 1 0 4.41 0M330.2 248.1a2.20 2.20 0 1 0 -4.41 0a2.20 2.20 0 1 0 4.41 0M330.4 247.9a2.20 2.20 0 1 0 -4.41 0a2.20 2.20 0 1 0 4.41 0M330.6 247.9a2.20 2.20 0 1 0 -4.41 0a2.20 2.20 0 1 0 4.41 0M330.8 247.8a2.20 2.20 0 1 0 -4.41 0a2.20 2.20 0 1 0 4.41 0M331.0 247.5a2.20 2.20 0 1 0 -4.41 0a2.20 2.20 0 1 0 4.41 0M331.2 247.5a2.20 2.20 0 1 0 -4.41 0a2.20 2.20 0 1 0 4.41 0M331.4 247.3a2.20 2.20 0 1 0 -4.41 0a2.20 2.20 0 1 0 4.41 0M331.6 247.1a2.20 2.20 0 1 0 -4.41 0a2.20 2.20 0 1 0 4.41 0M331.7 246.9a2.20 2.20 0 1 0 -4.41 0a2.20 2.20 0 1 0 4.41 0M331.9 246.8a2.20 2.20 0 1 0 -4.41 0a2.20 2.20 0 1 0 4.41 0M332.1 246.6a2.20 2.20 0 1 0 -4.41 0a2.20 2.20 0 1 0 4.41 0M332.3 246.5a2.20 2.20 0 1 0 -4.41 0a2.20 2.20 0 1 0 4.41 0M332.5 246.4a2.20 2.20 0 1 0 -4.41 0a2.20 2.20 0 1 0 4.41 0M332.7 246.1a2.20 2.20 0 1 0 -4.41 0a2.20 2.20 0 1 0 4.41 0M332.9 246.0a2.20 2.20 0 1 0 -4.41 0a2.20 2.20 0 1 0 4.41 0M333.1 245.9a2.20 2.20 0 1 0 -4.41 0a2.20 2.20 0 1 0 4.41 0M333.3 245.8a2.20 2.20 0 1 0 -4.41 0a2.20 2.20 0 1 0 4.41 0M333.5 245.6a2.20 2.20 0 1 0 -4.41 0a2.20 2.20 0 1 0 4.41 0M333.7 245.5a2.20 2.20 0 1 0 -4.41 0a2.20 2.20 0 1 0 4.41 0M333.9 245.4a2.20 2.20 0 1 0 -4.41 0a2.20 2.20 0 1 0 4.41 0M334.1 245.4a2.20 2.20 0 1 0 -4.41 0a2.20 2.20 0 1 0 4.41 0M334.3 245.3a2.20 2.20 0 1 0 -4.41 0a2.20 2.20 0 1 0 4.41 0M334.4 245.3a2.20 2.20 0 1 0 -4.41 0a2.20 2.20 0 1 0 4.41 0M334.6 245.3a2.20 2.20 0 1 0 -4.41 0a2.20 2.20 0 1 0 4.41 0M334.8 245.2a2.20 2.20 0 1 0 -4.41 0a2.20 2.20 0 1 0 4.41 0M335.0 245.2a2.20 2.20 0 1 0 -4.41 0a2.20 2.20 0 1 0 4.41 0M335.2 245.1a2.20 2.20 0 1 0 -4.41 0a2.20 2.20 0 1 0 4.41 0M335.4 245.0a2.20 2.20 0 1 0 -4.41 0a2.20 2.20 0 1 0 4.41 0M335.6 244.9a2.20 2.20 0 1 0 -4.41 0a2.20 2.20 0 1 0 4.41 0M335.8 244.7a2.20 2.20 0 1 0 -4.41 0a2.20 2.20 0 1 0 4.41 0M336.0 244.6a2.20 2.20 0 1 0 -4.41 0a2.20 2.20 0 1 0 4.41 0M336.2 244.6a2.20 2.20 0 1 0 -4.41 0a2.20 2.20 0 1 0 4.41 0M336.4 244.4a2.20 2.20 0 1 0 -4.41 0a2.20 2.20 0 1 0 4.41 0M336.6 244.3a2.20 2.20 0 1 0 -4.41 0a2.20 2.20 0 1 0 4.41 0M336.8 244.1a2.20 2.20 0 1 0 -4.41 0a2.20 2.20 0 1 0 4.41 0M337.0 244.1a2.20 2.20 0 1 0 -4.41 0a2.20 2.20 0 1 0 4.41 0M337.2 244.0a2.20 2.20 0 1 0 -4.41 0a2.20 2.20 0 1 0 4.41 0M337.4 244.0a2.20 2.20 0 1 0 -4.41 0a2.20 2.20 0 1 0 4.41 0M337.6 243.9a2.20 2.20 0 1 0 -4.41 0a2.20 2.20 0 1 0 4.41 0M337.8 243.8a2.20 2.20 0 1 0 -4.41 0a2.20 2.20 0 1 0 4.41 0M338.0 243.8a2.20 2.20 0 1 0 -4.41 0a2.20 2.20 0 1 0 4.41 0M338.1 243.7a2.20 2.20 0 1 0 -4.41 0a2.20 2.20 0 1 0 4.41 0M338.3 243.5a2.20 2.20 0 1 0 -4.41 0a2.20 2.20 0 1 0 4.41 0M338.5 243.5a2.20 2.20 0 1 0 -4.41 0a2.20 2.20 0 1 0 4.41 0M338.7 243.4a2.20 2.20 0 1 0 -4.41 0a2.20 2.20 0 1 0 4.41 0M338.9 243.2a2.20 2.20 0 1 0 -4.41 0a2.20 2.20 0 1 0 4.41 0M339.1 242.9a2.20 2.20 0 1 0 -4.41 0a2.20 2.20 0 1 0 4.41 0M339.3 242.7a2.20 2.20 0 1 0 -4.41 0a2.20 2.20 0 1 0 4.41 0M339.5 242.7a2.20 2.20 0 1 0 -4.41 0a2.20 2.20 0 1 0 4.41 0M339.7 242.6a2.20 2.20 0 1 0 -4.41 0a2.20 2.20 0 1 0 4.41 0M339.9 242.5a2.20 2.20 0 1 0 -4.41 0a2.20 2.20 0 1 0 4.41 0M340.1 242.2a2.20 2.20 0 1 0 -4.41 0a2.20 2.20 0 1 0 4.41 0M340.3 241.7a2.20 2.20 0 1 0 -4.41 0a2.20 2.20 0 1 0 4.41 0M340.5 241.6a2.20 2.20 0 1 0 -4.41 0a2.20 2.20 0 1 0 4.41 0M340.7 241.6a2.20 2.20 0 1 0 -4.41 0a2.20 2.20 0 1 0 4.41 0M340.9 241.5a2.20 2.20 0 1 0 -4.41 0a2.20 2.20 0 1 0 4.41 0M341.1 241.5a2.20 2.20 0 1 0 -4.41 0a2.20 2.20 0 1 0 4.41 0M341.3 241.4a2.20 2.20 0 1 0 -4.41 0a2.20 2.20 0 1 0 4.41 0M341.5 241.4a2.20 2.20 0 1 0 -4.41 0a2.20 2.20 0 1 0 4.41 0M341.7 240.9a2.20 2.20 0 1 0 -4.41 0a2.20 2.20 0 1 0 4.41 0M341.9 240.8a2.20 2.20 0 1 0 -4.41 0a2.20 2.20 0 1 0 4.41 0M342.1 240.8a2.20 2.20 0 1 0 -4.41 0a2.20 2.20 0 1 0 4.41 0M342.3 240.5a2.20 2.20 0 1 0 -4.41 0a2.20 2.20 0 1 0 4.41 0M342.5 240.1a2.20 2.20 0 1 0 -4.41 0a2.20 2.20 0 1 0 4.41 0M342.7 239.8a2.20 2.20 0 1 0 -4.41 0a2.20 2.20 0 1 0 4.41 0M342.9 239.6a2.20 2.20 0 1 0 -4.41 0a2.20 2.20 0 1 0 4.41 0M343.1 239.5a2.20 2.20 0 1 0 -4.41 0a2.20 2.20 0 1 0 4.41 0M343.3 239.5a2.20 2.20 0 1 0 -4.41 0a2.20 2.20 0 1 0 4.41 0M343.5 239.4a2.20 2.20 0 1 0 -4.41 0a2.20 2.20 0 1 0 4.41 0M343.7 239.3a2.20 2.20 0 1 0 -4.41 0a2.20 2.20 0 1 0 4.41 0M343.9 239.0a2.20 2.20 0 1 0 -4.41 0a2.20 2.20 0 1 0 4.41 0M344.1 238.8a2.20 2.20 0 1 0 -4.41 0a2.20 2.20 0 1 0 4.41 0M344.3 238.5a2.20 2.20 0 1 0 -4.41 0a2.20 2.20 0 1 0 4.41 0M344.5 238.5a2.20 2.20 0 1 0 -4.41 0a2.20 2.20 0 1 0 4.41 0M344.7 238.4a2.20 2.20 0 1 0 -4.41 0a2.20 2.20 0 1 0 4.41 0M344.9 238.3a2.20 2.20 0 1 0 -4.41 0a2.20 2.20 0 1 0 4.41 0M345.1 238.3a2.20 2.20 0 1 0 -4.41 0a2.20 2.20 0 1 0 4.41 0M345.3 238.2a2.20 2.20 0 1 0 -4.41 0a2.20 2.20 0 1 0 4.41 0M345.5 238.0a2.20 2.20 0 1 0 -4.41 0a2.20 2.20 0 1 0 4.41 0M345.7 237.9a2.20 2.20 0 1 0 -4.41 0a2.20 2.20 0 1 0 4.41 0M345.9 237.7a2.20 2.20 0 1 0 -4.41 0a2.20 2.20 0 1 0 4.41 0M346.1 237.0a2.20 2.20 0 1 0 -4.41 0a2.20 2.20 0 1 0 4.41 0M346.3 236.9a2.20 2.20 0 1 0 -4.41 0a2.20 2.20 0 1 0 4.41 0M346.5 236.8a2.20 2.20 0 1 0 -4.41 0a2.20 2.20 0 1 0 4.41 0M346.7 236.7a2.20 2.20 0 1 0 -4.41 0a2.20 2.20 0 1 0 4.41 0M346.9 236.7a2.20 2.20 0 1 0 -4.41 0a2.20 2.20 0 1 0 4.41 0M347.1 236.6a2.20 2.20 0 1 0 -4.41 0a2.20 2.20 0 1 0 4.41 0M347.3 236.5a2.20 2.20 0 1 0 -4.41 0a2.20 2.20 0 1 0 4.41 0M347.5 236.3a2.20 2.20 0 1 0 -4.41 0a2.20 2.20 0 1 0 4.41 0M347.7 236.0a2.20 2.20 0 1 0 -4.41 0a2.20 2.20 0 1 0 4.41 0M347.9 235.9a2.20 2.20 0 1 0 -4.41 0a2.20 2.20 0 1 0 4.41 0M348.1 235.7a2.20 2.20 0 1 0 -4.41 0a2.20 2.20 0 1 0 4.41 0M348.3 235.6a2.20 2.20 0 1 0 -4.41 0a2.20 2.20 0 1 0 4.41 0M348.5 235.5a2.20 2.20 0 1 0 -4.41 0a2.20 2.20 0 1 0 4.41 0M348.7 235.4a2.20 2.20 0 1 0 -4.41 0a2.20 2.20 0 1 0 4.41 0M348.9 235.4a2.20 2.20 0 1 0 -4.41 0a2.20 2.20 0 1 0 4.41 0M349.1 235.3a2.20 2.20 0 1 0 -4.41 0a2.20 2.20 0 1 0 4.41 0M349.3 235.3a2.20 2.20 0 1 0 -4.41 0a2.20 2.20 0 1 0 4.41 0M349.5 235.1a2.20 2.20 0 1 0 -4.41 0a2.20 2.20 0 1 0 4.41 0M349.8 235.1a2.20 2.20 0 1 0 -4.41 0a2.20 2.20 0 1 0 4.41 0M350.0 234.9a2.20 2.20 0 1 0 -4.41 0a2.20 2.20 0 1 0 4.41 0M350.2 234.8a2.20 2.20 0 1 0 -4.41 0a2.20 2.20 0 1 0 4.41 0M350.4 234.5a2.20 2.20 0 1 0 -4.41 0a2.20 2.20 0 1 0 4.41 0M350.6 234.4a2.20 2.20 0 1 0 -4.41 0a2.20 2.20 0 1 0 4.41 0M350.8 233.7a2.20 2.20 0 1 0 -4.41 0a2.20 2.20 0 1 0 4.41 0M351.0 233.5a2.20 2.20 0 1 0 -4.41 0a2.20 2.20 0 1 0 4.41 0M351.2 233.1a2.20 2.20 0 1 0 -4.41 0a2.20 2.20 0 1 0 4.41 0M351.4 233.1a2.20 2.20 0 1 0 -4.41 0a2.20 2.20 0 1 0 4.41 0M351.6 233.1a2.20 2.20 0 1 0 -4.41 0a2.20 2.20 0 1 0 4.41 0M351.8 233.1a2.20 2.20 0 1 0 -4.41 0a2.20 2.20 0 1 0 4.41 0M352.0 233.0a2.20 2.20 0 1 0 -4.41 0a2.20 2.20 0 1 0 4.41 0M352.2 232.7a2.20 2.20 0 1 0 -4.41 0a2.20 2.20 0 1 0 4.41 0M352.4 232.3a2.20 2.20 0 1 0 -4.41 0a2.20 2.20 0 1 0 4.41 0M352.7 232.0a2.20 2.20 0 1 0 -4.41 0a2.20 2.20 0 1 0 4.41 0M352.9 231.9a2.20 2.20 0 1 0 -4.41 0a2.20 2.20 0 1 0 4.41 0M353.1 231.9a2.20 2.20 0 1 0 -4.41 0a2.20 2.20 0 1 0 4.41 0M353.3 231.9a2.20 2.20 0 1 0 -4.41 0a2.20 2.20 0 1 0 4.41 0M353.5 231.8a2.20 2.20 0 1 0 -4.41 0a2.20 2.20 0 1 0 4.41 0M353.7 231.6a2.20 2.20 0 1 0 -4.41 0a2.20 2.20 0 1 0 4.41 0M353.9 231.5a2.20 2.20 0 1 0 -4.41 0a2.20 2.20 0 1 0 4.41 0M354.1 231.5a2.20 2.20 0 1 0 -4.41 0a2.20 2.20 0 1 0 4.41 0M354.3 231.4a2.20 2.20 0 1 0 -4.41 0a2.20 2.20 0 1 0 4.41 0M354.5 231.4a2.20 2.20 0 1 0 -4.41 0a2.20 2.20 0 1 0 4.41 0M354.8 231.3a2.20 2.20 0 1 0 -4.41 0a2.20 2.20 0 1 0 4.41 0M355.0 231.2a2.20 2.20 0 1 0 -4.41 0a2.20 2.20 0 1 0 4.41 0M355.2 231.1a2.20 2.20 0 1 0 -4.41 0a2.20 2.20 0 1 0 4.41 0M355.4 231.1a2.20 2.20 0 1 0 -4.41 0a2.20 2.20 0 1 0 4.41 0M355.6 230.9a2.20 2.20 0 1 0 -4.41 0a2.20 2.20 0 1 0 4.41 0M355.8 229.5a2.20 2.20 0 1 0 -4.41 0a2.20 2.20 0 1 0 4.41 0M356.0 229.5a2.20 2.20 0 1 0 -4.41 0a2.20 2.20 0 1 0 4.41 0M356.2 229.4a2.20 2.20 0 1 0 -4.41 0a2.20 2.20 0 1 0 4.41 0M356.5 229.4a2.20 2.20 0 1 0 -4.41 0a2.20 2.20 0 1 0 4.41 0M356.7 229.1a2.20 2.20 0 1 0 -4.41 0a2.20 2.20 0 1 0 4.41 0M356.9 229.1a2.20 2.20 0 1 0 -4.41 0a2.20 2.20 0 1 0 4.41 0M357.1 228.9a2.20 2.20 0 1 0 -4.41 0a2.20 2.20 0 1 0 4.41 0M357.3 228.9a2.20 2.20 0 1 0 -4.41 0a2.20 2.20 0 1 0 4.41 0M357.5 228.6a2.20 2.20 0 1 0 -4.41 0a2.20 2.20 0 1 0 4.41 0M357.7 228.5a2.20 2.20 0 1 0 -4.41 0a2.20 2.20 0 1 0 4.41 0M358.0 228.2a2.20 2.20 0 1 0 -4.41 0a2.20 2.20 0 1 0 4.41 0M358.2 227.8a2.20 2.20 0 1 0 -4.41 0a2.20 2.20 0 1 0 4.41 0M358.4 227.8a2.20 2.20 0 1 0 -4.41 0a2.20 2.20 0 1 0 4.41 0M358.6 227.7a2.20 2.20 0 1 0 -4.41 0a2.20 2.20 0 1 0 4.41 0M358.8 227.7a2.20 2.20 0 1 0 -4.41 0a2.20 2.20 0 1 0 4.41 0M359.0 227.5a2.20 2.20 0 1 0 -4.41 0a2.20 2.20 0 1 0 4.41 0M359.3 227.4a2.20 2.20 0 1 0 -4.41 0a2.20 2.20 0 1 0 4.41 0M359.5 227.4a2.20 2.20 0 1 0 -4.41 0a2.20 2.20 0 1 0 4.41 0M359.7 227.2a2.20 2.20 0 1 0 -4.41 0a2.20 2.20 0 1 0 4.41 0M359.9 227.0a2.20 2.20 0 1 0 -4.41 0a2.20 2.20 0 1 0 4.41 0M360.1 227.0a2.20 2.20 0 1 0 -4.41 0a2.20 2.20 0 1 0 4.41 0M360.4 227.0a2.20 2.20 0 1 0 -4.41 0a2.20 2.20 0 1 0 4.41 0M360.6 226.5a2.20 2.20 0 1 0 -4.41 0a2.20 2.20 0 1 0 4.41 0M360.8 226.1a2.20 2.20 0 1 0 -4.41 0a2.20 2.20 0 1 0 4.41 0M361.0 225.9a2.20 2.20 0 1 0 -4.41 0a2.20 2.20 0 1 0 4.41 0M361.2 225.6a2.20 2.20 0 1 0 -4.41 0a2.20 2.20 0 1 0 4.41 0M361.5 225.1a2.20 2.20 0 1 0 -4.41 0a2.20 2.20 0 1 0 4.41 0M361.7 224.8a2.20 2.20 0 1 0 -4.41 0a2.20 2.20 0 1 0 4.41 0M361.9 224.7a2.20 2.20 0 1 0 -4.41 0a2.20 2.20 0 1 0 4.41 0M362.1 224.7a2.20 2.20 0 1 0 -4.41 0a2.20 2.20 0 1 0 4.41 0M362.4 224.6a2.20 2.20 0 1 0 -4.41 0a2.20 2.20 0 1 0 4.41 0M362.6 224.4a2.20 2.20 0 1 0 -4.41 0a2.20 2.20 0 1 0 4.41 0M362.8 224.1a2.20 2.20 0 1 0 -4.41 0a2.20 2.20 0 1 0 4.41 0M363.0 223.6a2.20 2.20 0 1 0 -4.41 0a2.20 2.20 0 1 0 4.41 0M363.2 223.4a2.20 2.20 0 1 0 -4.41 0a2.20 2.20 0 1 0 4.41 0M363.5 223.3a2.20 2.20 0 1 0 -4.41 0a2.20 2.20 0 1 0 4.41 0M363.7 223.3a2.20 2.20 0 1 0 -4.41 0a2.20 2.20 0 1 0 4.41 0M363.9 223.2a2.20 2.20 0 1 0 -4.41 0a2.20 2.20 0 1 0 4.41 0M364.1 222.6a2.20 2.20 0 1 0 -4.41 0a2.20 2.20 0 1 0 4.41 0M364.4 222.6a2.20 2.20 0 1 0 -4.41 0a2.20 2.20 0 1 0 4.41 0M364.6 222.6a2.20 2.20 0 1 0 -4.41 0a2.20 2.20 0 1 0 4.41 0M364.8 222.5a2.20 2.20 0 1 0 -4.41 0a2.20 2.20 0 1 0 4.41 0M365.1 222.4a2.20 2.20 0 1 0 -4.41 0a2.20 2.20 0 1 0 4.41 0M365.3 222.2a2.20 2.20 0 1 0 -4.41 0a2.20 2.20 0 1 0 4.41 0M365.5 222.0a2.20 2.20 0 1 0 -4.41 0a2.20 2.20 0 1 0 4.41 0M365.7 221.7a2.20 2.20 0 1 0 -4.41 0a2.20 2.20 0 1 0 4.41 0M366.0 221.6a2.20 2.20 0 1 0 -4.41 0a2.20 2.20 0 1 0 4.41 0M366.2 221.4a2.20 2.20 0 1 0 -4.41 0a2.20 2.20 0 1 0 4.41 0M366.4 220.9a2.20 2.20 0 1 0 -4.41 0a2.20 2.20 0 1 0 4.41 0M366.7 220.9a2.20 2.20 0 1 0 -4.41 0a2.20 2.20 0 1 0 4.41 0M366.9 220.8a2.20 2.20 0 1 0 -4.41 0a2.20 2.20 0 1 0 4.41 0M367.1 220.4a2.20 2.20 0 1 0 -4.41 0a2.20 2.20 0 1 0 4.41 0M367.4 220.3a2.20 2.20 0 1 0 -4.41 0a2.20 2.20 0 1 0 4.41 0M367.6 220.2a2.20 2.20 0 1 0 -4.41 0a2.20 2.20 0 1 0 4.41 0M367.8 220.2a2.20 2.20 0 1 0 -4.41 0a2.20 2.20 0 1 0 4.41 0M368.0 220.0a2.20 2.20 0 1 0 -4.41 0a2.20 2.20 0 1 0 4.41 0M368.3 219.6a2.20 2.20 0 1 0 -4.41 0a2.20 2.20 0 1 0 4.41 0M368.5 219.6a2.20 2.20 0 1 0 -4.41 0a2.20 2.20 0 1 0 4.41 0M368.7 219.6a2.20 2.20 0 1 0 -4.41 0a2.20 2.20 0 1 0 4.41 0M369.0 219.3a2.20 2.20 0 1 0 -4.41 0a2.20 2.20 0 1 0 4.41 0M369.2 219.1a2.20 2.20 0 1 0 -4.41 0a2.20 2.20 0 1 0 4.41 0M369.5 219.1a2.20 2.20 0 1 0 -4.41 0a2.20 2.20 0 1 0 4.41 0M369.7 218.9a2.20 2.20 0 1 0 -4.41 0a2.20 2.20 0 1 0 4.41 0M369.9 218.9a2.20 2.20 0 1 0 -4.41 0a2.20 2.20 0 1 0 4.41 0M370.2 218.8a2.20 2.20 0 1 0 -4.41 0a2.20 2.20 0 1 0 4.41 0M370.4 218.8a2.20 2.20 0 1 0 -4.41 0a2.20 2.20 0 1 0 4.41 0M370.6 218.7a2.20 2.20 0 1 0 -4.41 0a2.20 2.20 0 1 0 4.41 0M370.9 218.7a2.20 2.20 0 1 0 -4.41 0a2.20 2.20 0 1 0 4.41 0M371.1 218.7a2.20 2.20 0 1 0 -4.41 0a2.20 2.20 0 1 0 4.41 0M371.4 218.6a2.20 2.20 0 1 0 -4.41 0a2.20 2.20 0 1 0 4.41 0M371.6 218.0a2.20 2.20 0 1 0 -4.41 0a2.20 2.20 0 1 0 4.41 0M371.8 217.7a2.20 2.20 0 1 0 -4.41 0a2.20 2.20 0 1 0 4.41 0M372.1 217.5a2.20 2.20 0 1 0 -4.41 0a2.20 2.20 0 1 0 4.41 0M372.3 217.5a2.20 2.20 0 1 0 -4.41 0a2.20 2.20 0 1 0 4.41 0M372.6 217.5a2.20 2.20 0 1 0 -4.41 0a2.20 2.20 0 1 0 4.41 0M372.8 217.5a2.20 2.20 0 1 0 -4.41 0a2.20 2.20 0 1 0 4.41 0M373.1 217.0a2.20 2.20 0 1 0 -4.41 0a2.20 2.20 0 1 0 4.41 0M373.3 216.5a2.20 2.20 0 1 0 -4.41 0a2.20 2.20 0 1 0 4.41 0M373.5 216.4a2.20 2.20 0 1 0 -4.41 0a2.20 2.20 0 1 0 4.41 0M373.8 215.6a2.20 2.20 0 1 0 -4.41 0a2.20 2.20 0 1 0 4.41 0M374.0 215.6a2.20 2.20 0 1 0 -4.41 0a2.20 2.20 0 1 0 4.41 0M374.3 215.4a2.20 2.20 0 1 0 -4.41 0a2.20 2.20 0 1 0 4.41 0M374.5 215.3a2.20 2.20 0 1 0 -4.41 0a2.20 2.20 0 1 0 4.41 0M374.8 215.2a2.20 2.20 0 1 0 -4.41 0a2.20 2.20 0 1 0 4.41 0M375.0 215.2a2.20 2.20 0 1 0 -4.41 0a2.20 2.20 0 1 0 4.41 0M375.3 214.9a2.20 2.20 0 1 0 -4.41 0a2.20 2.20 0 1 0 4.41 0M375.5 214.2a2.20 2.20 0 1 0 -4.41 0a2.20 2.20 0 1 0 4.41 0M375.8 214.1a2.20 2.20 0 1 0 -4.41 0a2.20 2.20 0 1 0 4.41 0M376.0 214.1a2.20 2.20 0 1 0 -4.41 0a2.20 2.20 0 1 0 4.41 0M376.3 214.0a2.20 2.20 0 1 0 -4.41 0a2.20 2.20 0 1 0 4.41 0M376.5 213.7a2.20 2.20 0 1 0 -4.41 0a2.20 2.20 0 1 0 4.41 0M376.8 213.5a2.20 2.20 0 1 0 -4.41 0a2.20 2.20 0 1 0 4.41 0M377.0 213.4a2.20 2.20 0 1 0 -4.41 0a2.20 2.20 0 1 0 4.41 0M377.3 213.3a2.20 2.20 0 1 0 -4.41 0a2.20 2.20 0 1 0 4.41 0M377.5 213.2a2.20 2.20 0 1 0 -4.41 0a2.20 2.20 0 1 0 4.41 0M377.8 213.1a2.20 2.20 0 1 0 -4.41 0a2.20 2.20 0 1 0 4.41 0M378.0 213.1a2.20 2.20 0 1 0 -4.41 0a2.20 2.20 0 1 0 4.41 0M378.3 213.0a2.20 2.20 0 1 0 -4.41 0a2.20 2.20 0 1 0 4.41 0M378.6 212.9a2.20 2.20 0 1 0 -4.41 0a2.20 2.20 0 1 0 4.41 0M378.8 212.8a2.20 2.20 0 1 0 -4.41 0a2.20 2.20 0 1 0 4.41 0M379.1 212.6a2.20 2.20 0 1 0 -4.41 0a2.20 2.20 0 1 0 4.41 0M379.3 212.4a2.20 2.20 0 1 0 -4.41 0a2.20 2.20 0 1 0 4.41 0M379.6 212.2a2.20 2.20 0 1 0 -4.41 0a2.20 2.20 0 1 0 4.41 0M379.9 211.8a2.20 2.20 0 1 0 -4.41 0a2.20 2.20 0 1 0 4.41 0M380.1 211.4a2.20 2.20 0 1 0 -4.41 0a2.20 2.20 0 1 0 4.41 0M380.4 211.3a2.20 2.20 0 1 0 -4.41 0a2.20 2.20 0 1 0 4.41 0M380.6 211.2a2.20 2.20 0 1 0 -4.41 0a2.20 2.20 0 1 0 4.41 0M380.9 211.0a2.20 2.20 0 1 0 -4.41 0a2.20 2.20 0 1 0 4.41 0M381.2 210.8a2.20 2.20 0 1 0 -4.41 0a2.20 2.20 0 1 0 4.41 0M381.4 210.7a2.20 2.20 0 1 0 -4.41 0a2.20 2.20 0 1 0 4.41 0M381.7 210.5a2.20 2.20 0 1 0 -4.41 0a2.20 2.20 0 1 0 4.41 0M382.0 210.3a2.20 2.20 0 1 0 -4.41 0a2.20 2.20 0 1 0 4.41 0M382.2 210.2a2.20 2.20 0 1 0 -4.41 0a2.20 2.20 0 1 0 4.41 0M382.5 210.1a2.20 2.20 0 1 0 -4.41 0a2.20 2.20 0 1 0 4.41 0M382.8 209.9a2.20 2.20 0 1 0 -4.41 0a2.20 2.20 0 1 0 4.41 0M383.0 209.8a2.20 2.20 0 1 0 -4.41 0a2.20 2.20 0 1 0 4.41 0M383.3 209.5a2.20 2.20 0 1 0 -4.41 0a2.20 2.20 0 1 0 4.41 0M383.6 209.1a2.20 2.20 0 1 0 -4.41 0a2.20 2.20 0 1 0 4.41 0M383.9 208.8a2.20 2.20 0 1 0 -4.41 0a2.20 2.20 0 1 0 4.41 0M384.1 208.6a2.20 2.20 0 1 0 -4.41 0a2.20 2.20 0 1 0 4.41 0M384.4 208.3a2.20 2.20 0 1 0 -4.41 0a2.20 2.20 0 1 0 4.41 0M384.7 208.3a2.20 2.20 0 1 0 -4.41 0a2.20 2.20 0 1 0 4.41 0M385.0 208.2a2.20 2.20 0 1 0 -4.41 0a2.20 2.20 0 1 0 4.41 0M385.2 207.9a2.20 2.20 0 1 0 -4.41 0a2.20 2.20 0 1 0 4.41 0M385.5 207.8a2.20 2.20 0 1 0 -4.41 0a2.20 2.20 0 1 0 4.41 0M385.8 207.8a2.20 2.20 0 1 0 -4.41 0a2.20 2.20 0 1 0 4.41 0M386.1 207.7a2.20 2.20 0 1 0 -4.41 0a2.20 2.20 0 1 0 4.41 0M386.3 207.7a2.20 2.20 0 1 0 -4.41 0a2.20 2.20 0 1 0 4.41 0M386.6 207.6a2.20 2.20 0 1 0 -4.41 0a2.20 2.20 0 1 0 4.41 0M386.9 207.5a2.20 2.20 0 1 0 -4.41 0a2.20 2.20 0 1 0 4.41 0M387.2 207.5a2.20 2.20 0 1 0 -4.41 0a2.20 2.20 0 1 0 4.41 0M387.5 207.4a2.20 2.20 0 1 0 -4.41 0a2.20 2.20 0 1 0 4.41 0M387.8 207.3a2.20 2.20 0 1 0 -4.41 0a2.20 2.20 0 1 0 4.41 0M388.0 206.5a2.20 2.20 0 1 0 -4.41 0a2.20 2.20 0 1 0 4.41 0M388.3 206.3a2.20 2.20 0 1 0 -4.41 0a2.20 2.20 0 1 0 4.41 0M388.6 206.2a2.20 2.20 0 1 0 -4.41 0a2.20 2.20 0 1 0 4.41 0M388.9 205.9a2.20 2.20 0 1 0 -4.41 0a2.20 2.20 0 1 0 4.41 0M389.2 205.8a2.20 2.20 0 1 0 -4.41 0a2.20 2.20 0 1 0 4.41 0M389.5 205.6a2.20 2.20 0 1 0 -4.41 0a2.20 2.20 0 1 0 4.41 0M389.8 205.0a2.20 2.20 0 1 0 -4.41 0a2.20 2.20 0 1 0 4.41 0M390.1 204.8a2.20 2.20 0 1 0 -4.41 0a2.20 2.20 0 1 0 4.41 0M390.4 204.6a2.20 2.20 0 1 0 -4.41 0a2.20 2.20 0 1 0 4.41 0M390.7 204.6a2.20 2.20 0 1 0 -4.41 0a2.20 2.20 0 1 0 4.41 0M391.0 204.6a2.20 2.20 0 1 0 -4.41 0a2.20 2.20 0 1 0 4.41 0M391.3 204.6a2.20 2.20 0 1 0 -4.41 0a2.20 2.20 0 1 0 4.41 0M391.5 204.3a2.20 2.20 0 1 0 -4.41 0a2.20 2.20 0 1 0 4.41 0M391.8 204.3a2.20 2.20 0 1 0 -4.41 0a2.20 2.20 0 1 0 4.41 0M392.1 204.0a2.20 2.20 0 1 0 -4.41 0a2.20 2.20 0 1 0 4.41 0M392.4 202.9a2.20 2.20 0 1 0 -4.41 0a2.20 2.20 0 1 0 4.41 0M392.8 202.6a2.20 2.20 0 1 0 -4.41 0a2.20 2.20 0 1 0 4.41 0M393.1 202.5a2.20 2.20 0 1 0 -4.41 0a2.20 2.20 0 1 0 4.41 0M393.4 202.0a2.20 2.20 0 1 0 -4.41 0a2.20 2.20 0 1 0 4.41 0M393.7 202.0a2.20 2.20 0 1 0 -4.41 0a2.20 2.20 0 1 0 4.41 0M394.0 201.3a2.20 2.20 0 1 0 -4.41 0a2.20 2.20 0 1 0 4.41 0M394.3 201.3a2.20 2.20 0 1 0 -4.41 0a2.20 2.20 0 1 0 4.41 0M394.6 201.3a2.20 2.20 0 1 0 -4.41 0a2.20 2.20 0 1 0 4.41 0M394.9 200.9a2.20 2.20 0 1 0 -4.41 0a2.20 2.20 0 1 0 4.41 0M395.2 200.9a2.20 2.20 0 1 0 -4.41 0a2.20 2.20 0 1 0 4.41 0M395.5 200.8a2.20 2.20 0 1 0 -4.41 0a2.20 2.20 0 1 0 4.41 0M395.8 200.2a2.20 2.20 0 1 0 -4.41 0a2.20 2.20 0 1 0 4.41 0M396.2 200.2a2.20 2.20 0 1 0 -4.41 0a2.20 2.20 0 1 0 4.41 0M396.5 200.1a2.20 2.20 0 1 0 -4.41 0a2.20 2.20 0 1 0 4.41 0M396.8 199.9a2.20 2.20 0 1 0 -4.41 0a2.20 2.20 0 1 0 4.41 0M397.1 199.8a2.20 2.20 0 1 0 -4.41 0a2.20 2.20 0 1 0 4.41 0M397.4 199.7a2.20 2.20 0 1 0 -4.41 0a2.20 2.20 0 1 0 4.41 0M397.8 199.4a2.20 2.20 0 1 0 -4.41 0a2.20 2.20 0 1 0 4.41 0M398.1 199.3a2.20 2.20 0 1 0 -4.41 0a2.20 2.20 0 1 0 4.41 0M398.4 199.3a2.20 2.20 0 1 0 -4.41 0a2.20 2.20 0 1 0 4.41 0M398.7 199.1a2.20 2.20 0 1 0 -4.41 0a2.20 2.20 0 1 0 4.41 0M399.1 199.0a2.20 2.20 0 1 0 -4.41 0a2.20 2.20 0 1 0 4.41 0M399.4 198.9a2.20 2.20 0 1 0 -4.41 0a2.20 2.20 0 1 0 4.41 0M399.7 198.8a2.20 2.20 0 1 0 -4.41 0a2.20 2.20 0 1 0 4.41 0M400.1 198.8a2.20 2.20 0 1 0 -4.41 0a2.20 2.20 0 1 0 4.41 0M400.4 198.4a2.20 2.20 0 1 0 -4.41 0a2.20 2.20 0 1 0 4.41 0M400.7 198.2a2.20 2.20 0 1 0 -4.41 0a2.20 2.20 0 1 0 4.41 0M401.1 198.1a2.20 2.20 0 1 0 -4.41 0a2.20 2.20 0 1 0 4.41 0M401.4 198.0a2.20 2.20 0 1 0 -4.41 0a2.20 2.20 0 1 0 4.41 0M401.8 198.0a2.20 2.20 0 1 0 -4.41 0a2.20 2.20 0 1 0 4.41 0M402.1 197.7a2.20 2.20 0 1 0 -4.41 0a2.20 2.20 0 1 0 4.41 0M402.5 197.7a2.20 2.20 0 1 0 -4.41 0a2.20 2.20 0 1 0 4.41 0M402.8 197.6a2.20 2.20 0 1 0 -4.41 0a2.20 2.20 0 1 0 4.41 0M403.1 197.2a2.20 2.20 0 1 0 -4.41 0a2.20 2.20 0 1 0 4.41 0M403.5 197.0a2.20 2.20 0 1 0 -4.41 0a2.20 2.20 0 1 0 4.41 0M403.8 197.0a2.20 2.20 0 1 0 -4.41 0a2.20 2.20 0 1 0 4.41 0M404.2 196.7a2.20 2.20 0 1 0 -4.41 0a2.20 2.20 0 1 0 4.41 0M404.6 196.3a2.20 2.20 0 1 0 -4.41 0a2.20 2.20 0 1 0 4.41 0M404.9 196.1a2.20 2.20 0 1 0 -4.41 0a2.20 2.20 0 1 0 4.41 0M405.3 196.0a2.20 2.20 0 1 0 -4.41 0a2.20 2.20 0 1 0 4.41 0M405.6 195.9a2.20 2.20 0 1 0 -4.41 0a2.20 2.20 0 1 0 4.41 0M406.0 195.7a2.20 2.20 0 1 0 -4.41 0a2.20 2.20 0 1 0 4.41 0M406.4 195.5a2.20 2.20 0 1 0 -4.41 0a2.20 2.20 0 1 0 4.41 0M406.7 195.2a2.20 2.20 0 1 0 -4.41 0a2.20 2.20 0 1 0 4.41 0M407.1 194.9a2.20 2.20 0 1 0 -4.41 0a2.20 2.20 0 1 0 4.41 0M407.5 194.7a2.20 2.20 0 1 0 -4.41 0a2.20 2.20 0 1 0 4.41 0M407.9 194.3a2.20 2.20 0 1 0 -4.41 0a2.20 2.20 0 1 0 4.41 0M408.2 194.0a2.20 2.20 0 1 0 -4.41 0a2.20 2.20 0 1 0 4.41 0M408.6 194.0a2.20 2.20 0 1 0 -4.41 0a2.20 2.20 0 1 0 4.41 0M409.0 193.8a2.20 2.20 0 1 0 -4.41 0a2.20 2.20 0 1 0 4.41 0M409.4 192.8a2.20 2.20 0 1 0 -4.41 0a2.20 2.20 0 1 0 4.41 0M409.8 192.5a2.20 2.20 0 1 0 -4.41 0a2.20 2.20 0 1 0 4.41 0M410.1 191.5a2.20 2.20 0 1 0 -4.41 0a2.20 2.20 0 1 0 4.41 0M410.5 191.3a2.20 2.20 0 1 0 -4.41 0a2.20 2.20 0 1 0 4.41 0M410.9 191.2a2.20 2.20 0 1 0 -4.41 0a2.20 2.20 0 1 0 4.41 0M411.3 191.0a2.20 2.20 0 1 0 -4.41 0a2.20 2.20 0 1 0 4.41 0M411.7 190.8a2.20 2.20 0 1 0 -4.41 0a2.20 2.20 0 1 0 4.41 0M412.1 190.5a2.20 2.20 0 1 0 -4.41 0a2.20 2.20 0 1 0 4.41 0M412.5 190.0a2.20 2.20 0 1 0 -4.41 0a2.20 2.20 0 1 0 4.41 0M412.9 189.8a2.20 2.20 0 1 0 -4.41 0a2.20 2.20 0 1 0 4.41 0M413.3 188.9a2.20 2.20 0 1 0 -4.41 0a2.20 2.20 0 1 0 4.41 0M413.7 188.5a2.20 2.20 0 1 0 -4.41 0a2.20 2.20 0 1 0 4.41 0M414.2 188.2a2.20 2.20 0 1 0 -4.41 0a2.20 2.20 0 1 0 4.41 0M414.6 188.1a2.20 2.20 0 1 0 -4.41 0a2.20 2.20 0 1 0 4.41 0M415.0 187.9a2.20 2.20 0 1 0 -4.41 0a2.20 2.20 0 1 0 4.41 0M415.4 187.4a2.20 2.20 0 1 0 -4.41 0a2.20 2.20 0 1 0 4.41 0M415.8 187.2a2.20 2.20 0 1 0 -4.41 0a2.20 2.20 0 1 0 4.41 0M416.3 186.6a2.20 2.20 0 1 0 -4.41 0a2.20 2.20 0 1 0 4.41 0M416.7 186.5a2.20 2.20 0 1 0 -4.41 0a2.20 2.20 0 1 0 4.41 0M417.1 186.4a2.20 2.20 0 1 0 -4.41 0a2.20 2.20 0 1 0 4.41 0M417.6 186.1a2.20 2.20 0 1 0 -4.41 0a2.20 2.20 0 1 0 4.41 0M418.0 186.1a2.20 2.20 0 1 0 -4.41 0a2.20 2.20 0 1 0 4.41 0M418.5 185.7a2.20 2.20 0 1 0 -4.41 0a2.20 2.20 0 1 0 4.41 0M418.9 185.6a2.20 2.20 0 1 0 -4.41 0a2.20 2.20 0 1 0 4.41 0M419.4 185.5a2.20 2.20 0 1 0 -4.41 0a2.20 2.20 0 1 0 4.41 0M419.8 185.5a2.20 2.20 0 1 0 -4.41 0a2.20 2.20 0 1 0 4.41 0M420.3 185.5a2.20 2.20 0 1 0 -4.41 0a2.20 2.20 0 1 0 4.41 0M420.7 185.3a2.20 2.20 0 1 0 -4.41 0a2.20 2.20 0 1 0 4.41 0M421.2 185.1a2.20 2.20 0 1 0 -4.41 0a2.20 2.20 0 1 0 4.41 0M421.7 184.8a2.20 2.20 0 1 0 -4.41 0a2.20 2.20 0 1 0 4.41 0M422.1 184.1a2.20 2.20 0 1 0 -4.41 0a2.20 2.20 0 1 0 4.41 0M422.6 183.8a2.20 2.20 0 1 0 -4.41 0a2.20 2.20 0 1 0 4.41 0M423.1 183.7a2.20 2.20 0 1 0 -4.41 0a2.20 2.20 0 1 0 4.41 0M423.6 183.6a2.20 2.20 0 1 0 -4.41 0a2.20 2.20 0 1 0 4.41 0M424.1 182.7a2.20 2.20 0 1 0 -4.41 0a2.20 2.20 0 1 0 4.41 0M424.6 182.1a2.20 2.20 0 1 0 -4.41 0a2.20 2.20 0 1 0 4.41 0M425.1 182.0a2.20 2.20 0 1 0 -4.41 0a2.20 2.20 0 1 0 4.41 0M425.6 181.6a2.20 2.20 0 1 0 -4.41 0a2.20 2.20 0 1 0 4.41 0M426.1 181.4a2.20 2.20 0 1 0 -4.41 0a2.20 2.20 0 1 0 4.41 0M426.6 181.3a2.20 2.20 0 1 0 -4.41 0a2.20 2.20 0 1 0 4.41 0M427.1 181.0a2.20 2.20 0 1 0 -4.41 0a2.20 2.20 0 1 0 4.41 0M427.7 181.0a2.20 2.20 0 1 0 -4.41 0a2.20 2.20 0 1 0 4.41 0M428.2 181.0a2.20 2.20 0 1 0 -4.41 0a2.20 2.20 0 1 0 4.41 0M428.7 180.8a2.20 2.20 0 1 0 -4.41 0a2.20 2.20 0 1 0 4.41 0M429.3 180.5a2.20 2.20 0 1 0 -4.41 0a2.20 2.20 0 1 0 4.41 0M429.8 180.5a2.20 2.20 0 1 0 -4.41 0a2.20 2.20 0 1 0 4.41 0M430.4 180.2a2.20 2.20 0 1 0 -4.41 0a2.20 2.20 0 1 0 4.41 0M430.9 180.0a2.20 2.20 0 1 0 -4.41 0a2.20 2.20 0 1 0 4.41 0M431.5 179.7a2.20 2.20 0 1 0 -4.41 0a2.20 2.20 0 1 0 4.41 0M432.0 178.9a2.20 2.20 0 1 0 -4.41 0a2.20 2.20 0 1 0 4.41 0M432.6 178.8a2.20 2.20 0 1 0 -4.41 0a2.20 2.20 0 1 0 4.41 0M433.2 178.5a2.20 2.20 0 1 0 -4.41 0a2.20 2.20 0 1 0 4.41 0M433.8 177.9a2.20 2.20 0 1 0 -4.41 0a2.20 2.20 0 1 0 4.41 0M434.4 177.5a2.20 2.20 0 1 0 -4.41 0a2.20 2.20 0 1 0 4.41 0M435.0 176.4a2.20 2.20 0 1 0 -4.41 0a2.20 2.20 0 1 0 4.41 0M435.6 176.3a2.20 2.20 0 1 0 -4.41 0a2.20 2.20 0 1 0 4.41 0M436.2 175.9a2.20 2.20 0 1 0 -4.41 0a2.20 2.20 0 1 0 4.41 0M436.9 175.8a2.20 2.20 0 1 0 -4.41 0a2.20 2.20 0 1 0 4.41 0M437.5 175.5a2.20 2.20 0 1 0 -4.41 0a2.20 2.20 0 1 0 4.41 0M438.1 175.3a2.20 2.20 0 1 0 -4.41 0a2.20 2.20 0 1 0 4.41 0M438.8 174.3a2.20 2.20 0 1 0 -4.41 0a2.20 2.20 0 1 0 4.41 0M439.5 174.3a2.20 2.20 0 1 0 -4.41 0a2.20 2.20 0 1 0 4.41 0M440.1 174.2a2.20 2.20 0 1 0 -4.41 0a2.20 2.20 0 1 0 4.41 0M440.8 174.2a2.20 2.20 0 1 0 -4.41 0a2.20 2.20 0 1 0 4.41 0M441.5 174.0a2.20 2.20 0 1 0 -4.41 0a2.20 2.20 0 1 0 4.41 0M442.2 173.8a2.20 2.20 0 1 0 -4.41 0a2.20 2.20 0 1 0 4.41 0M442.9 173.7a2.20 2.20 0 1 0 -4.41 0a2.20 2.20 0 1 0 4.41 0M443.6 173.7a2.20 2.20 0 1 0 -4.41 0a2.20 2.20 0 1 0 4.41 0M444.4 173.0a2.20 2.20 0 1 0 -4.41 0a2.20 2.20 0 1 0 4.41 0M445.1 173.0a2.20 2.20 0 1 0 -4.41 0a2.20 2.20 0 1 0 4.41 0M445.9 172.7a2.20 2.20 0 1 0 -4.41 0a2.20 2.20 0 1 0 4.41 0M446.6 172.5a2.20 2.20 0 1 0 -4.41 0a2.20 2.20 0 1 0 4.41 0M447.4 171.3a2.20 2.20 0 1 0 -4.41 0a2.20 2.20 0 1 0 4.41 0M448.2 170.8a2.20 2.20 0 1 0 -4.41 0a2.20 2.20 0 1 0 4.41 0M449.0 170.1a2.20 2.20 0 1 0 -4.41 0a2.20 2.20 0 1 0 4.41 0M449.9 169.6a2.20 2.20 0 1 0 -4.41 0a2.20 2.20 0 1 0 4.41 0M450.7 168.9a2.20 2.20 0 1 0 -4.41 0a2.20 2.20 0 1 0 4.41 0M451.6 168.8a2.20 2.20 0 1 0 -4.41 0a2.20 2.20 0 1 0 4.41 0M452.4 168.0a2.20 2.20 0 1 0 -4.41 0a2.20 2.20 0 1 0 4.41 0M453.3 167.8a2.20 2.20 0 1 0 -4.41 0a2.20 2.20 0 1 0 4.41 0M454.3 167.3a2.20 2.20 0 1 0 -4.41 0a2.20 2.20 0 1 0 4.41 0M455.2 167.2a2.20 2.20 0 1 0 -4.41 0a2.20 2.20 0 1 0 4.41 0M456.2 167.1a2.20 2.20 0 1 0 -4.41 0a2.20 2.20 0 1 0 4.41 0M457.1 167.1a2.20 2.20 0 1 0 -4.41 0a2.20 2.20 0 1 0 4.41 0M458.1 166.6a2.20 2.20 0 1 0 -4.41 0a2.20 2.20 0 1 0 4.41 0M459.2 165.9a2.20 2.20 0 1 0 -4.41 0a2.20 2.20 0 1 0 4.41 0M460.2 164.6a2.20 2.20 0 1 0 -4.41 0a2.20 2.20 0 1 0 4.41 0M461.3 164.2a2.20 2.20 0 1 0 -4.41 0a2.20 2.20 0 1 0 4.41 0M462.4 162.6a2.20 2.20 0 1 0 -4.41 0a2.20 2.20 0 1 0 4.41 0M463.6 162.0a2.20 2.20 0 1 0 -4.41 0a2.20 2.20 0 1 0 4.41 0M464.7 161.9a2.20 2.20 0 1 0 -4.41 0a2.20 2.20 0 1 0 4.41 0M466.0 161.0a2.20 2.20 0 1 0 -4.41 0a2.20 2.20 0 1 0 4.41 0M467.2 160.6a2.20 2.20 0 1 0 -4.41 0a2.20 2.20 0 1 0 4.41 0M468.5 159.7a2.20 2.20 0 1 0 -4.41 0a2.20 2.20 0 1 0 4.41 0M469.8 154.2a2.20 2.20 0 1 0 -4.41 0a2.20 2.20 0 1 0 4.41 0M471.2 153.2a2.20 2.20 0 1 0 -4.41 0a2.20 2.20 0 1 0 4.41 0M472.7 153.2a2.20 2.20 0 1 0 -4.41 0a2.20 2.20 0 1 0 4.41 0M474.2 151.4a2.20 2.20 0 1 0 -4.41 0a2.20 2.20 0 1 0 4.41 0M475.7 150.7a2.20 2.20 0 1 0 -4.41 0a2.20 2.20 0 1 0 4.41 0M477.4 150.1a2.20 2.20 0 1 0 -4.41 0a2.20 2.20 0 1 0 4.41 0M479.1 149.8a2.20 2.20 0 1 0 -4.41 0a2.20 2.20 0 1 0 4.41 0M480.9 149.4a2.20 2.20 0 1 0 -4.41 0a2.20 2.20 0 1 0 4.41 0M482.8 146.7a2.20 2.20 0 1 0 -4.41 0a2.20 2.20 0 1 0 4.41 0M484.8 142.2a2.20 2.20 0 1 0 -4.41 0a2.20 2.20 0 1 0 4.41 0M486.9 139.8a2.20 2.20 0 1 0 -4.41 0a2.20 2.20 0 1 0 4.41 0M489.2 139.4a2.20 2.20 0 1 0 -4.41 0a2.20 2.20 0 1 0 4.41 0M491.6 139.0a2.20 2.20 0 1 0 -4.41 0a2.20 2.20 0 1 0 4.41 0M494.2 137.7a2.20 2.20 0 1 0 -4.41 0a2.20 2.20 0 1 0 4.41 0M497.0 136.5a2.20 2.20 0 1 0 -4.41 0a2.20 2.20 0 1 0 4.41 0M500.2 133.7a2.20 2.20 0 1 0 -4.41 0a2.20 2.20 0 1 0 4.41 0M503.6 127.3a2.20 2.20 0 1 0 -4.41 0a2.20 2.20 0 1 0 4.41 0M507.5 126.3a2.20 2.20 0 1 0 -4.41 0a2.20 2.20 0 1 0 4.41 0M512.0 125.0a2.20 2.20 0 1 0 -4.41 0a2.20 2.20 0 1 0 4.41 0M517.2 120.5a2.20 2.20 0 1 0 -4.41 0a2.20 2.20 0 1 0 4.41 0M523.6 114.4a2.20 2.20 0 1 0 -4.41 0a2.20 2.20 0 1 0 4.41 0M532.0 113.1a2.20 2.20 0 1 0 -4.41 0a2.20 2.20 0 1 0 4.41 0M544.2 103.4a2.20 2.20 0 1 0 -4.41 0a2.20 2.20 0 1 0 4.41 0M568.6 86.9a2.20 2.20 0 1 0 -4.41 0a2.20 2.20 0 1 0 4.41 0" stroke="#111" stroke-width="1.41" fill="none"/><path d="M48.2 433.8L586.3 72.4" stroke="#7f7f7f" stroke-width="0.94" stroke-dasharray="0.94 2.82"/><rect x="48.2" y="48.2" width="538.2" height="380.9" stroke="#111" stroke-width="0.82" fill="none"/><path d="M90.1 429.1v5.9M165.8 429.1v5.9M241.5 429.1v5.9M317.2 429.1v5.9M393.0 429.1v5.9M468.7 429.1v5.9M544.4 429.1v5.9M48.2 407.7h-5.9M48.2 356.6h-5.9M48.2 305.5h-5.9M48.2 254.4h-5.9M48.2 203.4h-5.9M48.2 152.3h-5.9M48.2 101.2h-5.9" stroke="#111" stroke-width="0.82"/><g style="font-family:'Liberation Sans',sans-serif" fill="#000" font-size="9.79"><text x="90.1" y="450.2" text-anchor="middle">-3</text><text x="165.8" y="450.2" text-anchor="middle">-2</text><text x="241.5" y="450.2" text-anchor="middle">-1</text><text x="317.2" y="450.2" text-anchor="middle">0</text><text x="393.0" y="450.2" text-anchor="middle">1</text><text x="468.7" y="450.2" text-anchor="middle">2</text><text x="544.4" y="450.2" text-anchor="middle">3</text><text transform="rotate(-90 34.1 407.7)" x="34.1" y="407.7" text-anchor="middle">-3</text><text transform="rotate(-90 34.1 356.6)" x="34.1" y="356.6" text-anchor="middle">-2</text><text transform="rotate(-90 34.1 305.5)" x="34.1" y="305.5" text-anchor="middle">-1</text><text transform="rotate(-90 34.1 254.4)" x="34.1" y="254.4" text-anchor="middle">0</text><text transform="rotate(-90 34.1 203.4)" x="34.1" y="203.4" text-anchor="middle">1</text><text transform="rotate(-90 34.1 152.3)" x="34.1" y="152.3" text-anchor="middle">2</text><text transform="rotate(-90 34.1 101.2)" x="34.1" y="101.2" text-anchor="middle">3</text><text x="317.2" y="42.9" text-anchor="middle">Normal Q-Q</text><text x="317.2" y="473.7" text-anchor="middle">Theoretical Quantiles</text><text x="317.2" y="485.5" text-anchor="middle">lm(y ~ x1 + x2)</text><text transform="rotate(-90 10.6 238.6)" x="10.6" y="238.6" text-anchor="middle">Standardized residuals</text></g></svg>
<svg class="a" style="left:566.6px;top:811.3px" width="114.7" height="91.5" viewBox="0 0 611 489" preserveAspectRatio="none" fill="none"><rect width="611" height="489" fill="#fff"/><path d="M240.3 237.1a2.20 2.20 0 1 0 -4.41 0a2.20 2.20 0 1 0 4.41 0M266.2 299.9a2.20 2.20 0 1 0 -4.41 0a2.20 2.20 0 1 0 4.41 0M410.3 241.1a2.20 2.20 0 1 0 -4.41 0a2.20 2.20 0 1 0 4.41 0M305.7 256.1a2.20 2.20 0 1 0 -4.41 0a2.20 2.20 0 1 0 4.41 0M309.6 210.7a2.20 2.20 0 1 0 -4.41 0a2.20 2.20 0 1 0 4.41 0M442.2 138.3a2.20 2.20 0 1 0 -4.41 0a2.20 2.20 0 1 0 4.41 0M334.4 283.7a2.20 2.20 0 1 0 -4.41 0a2.20 2.20 0 1 0 4.41 0M179.3 229.3a2.20 2.20 0 1 0 -4.41 0a2.20 2.20 0 1 0 4.41 0M223.7 218.6a2.20 2.20 0 1 0 -4.41 0a2.20 2.20 0 1 0 4.41 0M252.1 229.5a2.20 2.20 0 1 0 -4.41 0a2.20 2.20 0 1 0 4.41 0M412.5 315.4a2.20 2.20 0 1 0 -4.41 0a2.20 2.20 0 1 0 4.41 0M318.8 182.2a2.20 2.20 0 1 0 -4.41 0a2.20 2.20 0 1 0 4.41 0M335.8 241.4a2.20 2.20 0 1 0 -4.41 0a2.20 2.20 0 1 0 4.41 0M312.9 210.9a2.20 2.20 0 1 0 -4.41 0a2.20 2.20 0 1 0 4.41 0M275.1 287.6a2.20 2.20 0 1 0 -4.41 0a2.20 2.20 0 1 0 4.41 0M430.4 252.0a2.20 2.20 0 1 0 -4.41 0a2.20 2.20 0 1 0 4.41 0M350.0 302.9a2.20 2.20 0 1 0 -4.41 0a2.20 2.20 0 1 0 4.41 0M130.6 260.1a2.20 2.20 0 1 0 -4.41 0a2.20 2.20 0 1 0 4.41 0M348.7 349.3a2.20 2.20 0 1 0 -4.41 0a2.20 2.20 0 1 0 4.41 0M240.9 293.9a2.20 2.20 0 1 0 -4.41 0a2.20 2.20 0 1 0 4.41 0M234.2 376.8a2.20 2.20 0 1 0 -4.41 0a2.20 2.20 0 1 0 4.41 0M279.4 299.6a2.20 2.20 0 1 0 -4.41 0a2.20 2.20 0 1 0 4.41 0M237.5 249.5a2.20 2.20 0 1 0 -4.41 0a2.20 2.20 0 1 0 4.41 0M228.3 293.4a2.20 2.20 0 1 0 -4.41 0a2.20 2.20 0 1 0 4.41 0M233.1 375.6a2.20 2.20 0 1 0 -4.41 0a2.20 2.20 0 1 0 4.41 0M153.5 328.7a2.20 2.20 0 1 0 -4.41 0a2.20 2.20 0 1 0 4.41 0M374.3 178.7a2.20 2.20 0 1 0 -4.41 0a2.20 2.20 0 1 0 4.41 0M315.0 193.6a2.20 2.20 0 1 0 -4.41 0a2.20 2.20 0 1 0 4.41 0M204.4 304.9a2.20 2.20 0 1 0 -4.41 0a2.20 2.20 0 1 0 4.41 0M409.8 250.4a2.20 2.20 0 1 0 -4.41 0a2.20 2.20 0 1 0 4.41 0M336.8 164.6a2.20 2.20 0 1 0 -4.41 0a2.20 2.20 0 1 0 4.41 0M278.9 283.1a2.20 2.20 0 1 0 -4.41 0a2.20 2.20 0 1 0 4.41 0M375.2 360.5a2.20 2.20 0 1 0 -4.41 0a2.20 2.20 0 1 0 4.41 0M358.6 309.4a2.20 2.20 0 1 0 -4.41 0a2.20 2.20 0 1 0 4.41 0M349.1 271.0a2.20 2.20 0 1 0 -4.41 0a2.20 2.20 0 1 0 4.41 0M364.6 220.5a2.20 2.20 0 1 0 -4.41 0a2.20 2.20 0 1 0 4.41 0M348.7 322.9a2.20 2.20 0 1 0 -4.41 0a2.20 2.20 0 1 0 4.41 0M313.2 331.6a2.20 2.20 0 1 0 -4.41 0a2.20 2.20 0 1 0 4.41 0M293.9 323.0a2.20 2.20 0 1 0 -4.41 0a2.20 2.20 0 1 0 4.41 0M279.0 250.3a2.20 2.20 0 1 0 -4.41 0a2.20 2.20 0 1 0 4.41 0M240.9 214.8a2.20 2.20 0 1 0 -4.41 0a2.20 2.20 0 1 0 4.41 0M269.3 298.2a2.20 2.20 0 1 0 -4.41 0a2.20 2.20 0 1 0 4.41 0M195.0 326.8a2.20 2.20 0 1 0 -4.41 0a2.20 2.20 0 1 0 4.41 0M484.8 183.1a2.20 2.20 0 1 0 -4.41 0a2.20 2.20 0 1 0 4.41 0M414.0 315.1a2.20 2.20 0 1 0 -4.41 0a2.20 2.20 0 1 0 4.41 0M226.0 184.6a2.20 2.20 0 1 0 -4.41 0a2.20 2.20 0 1 0 4.41 0M280.1 334.0a2.20 2.20 0 1 0 -4.41 0a2.20 2.20 0 1 0 4.41 0M249.5 257.8a2.20 2.20 0 1 0 -4.41 0a2.20 2.20 0 1 0 4.41 0M343.5 186.0a2.20 2.20 0 1 0 -4.41 0a2.20 2.20 0 1 0 4.41 0M291.9 333.5a2.20 2.20 0 1 0 -4.41 0a2.20 2.20 0 1 0 4.41 0M323.6 370.9a2.20 2.20 0 1 0 -4.41 0a2.20 2.20 0 1 0 4.41 0M280.4 246.7a2.20 2.20 0 1 0 -4.41 0a2.20 2.20 0 1 0 4.41 0M314.7 214.8a2.20 2.20 0 1 0 -4.41 0a2.20 2.20 0 1 0 4.41 0M395.6 216.2a2.20 2.20 0 1 0 -4.41 0a2.20 2.20 0 1 0 4.41 0M298.8 233.1a2.20 2.20 0 1 0 -4.41 0a2.20 2.20 0 1 0 4.41 0M406.0 206.9a2.20 2.20 0 1 0 -4.41 0a2.20 2.20 0 1 0 4.41 0M181.6 294.6a2.20 2.20 0 1 0 -4.41 0a2.20 2.20 0 1 0 4.41 0M358.2 212.8a2.20 2.20 0 1 0 -4.41 0a2.20 2.20 0 1 0 4.41 0M320.4 215.8a2.20 2.20 0 1 0 -4.41 0a2.20 2.20 0 1 0 4.41 0M324.0 268.1a2.20 2.20 0 1 0 -4.41 0a2.20 2.20 0 1 0 4.41 0M314.1 256.4a2.20 2.20 0 1 0 -4.41 0a2.20 2.20 0 1 0 4.41 0M273.6 226.9a2.20 2.20 0 1 0 -4.41 0a2.20 2.20 0 1 0 4.41 0M277.5 373.5a2.20 2.20 0 1 0 -4.41 0a2.20 2.20 0 1 0 4.41 0M231.5 277.2a2.20 2.20 0 1 0 -4.41 0a2.20 2.20 0 1 0 4.41 0M199.6 264.5a2.20 2.20 0 1 0 -4.41 0a2.20 2.20 0 1 0 4.41 0M303.6 213.9a2.20 2.20 0 1 0 -4.41 0a2.20 2.20 0 1 0 4.41 0M328.2 224.9a2.20 2.20 0 1 0 -4.41 0a2.20 2.20 0 1 0 4.41 0M294.2 303.7a2.20 2.20 0 1 0 -4.41 0a2.20 2.20 0 1 0 4.41 0M387.1 312.4a2.20 2.20 0 1 0 -4.41 0a2.20 2.20 0 1 0 4.41 0M482.3 324.8a2.20 2.20 0 1 0 -4.41 0a2.20 2.20 0 1 0 4.41 0M244.5 195.1a2.20 2.20 0 1 0 -4.41 0a2.20 2.20 0 1 0 4.41 0M130.8 232.6a2.20 2.20 0 1 0 -4.41 0a2.20 2.20 0 1 0 4.41 0M384.7 249.1a2.20 2.20 0 1 0 -4.41 0a2.20 2.20 0 1 0 4.41 0M238.3 254.1a2.20 2.20 0 1 0 -4.41 0a2.20 2.20 0 1 0 4.41 0M251.0 173.9a2.20 2.20 0 1 0 -4.41 0a2.20 2.20 0 1 0 4.41 0M393.0 233.9a2.20 2.20 0 1 0 -4.41 0a2.20 2.20 0 1 0 4.41 0M277.5 319.7a2.20 2.20 0 1 0 -4.41 0a2.20 2.20 0 1 0 4.41 0M196.9 325.6a2.20 2.20 0 1 0 -4.41 0a2.20 2.20 0 1 0 4.41 0M333.3 344.9a2.20 2.20 0 1 0 -4.41 0a2.20 2.20 0 1 0 4.41 0M269.6 273.7a2.20 2.20 0 1 0 -4.41 0a2.20 2.20 0 1 0 4.41 0M285.6 240.1a2.20 2.20 0 1 0 -4.41 0a2.20 2.20 0 1 0 4.41 0M338.6 233.8a2.20 2.20 0 1 0 -4.41 0a2.20 2.20 0 1 0 4.41 0M279.1 185.6a2.20 2.20 0 1 0 -4.41 0a2.20 2.20 0 1 0 4.41 0M335.1 269.1a2.20 2.20 0 1 0 -4.41 0a2.20 2.20 0 1 0 4.41 0M280.3 239.1a2.20 2.20 0 1 0 -4.41 0a2.20 2.20 0 1 0 4.41 0M332.0 299.4a2.20 2.20 0 1 0 -4.41 0a2.20 2.20 0 1 0 4.41 0M383.4 252.4a2.20 2.20 0 1 0 -4.41 0a2.20 2.20 0 1 0 4.41 0M354.8 266.1a2.20 2.20 0 1 0 -4.41 0a2.20 2.20 0 1 0 4.41 0M280.6 167.5a2.20 2.20 0 1 0 -4.41 0a2.20 2.20 0 1 0 4.41 0M384.2 243.7a2.20 2.20 0 1 0 -4.41 0a2.20 2.20 0 1 0 4.41 0M365.0 147.8a2.20 2.20 0 1 0 -4.41 0a2.20 2.20 0 1 0 4.41 0M335.3 319.3a2.20 2.20 0 1 0 -4.41 0a2.20 2.20 0 1 0 4.41 0M301.9 283.5a2.20 2.20 0 1 0 -4.41 0a2.20 2.20 0 1 0 4.41 0M229.4 210.6a2.20 2.20 0 1 0 -4.41 0a2.20 2.20 0 1 0 4.41 0M401.1 296.7a2.20 2.20 0 1 0 -4.41 0a2.20 2.20 0 1 0 4.41 0M261.2 344.3a2.20 2.20 0 1 0 -4.41 0a2.20 2.20 0 1 0 4.41 0M494.5 307.3a2.20 2.20 0 1 0 -4.41 0a2.20 2.20 0 1 0 4.41 0M419.2 146.9a2.20 2.20 0 1 0 -4.41 0a2.20 2.20 0 1 0 4.41 0M281.4 136.0a2.20 2.20 0 1 0 -4.41 0a2.20 2.20 0 1 0 4.41 0M199.0 237.3a2.20 2.20 0 1 0 -4.41 0a2.20 2.20 0 1 0 4.41 0M247.7 291.9a2.20 2.20 0 1 0 -4.41 0a2.20 2.20 0 1 0 4.41 0M314.0 250.4a2.20 2.20 0 1 0 -4.41 0a2.20 2.20 0 1 0 4.41 0M276.5 275.8a2.20 2.20 0 1 0 -4.41 0a2.20 2.20 0 1 0 4.41 0M290.7 253.6a2.20 2.20 0 1 0 -4.41 0a2.20 2.20 0 1 0 4.41 0M230.4 164.7a2.20 2.20 0 1 0 -4.41 0a2.20 2.20 0 1 0 4.41 0M304.9 309.4a2.20 2.20 0 1 0 -4.41 0a2.20 2.20 0 1 0 4.41 0M222.7 124.7a2.20 2.20 0 1 0 -4.41 0a2.20 2.20 0 1 0 4.41 0M153.0 228.0a2.20 2.20 0 1 0 -4.41 0a2.20 2.20 0 1 0 4.41 0M284.5 175.0a2.20 2.20 0 1 0 -4.41 0a2.20 2.20 0 1 0 4.41 0M387.4 226.4a2.20 2.20 0 1 0 -4.41 0a2.20 2.20 0 1 0 4.41 0M262.3 213.6a2.20 2.20 0 1 0 -4.41 0a2.20 2.20 0 1 0 4.41 0M339.3 224.8a2.20 2.20 0 1 0 -4.41 0a2.20 2.20 0 1 0 4.41 0M157.3 282.2a2.20 2.20 0 1 0 -4.41 0a2.20 2.20 0 1 0 4.41 0M294.7 261.3a2.20 2.20 0 1 0 -4.41 0a2.20 2.20 0 1 0 4.41 0M342.1 270.5a2.20 2.20 0 1 0 -4.41 0a2.20 2.20 0 1 0 4.41 0M312.1 179.4a2.20 2.20 0 1 0 -4.41 0a2.20 2.20 0 1 0 4.41 0M318.9 365.7a2.20 2.20 0 1 0 -4.41 0a2.20 2.20 0 1 0 4.41 0M228.2 229.3a2.20 2.20 0 1 0 -4.41 0a2.20 2.20 0 1 0 4.41 0M239.9 224.2a2.20 2.20 0 1 0 -4.41 0a2.20 2.20 0 1 0 4.41 0M231.2 376.7a2.20 2.20 0 1 0 -4.41 0a2.20 2.20 0 1 0 4.41 0M326.8 261.9a2.20 2.20 0 1 0 -4.41 0a2.20 2.20 0 1 0 4.41 0M230.0 86.6a2.20 2.20 0 1 0 -4.41 0a2.20 2.20 0 1 0 4.41 0M250.5 245.9a2.20 2.20 0 1 0 -4.41 0a2.20 2.20 0 1 0 4.41 0M267.2 187.9a2.20 2.20 0 1 0 -4.41 0a2.20 2.20 0 1 0 4.41 0M463.0 303.8a2.20 2.20 0 1 0 -4.41 0a2.20 2.20 0 1 0 4.41 0M227.3 360.6a2.20 2.20 0 1 0 -4.41 0a2.20 2.20 0 1 0 4.41 0M332.9 279.3a2.20 2.20 0 1 0 -4.41 0a2.20 2.20 0 1 0 4.41 0M306.7 171.2a2.20 2.20 0 1 0 -4.41 0a2.20 2.20 0 1 0 4.41 0M219.4 289.1a2.20 2.20 0 1 0 -4.41 0a2.20 2.20 0 1 0 4.41 0M311.6 238.0a2.20 2.20 0 1 0 -4.41 0a2.20 2.20 0 1 0 4.41 0M401.8 152.2a2.20 2.20 0 1 0 -4.41 0a2.20 2.20 0 1 0 4.41 0M330.8 274.7a2.20 2.20 0 1 0 -4.41 0a2.20 2.20 0 1 0 4.41 0M287.8 200.9a2.20 2.20 0 1 0 -4.41 0a2.20 2.20 0 1 0 4.41 0M251.0 211.2a2.20 2.20 0 1 0 -4.41 0a2.20 2.20 0 1 0 4.41 0M141.6 298.1a2.20 2.20 0 1 0 -4.41 0a2.20 2.20 0 1 0 4.41 0M393.0 293.5a2.20 2.20 0 1 0 -4.41 0a2.20 2.20 0 1 0 4.41 0M180.8 198.3a2.20 2.20 0 1 0 -4.41 0a2.20 2.20 0 1 0 4.41 0M371.9 210.4a2.20 2.20 0 1 0 -4.41 0a2.20 2.20 0 1 0 4.41 0M472.2 236.4a2.20 2.20 0 1 0 -4.41 0a2.20 2.20 0 1 0 4.41 0M184.0 291.2a2.20 2.20 0 1 0 -4.41 0a2.20 2.20 0 1 0 4.41 0M364.3 204.8a2.20 2.20 0 1 0 -4.41 0a2.20 2.20 0 1 0 4.41 0M265.1 275.7a2.20 2.20 0 1 0 -4.41 0a2.20 2.20 0 1 0 4.41 0M167.0 180.4a2.20 2.20 0 1 0 -4.41 0a2.20 2.20 0 1 0 4.41 0M159.0 189.8a2.20 2.20 0 1 0 -4.41 0a2.20 2.20 0 1 0 4.41 0M156.2 217.1a2.20 2.20 0 1 0 -4.41 0a2.20 2.20 0 1 0 4.41 0M240.2 263.4a2.20 2.20 0 1 0 -4.41 0a2.20 2.20 0 1 0 4.41 0M172.8 154.4a2.20 2.20 0 1 0 -4.41 0a2.20 2.20 0 1 0 4.41 0M350.1 211.1a2.20 2.20 0 1 0 -4.41 0a2.20 2.20 0 1 0 4.41 0M473.9 215.8a2.20 2.20 0 1 0 -4.41 0a2.20 2.20 0 1 0 4.41 0M204.5 285.9a2.20 2.20 0 1 0 -4.41 0a2.20 2.20 0 1 0 4.41 0M355.6 145.2a2.20 2.20 0 1 0 -4.41 0a2.20 2.20 0 1 0 4.41 0M380.6 319.6a2.20 2.20 0 1 0 -4.41 0a2.20 2.20 0 1 0 4.41 0M334.3 189.3a2.20 2.20 0 1 0 -4.41 0a2.20 2.20 0 1 0 4.41 0M204.3 257.6a2.20 2.20 0 1 0 -4.41 0a2.20 2.20 0 1 0 4.41 0M284.4 237.8a2.20 2.20 0 1 0 -4.41 0a2.20 2.20 0 1 0 4.41 0M268.7 180.3a2.20 2.20 0 1 0 -4.41 0a2.20 2.20 0 1 0 4.41 0M343.0 240.3a2.20 2.20 0 1 0 -4.41 0a2.20 2.20 0 1 0 4.41 0M282.9 370.3a2.20 2.20 0 1 0 -4.41 0a2.20 2.20 0 1 0 4.41 0M367.0 223.8a2.20 2.20 0 1 0 -4.41 0a2.20 2.20 0 1 0 4.41 0M265.3 154.1a2.20 2.20 0 1 0 -4.41 0a2.20 2.20 0 1 0 4.41 0M403.7 217.5a2.20 2.20 0 1 0 -4.41 0a2.20 2.20 0 1 0 4.41 0M199.5 366.6a2.20 2.20 0 1 0 -4.41 0a2.20 2.20 0 1 0 4.41 0M203.5 272.5a2.20 2.20 0 1 0 -4.41 0a2.20 2.20 0 1 0 4.41 0M568.6 184.0a2.20 2.20 0 1 0 -4.41 0a2.20 2.20 0 1 0 4.41 0M269.7 249.2a2.20 2.20 0 1 0 -4.41 0a2.20 2.20 0 1 0 4.41 0M344.0 274.0a2.20 2.20 0 1 0 -4.41 0a2.20 2.20 0 1 0 4.41 0M331.8 211.1a2.20 2.20 0 1 0 -4.41 0a2.20 2.20 0 1 0 4.41 0M280.8 224.8a2.20 2.20 0 1 0 -4.41 0a2.20 2.20 0 1 0 4.41 0M351.2 277.7a2.20 2.20 0 1 0 -4.41 0a2.20 2.20 0 1 0 4.41 0M326.5 174.3a2.20 2.20 0 1 0 -4.41 0a2.20 2.20 0 1 0 4.41 0M267.8 271.5a2.20 2.20 0 1 0 -4.41 0a2.20 2.20 0 1 0 4.41 0M302.6 219.4a2.20 2.20 0 1 0 -4.41 0a2.20 2.20 0 1 0 4.41 0M283.7 375.3a2.20 2.20 0 1 0 -4.41 0a2.20 2.20 0 1 0 4.41 0M467.6 266.6a2.20 2.20 0 1 0 -4.41 0a2.20 2.20 0 1 0 4.41 0M253.1 234.2a2.20 2.20 0 1 0 -4.41 0a2.20 2.20 0 1 0 4.41 0M192.7 193.1a2.20 2.20 0 1 0 -4.41 0a2.20 2.20 0 1 0 4.41 0M295.3 230.2a2.20 2.20 0 1 0 -4.41 0a2.20 2.20 0 1 0 4.41 0M338.6 268.4a2.20 2.20 0 1 0 -4.41 0a2.20 2.20 0 1 0 4.41 0M315.5 283.3a2.20 2.20 0 1 0 -4.41 0a2.20 2.20 0 1 0 4.41 0M274.7 195.6a2.20 2.20 0 1 0 -4.41 0a2.20 2.20 0 1 0 4.41 0M233.0 305.7a2.20 2.20 0 1 0 -4.41 0a2.20 2.20 0 1 0 4.41 0M407.7 230.8a2.20 2.20 0 1 0 -4.41 0a2.20 2.20 0 1 0 4.41 0M251.0 295.8a2.20 2.20 0 1 0 -4.41 0a2.20 2.20 0 1 0 4.41 0M228.4 203.9a2.20 2.20 0 1 0 -4.41 0a2.20 2.20 0 1 0 4.41 0M289.4 235.4a2.20 2.20 0 1 0 -4.41 0a2.20 2.20 0 1 0 4.41 0M264.1 253.2a2.20 2.20 0 1 0 -4.41 0a2.20 2.20 0 1 0 4.41 0M403.0 240.8a2.20 2.20 0 1 0 -4.41 0a2.20 2.20 0 1 0 4.41 0M316.5 124.1a2.20 2.20 0 1 0 -4.41 0a2.20 2.20 0 1 0 4.41 0M350.3 199.3a2.20 2.20 0 1 0 -4.41 0a2.20 2.20 0 1 0 4.41 0M269.5 340.7a2.20 2.20 0 1 0 -4.41 0a2.20 2.20 0 1 0 4.41 0M323.8 231.7a2.20 2.20 0 1 0 -4.41 0a2.20 2.20 0 1 0 4.41 0M259.8 167.3a2.20 2.20 0 1 0 -4.41 0a2.20 2.20 0 1 0 4.41 0M314.1 200.6a2.20 2.20 0 1 0 -4.41 0a2.20 2.20 0 1 0 4.41 0M245.3 171.3a2.20 2.20 0 1 0 -4.41 0a2.20 2.20 0 1 0 4.41 0M208.6 266.1a2.20 2.20 0 1 0 -4.41 0a2.20 2.20 0 1 0 4.41 0M471.7 259.6a2.20 2.20 0 1 0 -4.41 0a2.20 2.20 0 1 0 4.41 0M355.5 270.0a2.20 2.20 0 1 0 -4.41 0a2.20 2.20 0 1 0 4.41 0M202.6 286.5a2.20 2.20 0 1 0 -4.41 0a2.20 2.20 0 1 0 4.41 0M246.3 348.5a2.20 2.20 0 1 0 -4.41 0a2.20 2.20 0 1 0 4.41 0M188.7 365.0a2.20 2.20 0 1 0 -4.41 0a2.20 2.20 0 1 0 4.41 0M489.6 339.2a2.20 2.20 0 1 0 -4.41 0a2.20 2.20 0 1 0 4.41 0M414.0 282.0a2.20 2.20 0 1 0 -4.41 0a2.20 2.20 0 1 0 4.41 0M290.1 93.1a2.20 2.20 0 1 0 -4.41 0a2.20 2.20 0 1 0 4.41 0M323.2 154.3a2.20 2.20 0 1 0 -4.41 0a2.20 2.20 0 1 0 4.41 0M252.6 163.6a2.20 2.20 0 1 0 -4.41 0a2.20 2.20 0 1 0 4.41 0M265.2 210.2a2.20 2.20 0 1 0 -4.41 0a2.20 2.20 0 1 0 4.41 0M218.7 319.9a2.20 2.20 0 1 0 -4.41 0a2.20 2.20 0 1 0 4.41 0M260.2 195.8a2.20 2.20 0 1 0 -4.41 0a2.20 2.20 0 1 0 4.41 0M434.9 213.8a2.20 2.20 0 1 0 -4.41 0a2.20 2.20 0 1 0 4.41 0M286.1 198.0a2.20 2.20 0 1 0 -4.41 0a2.20 2.20 0 1 0 4.41 0M304.6 216.9a2.20 2.20 0 1 0 -4.41 0a2.20 2.20 0 1 0 4.41 0M326.2 118.8a2.20 2.20 0 1 0 -4.41 0a2.20 2.20 0 1 0 4.41 0M384.6 218.7a2.20 2.20 0 1 0 -4.41 0a2.20 2.20 0 1 0 4.41 0M241.7 242.9a2.20 2.20 0 1 0 -4.41 0a2.20 2.20 0 1 0 4.41 0M221.0 342.1a2.20 2.20 0 1 0 -4.41 0a2.20 2.20 0 1 0 4.41 0M417.8 302.7a2.20 2.20 0 1 0 -4.41 0a2.20 2.20 0 1 0 4.41 0M247.1 288.0a2.20 2.20 0 1 0 -4.41 0a2.20 2.20 0 1 0 4.41 0M247.1 217.6a2.20 2.20 0 1 0 -4.41 0a2.20 2.20 0 1 0 4.41 0M202.7 180.0a2.20 2.20 0 1 0 -4.41 0a2.20 2.20 0 1 0 4.41 0M188.1 359.4a2.20 2.20 0 1 0 -4.41 0a2.20 2.20 0 1 0 4.41 0M243.6 306.2a2.20 2.20 0 1 0 -4.41 0a2.20 2.20 0 1 0 4.41 0M354.7 308.5a2.20 2.20 0 1 0 -4.41 0a2.20 2.20 0 1 0 4.41 0M402.4 292.0a2.20 2.20 0 1 0 -4.41 0a2.20 2.20 0 1 0 4.41 0M337.8 216.9a2.20 2.20 0 1 0 -4.41 0a2.20 2.20 0 1 0 4.41 0M290.6 316.8a2.20 2.20 0 1 0 -4.41 0a2.20 2.20 0 1 0 4.41 0M284.5 148.3a2.20 2.20 0 1 0 -4.41 0a2.20 2.20 0 1 0 4.41 0M229.5 188.2a2.20 2.20 0 1 0 -4.41 0a2.20 2.20 0 1 0 4.41 0M234.7 212.9a2.20 2.20 0 1 0 -4.41 0a2.20 2.20 0 1 0 4.41 0M385.3 216.4a2.20 2.20 0 1 0 -4.41 0a2.20 2.20 0 1 0 4.41 0M204.7 343.3a2.20 2.20 0 1 0 -4.41 0a2.20 2.20 0 1 0 4.41 0M469.0 170.5a2.20 2.20 0 1 0 -4.41 0a2.20 2.20 0 1 0 4.41 0M307.1 179.7a2.20 2.20 0 1 0 -4.41 0a2.20 2.20 0 1 0 4.41 0M315.6 277.0a2.20 2.20 0 1 0 -4.41 0a2.20 2.20 0 1 0 4.41 0M246.2 235.0a2.20 2.20 0 1 0 -4.41 0a2.20 2.20 0 1 0 4.41 0M246.0 220.8a2.20 2.20 0 1 0 -4.41 0a2.20 2.20 0 1 0 4.41 0M192.1 330.9a2.20 2.20 0 1 0 -4.41 0a2.20 2.20 0 1 0 4.41 0M303.1 241.5a2.20 2.20 0 1 0 -4.41 0a2.20 2.20 0 1 0 4.41 0M322.6 313.6a2.20 2.20 0 1 0 -4.41 0a2.20 2.20 0 1 0 4.41 0M305.8 323.4a2.20 2.20 0 1 0 -4.41 0a2.20 2.20 0 1 0 4.41 0M255.9 310.8a2.20 2.20 0 1 0 -4.41 0a2.20 2.20 0 1 0 4.41 0M226.1 342.0a2.20 2.20 0 1 0 -4.41 0a2.20 2.20 0 1 0 4.41 0M265.4 259.8a2.20 2.20 0 1 0 -4.41 0a2.20 2.20 0 1 0 4.41 0M402.2 372.0a2.20 2.20 0 1 0 -4.41 0a2.20 2.20 0 1 0 4.41 0M227.4 164.8a2.20 2.20 0 1 0 -4.41 0a2.20 2.20 0 1 0 4.41 0M302.4 236.6a2.20 2.20 0 1 0 -4.41 0a2.20 2.20 0 1 0 4.41 0M467.7 235.7a2.20 2.20 0 1 0 -4.41 0a2.20 2.20 0 1 0 4.41 0M288.2 201.9a2.20 2.20 0 1 0 -4.41 0a2.20 2.20 0 1 0 4.41 0M201.7 275.4a2.20 2.20 0 1 0 -4.41 0a2.20 2.20 0 1 0 4.41 0M237.7 196.8a2.20 2.20 0 1 0 -4.41 0a2.20 2.20 0 1 0 4.41 0M329.8 291.7a2.20 2.20 0 1 0 -4.41 0a2.20 2.20 0 1 0 4.41 0M289.9 242.3a2.20 2.20 0 1 0 -4.41 0a2.20 2.20 0 1 0 4.41 0M274.4 238.4a2.20 2.20 0 1 0 -4.41 0a2.20 2.20 0 1 0 4.41 0M271.0 325.1a2.20 2.20 0 1 0 -4.41 0a2.20 2.20 0 1 0 4.41 0M317.6 210.0a2.20 2.20 0 1 0 -4.41 0a2.20 2.20 0 1 0 4.41 0M420.9 262.6a2.20 2.20 0 1 0 -4.41 0a2.20 2.20 0 1 0 4.41 0M281.4 180.2a2.20 2.20 0 1 0 -4.41 0a2.20 2.20 0 1 0 4.41 0M391.3 272.3a2.20 2.20 0 1 0 -4.41 0a2.20 2.20 0 1 0 4.41 0M343.6 306.9a2.20 2.20 0 1 0 -4.41 0a2.20 2.20 0 1 0 4.41 0M272.0 257.1a2.20 2.20 0 1 0 -4.41 0a2.20 2.20 0 1 0 4.41 0M196.1 278.5a2.20 2.20 0 1 0 -4.41 0a2.20 2.20 0 1 0 4.41 0M265.3 211.7a2.20 2.20 0 1 0 -4.41 0a2.20 2.20 0 1 0 4.41 0M275.1 169.0a2.20 2.20 0 1 0 -4.41 0a2.20 2.20 0 1 0 4.41 0M301.7 358.7a2.20 2.20 0 1 0 -4.41 0a2.20 2.20 0 1 0 4.41 0M388.5 343.9a2.20 2.20 0 1 0 -4.41 0a2.20 2.20 0 1 0 4.41 0M491.4 123.5a2.20 2.20 0 1 0 -4.41 0a2.20 2.20 0 1 0 4.41 0M404.1 214.3a2.20 2.20 0 1 0 -4.41 0a2.20 2.20 0 1 0 4.41 0M274.8 315.8a2.20 2.20 0 1 0 -4.41 0a2.20 2.20 0 1 0 4.41 0M174.6 252.0a2.20 2.20 0 1 0 -4.41 0a2.20 2.20 0 1 0 4.41 0M253.8 216.2a2.20 2.20 0 1 0 -4.41 0a2.20 2.20 0 1 0 4.41 0M296.6 368.1a2.20 2.20 0 1 0 -4.41 0a2.20 2.20 0 1 0 4.41 0M356.8 252.0a2.20 2.20 0 1 0 -4.41 0a2.20 2.20 0 1 0 4.41 0M369.1 375.0a2.20 2.20 0 1 0 -4.41 0a2.20 2.20 0 1 0 4.41 0M343.0 150.8a2.20 2.20 0 1 0 -4.41 0a2.20 2.20 0 1 0 4.41 0M167.8 277.5a2.20 2.20 0 1 0 -4.41 0a2.20 2.20 0 1 0 4.41 0M384.5 149.3a2.20 2.20 0 1 0 -4.41 0a2.20 2.20 0 1 0 4.41 0M282.6 193.2a2.20 2.20 0 1 0 -4.41 0a2.20 2.20 0 1 0 4.41 0M331.9 269.4a2.20 2.20 0 1 0 -4.41 0a2.20 2.20 0 1 0 4.41 0M303.5 364.7a2.20 2.20 0 1 0 -4.41 0a2.20 2.20 0 1 0 4.41 0M331.3 370.5a2.20 2.20 0 1 0 -4.41 0a2.20 2.20 0 1 0 4.41 0M282.8 335.4a2.20 2.20 0 1 0 -4.41 0a2.20 2.20 0 1 0 4.41 0M159.5 320.0a2.20 2.20 0 1 0 -4.41 0a2.20 2.20 0 1 0 4.41 0M375.1 271.4a2.20 2.20 0 1 0 -4.41 0a2.20 2.20 0 1 0 4.41 0M325.2 296.0a2.20 2.20 0 1 0 -4.41 0a2.20 2.20 0 1 0 4.41 0M278.2 226.0a2.20 2.20 0 1 0 -4.41 0a2.20 2.20 0 1 0 4.41 0M310.1 313.8a2.20 2.20 0 1 0 -4.41 0a2.20 2.20 0 1 0 4.41 0M296.6 209.4a2.20 2.20 0 1 0 -4.41 0a2.20 2.20 0 1 0 4.41 0M318.8 268.5a2.20 2.20 0 1 0 -4.41 0a2.20 2.20 0 1 0 4.41 0M415.3 207.7a2.20 2.20 0 1 0 -4.41 0a2.20 2.20 0 1 0 4.41 0M286.6 212.1a2.20 2.20 0 1 0 -4.41 0a2.20 2.20 0 1 0 4.41 0M314.8 348.5a2.20 2.20 0 1 0 -4.41 0a2.20 2.20 0 1 0 4.41 0M382.2 247.8a2.20 2.20 0 1 0 -4.41 0a2.20 2.20 0 1 0 4.41 0M400.9 217.7a2.20 2.20 0 1 0 -4.41 0a2.20 2.20 0 1 0 4.41 0M379.1 172.3a2.20 2.20 0 1 0 -4.41 0a2.20 2.20 0 1 0 4.41 0M249.8 216.3a2.20 2.20 0 1 0 -4.41 0a2.20 2.20 0 1 0 4.41 0M476.4 306.3a2.20 2.20 0 1 0 -4.41 0a2.20 2.20 0 1 0 4.41 0M294.0 318.6a2.20 2.20 0 1 0 -4.41 0a2.20 2.20 0 1 0 4.41 0M441.0 305.9a2.20 2.20 0 1 0 -4.41 0a2.20 2.20 0 1 0 4.41 0M206.4 294.6a2.20 2.20 0 1 0 -4.41 0a2.20 2.20 0 1 0 4.41 0M306.1 278.1a2.20 2.20 0 1 0 -4.41 0a2.20 2.20 0 1 0 4.41 0M414.8 222.1a2.20 2.20 0 1 0 -4.41 0a2.20 2.20 0 1 0 4.41 0M241.0 195.6a2.20 2.20 0 1 0 -4.41 0a2.20 2.20 0 1 0 4.41 0M255.2 245.7a2.20 2.20 0 1 0 -4.41 0a2.20 2.20 0 1 0 4.41 0M210.3 342.6a2.20 2.20 0 1 0 -4.41 0a2.20 2.20 0 1 0 4.41 0M219.8 206.2a2.20 2.20 0 1 0 -4.41 0a2.20 2.20 0 1 0 4.41 0M273.5 180.2a2.20 2.20 0 1 0 -4.41 0a2.20 2.20 0 1 0 4.41 0M313.3 287.9a2.20 2.20 0 1 0 -4.41 0a2.20 2.20 0 1 0 4.41 0M140.3 304.2a2.20 2.20 0 1 0 -4.41 0a2.20 2.20 0 1 0 4.41 0M323.6 306.8a2.20 2.20 0 1 0 -4.41 0a2.20 2.20 0 1 0 4.41 0M416.3 341.6a2.20 2.20 0 1 0 -4.41 0a2.20 2.20 0 1 0 4.41 0M456.1 199.7a2.20 2.20 0 1 0 -4.41 0a2.20 2.20 0 1 0 4.41 0M406.1 288.6a2.20 2.20 0 1 0 -4.41 0a2.20 2.20 0 1 0 4.41 0M339.8 277.5a2.20 2.20 0 1 0 -4.41 0a2.20 2.20 0 1 0 4.41 0M155.2 306.3a2.20 2.20 0 1 0 -4.41 0a2.20 2.20 0 1 0 4.41 0M256.8 284.7a2.20 2.20 0 1 0 -4.41 0a2.20 2.20 0 1 0 4.41 0M275.7 250.0a2.20 2.20 0 1 0 -4.41 0a2.20 2.20 0 1 0 4.41 0M369.2 313.9a2.20 2.20 0 1 0 -4.41 0a2.20 2.20 0 1 0 4.41 0M275.1 292.3a2.20 2.20 0 1 0 -4.41 0a2.20 2.20 0 1 0 4.41 0M205.0 220.5a2.20 2.20 0 1 0 -4.41 0a2.20 2.20 0 1 0 4.41 0M422.6 292.5a2.20 2.20 0 1 0 -4.41 0a2.20 2.20 0 1 0 4.41 0M376.4 273.4a2.20 2.20 0 1 0 -4.41 0a2.20 2.20 0 1 0 4.41 0M326.6 201.9a2.20 2.20 0 1 0 -4.41 0a2.20 2.20 0 1 0 4.41 0M398.6 178.7a2.20 2.20 0 1 0 -4.41 0a2.20 2.20 0 1 0 4.41 0M186.4 338.4a2.20 2.20 0 1 0 -4.41 0a2.20 2.20 0 1 0 4.41 0M360.8 236.0a2.20 2.20 0 1 0 -4.41 0a2.20 2.20 0 1 0 4.41 0M256.3 300.6a2.20 2.20 0 1 0 -4.41 0a2.20 2.20 0 1 0 4.41 0M343.3 226.8a2.20 2.20 0 1 0 -4.41 0a2.20 2.20 0 1 0 4.41 0M292.7 191.6a2.20 2.20 0 1 0 -4.41 0a2.20 2.20 0 1 0 4.41 0M332.9 165.5a2.20 2.20 0 1 0 -4.41 0a2.20 2.20 0 1 0 4.41 0M396.8 350.1a2.20 2.20 0 1 0 -4.41 0a2.20 2.20 0 1 0 4.41 0M302.3 211.6a2.20 2.20 0 1 0 -4.41 0a2.20 2.20 0 1 0 4.41 0M361.5 319.6a2.20 2.20 0 1 0 -4.41 0a2.20 2.20 0 1 0 4.41 0M191.9 287.1a2.20 2.20 0 1 0 -4.41 0a2.20 2.20 0 1 0 4.41 0M247.1 158.0a2.20 2.20 0 1 0 -4.41 0a2.20 2.20 0 1 0 4.41 0M430.6 218.7a2.20 2.20 0 1 0 -4.41 0a2.20 2.20 0 1 0 4.41 0M341.3 355.6a2.20 2.20 0 1 0 -4.41 0a2.20 2.20 0 1 0 4.41 0M116.7 243.9a2.20 2.20 0 1 0 -4.41 0a2.20 2.20 0 1 0 4.41 0M173.1 155.6a2.20 2.20 0 1 0 -4.41 0a2.20 2.20 0 1 0 4.41 0M301.8 195.6a2.20 2.20 0 1 0 -4.41 0a2.20 2.20 0 1 0 4.41 0M386.9 189.3a2.20 2.20 0 1 0 -4.41 0a2.20 2.20 0 1 0 4.41 0M308.7 206.2a2.20 2.20 0 1 0 -4.41 0a2.20 2.20 0 1 0 4.41 0M355.9 271.3a2.20 2.20 0 1 0 -4.41 0a2.20 2.20 0 1 0 4.41 0M362.4 225.9a2.20 2.20 0 1 0 -4.41 0a2.20 2.20 0 1 0 4.41 0M450.9 347.9a2.20 2.20 0 1 0 -4.41 0a2.20 2.20 0 1 0 4.41 0M321.4 230.3a2.20 2.20 0 1 0 -4.41 0a2.20 2.20 0 1 0 4.41 0M281.6 230.3a2.20 2.20 0 1 0 -4.41 0a2.20 2.20 0 1 0 4.41 0M140.8 228.8a2.20 2.20 0 1 0 -4.41 0a2.20 2.20 0 1 0 4.41 0M310.2 285.6a2.20 2.20 0 1 0 -4.41 0a2.20 2.20 0 1 0 4.41 0M247.9 221.7a2.20 2.20 0 1 0 -4.41 0a2.20 2.20 0 1 0 4.41 0M219.5 299.7a2.20 2.20 0 1 0 -4.41 0a2.20 2.20 0 1 0 4.41 0M283.5 178.9a2.20 2.20 0 1 0 -4.41 0a2.20 2.20 0 1 0 4.41 0M392.6 117.8a2.20 2.20 0 1 0 -4.41 0a2.20 2.20 0 1 0 4.41 0M152.6 195.4a2.20 2.20 0 1 0 -4.41 0a2.20 2.20 0 1 0 4.41 0M256.1 135.5a2.20 2.20 0 1 0 -4.41 0a2.20 2.20 0 1 0 4.41 0M318.4 274.9a2.20 2.20 0 1 0 -4.41 0a2.20 2.20 0 1 0 4.41 0M227.4 247.8a2.20 2.20 0 1 0 -4.41 0a2.20 2.20 0 1 0 4.41 0M308.3 351.9a2.20 2.20 0 1 0 -4.41 0a2.20 2.20 0 1 0 4.41 0M313.4 180.3a2.20 2.20 0 1 0 -4.41 0a2.20 2.20 0 1 0 4.41 0M285.9 262.0a2.20 2.20 0 1 0 -4.41 0a2.20 2.20 0 1 0 4.41 0M89.4 340.5a2.20 2.20 0 1 0 -4.41 0a2.20 2.20 0 1 0 4.41 0M503.1 173.4a2.20 2.20 0 1 0 -4.41 0a2.20 2.20 0 1 0 4.41 0M285.0 215.7a2.20 2.20 0 1 0 -4.41 0a2.20 2.20 0 1 0 4.41 0M360.7 293.3a2.20 2.20 0 1 0 -4.41 0a2.20 2.20 0 1 0 4.41 0M310.7 193.0a2.20 2.20 0 1 0 -4.41 0a2.20 2.20 0 1 0 4.41 0M398.3 319.5a2.20 2.20 0 1 0 -4.41 0a2.20 2.20 0 1 0 4.41 0M364.5 343.9a2.20 2.20 0 1 0 -4.41 0a2.20 2.20 0 1 0 4.41 0M272.8 215.5a2.20 2.20 0 1 0 -4.41 0a2.20 2.20 0 1 0 4.41 0M322.4 210.8a2.20 2.20 0 1 0 -4.41 0a2.20 2.20 0 1 0 4.41 0M230.2 256.7a2.20 2.20 0 1 0 -4.41 0a2.20 2.20 0 1 0 4.41 0M377.8 181.9a2.20 2.20 0 1 0 -4.41 0a2.20 2.20 0 1 0 4.41 0M265.3 195.6a2.20 2.20 0 1 0 -4.41 0a2.20 2.20 0 1 0 4.41 0M509.5 199.4a2.20 2.20 0 1 0 -4.41 0a2.20 2.20 0 1 0 4.41 0M162.9 178.0a2.20 2.20 0 1 0 -4.41 0a2.20 2.20 0 1 0 4.41 0M249.9 313.9a2.20 2.20 0 1 0 -4.41 0a2.20 2.20 0 1 0 4.41 0M364.6 267.4a2.20 2.20 0 1 0 -4.41 0a2.20 2.20 0 1 0 4.41 0M335.5 259.8a2.20 2.20 0 1 0 -4.41 0a2.20 2.20 0 1 0 4.41 0M241.6 217.2a2.20 2.20 0 1 0 -4.41 0a2.20 2.20 0 1 0 4.41 0M236.9 132.6a2.20 2.20 0 1 0 -4.41 0a2.20 2.20 0 1 0 4.41 0M309.7 154.1a2.20 2.20 0 1 0 -4.41 0a2.20 2.20 0 1 0 4.41 0M278.2 295.2a2.20 2.20 0 1 0 -4.41 0a2.20 2.20 0 1 0 4.41 0M173.8 269.2a2.20 2.20 0 1 0 -4.41 0a2.20 2.20 0 1 0 4.41 0M297.0 356.9a2.20 2.20 0 1 0 -4.41 0a2.20 2.20 0 1 0 4.41 0M294.4 183.1a2.20 2.20 0 1 0 -4.41 0a2.20 2.20 0 1 0 4.41 0M333.4 247.9a2.20 2.20 0 1 0 -4.41 0a2.20 2.20 0 1 0 4.41 0M209.5 236.6a2.20 2.20 0 1 0 -4.41 0a2.20 2.20 0 1 0 4.41 0M357.9 271.9a2.20 2.20 0 1 0 -4.41 0a2.20 2.20 0 1 0 4.41 0M395.4 219.4a2.20 2.20 0 1 0 -4.41 0a2.20 2.20 0 1 0 4.41 0M338.7 197.1a2.20 2.20 0 1 0 -4.41 0a2.20 2.20 0 1 0 4.41 0M220.3 173.1a2.20 2.20 0 1 0 -4.41 0a2.20 2.20 0 1 0 4.41 0M251.7 214.2a2.20 2.20 0 1 0 -4.41 0a2.20 2.20 0 1 0 4.41 0M336.0 243.6a2.20 2.20 0 1 0 -4.41 0a2.20 2.20 0 1 0 4.41 0M250.1 195.3a2.20 2.20 0 1 0 -4.41 0a2.20 2.20 0 1 0 4.41 0M105.6 202.2a2.20 2.20 0 1 0 -4.41 0a2.20 2.20 0 1 0 4.41 0M360.5 203.5a2.20 2.20 0 1 0 -4.41 0a2.20 2.20 0 1 0 4.41 0M231.5 300.0a2.20 2.20 0 1 0 -4.41 0a2.20 2.20 0 1 0 4.41 0M271.0 250.0a2.20 2.20 0 1 0 -4.41 0a2.20 2.20 0 1 0 4.41 0M440.9 237.5a2.20 2.20 0 1 0 -4.41 0a2.20 2.20 0 1 0 4.41 0M225.2 321.2a2.20 2.20 0 1 0 -4.41 0a2.20 2.20 0 1 0 4.41 0M369.4 353.9a2.20 2.20 0 1 0 -4.41 0a2.20 2.20 0 1 0 4.41 0M204.1 288.3a2.20 2.20 0 1 0 -4.41 0a2.20 2.20 0 1 0 4.41 0M287.6 251.0a2.20 2.20 0 1 0 -4.41 0a2.20 2.20 0 1 0 4.41 0M303.2 182.3a2.20 2.20 0 1 0 -4.41 0a2.20 2.20 0 1 0 4.41 0M210.0 267.1a2.20 2.20 0 1 0 -4.41 0a2.20 2.20 0 1 0 4.41 0M237.0 355.5a2.20 2.20 0 1 0 -4.41 0a2.20 2.20 0 1 0 4.41 0M314.4 176.4a2.20 2.20 0 1 0 -4.41 0a2.20 2.20 0 1 0 4.41 0M365.9 295.5a2.20 2.20 0 1 0 -4.41 0a2.20 2.20 0 1 0 4.41 0M158.9 113.2a2.20 2.20 0 1 0 -4.41 0a2.20 2.20 0 1 0 4.41 0M260.0 268.5a2.20 2.20 0 1 0 -4.41 0a2.20 2.20 0 1 0 4.41 0M366.8 234.0a2.20 2.20 0 1 0 -4.41 0a2.20 2.20 0 1 0 4.41 0M265.9 217.2a2.20 2.20 0 1 0 -4.41 0a2.20 2.20 0 1 0 4.41 0M316.3 187.6a2.20 2.20 0 1 0 -4.41 0a2.20 2.20 0 1 0 4.41 0M354.1 125.8a2.20 2.20 0 1 0 -4.41 0a2.20 2.20 0 1 0 4.41 0M328.2 218.1a2.20 2.20 0 1 0 -4.41 0a2.20 2.20 0 1 0 4.41 0M338.0 212.9a2.20 2.20 0 1 0 -4.41 0a2.20 2.20 0 1 0 4.41 0M269.4 350.6a2.20 2.20 0 1 0 -4.41 0a2.20 2.20 0 1 0 4.41 0M281.3 340.8a2.20 2.20 0 1 0 -4.41 0a2.20 2.20 0 1 0 4.41 0M70.3 212.2a2.20 2.20 0 1 0 -4.41 0a2.20 2.20 0 1 0 4.41 0M284.2 310.0a2.20 2.20 0 1 0 -4.41 0a2.20 2.20 0 1 0 4.41 0M331.4 237.4a2.20 2.20 0 1 0 -4.41 0a2.20 2.20 0 1 0 4.41 0M347.3 277.3a2.20 2.20 0 1 0 -4.41 0a2.20 2.20 0 1 0 4.41 0M248.1 252.0a2.20 2.20 0 1 0 -4.41 0a2.20 2.20 0 1 0 4.41 0M445.9 137.1a2.20 2.20 0 1 0 -4.41 0a2.20 2.20 0 1 0 4.41 0M336.1 214.3a2.20 2.20 0 1 0 -4.41 0a2.20 2.20 0 1 0 4.41 0M302.8 180.3a2.20 2.20 0 1 0 -4.41 0a2.20 2.20 0 1 0 4.41 0M396.9 335.0a2.20 2.20 0 1 0 -4.41 0a2.20 2.20 0 1 0 4.41 0M246.0 307.7a2.20 2.20 0 1 0 -4.41 0a2.20 2.20 0 1 0 4.41 0M263.1 199.9a2.20 2.20 0 1 0 -4.41 0a2.20 2.20 0 1 0 4.41 0M476.1 288.2a2.20 2.20 0 1 0 -4.41 0a2.20 2.20 0 1 0 4.41 0M314.7 344.8a2.20 2.20 0 1 0 -4.41 0a2.20 2.20 0 1 0 4.41 0M428.6 239.2a2.20 2.20 0 1 0 -4.41 0a2.20 2.20 0 1 0 4.41 0M194.1 227.1a2.20 2.20 0 1 0 -4.41 0a2.20 2.20 0 1 0 4.41 0M296.4 309.1a2.20 2.20 0 1 0 -4.41 0a2.20 2.20 0 1 0 4.41 0M325.4 204.3a2.20 2.20 0 1 0 -4.41 0a2.20 2.20 0 1 0 4.41 0M303.5 244.3a2.20 2.20 0 1 0 -4.41 0a2.20 2.20 0 1 0 4.41 0M228.6 193.5a2.20 2.20 0 1 0 -4.41 0a2.20 2.20 0 1 0 4.41 0M283.1 251.0a2.20 2.20 0 1 0 -4.41 0a2.20 2.20 0 1 0 4.41 0M214.1 187.3a2.20 2.20 0 1 0 -4.41 0a2.20 2.20 0 1 0 4.41 0M341.2 268.3a2.20 2.20 0 1 0 -4.41 0a2.20 2.20 0 1 0 4.41 0M394.0 200.5a2.20 2.20 0 1 0 -4.41 0a2.20 2.20 0 1 0 4.41 0M102.1 131.3a2.20 2.20 0 1 0 -4.41 0a2.20 2.20 0 1 0 4.41 0M411.2 167.6a2.20 2.20 0 1 0 -4.41 0a2.20 2.20 0 1 0 4.41 0M206.4 203.8a2.20 2.20 0 1 0 -4.41 0a2.20 2.20 0 1 0 4.41 0M325.4 242.6a2.20 2.20 0 1 0 -4.41 0a2.20 2.20 0 1 0 4.41 0M338.5 196.5a2.20 2.20 0 1 0 -4.41 0a2.20 2.20 0 1 0 4.41 0M265.1 327.6a2.20 2.20 0 1 0 -4.41 0a2.20 2.20 0 1 0 4.41 0M227.5 278.8a2.20 2.20 0 1 0 -4.41 0a2.20 2.20 0 1 0 4.41 0M326.6 239.7a2.20 2.20 0 1 0 -4.41 0a2.20 2.20 0 1 0 4.41 0M324.9 259.2a2.20 2.20 0 1 0 -4.41 0a2.20 2.20 0 1 0 4.41 0M352.1 312.6a2.20 2.20 0 1 0 -4.41 0a2.20 2.20 0 1 0 4.41 0M128.1 268.5a2.20 2.20 0 1 0 -4.41 0a2.20 2.20 0 1 0 4.41 0M171.2 111.4a2.20 2.20 0 1 0 -4.41 0a2.20 2.20 0 1 0 4.41 0M427.1 318.1a2.20 2.20 0 1 0 -4.41 0a2.20 2.20 0 1 0 4.41 0M377.0 265.1a2.20 2.20 0 1 0 -4.41 0a2.20 2.20 0 1 0 4.41 0M319.3 300.8a2.20 2.20 0 1 0 -4.41 0a2.20 2.20 0 1 0 4.41 0M368.3 310.6a2.20 2.20 0 1 0 -4.41 0a2.20 2.20 0 1 0 4.41 0M388.9 190.2a2.20 2.20 0 1 0 -4.41 0a2.20 2.20 0 1 0 4.41 0M105.6 266.4a2.20 2.20 0 1 0 -4.41 0a2.20 2.20 0 1 0 4.41 0M395.2 345.1a2.20 2.20 0 1 0 -4.41 0a2.20 2.20 0 1 0 4.41 0M250.3 287.3a2.20 2.20 0 1 0 -4.41 0a2.20 2.20 0 1 0 4.41 0M323.9 279.7a2.20 2.20 0 1 0 -4.41 0a2.20 2.20 0 1 0 4.41 0M273.7 154.3a2.20 2.20 0 1 0 -4.41 0a2.20 2.20 0 1 0 4.41 0M357.0 193.9a2.20 2.20 0 1 0 -4.41 0a2.20 2.20 0 1 0 4.41 0M275.8 152.2a2.20 2.20 0 1 0 -4.41 0a2.20 2.20 0 1 0 4.41 0M360.8 288.6a2.20 2.20 0 1 0 -4.41 0a2.20 2.20 0 1 0 4.41 0M255.6 192.9a2.20 2.20 0 1 0 -4.41 0a2.20 2.20 0 1 0 4.41 0M208.9 147.8a2.20 2.20 0 1 0 -4.41 0a2.20 2.20 0 1 0 4.41 0M390.1 217.7a2.20 2.20 0 1 0 -4.41 0a2.20 2.20 0 1 0 4.41 0M339.7 224.4a2.20 2.20 0 1 0 -4.41 0a2.20 2.20 0 1 0 4.41 0M421.5 210.1a2.20 2.20 0 1 0 -4.41 0a2.20 2.20 0 1 0 4.41 0M301.3 243.5a2.20 2.20 0 1 0 -4.41 0a2.20 2.20 0 1 0 4.41 0M371.2 297.7a2.20 2.20 0 1 0 -4.41 0a2.20 2.20 0 1 0 4.41 0M438.7 197.1a2.20 2.20 0 1 0 -4.41 0a2.20 2.20 0 1 0 4.41 0M263.3 243.8a2.20 2.20 0 1 0 -4.41 0a2.20 2.20 0 1 0 4.41 0M188.0 299.7a2.20 2.20 0 1 0 -4.41 0a2.20 2.20 0 1 0 4.41 0M283.9 179.8a2.20 2.20 0 1 0 -4.41 0a2.20 2.20 0 1 0 4.41 0M275.5 211.2a2.20 2.20 0 1 0 -4.41 0a2.20 2.20 0 1 0 4.41 0M311.4 224.9a2.20 2.20 0 1 0 -4.41 0a2.20 2.20 0 1 0 4.41 0M447.6 267.6a2.20 2.20 0 1 0 -4.41 0a2.20 2.20 0 1 0 4.41 0M259.5 213.5a2.20 2.20 0 1 0 -4.41 0a2.20 2.20 0 1 0 4.41 0M343.7 251.4a2.20 2.20 0 1 0 -4.41 0a2.20 2.20 0 1 0 4.41 0M273.7 240.4a2.20 2.20 0 1 0 -4.41 0a2.20 2.20 0 1 0 4.41 0M290.1 301.7a2.20 2.20 0 1 0 -4.41 0a2.20 2.20 0 1 0 4.41 0M316.8 185.9a2.20 2.20 0 1 0 -4.41 0a2.20 2.20 0 1 0 4.41 0M418.3 265.1a2.20 2.20 0 1 0 -4.41 0a2.20 2.20 0 1 0 4.41 0M299.0 170.9a2.20 2.20 0 1 0 -4.41 0a2.20 2.20 0 1 0 4.41 0M374.3 216.8a2.20 2.20 0 1 0 -4.41 0a2.20 2.20 0 1 0 4.41 0M347.5 267.3a2.20 2.20 0 1 0 -4.41 0a2.20 2.20 0 1 0 4.41 0M361.3 314.8a2.20 2.20 0 1 0 -4.41 0a2.20 2.20 0 1 0 4.41 0M258.5 171.4a2.20 2.20 0 1 0 -4.41 0a2.20 2.20 0 1 0 4.41 0M420.3 328.9a2.20 2.20 0 1 0 -4.41 0a2.20 2.20 0 1 0 4.41 0M277.4 182.5a2.20 2.20 0 1 0 -4.41 0a2.20 2.20 0 1 0 4.41 0M301.0 211.2a2.20 2.20 0 1 0 -4.41 0a2.20 2.20 0 1 0 4.41 0M402.5 218.7a2.20 2.20 0 1 0 -4.41 0a2.20 2.20 0 1 0 4.41 0M406.6 295.3a2.20 2.20 0 1 0 -4.41 0a2.20 2.20 0 1 0 4.41 0M229.0 235.7a2.20 2.20 0 1 0 -4.41 0a2.20 2.20 0 1 0 4.41 0M237.9 194.0a2.20 2.20 0 1 0 -4.41 0a2.20 2.20 0 1 0 4.41 0M204.5 360.6a2.20 2.20 0 1 0 -4.41 0a2.20 2.20 0 1 0 4.41 0M331.5 309.5a2.20 2.20 0 1 0 -4.41 0a2.20 2.20 0 1 0 4.41 0M304.2 296.8a2.20 2.20 0 1 0 -4.41 0a2.20 2.20 0 1 0 4.41 0M335.0 265.5a2.20 2.20 0 1 0 -4.41 0a2.20 2.20 0 1 0 4.41 0M329.0 284.2a2.20 2.20 0 1 0 -4.41 0a2.20 2.20 0 1 0 4.41 0M265.7 262.0a2.20 2.20 0 1 0 -4.41 0a2.20 2.20 0 1 0 4.41 0M226.4 321.6a2.20 2.20 0 1 0 -4.41 0a2.20 2.20 0 1 0 4.41 0M391.7 270.7a2.20 2.20 0 1 0 -4.41 0a2.20 2.20 0 1 0 4.41 0M352.2 199.0a2.20 2.20 0 1 0 -4.41 0a2.20 2.20 0 1 0 4.41 0M185.0 344.8a2.20 2.20 0 1 0 -4.41 0a2.20 2.20 0 1 0 4.41 0M290.3 257.8a2.20 2.20 0 1 0 -4.41 0a2.20 2.20 0 1 0 4.41 0M233.6 159.0a2.20 2.20 0 1 0 -4.41 0a2.20 2.20 0 1 0 4.41 0M144.7 240.2a2.20 2.20 0 1 0 -4.41 0a2.20 2.20 0 1 0 4.41 0M328.2 149.9a2.20 2.20 0 1 0 -4.41 0a2.20 2.20 0 1 0 4.41 0M294.2 263.2a2.20 2.20 0 1 0 -4.41 0a2.20 2.20 0 1 0 4.41 0M277.5 238.3a2.20 2.20 0 1 0 -4.41 0a2.20 2.20 0 1 0 4.41 0M307.3 250.2a2.20 2.20 0 1 0 -4.41 0a2.20 2.20 0 1 0 4.41 0M355.3 267.7a2.20 2.20 0 1 0 -4.41 0a2.20 2.20 0 1 0 4.41 0M305.1 240.2a2.20 2.20 0 1 0 -4.41 0a2.20 2.20 0 1 0 4.41 0M259.1 293.0a2.20 2.20 0 1 0 -4.41 0a2.20 2.20 0 1 0 4.41 0M245.6 215.5a2.20 2.20 0 1 0 -4.41 0a2.20 2.20 0 1 0 4.41 0M286.9 207.2a2.20 2.20 0 1 0 -4.41 0a2.20 2.20 0 1 0 4.41 0M330.0 356.2a2.20 2.20 0 1 0 -4.41 0a2.20 2.20 0 1 0 4.41 0M217.0 242.5a2.20 2.20 0 1 0 -4.41 0a2.20 2.20 0 1 0 4.41 0M277.6 250.3a2.20 2.20 0 1 0 -4.41 0a2.20 2.20 0 1 0 4.41 0M388.5 322.2a2.20 2.20 0 1 0 -4.41 0a2.20 2.20 0 1 0 4.41 0M296.3 213.6a2.20 2.20 0 1 0 -4.41 0a2.20 2.20 0 1 0 4.41 0M254.6 151.4a2.20 2.20 0 1 0 -4.41 0a2.20 2.20 0 1 0 4.41 0M264.0 323.9a2.20 2.20 0 1 0 -4.41 0a2.20 2.20 0 1 0 4.41 0M384.8 275.9a2.20 2.20 0 1 0 -4.41 0a2.20 2.20 0 1 0 4.41 0M362.9 236.1a2.20 2.20 0 1 0 -4.41 0a2.20 2.20 0 1 0 4.41 0M393.8 319.0a2.20 2.20 0 1 0 -4.41 0a2.20 2.20 0 1 0 4.41 0M293.1 365.5a2.20 2.20 0 1 0 -4.41 0a2.20 2.20 0 1 0 4.41 0M333.7 150.3a2.20 2.20 0 1 0 -4.41 0a2.20 2.20 0 1 0 4.41 0M273.2 205.0a2.20 2.20 0 1 0 -4.41 0a2.20 2.20 0 1 0 4.41 0M362.9 213.9a2.20 2.20 0 1 0 -4.41 0a2.20 2.20 0 1 0 4.41 0M260.8 278.3a2.20 2.20 0 1 0 -4.41 0a2.20 2.20 0 1 0 4.41 0M192.0 271.8a2.20 2.20 0 1 0 -4.41 0a2.20 2.20 0 1 0 4.41 0M309.8 236.4a2.20 2.20 0 1 0 -4.41 0a2.20 2.20 0 1 0 4.41 0M473.5 236.0a2.20 2.20 0 1 0 -4.41 0a2.20 2.20 0 1 0 4.41 0M347.0 312.7a2.20 2.20 0 1 0 -4.41 0a2.20 2.20 0 1 0 4.41 0M393.1 363.1a2.20 2.20 0 1 0 -4.41 0a2.20 2.20 0 1 0 4.41 0M340.0 205.7a2.20 2.20 0 1 0 -4.41 0a2.20 2.20 0 1 0 4.41 0M265.8 219.4a2.20 2.20 0 1 0 -4.41 0a2.20 2.20 0 1 0 4.41 0M299.8 289.2a2.20 2.20 0 1 0 -4.41 0a2.20 2.20 0 1 0 4.41 0M290.4 380.2a2.20 2.20 0 1 0 -4.41 0a2.20 2.20 0 1 0 4.41 0M247.4 253.2a2.20 2.20 0 1 0 -4.41 0a2.20 2.20 0 1 0 4.41 0M365.6 174.3a2.20 2.20 0 1 0 -4.41 0a2.20 2.20 0 1 0 4.41 0M213.9 283.3a2.20 2.20 0 1 0 -4.41 0a2.20 2.20 0 1 0 4.41 0M375.8 258.1a2.20 2.20 0 1 0 -4.41 0a2.20 2.20 0 1 0 4.41 0M385.9 269.9a2.20 2.20 0 1 0 -4.41 0a2.20 2.20 0 1 0 4.41 0M198.5 332.5a2.20 2.20 0 1 0 -4.41 0a2.20 2.20 0 1 0 4.41 0M369.8 364.8a2.20 2.20 0 1 0 -4.41 0a2.20 2.20 0 1 0 4.41 0M493.1 261.8a2.20 2.20 0 1 0 -4.41 0a2.20 2.20 0 1 0 4.41 0M242.0 221.5a2.20 2.20 0 1 0 -4.41 0a2.20 2.20 0 1 0 4.41 0M371.2 323.5a2.20 2.20 0 1 0 -4.41 0a2.20 2.20 0 1 0 4.41 0M222.3 289.0a2.20 2.20 0 1 0 -4.41 0a2.20 2.20 0 1 0 4.41 0M389.6 230.1a2.20 2.20 0 1 0 -4.41 0a2.20 2.20 0 1 0 4.41 0M315.9 179.6a2.20 2.20 0 1 0 -4.41 0a2.20 2.20 0 1 0 4.41 0M445.9 350.5a2.20 2.20 0 1 0 -4.41 0a2.20 2.20 0 1 0 4.41 0M184.7 296.3a2.20 2.20 0 1 0 -4.41 0a2.20 2.20 0 1 0 4.41 0M293.5 346.5a2.20 2.20 0 1 0 -4.41 0a2.20 2.20 0 1 0 4.41 0M244.3 259.5a2.20 2.20 0 1 0 -4.41 0a2.20 2.20 0 1 0 4.41 0M282.4 312.8a2.20 2.20 0 1 0 -4.41 0a2.20 2.20 0 1 0 4.41 0M237.7 310.2a2.20 2.20 0 1 0 -4.41 0a2.20 2.20 0 1 0 4.41 0M224.7 214.4a2.20 2.20 0 1 0 -4.41 0a2.20 2.20 0 1 0 4.41 0M361.2 222.5a2.20 2.20 0 1 0 -4.41 0a2.20 2.20 0 1 0 4.41 0M209.7 190.9a2.20 2.20 0 1 0 -4.41 0a2.20 2.20 0 1 0 4.41 0M416.1 277.9a2.20 2.20 0 1 0 -4.41 0a2.20 2.20 0 1 0 4.41 0M202.9 332.9a2.20 2.20 0 1 0 -4.41 0a2.20 2.20 0 1 0 4.41 0M321.4 261.4a2.20 2.20 0 1 0 -4.41 0a2.20 2.20 0 1 0 4.41 0M322.0 340.5a2.20 2.20 0 1 0 -4.41 0a2.20 2.20 0 1 0 4.41 0M338.7 280.1a2.20 2.20 0 1 0 -4.41 0a2.20 2.20 0 1 0 4.41 0M258.0 148.5a2.20 2.20 0 1 0 -4.41 0a2.20 2.20 0 1 0 4.41 0M319.2 256.8a2.20 2.20 0 1 0 -4.41 0a2.20 2.20 0 1 0 4.41 0M375.6 254.5a2.20 2.20 0 1 0 -4.41 0a2.20 2.20 0 1 0 4.41 0M183.6 286.2a2.20 2.20 0 1 0 -4.41 0a2.20 2.20 0 1 0 4.41 0M232.2 235.9a2.20 2.20 0 1 0 -4.41 0a2.20 2.20 0 1 0 4.41 0M323.3 258.2a2.20 2.20 0 1 0 -4.41 0a2.20 2.20 0 1 0 4.41 0M247.7 306.6a2.20 2.20 0 1 0 -4.41 0a2.20 2.20 0 1 0 4.41 0M390.2 182.2a2.20 2.20 0 1 0 -4.41 0a2.20 2.20 0 1 0 4.41 0M333.9 225.1a2.20 2.20 0 1 0 -4.41 0a2.20 2.20 0 1 0 4.41 0M287.8 143.7a2.20 2.20 0 1 0 -4.41 0a2.20 2.20 0 1 0 4.41 0M172.4 262.0a2.20 2.20 0 1 0 -4.41 0a2.20 2.20 0 1 0 4.41 0M312.4 238.5a2.20 2.20 0 1 0 -4.41 0a2.20 2.20 0 1 0 4.41 0M284.1 198.5a2.20 2.20 0 1 0 -4.41 0a2.20 2.20 0 1 0 4.41 0M274.6 217.4a2.20 2.20 0 1 0 -4.41 0a2.20 2.20 0 1 0 4.41 0M223.5 326.8a2.20 2.20 0 1 0 -4.41 0a2.20 2.20 0 1 0 4.41 0M324.8 350.1a2.20 2.20 0 1 0 -4.41 0a2.20 2.20 0 1 0 4.41 0M215.2 289.3a2.20 2.20 0 1 0 -4.41 0a2.20 2.20 0 1 0 4.41 0M283.9 131.7a2.20 2.20 0 1 0 -4.41 0a2.20 2.20 0 1 0 4.41 0M348.0 194.6a2.20 2.20 0 1 0 -4.41 0a2.20 2.20 0 1 0 4.41 0M249.7 314.2a2.20 2.20 0 1 0 -4.41 0a2.20 2.20 0 1 0 4.41 0M347.7 234.9a2.20 2.20 0 1 0 -4.41 0a2.20 2.20 0 1 0 4.41 0M188.8 233.5a2.20 2.20 0 1 0 -4.41 0a2.20 2.20 0 1 0 4.41 0M75.4 231.1a2.20 2.20 0 1 0 -4.41 0a2.20 2.20 0 1 0 4.41 0M349.1 319.3a2.20 2.20 0 1 0 -4.41 0a2.20 2.20 0 1 0 4.41 0M372.3 220.9a2.20 2.20 0 1 0 -4.41 0a2.20 2.20 0 1 0 4.41 0M260.1 277.2a2.20 2.20 0 1 0 -4.41 0a2.20 2.20 0 1 0 4.41 0M327.2 310.1a2.20 2.20 0 1 0 -4.41 0a2.20 2.20 0 1 0 4.41 0M220.6 241.3a2.20 2.20 0 1 0 -4.41 0a2.20 2.20 0 1 0 4.41 0M288.4 224.1a2.20 2.20 0 1 0 -4.41 0a2.20 2.20 0 1 0 4.41 0M154.8 317.2a2.20 2.20 0 1 0 -4.41 0a2.20 2.20 0 1 0 4.41 0M407.6 240.8a2.20 2.20 0 1 0 -4.41 0a2.20 2.20 0 1 0 4.41 0M440.6 289.7a2.20 2.20 0 1 0 -4.41 0a2.20 2.20 0 1 0 4.41 0M374.5 334.0a2.20 2.20 0 1 0 -4.41 0a2.20 2.20 0 1 0 4.41 0M302.2 286.7a2.20 2.20 0 1 0 -4.41 0a2.20 2.20 0 1 0 4.41 0M291.5 238.7a2.20 2.20 0 1 0 -4.41 0a2.20 2.20 0 1 0 4.41 0M193.5 304.0a2.20 2.20 0 1 0 -4.41 0a2.20 2.20 0 1 0 4.41 0M347.5 266.5a2.20 2.20 0 1 0 -4.41 0a2.20 2.20 0 1 0 4.41 0M268.3 211.0a2.20 2.20 0 1 0 -4.41 0a2.20 2.20 0 1 0 4.41 0M252.4 298.1a2.20 2.20 0 1 0 -4.41 0a2.20 2.20 0 1 0 4.41 0M172.9 274.2a2.20 2.20 0 1 0 -4.41 0a2.20 2.20 0 1 0 4.41 0M282.2 321.8a2.20 2.20 0 1 0 -4.41 0a2.20 2.20 0 1 0 4.41 0M231.7 296.6a2.20 2.20 0 1 0 -4.41 0a2.20 2.20 0 1 0 4.41 0M277.5 321.5a2.20 2.20 0 1 0 -4.41 0a2.20 2.20 0 1 0 4.41 0M194.7 237.2a2.20 2.20 0 1 0 -4.41 0a2.20 2.20 0 1 0 4.41 0M419.1 239.5a2.20 2.20 0 1 0 -4.41 0a2.20 2.20 0 1 0 4.41 0M294.1 299.8a2.20 2.20 0 1 0 -4.41 0a2.20 2.20 0 1 0 4.41 0M387.7 189.0a2.20 2.20 0 1 0 -4.41 0a2.20 2.20 0 1 0 4.41 0M100.1 224.6a2.20 2.20 0 1 0 -4.41 0a2.20 2.20 0 1 0 4.41 0M249.4 286.2a2.20 2.20 0 1 0 -4.41 0a2.20 2.20 0 1 0 4.41 0M248.7 300.2a2.20 2.20 0 1 0 -4.41 0a2.20 2.20 0 1 0 4.41 0M201.1 256.9a2.20 2.20 0 1 0 -4.41 0a2.20 2.20 0 1 0 4.41 0M441.9 320.0a2.20 2.20 0 1 0 -4.41 0a2.20 2.20 0 1 0 4.41 0M202.6 321.8a2.20 2.20 0 1 0 -4.41 0a2.20 2.20 0 1 0 4.41 0M310.7 246.4a2.20 2.20 0 1 0 -4.41 0a2.20 2.20 0 1 0 4.41 0M359.6 230.0a2.20 2.20 0 1 0 -4.41 0a2.20 2.20 0 1 0 4.41 0M322.0 235.4a2.20 2.20 0 1 0 -4.41 0a2.20 2.20 0 1 0 4.41 0M240.0 225.4a2.20 2.20 0 1 0 -4.41 0a2.20 2.20 0 1 0 4.41 0M375.6 195.8a2.20 2.20 0 1 0 -4.41 0a2.20 2.20 0 1 0 4.41 0M301.9 274.5a2.20 2.20 0 1 0 -4.41 0a2.20 2.20 0 1 0 4.41 0M200.1 271.5a2.20 2.20 0 1 0 -4.41 0a2.20 2.20 0 1 0 4.41 0M180.2 315.1a2.20 2.20 0 1 0 -4.41 0a2.20 2.20 0 1 0 4.41 0M448.5 239.6a2.20 2.20 0 1 0 -4.41 0a2.20 2.20 0 1 0 4.41 0M251.9 284.5a2.20 2.20 0 1 0 -4.41 0a2.20 2.20 0 1 0 4.41 0M160.4 264.8a2.20 2.20 0 1 0 -4.41 0a2.20 2.20 0 1 0 4.41 0M331.9 263.6a2.20 2.20 0 1 0 -4.41 0a2.20 2.20 0 1 0 4.41 0M323.0 182.9a2.20 2.20 0 1 0 -4.41 0a2.20 2.20 0 1 0 4.41 0M171.7 120.3a2.20 2.20 0 1 0 -4.41 0a2.20 2.20 0 1 0 4.41 0M126.5 307.1a2.20 2.20 0 1 0 -4.41 0a2.20 2.20 0 1 0 4.41 0M306.5 382.0a2.20 2.20 0 1 0 -4.41 0a2.20 2.20 0 1 0 4.41 0M395.9 221.1a2.20 2.20 0 1 0 -4.41 0a2.20 2.20 0 1 0 4.41 0M356.5 282.0a2.20 2.20 0 1 0 -4.41 0a2.20 2.20 0 1 0 4.41 0M258.2 151.8a2.20 2.20 0 1 0 -4.41 0a2.20 2.20 0 1 0 4.41 0M223.2 227.5a2.20 2.20 0 1 0 -4.41 0a2.20 2.20 0 1 0 4.41 0M339.7 170.7a2.20 2.20 0 1 0 -4.41 0a2.20 2.20 0 1 0 4.41 0M292.4 142.3a2.20 2.20 0 1 0 -4.41 0a2.20 2.20 0 1 0 4.41 0M336.7 249.3a2.20 2.20 0 1 0 -4.41 0a2.20 2.20 0 1 0 4.41 0M287.1 337.5a2.20 2.20 0 1 0 -4.41 0a2.20 2.20 0 1 0 4.41 0M384.2 256.8a2.20 2.20 0 1 0 -4.41 0a2.20 2.20 0 1 0 4.41 0M253.3 253.9a2.20 2.20 0 1 0 -4.41 0a2.20 2.20 0 1 0 4.41 0M263.0 292.3a2.20 2.20 0 1 0 -4.41 0a2.20 2.20 0 1 0 4.41 0M362.4 219.5a2.20 2.20 0 1 0 -4.41 0a2.20 2.20 0 1 0 4.41 0M361.4 372.4a2.20 2.20 0 1 0 -4.41 0a2.20 2.20 0 1 0 4.41 0M156.0 288.9a2.20 2.20 0 1 0 -4.41 0a2.20 2.20 0 1 0 4.41 0M323.8 175.9a2.20 2.20 0 1 0 -4.41 0a2.20 2.20 0 1 0 4.41 0M364.6 273.1a2.20 2.20 0 1 0 -4.41 0a2.20 2.20 0 1 0 4.41 0M162.5 171.2a2.20 2.20 0 1 0 -4.41 0a2.20 2.20 0 1 0 4.41 0M327.4 270.2a2.20 2.20 0 1 0 -4.41 0a2.20 2.20 0 1 0 4.41 0M237.3 349.4a2.20 2.20 0 1 0 -4.41 0a2.20 2.20 0 1 0 4.41 0M375.8 140.4a2.20 2.20 0 1 0 -4.41 0a2.20 2.20 0 1 0 4.41 0M351.4 204.3a2.20 2.20 0 1 0 -4.41 0a2.20 2.20 0 1 0 4.41 0M342.3 309.1a2.20 2.20 0 1 0 -4.41 0a2.20 2.20 0 1 0 4.41 0M315.7 248.3a2.20 2.20 0 1 0 -4.41 0a2.20 2.20 0 1 0 4.41 0M357.8 306.5a2.20 2.20 0 1 0 -4.41 0a2.20 2.20 0 1 0 4.41 0M401.1 254.5a2.20 2.20 0 1 0 -4.41 0a2.20 2.20 0 1 0 4.41 0M467.3 223.8a2.20 2.20 0 1 0 -4.41 0a2.20 2.20 0 1 0 4.41 0M283.8 306.8a2.20 2.20 0 1 0 -4.41 0a2.20 2.20 0 1 0 4.41 0M113.8 337.4a2.20 2.20 0 1 0 -4.41 0a2.20 2.20 0 1 0 4.41 0M309.6 287.3a2.20 2.20 0 1 0 -4.41 0a2.20 2.20 0 1 0 4.41 0M312.5 328.7a2.20 2.20 0 1 0 -4.41 0a2.20 2.20 0 1 0 4.41 0M288.7 250.8a2.20 2.20 0 1 0 -4.41 0a2.20 2.20 0 1 0 4.41 0M343.3 281.8a2.20 2.20 0 1 0 -4.41 0a2.20 2.20 0 1 0 4.41 0M365.3 371.6a2.20 2.20 0 1 0 -4.41 0a2.20 2.20 0 1 0 4.41 0M238.4 359.7a2.20 2.20 0 1 0 -4.41 0a2.20 2.20 0 1 0 4.41 0M261.9 155.1a2.20 2.20 0 1 0 -4.41 0a2.20 2.20 0 1 0 4.41 0M343.8 251.4a2.20 2.20 0 1 0 -4.41 0a2.20 2.20 0 1 0 4.41 0M240.4 184.0a2.20 2.20 0 1 0 -4.41 0a2.20 2.20 0 1 0 4.41 0M289.2 179.0a2.20 2.20 0 1 0 -4.41 0a2.20 2.20 0 1 0 4.41 0M122.1 263.3a2.20 2.20 0 1 0 -4.41 0a2.20 2.20 0 1 0 4.41 0M206.0 311.8a2.20 2.20 0 1 0 -4.41 0a2.20 2.20 0 1 0 4.41 0M207.3 319.5a2.20 2.20 0 1 0 -4.41 0a2.20 2.20 0 1 0 4.41 0M223.8 216.4a2.20 2.20 0 1 0 -4.41 0a2.20 2.20 0 1 0 4.41 0M241.4 282.1a2.20 2.20 0 1 0 -4.41 0a2.20 2.20 0 1 0 4.41 0M326.6 217.7a2.20 2.20 0 1 0 -4.41 0a2.20 2.20 0 1 0 4.41 0M372.3 276.5a2.20 2.20 0 1 0 -4.41 0a2.20 2.20 0 1 0 4.41 0M258.7 285.3a2.20 2.20 0 1 0 -4.41 0a2.20 2.20 0 1 0 4.41 0M237.1 222.0a2.20 2.20 0 1 0 -4.41 0a2.20 2.20 0 1 0 4.41 0M206.6 357.7a2.20 2.20 0 1 0 -4.41 0a2.20 2.20 0 1 0 4.41 0M275.6 168.3a2.20 2.20 0 1 0 -4.41 0a2.20 2.20 0 1 0 4.41 0M268.5 236.0a2.20 2.20 0 1 0 -4.41 0a2.20 2.20 0 1 0 4.41 0M356.6 221.4a2.20 2.20 0 1 0 -4.41 0a2.20 2.20 0 1 0 4.41 0M255.6 260.7a2.20 2.20 0 1 0 -4.41 0a2.20 2.20 0 1 0 4.41 0M152.5 320.6a2.20 2.20 0 1 0 -4.41 0a2.20 2.20 0 1 0 4.41 0M280.1 358.3a2.20 2.20 0 1 0 -4.41 0a2.20 2.20 0 1 0 4.41 0M387.4 282.2a2.20 2.20 0 1 0 -4.41 0a2.20 2.20 0 1 0 4.41 0M379.6 306.6a2.20 2.20 0 1 0 -4.41 0a2.20 2.20 0 1 0 4.41 0M239.5 291.9a2.20 2.20 0 1 0 -4.41 0a2.20 2.20 0 1 0 4.41 0M181.5 335.2a2.20 2.20 0 1 0 -4.41 0a2.20 2.20 0 1 0 4.41 0M517.7 194.6a2.20 2.20 0 1 0 -4.41 0a2.20 2.20 0 1 0 4.41 0M273.7 318.8a2.20 2.20 0 1 0 -4.41 0a2.20 2.20 0 1 0 4.41 0M304.7 225.1a2.20 2.20 0 1 0 -4.41 0a2.20 2.20 0 1 0 4.41 0M338.2 318.6a2.20 2.20 0 1 0 -4.41 0a2.20 2.20 0 1 0 4.41 0M189.7 262.7a2.20 2.20 0 1 0 -4.41 0a2.20 2.20 0 1 0 4.41 0M238.5 136.8a2.20 2.20 0 1 0 -4.41 0a2.20 2.20 0 1 0 4.41 0M184.8 262.5a2.20 2.20 0 1 0 -4.41 0a2.20 2.20 0 1 0 4.41 0M226.1 293.8a2.20 2.20 0 1 0 -4.41 0a2.20 2.20 0 1 0 4.41 0M314.4 231.9a2.20 2.20 0 1 0 -4.41 0a2.20 2.20 0 1 0 4.41 0M177.9 202.8a2.20 2.20 0 1 0 -4.41 0a2.20 2.20 0 1 0 4.41 0M364.3 253.0a2.20 2.20 0 1 0 -4.41 0a2.20 2.20 0 1 0 4.41 0M335.6 253.6a2.20 2.20 0 1 0 -4.41 0a2.20 2.20 0 1 0 4.41 0M241.5 254.3a2.20 2.20 0 1 0 -4.41 0a2.20 2.20 0 1 0 4.41 0M330.8 223.3a2.20 2.20 0 1 0 -4.41 0a2.20 2.20 0 1 0 4.41 0M356.2 251.4a2.20 2.20 0 1 0 -4.41 0a2.20 2.20 0 1 0 4.41 0M404.6 330.3a2.20 2.20 0 1 0 -4.41 0a2.20 2.20 0 1 0 4.41 0M282.3 286.5a2.20 2.20 0 1 0 -4.41 0a2.20 2.20 0 1 0 4.41 0M291.9 261.2a2.20 2.20 0 1 0 -4.41 0a2.20 2.20 0 1 0 4.41 0M286.0 163.1a2.20 2.20 0 1 0 -4.41 0a2.20 2.20 0 1 0 4.41 0M397.5 240.1a2.20 2.20 0 1 0 -4.41 0a2.20 2.20 0 1 0 4.41 0M406.8 291.2a2.20 2.20 0 1 0 -4.41 0a2.20 2.20 0 1 0 4.41 0M355.0 241.3a2.20 2.20 0 1 0 -4.41 0a2.20 2.20 0 1 0 4.41 0M268.0 204.3a2.20 2.20 0 1 0 -4.41 0a2.20 2.20 0 1 0 4.41 0M336.0 329.9a2.20 2.20 0 1 0 -4.41 0a2.20 2.20 0 1 0 4.41 0M334.7 188.7a2.20 2.20 0 1 0 -4.41 0a2.20 2.20 0 1 0 4.41 0M235.2 299.4a2.20 2.20 0 1 0 -4.41 0a2.20 2.20 0 1 0 4.41 0M144.1 234.6a2.20 2.20 0 1 0 -4.41 0a2.20 2.20 0 1 0 4.41 0M352.9 317.4a2.20 2.20 0 1 0 -4.41 0a2.20 2.20 0 1 0 4.41 0M193.6 126.8a2.20 2.20 0 1 0 -4.41 0a2.20 2.20 0 1 0 4.41 0M315.0 228.9a2.20 2.20 0 1 0 -4.41 0a2.20 2.20 0 1 0 4.41 0M336.3 314.4a2.20 2.20 0 1 0 -4.41 0a2.20 2.20 0 1 0 4.41 0M356.4 186.3a2.20 2.20 0 1 0 -4.41 0a2.20 2.20 0 1 0 4.41 0M300.9 264.9a2.20 2.20 0 1 0 -4.41 0a2.20 2.20 0 1 0 4.41 0M224.8 302.8a2.20 2.20 0 1 0 -4.41 0a2.20 2.20 0 1 0 4.41 0M363.0 232.5a2.20 2.20 0 1 0 -4.41 0a2.20 2.20 0 1 0 4.41 0M436.5 229.2a2.20 2.20 0 1 0 -4.41 0a2.20 2.20 0 1 0 4.41 0M381.8 244.0a2.20 2.20 0 1 0 -4.41 0a2.20 2.20 0 1 0 4.41 0M159.9 203.2a2.20 2.20 0 1 0 -4.41 0a2.20 2.20 0 1 0 4.41 0M409.0 218.8a2.20 2.20 0 1 0 -4.41 0a2.20 2.20 0 1 0 4.41 0M307.8 263.4a2.20 2.20 0 1 0 -4.41 0a2.20 2.20 0 1 0 4.41 0M340.4 209.0a2.20 2.20 0 1 0 -4.41 0a2.20 2.20 0 1 0 4.41 0M356.9 283.2a2.20 2.20 0 1 0 -4.41 0a2.20 2.20 0 1 0 4.41 0M302.4 245.7a2.20 2.20 0 1 0 -4.41 0a2.20 2.20 0 1 0 4.41 0M301.0 316.8a2.20 2.20 0 1 0 -4.41 0a2.20 2.20 0 1 0 4.41 0M395.8 219.6a2.20 2.20 0 1 0 -4.41 0a2.20 2.20 0 1 0 4.41 0M348.9 241.9a2.20 2.20 0 1 0 -4.41 0a2.20 2.20 0 1 0 4.41 0M366.0 327.8a2.20 2.20 0 1 0 -4.41 0a2.20 2.20 0 1 0 4.41 0M474.3 285.8a2.20 2.20 0 1 0 -4.41 0a2.20 2.20 0 1 0 4.41 0M332.8 308.0a2.20 2.20 0 1 0 -4.41 0a2.20 2.20 0 1 0 4.41 0M332.8 219.7a2.20 2.20 0 1 0 -4.41 0a2.20 2.20 0 1 0 4.41 0M133.9 136.6a2.20 2.20 0 1 0 -4.41 0a2.20 2.20 0 1 0 4.41 0M498.5 256.9a2.20 2.20 0 1 0 -4.41 0a2.20 2.20 0 1 0 4.41 0M244.1 300.1a2.20 2.20 0 1 0 -4.41 0a2.20 2.20 0 1 0 4.41 0M477.0 247.0a2.20 2.20 0 1 0 -4.41 0a2.20 2.20 0 1 0 4.41 0M330.8 181.5a2.20 2.20 0 1 0 -4.41 0a2.20 2.20 0 1 0 4.41 0M432.9 206.3a2.20 2.20 0 1 0 -4.41 0a2.20 2.20 0 1 0 4.41 0M274.8 342.2a2.20 2.20 0 1 0 -4.41 0a2.20 2.20 0 1 0 4.41 0M324.2 194.1a2.20 2.20 0 1 0 -4.41 0a2.20 2.20 0 1 0 4.41 0M318.8 152.8a2.20 2.20 0 1 0 -4.41 0a2.20 2.20 0 1 0 4.41 0M275.8 239.8a2.20 2.20 0 1 0 -4.41 0a2.20 2.20 0 1 0 4.41 0M287.3 229.9a2.20 2.20 0 1 0 -4.41 0a2.20 2.20 0 1 0 4.41 0M365.1 226.8a2.20 2.20 0 1 0 -4.41 0a2.20 2.20 0 1 0 4.41 0M300.7 294.8a2.20 2.20 0 1 0 -4.41 0a2.20 2.20 0 1 0 4.41 0M145.2 199.5a2.20 2.20 0 1 0 -4.41 0a2.20 2.20 0 1 0 4.41 0M282.1 296.4a2.20 2.20 0 1 0 -4.41 0a2.20 2.20 0 1 0 4.41 0M350.0 371.9a2.20 2.20 0 1 0 -4.41 0a2.20 2.20 0 1 0 4.41 0M340.3 237.9a2.20 2.20 0 1 0 -4.41 0a2.20 2.20 0 1 0 4.41 0M355.8 243.8a2.20 2.20 0 1 0 -4.41 0a2.20 2.20 0 1 0 4.41 0M158.2 209.1a2.20 2.20 0 1 0 -4.41 0a2.20 2.20 0 1 0 4.41 0M336.2 277.8a2.20 2.20 0 1 0 -4.41 0a2.20 2.20 0 1 0 4.41 0M373.7 255.5a2.20 2.20 0 1 0 -4.41 0a2.20 2.20 0 1 0 4.41 0M410.9 279.2a2.20 2.20 0 1 0 -4.41 0a2.20 2.20 0 1 0 4.41 0M272.3 235.9a2.20 2.20 0 1 0 -4.41 0a2.20 2.20 0 1 0 4.41 0M283.4 161.9a2.20 2.20 0 1 0 -4.41 0a2.20 2.20 0 1 0 4.41 0M422.2 258.1a2.20 2.20 0 1 0 -4.41 0a2.20 2.20 0 1 0 4.41 0M145.6 309.4a2.20 2.20 0 1 0 -4.41 0a2.20 2.20 0 1 0 4.41 0M258.6 352.5a2.20 2.20 0 1 0 -4.41 0a2.20 2.20 0 1 0 4.41 0M333.8 215.9a2.20 2.20 0 1 0 -4.41 0a2.20 2.20 0 1 0 4.41 0M165.3 223.2a2.20 2.20 0 1 0 -4.41 0a2.20 2.20 0 1 0 4.41 0M323.8 208.5a2.20 2.20 0 1 0 -4.41 0a2.20 2.20 0 1 0 4.41 0M465.5 292.5a2.20 2.20 0 1 0 -4.41 0a2.20 2.20 0 1 0 4.41 0M310.1 245.4a2.20 2.20 0 1 0 -4.41 0a2.20 2.20 0 1 0 4.41 0M259.1 318.5a2.20 2.20 0 1 0 -4.41 0a2.20 2.20 0 1 0 4.41 0M321.8 276.6a2.20 2.20 0 1 0 -4.41 0a2.20 2.20 0 1 0 4.41 0M269.1 314.0a2.20 2.20 0 1 0 -4.41 0a2.20 2.20 0 1 0 4.41 0M357.0 235.9a2.20 2.20 0 1 0 -4.41 0a2.20 2.20 0 1 0 4.41 0M381.8 306.2a2.20 2.20 0 1 0 -4.41 0a2.20 2.20 0 1 0 4.41 0M284.8 122.4a2.20 2.20 0 1 0 -4.41 0a2.20 2.20 0 1 0 4.41 0M224.6 257.4a2.20 2.20 0 1 0 -4.41 0a2.20 2.20 0 1 0 4.41 0M208.1 290.5a2.20 2.20 0 1 0 -4.41 0a2.20 2.20 0 1 0 4.41 0M255.2 313.1a2.20 2.20 0 1 0 -4.41 0a2.20 2.20 0 1 0 4.41 0M380.1 248.9a2.20 2.20 0 1 0 -4.41 0a2.20 2.20 0 1 0 4.41 0M121.6 281.0a2.20 2.20 0 1 0 -4.41 0a2.20 2.20 0 1 0 4.41 0M159.5 269.3a2.20 2.20 0 1 0 -4.41 0a2.20 2.20 0 1 0 4.41 0M263.8 261.3a2.20 2.20 0 1 0 -4.41 0a2.20 2.20 0 1 0 4.41 0M315.1 171.1a2.20 2.20 0 1 0 -4.41 0a2.20 2.20 0 1 0 4.41 0M224.6 355.1a2.20 2.20 0 1 0 -4.41 0a2.20 2.20 0 1 0 4.41 0M378.0 172.0a2.20 2.20 0 1 0 -4.41 0a2.20 2.20 0 1 0 4.41 0M324.8 276.3a2.20 2.20 0 1 0 -4.41 0a2.20 2.20 0 1 0 4.41 0M301.3 282.1a2.20 2.20 0 1 0 -4.41 0a2.20 2.20 0 1 0 4.41 0M361.2 314.7a2.20 2.20 0 1 0 -4.41 0a2.20 2.20 0 1 0 4.41 0M333.5 262.2a2.20 2.20 0 1 0 -4.41 0a2.20 2.20 0 1 0 4.41 0M270.0 296.4a2.20 2.20 0 1 0 -4.41 0a2.20 2.20 0 1 0 4.41 0M309.2 257.9a2.20 2.20 0 1 0 -4.41 0a2.20 2.20 0 1 0 4.41 0M367.8 344.0a2.20 2.20 0 1 0 -4.41 0a2.20 2.20 0 1 0 4.41 0M313.1 303.9a2.20 2.20 0 1 0 -4.41 0a2.20 2.20 0 1 0 4.41 0M248.9 310.0a2.20 2.20 0 1 0 -4.41 0a2.20 2.20 0 1 0 4.41 0M358.0 335.8a2.20 2.20 0 1 0 -4.41 0a2.20 2.20 0 1 0 4.41 0M374.5 268.7a2.20 2.20 0 1 0 -4.41 0a2.20 2.20 0 1 0 4.41 0M332.6 240.9a2.20 2.20 0 1 0 -4.41 0a2.20 2.20 0 1 0 4.41 0M315.5 209.9a2.20 2.20 0 1 0 -4.41 0a2.20 2.20 0 1 0 4.41 0M286.5 138.8a2.20 2.20 0 1 0 -4.41 0a2.20 2.20 0 1 0 4.41 0M490.3 178.3a2.20 2.20 0 1 0 -4.41 0a2.20 2.20 0 1 0 4.41 0M325.4 277.7a2.20 2.20 0 1 0 -4.41 0a2.20 2.20 0 1 0 4.41 0M305.2 158.9a2.20 2.20 0 1 0 -4.41 0a2.20 2.20 0 1 0 4.41 0M114.4 330.5a2.20 2.20 0 1 0 -4.41 0a2.20 2.20 0 1 0 4.41 0M168.9 239.0a2.20 2.20 0 1 0 -4.41 0a2.20 2.20 0 1 0 4.41 0M302.3 243.5a2.20 2.20 0 1 0 -4.41 0a2.20 2.20 0 1 0 4.41 0M329.6 201.6a2.20 2.20 0 1 0 -4.41 0a2.20 2.20 0 1 0 4.41 0M338.9 210.4a2.20 2.20 0 1 0 -4.41 0a2.20 2.20 0 1 0 4.41 0M350.2 311.9a2.20 2.20 0 1 0 -4.41 0a2.20 2.20 0 1 0 4.41 0M265.0 253.3a2.20 2.20 0 1 0 -4.41 0a2.20 2.20 0 1 0 4.41 0M417.4 229.8a2.20 2.20 0 1 0 -4.41 0a2.20 2.20 0 1 0 4.41 0M220.8 241.6a2.20 2.20 0 1 0 -4.41 0a2.20 2.20 0 1 0 4.41 0M211.0 216.6a2.20 2.20 0 1 0 -4.41 0a2.20 2.20 0 1 0 4.41 0M201.7 191.3a2.20 2.20 0 1 0 -4.41 0a2.20 2.20 0 1 0 4.41 0M354.5 153.7a2.20 2.20 0 1 0 -4.41 0a2.20 2.20 0 1 0 4.41 0M301.8 273.1a2.20 2.20 0 1 0 -4.41 0a2.20 2.20 0 1 0 4.41 0M378.7 235.3a2.20 2.20 0 1 0 -4.41 0a2.20 2.20 0 1 0 4.41 0M262.2 289.6a2.20 2.20 0 1 0 -4.41 0a2.20 2.20 0 1 0 4.41 0M246.3 214.7a2.20 2.20 0 1 0 -4.41 0a2.20 2.20 0 1 0 4.41 0M281.8 181.7a2.20 2.20 0 1 0 -4.41 0a2.20 2.20 0 1 0 4.41 0M138.7 276.9a2.20 2.20 0 1 0 -4.41 0a2.20 2.20 0 1 0 4.41 0M210.4 169.7a2.20 2.20 0 1 0 -4.41 0a2.20 2.20 0 1 0 4.41 0M178.4 273.2a2.20 2.20 0 1 0 -4.41 0a2.20 2.20 0 1 0 4.41 0M388.6 201.8a2.20 2.20 0 1 0 -4.41 0a2.20 2.20 0 1 0 4.41 0M254.1 299.2a2.20 2.20 0 1 0 -4.41 0a2.20 2.20 0 1 0 4.41 0M371.0 359.1a2.20 2.20 0 1 0 -4.41 0a2.20 2.20 0 1 0 4.41 0M434.4 225.4a2.20 2.20 0 1 0 -4.41 0a2.20 2.20 0 1 0 4.41 0M282.1 263.5a2.20 2.20 0 1 0 -4.41 0a2.20 2.20 0 1 0 4.41 0M316.9 368.3a2.20 2.20 0 1 0 -4.41 0a2.20 2.20 0 1 0 4.41 0M172.0 324.3a2.20 2.20 0 1 0 -4.41 0a2.20 2.20 0 1 0 4.41 0M234.1 342.7a2.20 2.20 0 1 0 -4.41 0a2.20 2.20 0 1 0 4.41 0M314.0 315.9a2.20 2.20 0 1 0 -4.41 0a2.20 2.20 0 1 0 4.41 0M338.0 320.6a2.20 2.20 0 1 0 -4.41 0a2.20 2.20 0 1 0 4.41 0M235.9 263.8a2.20 2.20 0 1 0 -4.41 0a2.20 2.20 0 1 0 4.41 0M511.5 287.4a2.20 2.20 0 1 0 -4.41 0a2.20 2.20 0 1 0 4.41 0M277.1 182.4a2.20 2.20 0 1 0 -4.41 0a2.20 2.20 0 1 0 4.41 0M314.0 236.3a2.20 2.20 0 1 0 -4.41 0a2.20 2.20 0 1 0 4.41 0M356.5 344.0a2.20 2.20 0 1 0 -4.41 0a2.20 2.20 0 1 0 4.41 0M305.6 336.7a2.20 2.20 0 1 0 -4.41 0a2.20 2.20 0 1 0 4.41 0M258.0 239.3a2.20 2.20 0 1 0 -4.41 0a2.20 2.20 0 1 0 4.41 0M373.7 322.0a2.20 2.20 0 1 0 -4.41 0a2.20 2.20 0 1 0 4.41 0M420.1 223.6a2.20 2.20 0 1 0 -4.41 0a2.20 2.20 0 1 0 4.41 0M284.6 219.4a2.20 2.20 0 1 0 -4.41 0a2.20 2.20 0 1 0 4.41 0M363.0 155.6a2.20 2.20 0 1 0 -4.41 0a2.20 2.20 0 1 0 4.41 0M282.1 221.5a2.20 2.20 0 1 0 -4.41 0a2.20 2.20 0 1 0 4.41 0M381.1 317.5a2.20 2.20 0 1 0 -4.41 0a2.20 2.20 0 1 0 4.41 0M187.3 209.6a2.20 2.20 0 1 0 -4.41 0a2.20 2.20 0 1 0 4.41 0M498.6 199.3a2.20 2.20 0 1 0 -4.41 0a2.20 2.20 0 1 0 4.41 0M247.0 259.5a2.20 2.20 0 1 0 -4.41 0a2.20 2.20 0 1 0 4.41 0M180.5 252.7a2.20 2.20 0 1 0 -4.41 0a2.20 2.20 0 1 0 4.41 0M289.1 300.5a2.20 2.20 0 1 0 -4.41 0a2.20 2.20 0 1 0 4.41 0M306.7 283.2a2.20 2.20 0 1 0 -4.41 0a2.20 2.20 0 1 0 4.41 0M440.2 364.2a2.20 2.20 0 1 0 -4.41 0a2.20 2.20 0 1 0 4.41 0M384.5 279.1a2.20 2.20 0 1 0 -4.41 0a2.20 2.20 0 1 0 4.41 0M298.8 235.8a2.20 2.20 0 1 0 -4.41 0a2.20 2.20 0 1 0 4.41 0M169.3 179.6a2.20 2.20 0 1 0 -4.41 0a2.20 2.20 0 1 0 4.41 0M222.8 265.9a2.20 2.20 0 1 0 -4.41 0a2.20 2.20 0 1 0 4.41 0M293.9 218.0a2.20 2.20 0 1 0 -4.41 0a2.20 2.20 0 1 0 4.41 0M515.9 309.9a2.20 2.20 0 1 0 -4.41 0a2.20 2.20 0 1 0 4.41 0M156.2 101.9a2.20 2.20 0 1 0 -4.41 0a2.20 2.20 0 1 0 4.41 0M408.4 283.4a2.20 2.20 0 1 0 -4.41 0a2.20 2.20 0 1 0 4.41 0M236.5 208.0a2.20 2.20 0 1 0 -4.41 0a2.20 2.20 0 1 0 4.41 0M428.4 328.6a2.20 2.20 0 1 0 -4.41 0a2.20 2.20 0 1 0 4.41 0M213.8 264.4a2.20 2.20 0 1 0 -4.41 0a2.20 2.20 0 1 0 4.41 0M294.4 252.6a2.20 2.20 0 1 0 -4.41 0a2.20 2.20 0 1 0 4.41 0M190.9 309.4a2.20 2.20 0 1 0 -4.41 0a2.20 2.20 0 1 0 4.41 0M357.6 168.0a2.20 2.20 0 1 0 -4.41 0a2.20 2.20 0 1 0 4.41 0M429.0 287.9a2.20 2.20 0 1 0 -4.41 0a2.20 2.20 0 1 0 4.41 0M471.0 262.6a2.20 2.20 0 1 0 -4.41 0a2.20 2.20 0 1 0 4.41 0M356.4 229.8a2.20 2.20 0 1 0 -4.41 0a2.20 2.20 0 1 0 4.41 0M438.1 139.2a2.20 2.20 0 1 0 -4.41 0a2.20 2.20 0 1 0 4.41 0M389.1 232.4a2.20 2.20 0 1 0 -4.41 0a2.20 2.20 0 1 0 4.41 0M307.7 185.0a2.20 2.20 0 1 0 -4.41 0a2.20 2.20 0 1 0 4.41 0M337.7 221.0a2.20 2.20 0 1 0 -4.41 0a2.20 2.20 0 1 0 4.41 0M229.3 172.3a2.20 2.20 0 1 0 -4.41 0a2.20 2.20 0 1 0 4.41 0M301.8 102.4a2.20 2.20 0 1 0 -4.41 0a2.20 2.20 0 1 0 4.41 0M402.2 193.6a2.20 2.20 0 1 0 -4.41 0a2.20 2.20 0 1 0 4.41 0M333.2 278.4a2.20 2.20 0 1 0 -4.41 0a2.20 2.20 0 1 0 4.41 0M353.6 285.5a2.20 2.20 0 1 0 -4.41 0a2.20 2.20 0 1 0 4.41 0M224.7 212.7a2.20 2.20 0 1 0 -4.41 0a2.20 2.20 0 1 0 4.41 0M231.9 270.3a2.20 2.20 0 1 0 -4.41 0a2.20 2.20 0 1 0 4.41 0M243.5 316.9a2.20 2.20 0 1 0 -4.41 0a2.20 2.20 0 1 0 4.41 0M345.9 291.4a2.20 2.20 0 1 0 -4.41 0a2.20 2.20 0 1 0 4.41 0M204.0 314.1a2.20 2.20 0 1 0 -4.41 0a2.20 2.20 0 1 0 4.41 0M363.4 240.9a2.20 2.20 0 1 0 -4.41 0a2.20 2.20 0 1 0 4.41 0M190.6 248.0a2.20 2.20 0 1 0 -4.41 0a2.20 2.20 0 1 0 4.41 0M432.9 250.6a2.20 2.20 0 1 0 -4.41 0a2.20 2.20 0 1 0 4.41 0M316.8 311.7a2.20 2.20 0 1 0 -4.41 0a2.20 2.20 0 1 0 4.41 0M238.5 201.2a2.20 2.20 0 1 0 -4.41 0a2.20 2.20 0 1 0 4.41 0M327.5 256.2a2.20 2.20 0 1 0 -4.41 0a2.20 2.20 0 1 0 4.41 0M277.6 190.7a2.20 2.20 0 1 0 -4.41 0a2.20 2.20 0 1 0 4.41 0M328.7 190.0a2.20 2.20 0 1 0 -4.41 0a2.20 2.20 0 1 0 4.41 0M301.7 227.6a2.20 2.20 0 1 0 -4.41 0a2.20 2.20 0 1 0 4.41 0M237.3 261.3a2.20 2.20 0 1 0 -4.41 0a2.20 2.20 0 1 0 4.41 0M238.3 261.6a2.20 2.20 0 1 0 -4.41 0a2.20 2.20 0 1 0 4.41 0M332.5 260.8a2.20 2.20 0 1 0 -4.41 0a2.20 2.20 0 1 0 4.41 0M422.3 298.5a2.20 2.20 0 1 0 -4.41 0a2.20 2.20 0 1 0 4.41 0M399.2 244.3a2.20 2.20 0 1 0 -4.41 0a2.20 2.20 0 1 0 4.41 0M254.6 313.0a2.20 2.20 0 1 0 -4.41 0a2.20 2.20 0 1 0 4.41 0M382.8 160.6a2.20 2.20 0 1 0 -4.41 0a2.20 2.20 0 1 0 4.41 0M291.2 160.2a2.20 2.20 0 1 0 -4.41 0a2.20 2.20 0 1 0 4.41 0M315.7 371.0a2.20 2.20 0 1 0 -4.41 0a2.20 2.20 0 1 0 4.41 0M330.0 326.0a2.20 2.20 0 1 0 -4.41 0a2.20 2.20 0 1 0 4.41 0M514.7 140.6a2.20 2.20 0 1 0 -4.41 0a2.20 2.20 0 1 0 4.41 0M201.4 232.0a2.20 2.20 0 1 0 -4.41 0a2.20 2.20 0 1 0 4.41 0M320.3 376.1a2.20 2.20 0 1 0 -4.41 0a2.20 2.20 0 1 0 4.41 0M148.2 191.7a2.20 2.20 0 1 0 -4.41 0a2.20 2.20 0 1 0 4.41 0M364.1 150.2a2.20 2.20 0 1 0 -4.41 0a2.20 2.20 0 1 0 4.41 0M393.0 205.0a2.20 2.20 0 1 0 -4.41 0a2.20 2.20 0 1 0 4.41 0M427.2 219.5a2.20 2.20 0 1 0 -4.41 0a2.20 2.20 0 1 0 4.41 0M153.6 354.3a2.20 2.20 0 1 0 -4.41 0a2.20 2.20 0 1 0 4.41 0M339.4 291.7a2.20 2.20 0 1 0 -4.41 0a2.20 2.20 0 1 0 4.41 0M436.0 306.8a2.20 2.20 0 1 0 -4.41 0a2.20 2.20 0 1 0 4.41 0M253.4 175.9a2.20 2.20 0 1 0 -4.41 0a2.20 2.20 0 1 0 4.41 0M286.5 254.1a2.20 2.20 0 1 0 -4.41 0a2.20 2.20 0 1 0 4.41 0M307.6 261.1a2.20 2.20 0 1 0 -4.41 0a2.20 2.20 0 1 0 4.41 0M317.9 323.7a2.20 2.20 0 1 0 -4.41 0a2.20 2.20 0 1 0 4.41 0M360.9 173.4a2.20 2.20 0 1 0 -4.41 0a2.20 2.20 0 1 0 4.41 0M388.6 263.6a2.20 2.20 0 1 0 -4.41 0a2.20 2.20 0 1 0 4.41 0M301.6 352.4a2.20 2.20 0 1 0 -4.41 0a2.20 2.20 0 1 0 4.41 0M333.7 245.7a2.20 2.20 0 1 0 -4.41 0a2.20 2.20 0 1 0 4.41 0M506.4 212.0a2.20 2.20 0 1 0 -4.41 0a2.20 2.20 0 1 0 4.41 0M341.1 254.4a2.20 2.20 0 1 0 -4.41 0a2.20 2.20 0 1 0 4.41 0M311.3 218.7a2.20 2.20 0 1 0 -4.41 0a2.20 2.20 0 1 0 4.41 0M176.5 112.6a2.20 2.20 0 1 0 -4.41 0a2.20 2.20 0 1 0 4.41 0M298.4 337.9a2.20 2.20 0 1 0 -4.41 0a2.20 2.20 0 1 0 4.41 0M264.8 341.1a2.20 2.20 0 1 0 -4.41 0a2.20 2.20 0 1 0 4.41 0M309.1 340.3a2.20 2.20 0 1 0 -4.41 0a2.20 2.20 0 1 0 4.41 0M247.6 162.0a2.20 2.20 0 1 0 -4.41 0a2.20 2.20 0 1 0 4.41 0M247.0 257.4a2.20 2.20 0 1 0 -4.41 0a2.20 2.20 0 1 0 4.41 0M236.6 300.9a2.20 2.20 0 1 0 -4.41 0a2.20 2.20 0 1 0 4.41 0M269.9 209.0a2.20 2.20 0 1 0 -4.41 0a2.20 2.20 0 1 0 4.41 0M411.0 224.6a2.20 2.20 0 1 0 -4.41 0a2.20 2.20 0 1 0 4.41 0M379.1 247.7a2.20 2.20 0 1 0 -4.41 0a2.20 2.20 0 1 0 4.41 0M285.5 208.0a2.20 2.20 0 1 0 -4.41 0a2.20 2.20 0 1 0 4.41 0M147.0 306.1a2.20 2.20 0 1 0 -4.41 0a2.20 2.20 0 1 0 4.41 0M213.4 242.4a2.20 2.20 0 1 0 -4.41 0a2.20 2.20 0 1 0 4.41 0M248.8 239.4a2.20 2.20 0 1 0 -4.41 0a2.20 2.20 0 1 0 4.41 0M325.8 196.5a2.20 2.20 0 1 0 -4.41 0a2.20 2.20 0 1 0 4.41 0M243.8 246.3a2.20 2.20 0 1 0 -4.41 0a2.20 2.20 0 1 0 4.41 0M468.1 291.4a2.20 2.20 0 1 0 -4.41 0a2.20 2.20 0 1 0 4.41 0M258.3 287.2a2.20 2.20 0 1 0 -4.41 0a2.20 2.20 0 1 0 4.41 0M200.5 345.6a2.20 2.20 0 1 0 -4.41 0a2.20 2.20 0 1 0 4.41 0M269.3 278.2a2.20 2.20 0 1 0 -4.41 0a2.20 2.20 0 1 0 4.41 0M223.6 173.3a2.20 2.20 0 1 0 -4.41 0a2.20 2.20 0 1 0 4.41 0M327.1 342.0a2.20 2.20 0 1 0 -4.41 0a2.20 2.20 0 1 0 4.41 0M305.6 308.0a2.20 2.20 0 1 0 -4.41 0a2.20 2.20 0 1 0 4.41 0M319.0 267.7a2.20 2.20 0 1 0 -4.41 0a2.20 2.20 0 1 0 4.41 0M184.1 319.8a2.20 2.20 0 1 0 -4.41 0a2.20 2.20 0 1 0 4.41 0M297.8 250.5a2.20 2.20 0 1 0 -4.41 0a2.20 2.20 0 1 0 4.41 0M336.1 309.5a2.20 2.20 0 1 0 -4.41 0a2.20 2.20 0 1 0 4.41 0M183.3 288.1a2.20 2.20 0 1 0 -4.41 0a2.20 2.20 0 1 0 4.41 0M358.9 185.3a2.20 2.20 0 1 0 -4.41 0a2.20 2.20 0 1 0 4.41 0M379.4 364.1a2.20 2.20 0 1 0 -4.41 0a2.20 2.20 0 1 0 4.41 0M471.5 289.8a2.20 2.20 0 1 0 -4.41 0a2.20 2.20 0 1 0 4.41 0M322.3 205.0a2.20 2.20 0 1 0 -4.41 0a2.20 2.20 0 1 0 4.41 0M300.4 283.2a2.20 2.20 0 1 0 -4.41 0a2.20 2.20 0 1 0 4.41 0M314.3 288.5a2.20 2.20 0 1 0 -4.41 0a2.20 2.20 0 1 0 4.41 0M292.1 330.5a2.20 2.20 0 1 0 -4.41 0a2.20 2.20 0 1 0 4.41 0M166.6 264.5a2.20 2.20 0 1 0 -4.41 0a2.20 2.20 0 1 0 4.41 0M146.3 231.1a2.20 2.20 0 1 0 -4.41 0a2.20 2.20 0 1 0 4.41 0M281.6 234.4a2.20 2.20 0 1 0 -4.41 0a2.20 2.20 0 1 0 4.41 0M242.8 292.6a2.20 2.20 0 1 0 -4.41 0a2.20 2.20 0 1 0 4.41 0M314.9 194.1a2.20 2.20 0 1 0 -4.41 0a2.20 2.20 0 1 0 4.41 0M124.9 284.7a2.20 2.20 0 1 0 -4.41 0a2.20 2.20 0 1 0 4.41 0M169.7 212.6a2.20 2.20 0 1 0 -4.41 0a2.20 2.20 0 1 0 4.41 0M193.4 325.9a2.20 2.20 0 1 0 -4.41 0a2.20 2.20 0 1 0 4.41 0M378.8 177.9a2.20 2.20 0 1 0 -4.41 0a2.20 2.20 0 1 0 4.41 0M209.1 279.1a2.20 2.20 0 1 0 -4.41 0a2.20 2.20 0 1 0 4.41 0M255.3 316.1a2.20 2.20 0 1 0 -4.41 0a2.20 2.20 0 1 0 4.41 0M291.1 288.7a2.20 2.20 0 1 0 -4.41 0a2.20 2.20 0 1 0 4.41 0M287.3 330.5a2.20 2.20 0 1 0 -4.41 0a2.20 2.20 0 1 0 4.41 0M291.7 188.6a2.20 2.20 0 1 0 -4.41 0a2.20 2.20 0 1 0 4.41 0M496.4 189.3a2.20 2.20 0 1 0 -4.41 0a2.20 2.20 0 1 0 4.41 0M197.8 271.4a2.20 2.20 0 1 0 -4.41 0a2.20 2.20 0 1 0 4.41 0M259.7 362.6a2.20 2.20 0 1 0 -4.41 0a2.20 2.20 0 1 0 4.41 0M245.1 186.4a2.20 2.20 0 1 0 -4.41 0a2.20 2.20 0 1 0 4.41 0M409.3 258.0a2.20 2.20 0 1 0 -4.41 0a2.20 2.20 0 1 0 4.41 0M255.5 155.5a2.20 2.20 0 1 0 -4.41 0a2.20 2.20 0 1 0 4.41 0M313.1 186.6a2.20 2.20 0 1 0 -4.41 0a2.20 2.20 0 1 0 4.41 0M354.9 321.9a2.20 2.20 0 1 0 -4.41 0a2.20 2.20 0 1 0 4.41 0M199.3 246.9a2.20 2.20 0 1 0 -4.41 0a2.20 2.20 0 1 0 4.41 0M439.3 198.7a2.20 2.20 0 1 0 -4.41 0a2.20 2.20 0 1 0 4.41 0M357.3 141.8a2.20 2.20 0 1 0 -4.41 0a2.20 2.20 0 1 0 4.41 0M206.6 346.5a2.20 2.20 0 1 0 -4.41 0a2.20 2.20 0 1 0 4.41 0M349.0 260.1a2.20 2.20 0 1 0 -4.41 0a2.20 2.20 0 1 0 4.41 0M273.3 214.1a2.20 2.20 0 1 0 -4.41 0a2.20 2.20 0 1 0 4.41 0M339.0 212.1a2.20 2.20 0 1 0 -4.41 0a2.20 2.20 0 1 0 4.41 0M277.2 243.4a2.20 2.20 0 1 0 -4.41 0a2.20 2.20 0 1 0 4.41 0M400.6 185.1a2.20 2.20 0 1 0 -4.41 0a2.20 2.20 0 1 0 4.41 0M172.8 306.2a2.20 2.20 0 1 0 -4.41 0a2.20 2.20 0 1 0 4.41 0M254.7 188.3a2.20 2.20 0 1 0 -4.41 0a2.20 2.20 0 1 0 4.41 0M286.9 258.1a2.20 2.20 0 1 0 -4.41 0a2.20 2.20 0 1 0 4.41 0" stroke="#111" stroke-width="1.41" fill="none"/><path d="M68.1 263.6 L99.9 263.3 L112.2 263.0 L122.7 262.7 L128.6 262.6 L138.6 262.2 L143.0 262.1 L146.0 262.0 L151.3 261.8 L153.8 261.7 L156.0 261.6 L157.3 261.5 L160.7 261.3 L165.6 261.1 L168.9 260.9 L170.6 260.9 L171.6 260.8 L176.2 260.5 L178.6 260.4 L181.4 260.2 L182.6 260.1 L185.8 259.9 L187.5 259.8 L189.8 259.7 L191.3 259.6 L192.8 259.4 L196.3 259.2 L197.4 259.1 L199.2 259.0 L200.4 258.9 L201.8 258.8 L202.3 258.7 L203.7 258.6 L204.4 258.6 L206.6 258.4 L207.8 258.3 L211.2 258.1 L213.0 258.0 L217.3 257.7 L218.5 257.6 L220.6 257.5 L221.5 257.5 L222.5 257.4 L223.8 257.3 L225.1 257.2 L226.0 257.2 L226.8 257.1 L227.8 257.1 L229.3 257.0 L230.0 256.9 L231.9 256.8 L233.7 256.6 L234.8 256.5 L235.3 256.4 L236.1 256.4 L236.3 256.3 L237.9 256.1 L238.7 256.0 L239.4 255.9 L241.3 255.6 L242.1 255.5 L243.4 255.2 L244.1 255.1 L244.9 255.0 L245.4 254.8 L245.9 254.8 L247.2 254.5 L247.7 254.4 L248.8 254.2 L249.7 254.0 L250.9 253.7 L251.9 253.5 L253.0 253.3 L253.4 253.2 L254.1 253.0 L256.0 252.6 L256.5 252.6 L257.5 252.3 L258.0 252.3 L260.0 251.9 L261.1 251.7 L262.6 251.4 L263.0 251.4 L263.2 251.4 L264.0 251.2 L266.1 251.0 L267.1 250.9 L267.4 250.8 L268.8 250.7 L270.6 250.5 L271.4 250.5 L272.2 250.4 L272.6 250.4 L273.3 250.3 L273.6 250.3 L275.2 250.2 L275.3 250.2 L276.0 250.2 L277.2 250.1 L278.2 250.1 L279.2 250.1 L279.6 250.1 L280.0 250.0 L280.6 250.0 L281.3 250.0 L281.7 250.0 L282.3 250.0 L282.8 250.0 L283.8 250.0 L284.4 250.0 L285.1 250.0 L285.6 250.0 L286.9 250.0 L287.9 250.0 L288.4 250.0 L289.3 250.0 L289.9 250.0 L291.3 250.0 L291.9 250.1 L292.2 250.1 L294.2 250.1 L295.6 250.1 L296.8 250.2 L298.7 250.3 L299.1 250.3 L299.5 250.3 L299.7 250.3 L300.2 250.3 L300.9 250.4 L301.4 250.4 L302.7 250.5 L303.4 250.5 L304.3 250.6 L305.1 250.6 L306.1 250.7 L307.4 250.8 L307.9 250.9 L308.5 250.9 L309.9 251.0 L310.9 251.1 L311.2 251.1 L311.9 251.2 L312.2 251.2 L312.7 251.3 L313.2 251.3 L313.5 251.3 L314.5 251.4 L315.7 251.5 L316.6 251.6 L317.1 251.6 L319.2 251.8 L320.0 251.9 L321.0 251.9 L321.6 252.0 L321.8 252.0 L322.7 252.1 L323.2 252.1 L324.4 252.2 L324.9 252.2 L326.0 252.3 L326.8 252.3 L327.8 252.4 L329.1 252.4 L329.7 252.5 L330.4 252.5 L330.7 252.5 L331.3 252.5 L331.7 252.5 L332.8 252.6 L333.4 252.6 L333.9 252.6 L334.5 252.6 L335.8 252.7 L336.4 252.7 L336.7 252.7 L337.5 252.7 L338.1 252.7 L339.1 252.7 L340.8 252.8 L341.4 252.8 L343.7 252.9 L345.3 252.9 L346.5 253.0 L346.9 253.0 L348.0 253.0 L349.9 253.0 L351.9 253.1 L352.7 253.1 L353.4 253.1 L354.2 253.1 L354.4 253.1 L354.8 253.1 L355.7 253.2 L356.7 253.2 L358.6 253.2 L359.0 253.2 L360.2 253.2 L360.8 253.2 L362.1 253.3 L362.4 253.3 L363.1 253.3 L364.6 253.3 L366.9 253.4 L368.8 253.4 L370.1 253.4 L372.1 253.4 L372.9 253.5 L373.6 253.5 L375.6 253.5 L376.9 253.5 L377.9 253.6 L379.6 253.6 L382.0 253.6 L382.4 253.6 L383.7 253.7 L385.2 253.7 L386.4 253.7 L387.4 253.7 L389.5 253.7 L390.8 253.6 L393.0 253.6 L393.7 253.6 L396.1 253.5 L398.7 253.4 L400.0 253.3 L400.8 253.3 L403.8 253.1 L405.4 253.0 L407.1 252.8 L408.8 252.7 L411.8 252.5 L414.1 252.3 L416.9 252.1 L418.7 252.0 L420.4 251.9 L426.4 251.4 L430.7 251.0 L433.8 250.7 L437.1 250.4 L438.8 250.3 L443.7 249.8 L453.9 248.9 L465.4 247.8 L468.8 247.5 L471.3 247.2 L474.2 247.0 L487.4 245.7 L492.3 245.3 L500.9 244.4 L512.5 243.3" stroke="#DF536B" stroke-width="0.94" fill="none"/><rect x="48.2" y="48.2" width="538.2" height="380.9" stroke="#111" stroke-width="0.82" fill="none"/><path d="M94.7 429.1v5.9M196.0 429.1v5.9M297.3 429.1v5.9M398.5 429.1v5.9M499.8 429.1v5.9M48.2 390.6h-5.9M48.2 306.7h-5.9M48.2 222.8h-5.9M48.2 138.8h-5.9" stroke="#111" stroke-width="0.82"/><g style="font-family:'Liberation Sans',sans-serif" fill="#000" font-size="9.79"><text x="94.7" y="450.2" text-anchor="middle">-10</text><text x="196.0" y="450.2" text-anchor="middle">-5</text><text x="297.3" y="450.2" text-anchor="middle">0</text><text x="398.5" y="450.2" text-anchor="middle">5</text><text x="499.8" y="450.2" text-anchor="middle">10</text><text transform="rotate(-90 34.1 390.6)" x="34.1" y="390.6" text-anchor="middle">0</text><text transform="rotate(-90 34.1 306.7)" x="34.1" y="306.7" text-anchor="middle">0.5</text><text transform="rotate(-90 34.1 222.8)" x="34.1" y="222.8" text-anchor="middle">1</text><text transform="rotate(-90 34.1 138.8)" x="34.1" y="138.8" text-anchor="middle">1.5</text><text x="317.2" y="42.9" text-anchor="middle">Scale-Location</text><text x="317.2" y="473.7" text-anchor="middle">Fitted values</text><text x="317.2" y="485.5" text-anchor="middle">lm(y ~ x1 + x2)</text><text transform="rotate(-90 10.6 238.6)" x="10.6" y="238.6" text-anchor="middle">|Standardized residuals|</text></g></svg>
<svg class="a" style="left:692.4px;top:820.5px" width="127.1" height="73.5" viewBox="300.7 413.1 654.4 374.9" preserveAspectRatio="none" fill="none"><rect x="300.7" y="413.1" width="654.4" height="374.9" fill="#fff"/><path d="M349.2 596.94H930.2M370.72 461.2V728.1" stroke="#bebebe" stroke-width="0.8" stroke-dasharray="0.8 1.6"/><path d="M492.13 624.67a2.2 2.2 0 1 0 -4.4 0a2.2 2.2 0 1 0 4.4 0M486.03 606.63a2.2 2.2 0 1 0 -4.4 0a2.2 2.2 0 1 0 4.4 0M594.99 623.26a2.2 2.2 0 1 0 -4.4 0a2.2 2.2 0 1 0 4.4 0M418.10 575.63a2.2 2.2 0 1 0 -4.4 0a2.2 2.2 0 1 0 4.4 0M418.44 558.80a2.2 2.2 0 1 0 -4.4 0a2.2 2.2 0 1 0 4.4 0M555.70 521.99a2.2 2.2 0 1 0 -4.4 0a2.2 2.2 0 1 0 4.4 0M428.43 583.47a2.2 2.2 0 1 0 -4.4 0a2.2 2.2 0 1 0 4.4 0M592.10 627.59a2.2 2.2 0 1 0 -4.4 0a2.2 2.2 0 1 0 4.4 0M566.05 562.10a2.2 2.2 0 1 0 -4.4 0a2.2 2.2 0 1 0 4.4 0M467.01 566.37a2.2 2.2 0 1 0 -4.4 0a2.2 2.2 0 1 0 4.4 0M546.86 603.60a2.2 2.2 0 1 0 -4.4 0a2.2 2.2 0 1 0 4.4 0M452.00 648.06a2.2 2.2 0 1 0 -4.4 0a2.2 2.2 0 1 0 4.4 0M429.59 570.71a2.2 2.2 0 1 0 -4.4 0a2.2 2.2 0 1 0 4.4 0M424.54 558.89a2.2 2.2 0 1 0 -4.4 0a2.2 2.2 0 1 0 4.4 0M563.23 609.44a2.2 2.2 0 1 0 -4.4 0a2.2 2.2 0 1 0 4.4 0M615.08 574.31a2.2 2.2 0 1 0 -4.4 0a2.2 2.2 0 1 0 4.4 0M461.75 605.99a2.2 2.2 0 1 0 -4.4 0a2.2 2.2 0 1 0 4.4 0M628.50 576.88a2.2 2.2 0 1 0 -4.4 0a2.2 2.2 0 1 0 4.4 0M455.61 598.95a2.2 2.2 0 1 0 -4.4 0a2.2 2.2 0 1 0 4.4 0M556.12 607.95a2.2 2.2 0 1 0 -4.4 0a2.2 2.2 0 1 0 4.4 0M606.67 596.71a2.2 2.2 0 1 0 -4.4 0a2.2 2.2 0 1 0 4.4 0M422.17 606.68a2.2 2.2 0 1 0 -4.4 0a2.2 2.2 0 1 0 4.4 0M602.59 620.39a2.2 2.2 0 1 0 -4.4 0a2.2 2.2 0 1 0 4.4 0M489.58 608.06a2.2 2.2 0 1 0 -4.4 0a2.2 2.2 0 1 0 4.4 0M513.77 597.20a2.2 2.2 0 1 0 -4.4 0a2.2 2.2 0 1 0 4.4 0M579.73 592.42a2.2 2.2 0 1 0 -4.4 0a2.2 2.2 0 1 0 4.4 0M465.04 544.06a2.2 2.2 0 1 0 -4.4 0a2.2 2.2 0 1 0 4.4 0M421.88 642.64a2.2 2.2 0 1 0 -4.4 0a2.2 2.2 0 1 0 4.4 0M481.64 605.60a2.2 2.2 0 1 0 -4.4 0a2.2 2.2 0 1 0 4.4 0M513.81 573.79a2.2 2.2 0 1 0 -4.4 0a2.2 2.2 0 1 0 4.4 0M428.32 536.81a2.2 2.2 0 1 0 -4.4 0a2.2 2.2 0 1 0 4.4 0M425.74 583.32a2.2 2.2 0 1 0 -4.4 0a2.2 2.2 0 1 0 4.4 0M456.99 595.87a2.2 2.2 0 1 0 -4.4 0a2.2 2.2 0 1 0 4.4 0M493.62 604.71a2.2 2.2 0 1 0 -4.4 0a2.2 2.2 0 1 0 4.4 0M532.11 580.07a2.2 2.2 0 1 0 -4.4 0a2.2 2.2 0 1 0 4.4 0M467.16 562.86a2.2 2.2 0 1 0 -4.4 0a2.2 2.2 0 1 0 4.4 0M437.44 602.34a2.2 2.2 0 1 0 -4.4 0a2.2 2.2 0 1 0 4.4 0M526.31 592.84a2.2 2.2 0 1 0 -4.4 0a2.2 2.2 0 1 0 4.4 0M535.78 591.55a2.2 2.2 0 1 0 -4.4 0a2.2 2.2 0 1 0 4.4 0M457.70 573.75a2.2 2.2 0 1 0 -4.4 0a2.2 2.2 0 1 0 4.4 0M442.76 560.53a2.2 2.2 0 1 0 -4.4 0a2.2 2.2 0 1 0 4.4 0M474.85 586.88a2.2 2.2 0 1 0 -4.4 0a2.2 2.2 0 1 0 4.4 0M494.47 601.74a2.2 2.2 0 1 0 -4.4 0a2.2 2.2 0 1 0 4.4 0M662.33 546.24a2.2 2.2 0 1 0 -4.4 0a2.2 2.2 0 1 0 4.4 0M572.24 590.22a2.2 2.2 0 1 0 -4.4 0a2.2 2.2 0 1 0 4.4 0M568.38 546.99a2.2 2.2 0 1 0 -4.4 0a2.2 2.2 0 1 0 4.4 0M479.76 600.72a2.2 2.2 0 1 0 -4.4 0a2.2 2.2 0 1 0 4.4 0M474.49 576.16a2.2 2.2 0 1 0 -4.4 0a2.2 2.2 0 1 0 4.4 0M553.27 646.23a2.2 2.2 0 1 0 -4.4 0a2.2 2.2 0 1 0 4.4 0M418.48 600.77a2.2 2.2 0 1 0 -4.4 0a2.2 2.2 0 1 0 4.4 0M424.69 597.40a2.2 2.2 0 1 0 -4.4 0a2.2 2.2 0 1 0 4.4 0M502.93 621.33a2.2 2.2 0 1 0 -4.4 0a2.2 2.2 0 1 0 4.4 0M525.97 633.33a2.2 2.2 0 1 0 -4.4 0a2.2 2.2 0 1 0 4.4 0M564.30 561.13a2.2 2.2 0 1 0 -4.4 0a2.2 2.2 0 1 0 4.4 0M515.50 567.72a2.2 2.2 0 1 0 -4.4 0a2.2 2.2 0 1 0 4.4 0M597.37 636.69a2.2 2.2 0 1 0 -4.4 0a2.2 2.2 0 1 0 4.4 0M545.94 586.07a2.2 2.2 0 1 0 -4.4 0a2.2 2.2 0 1 0 4.4 0M474.35 634.16a2.2 2.2 0 1 0 -4.4 0a2.2 2.2 0 1 0 4.4 0M455.44 632.92a2.2 2.2 0 1 0 -4.4 0a2.2 2.2 0 1 0 4.4 0M435.35 579.25a2.2 2.2 0 1 0 -4.4 0a2.2 2.2 0 1 0 4.4 0M502.17 618.14a2.2 2.2 0 1 0 -4.4 0a2.2 2.2 0 1 0 4.4 0M497.02 565.38a2.2 2.2 0 1 0 -4.4 0a2.2 2.2 0 1 0 4.4 0M431.23 596.59a2.2 2.2 0 1 0 -4.4 0a2.2 2.2 0 1 0 4.4 0M529.51 581.78a2.2 2.2 0 1 0 -4.4 0a2.2 2.2 0 1 0 4.4 0M526.25 615.67a2.2 2.2 0 1 0 -4.4 0a2.2 2.2 0 1 0 4.4 0M548.29 633.70a2.2 2.2 0 1 0 -4.4 0a2.2 2.2 0 1 0 4.4 0M443.09 564.60a2.2 2.2 0 1 0 -4.4 0a2.2 2.2 0 1 0 4.4 0M445.57 588.05a2.2 2.2 0 1 0 -4.4 0a2.2 2.2 0 1 0 4.4 0M509.43 604.14a2.2 2.2 0 1 0 -4.4 0a2.2 2.2 0 1 0 4.4 0M700.27 591.83a2.2 2.2 0 1 0 -4.4 0a2.2 2.2 0 1 0 4.4 0M500.66 551.94a2.2 2.2 0 1 0 -4.4 0a2.2 2.2 0 1 0 4.4 0M762.91 626.32a2.2 2.2 0 1 0 -4.4 0a2.2 2.2 0 1 0 4.4 0M467.84 620.53a2.2 2.2 0 1 0 -4.4 0a2.2 2.2 0 1 0 4.4 0M446.47 618.88a2.2 2.2 0 1 0 -4.4 0a2.2 2.2 0 1 0 4.4 0M456.11 652.23a2.2 2.2 0 1 0 -4.4 0a2.2 2.2 0 1 0 4.4 0M500.57 568.00a2.2 2.2 0 1 0 -4.4 0a2.2 2.2 0 1 0 4.4 0M422.31 591.01a2.2 2.2 0 1 0 -4.4 0a2.2 2.2 0 1 0 4.4 0M492.57 591.96a2.2 2.2 0 1 0 -4.4 0a2.2 2.2 0 1 0 4.4 0M533.51 599.40a2.2 2.2 0 1 0 -4.4 0a2.2 2.2 0 1 0 4.4 0M524.93 613.02a2.2 2.2 0 1 0 -4.4 0a2.2 2.2 0 1 0 4.4 0M480.63 623.62a2.2 2.2 0 1 0 -4.4 0a2.2 2.2 0 1 0 4.4 0M444.23 567.97a2.2 2.2 0 1 0 -4.4 0a2.2 2.2 0 1 0 4.4 0M453.01 646.44a2.2 2.2 0 1 0 -4.4 0a2.2 2.2 0 1 0 4.4 0M517.93 579.56a2.2 2.2 0 1 0 -4.4 0a2.2 2.2 0 1 0 4.4 0M420.95 623.95a2.2 2.2 0 1 0 -4.4 0a2.2 2.2 0 1 0 4.4 0M432.91 587.14a2.2 2.2 0 1 0 -4.4 0a2.2 2.2 0 1 0 4.4 0M477.50 619.43a2.2 2.2 0 1 0 -4.4 0a2.2 2.2 0 1 0 4.4 0M551.80 615.20a2.2 2.2 0 1 0 -4.4 0a2.2 2.2 0 1 0 4.4 0M440.73 538.34a2.2 2.2 0 1 0 -4.4 0a2.2 2.2 0 1 0 4.4 0M495.75 571.50a2.2 2.2 0 1 0 -4.4 0a2.2 2.2 0 1 0 4.4 0M526.67 666.35a2.2 2.2 0 1 0 -4.4 0a2.2 2.2 0 1 0 4.4 0M452.09 590.94a2.2 2.2 0 1 0 -4.4 0a2.2 2.2 0 1 0 4.4 0M506.80 610.45a2.2 2.2 0 1 0 -4.4 0a2.2 2.2 0 1 0 4.4 0M551.81 635.09a2.2 2.2 0 1 0 -4.4 0a2.2 2.2 0 1 0 4.4 0M521.04 586.56a2.2 2.2 0 1 0 -4.4 0a2.2 2.2 0 1 0 4.4 0M467.65 594.40a2.2 2.2 0 1 0 -4.4 0a2.2 2.2 0 1 0 4.4 0M738.29 605.11a2.2 2.2 0 1 0 -4.4 0a2.2 2.2 0 1 0 4.4 0M527.57 526.98a2.2 2.2 0 1 0 -4.4 0a2.2 2.2 0 1 0 4.4 0M421.07 673.29a2.2 2.2 0 1 0 -4.4 0a2.2 2.2 0 1 0 4.4 0M562.15 569.25a2.2 2.2 0 1 0 -4.4 0a2.2 2.2 0 1 0 4.4 0M451.76 608.42a2.2 2.2 0 1 0 -4.4 0a2.2 2.2 0 1 0 4.4 0M431.85 573.78a2.2 2.2 0 1 0 -4.4 0a2.2 2.2 0 1 0 4.4 0M423.73 612.46a2.2 2.2 0 1 0 -4.4 0a2.2 2.2 0 1 0 4.4 0M539.14 619.03a2.2 2.2 0 1 0 -4.4 0a2.2 2.2 0 1 0 4.4 0M479.51 657.05a2.2 2.2 0 1 0 -4.4 0a2.2 2.2 0 1 0 4.4 0M443.57 604.70a2.2 2.2 0 1 0 -4.4 0a2.2 2.2 0 1 0 4.4 0M501.92 513.70a2.2 2.2 0 1 0 -4.4 0a2.2 2.2 0 1 0 4.4 0M589.75 565.79a2.2 2.2 0 1 0 -4.4 0a2.2 2.2 0 1 0 4.4 0M501.39 542.18a2.2 2.2 0 1 0 -4.4 0a2.2 2.2 0 1 0 4.4 0M513.39 565.20a2.2 2.2 0 1 0 -4.4 0a2.2 2.2 0 1 0 4.4 0M460.78 560.05a2.2 2.2 0 1 0 -4.4 0a2.2 2.2 0 1 0 4.4 0M459.74 564.55a2.2 2.2 0 1 0 -4.4 0a2.2 2.2 0 1 0 4.4 0M580.38 583.10a2.2 2.2 0 1 0 -4.4 0a2.2 2.2 0 1 0 4.4 0M418.08 616.63a2.2 2.2 0 1 0 -4.4 0a2.2 2.2 0 1 0 4.4 0M429.62 613.92a2.2 2.2 0 1 0 -4.4 0a2.2 2.2 0 1 0 4.4 0M463.08 649.49a2.2 2.2 0 1 0 -4.4 0a2.2 2.2 0 1 0 4.4 0M454.89 597.67a2.2 2.2 0 1 0 -4.4 0a2.2 2.2 0 1 0 4.4 0M553.69 566.30a2.2 2.2 0 1 0 -4.4 0a2.2 2.2 0 1 0 4.4 0M477.37 564.34a2.2 2.2 0 1 0 -4.4 0a2.2 2.2 0 1 0 4.4 0M531.69 596.71a2.2 2.2 0 1 0 -4.4 0a2.2 2.2 0 1 0 4.4 0M516.41 616.46a2.2 2.2 0 1 0 -4.4 0a2.2 2.2 0 1 0 4.4 0M475.55 488.13a2.2 2.2 0 1 0 -4.4 0a2.2 2.2 0 1 0 4.4 0M456.27 572.28a2.2 2.2 0 1 0 -4.4 0a2.2 2.2 0 1 0 4.4 0M462.08 548.57a2.2 2.2 0 1 0 -4.4 0a2.2 2.2 0 1 0 4.4 0M637.49 605.80a2.2 2.2 0 1 0 -4.4 0a2.2 2.2 0 1 0 4.4 0M554.31 598.00a2.2 2.2 0 1 0 -4.4 0a2.2 2.2 0 1 0 4.4 0M484.53 582.33a2.2 2.2 0 1 0 -4.4 0a2.2 2.2 0 1 0 4.4 0M418.34 540.23a2.2 2.2 0 1 0 -4.4 0a2.2 2.2 0 1 0 4.4 0M463.23 609.08a2.2 2.2 0 1 0 -4.4 0a2.2 2.2 0 1 0 4.4 0M517.11 569.50a2.2 2.2 0 1 0 -4.4 0a2.2 2.2 0 1 0 4.4 0M573.49 663.84a2.2 2.2 0 1 0 -4.4 0a2.2 2.2 0 1 0 4.4 0M434.45 612.75a2.2 2.2 0 1 0 -4.4 0a2.2 2.2 0 1 0 4.4 0M486.43 639.33a2.2 2.2 0 1 0 -4.4 0a2.2 2.2 0 1 0 4.4 0M489.64 559.05a2.2 2.2 0 1 0 -4.4 0a2.2 2.2 0 1 0 4.4 0M633.10 607.01a2.2 2.2 0 1 0 -4.4 0a2.2 2.2 0 1 0 4.4 0M476.33 608.04a2.2 2.2 0 1 0 -4.4 0a2.2 2.2 0 1 0 4.4 0M517.68 553.41a2.2 2.2 0 1 0 -4.4 0a2.2 2.2 0 1 0 4.4 0M491.58 558.68a2.2 2.2 0 1 0 -4.4 0a2.2 2.2 0 1 0 4.4 0M688.60 624.93a2.2 2.2 0 1 0 -4.4 0a2.2 2.2 0 1 0 4.4 0M515.67 585.30a2.2 2.2 0 1 0 -4.4 0a2.2 2.2 0 1 0 4.4 0M460.47 637.60a2.2 2.2 0 1 0 -4.4 0a2.2 2.2 0 1 0 4.4 0M473.91 612.49a2.2 2.2 0 1 0 -4.4 0a2.2 2.2 0 1 0 4.4 0M542.41 544.90a2.2 2.2 0 1 0 -4.4 0a2.2 2.2 0 1 0 4.4 0M626.04 549.44a2.2 2.2 0 1 0 -4.4 0a2.2 2.2 0 1 0 4.4 0M596.50 561.47a2.2 2.2 0 1 0 -4.4 0a2.2 2.2 0 1 0 4.4 0M513.93 615.99a2.2 2.2 0 1 0 -4.4 0a2.2 2.2 0 1 0 4.4 0M540.51 662.65a2.2 2.2 0 1 0 -4.4 0a2.2 2.2 0 1 0 4.4 0M445.54 634.88a2.2 2.2 0 1 0 -4.4 0a2.2 2.2 0 1 0 4.4 0M624.09 560.96a2.2 2.2 0 1 0 -4.4 0a2.2 2.2 0 1 0 4.4 0M520.42 609.85a2.2 2.2 0 1 0 -4.4 0a2.2 2.2 0 1 0 4.4 0M461.75 667.82a2.2 2.2 0 1 0 -4.4 0a2.2 2.2 0 1 0 4.4 0M555.87 602.88a2.2 2.2 0 1 0 -4.4 0a2.2 2.2 0 1 0 4.4 0M442.57 549.23a2.2 2.2 0 1 0 -4.4 0a2.2 2.2 0 1 0 4.4 0M523.32 576.09a2.2 2.2 0 1 0 -4.4 0a2.2 2.2 0 1 0 4.4 0M427.39 624.43a2.2 2.2 0 1 0 -4.4 0a2.2 2.2 0 1 0 4.4 0M441.75 649.01a2.2 2.2 0 1 0 -4.4 0a2.2 2.2 0 1 0 4.4 0M432.55 623.55a2.2 2.2 0 1 0 -4.4 0a2.2 2.2 0 1 0 4.4 0M481.22 597.43a2.2 2.2 0 1 0 -4.4 0a2.2 2.2 0 1 0 4.4 0M499.25 564.17a2.2 2.2 0 1 0 -4.4 0a2.2 2.2 0 1 0 4.4 0M429.42 662.79a2.2 2.2 0 1 0 -4.4 0a2.2 2.2 0 1 0 4.4 0M581.25 561.66a2.2 2.2 0 1 0 -4.4 0a2.2 2.2 0 1 0 4.4 0M540.58 597.61a2.2 2.2 0 1 0 -4.4 0a2.2 2.2 0 1 0 4.4 0M502.72 580.50a2.2 2.2 0 1 0 -4.4 0a2.2 2.2 0 1 0 4.4 0M910.88 647.22a2.2 2.2 0 1 0 -4.4 0a2.2 2.2 0 1 0 4.4 0M431.22 620.47a2.2 2.2 0 1 0 -4.4 0a2.2 2.2 0 1 0 4.4 0M551.06 612.95a2.2 2.2 0 1 0 -4.4 0a2.2 2.2 0 1 0 4.4 0M545.77 558.98a2.2 2.2 0 1 0 -4.4 0a2.2 2.2 0 1 0 4.4 0M558.35 564.57a2.2 2.2 0 1 0 -4.4 0a2.2 2.2 0 1 0 4.4 0M460.46 581.93a2.2 2.2 0 1 0 -4.4 0a2.2 2.2 0 1 0 4.4 0M425.71 541.83a2.2 2.2 0 1 0 -4.4 0a2.2 2.2 0 1 0 4.4 0M482.63 613.66a2.2 2.2 0 1 0 -4.4 0a2.2 2.2 0 1 0 4.4 0M419.27 562.43a2.2 2.2 0 1 0 -4.4 0a2.2 2.2 0 1 0 4.4 0M469.22 597.21a2.2 2.2 0 1 0 -4.4 0a2.2 2.2 0 1 0 4.4 0M625.80 615.06a2.2 2.2 0 1 0 -4.4 0a2.2 2.2 0 1 0 4.4 0M500.57 568.12a2.2 2.2 0 1 0 -4.4 0a2.2 2.2 0 1 0 4.4 0M576.59 550.98a2.2 2.2 0 1 0 -4.4 0a2.2 2.2 0 1 0 4.4 0M433.69 566.64a2.2 2.2 0 1 0 -4.4 0a2.2 2.2 0 1 0 4.4 0M483.33 614.51a2.2 2.2 0 1 0 -4.4 0a2.2 2.2 0 1 0 4.4 0M538.06 610.51a2.2 2.2 0 1 0 -4.4 0a2.2 2.2 0 1 0 4.4 0M474.48 552.15a2.2 2.2 0 1 0 -4.4 0a2.2 2.2 0 1 0 4.4 0M587.79 588.44a2.2 2.2 0 1 0 -4.4 0a2.2 2.2 0 1 0 4.4 0M501.36 566.88a2.2 2.2 0 1 0 -4.4 0a2.2 2.2 0 1 0 4.4 0M549.08 607.52a2.2 2.2 0 1 0 -4.4 0a2.2 2.2 0 1 0 4.4 0M453.74 555.91a2.2 2.2 0 1 0 -4.4 0a2.2 2.2 0 1 0 4.4 0M446.20 625.30a2.2 2.2 0 1 0 -4.4 0a2.2 2.2 0 1 0 4.4 0M535.77 574.71a2.2 2.2 0 1 0 -4.4 0a2.2 2.2 0 1 0 4.4 0M533.16 623.36a2.2 2.2 0 1 0 -4.4 0a2.2 2.2 0 1 0 4.4 0M450.28 680.59a2.2 2.2 0 1 0 -4.4 0a2.2 2.2 0 1 0 4.4 0M473.01 640.03a2.2 2.2 0 1 0 -4.4 0a2.2 2.2 0 1 0 4.4 0M463.15 594.00a2.2 2.2 0 1 0 -4.4 0a2.2 2.2 0 1 0 4.4 0M435.15 567.19a2.2 2.2 0 1 0 -4.4 0a2.2 2.2 0 1 0 4.4 0M478.51 655.66a2.2 2.2 0 1 0 -4.4 0a2.2 2.2 0 1 0 4.4 0M433.44 639.44a2.2 2.2 0 1 0 -4.4 0a2.2 2.2 0 1 0 4.4 0M556.96 540.31a2.2 2.2 0 1 0 -4.4 0a2.2 2.2 0 1 0 4.4 0M567.25 615.18a2.2 2.2 0 1 0 -4.4 0a2.2 2.2 0 1 0 4.4 0M635.27 576.71a2.2 2.2 0 1 0 -4.4 0a2.2 2.2 0 1 0 4.4 0M451.13 614.06a2.2 2.2 0 1 0 -4.4 0a2.2 2.2 0 1 0 4.4 0M496.71 609.69a2.2 2.2 0 1 0 -4.4 0a2.2 2.2 0 1 0 4.4 0M440.18 594.84a2.2 2.2 0 1 0 -4.4 0a2.2 2.2 0 1 0 4.4 0M552.83 597.71a2.2 2.2 0 1 0 -4.4 0a2.2 2.2 0 1 0 4.4 0M685.06 600.06a2.2 2.2 0 1 0 -4.4 0a2.2 2.2 0 1 0 4.4 0M517.68 610.84a2.2 2.2 0 1 0 -4.4 0a2.2 2.2 0 1 0 4.4 0M466.28 701.17a2.2 2.2 0 1 0 -4.4 0a2.2 2.2 0 1 0 4.4 0M553.95 531.21a2.2 2.2 0 1 0 -4.4 0a2.2 2.2 0 1 0 4.4 0M480.63 536.25a2.2 2.2 0 1 0 -4.4 0a2.2 2.2 0 1 0 4.4 0M434.56 635.27a2.2 2.2 0 1 0 -4.4 0a2.2 2.2 0 1 0 4.4 0M537.02 602.84a2.2 2.2 0 1 0 -4.4 0a2.2 2.2 0 1 0 4.4 0M458.79 552.25a2.2 2.2 0 1 0 -4.4 0a2.2 2.2 0 1 0 4.4 0M541.53 560.11a2.2 2.2 0 1 0 -4.4 0a2.2 2.2 0 1 0 4.4 0M442.48 553.24a2.2 2.2 0 1 0 -4.4 0a2.2 2.2 0 1 0 4.4 0M424.38 632.49a2.2 2.2 0 1 0 -4.4 0a2.2 2.2 0 1 0 4.4 0M435.89 509.95a2.2 2.2 0 1 0 -4.4 0a2.2 2.2 0 1 0 4.4 0M548.17 631.74a2.2 2.2 0 1 0 -4.4 0a2.2 2.2 0 1 0 4.4 0M509.44 571.24a2.2 2.2 0 1 0 -4.4 0a2.2 2.2 0 1 0 4.4 0M465.27 594.16a2.2 2.2 0 1 0 -4.4 0a2.2 2.2 0 1 0 4.4 0M631.04 606.05a2.2 2.2 0 1 0 -4.4 0a2.2 2.2 0 1 0 4.4 0M512.53 609.33a2.2 2.2 0 1 0 -4.4 0a2.2 2.2 0 1 0 4.4 0M454.12 632.19a2.2 2.2 0 1 0 -4.4 0a2.2 2.2 0 1 0 4.4 0M492.44 544.70a2.2 2.2 0 1 0 -4.4 0a2.2 2.2 0 1 0 4.4 0M513.03 595.79a2.2 2.2 0 1 0 -4.4 0a2.2 2.2 0 1 0 4.4 0M461.26 588.55a2.2 2.2 0 1 0 -4.4 0a2.2 2.2 0 1 0 4.4 0M443.26 589.00a2.2 2.2 0 1 0 -4.4 0a2.2 2.2 0 1 0 4.4 0M528.00 608.39a2.2 2.2 0 1 0 -4.4 0a2.2 2.2 0 1 0 4.4 0M547.38 632.45a2.2 2.2 0 1 0 -4.4 0a2.2 2.2 0 1 0 4.4 0M554.26 590.51a2.2 2.2 0 1 0 -4.4 0a2.2 2.2 0 1 0 4.4 0M537.71 666.05a2.2 2.2 0 1 0 -4.4 0a2.2 2.2 0 1 0 4.4 0M493.44 645.20a2.2 2.2 0 1 0 -4.4 0a2.2 2.2 0 1 0 4.4 0M456.73 634.10a2.2 2.2 0 1 0 -4.4 0a2.2 2.2 0 1 0 4.4 0M516.94 632.66a2.2 2.2 0 1 0 -4.4 0a2.2 2.2 0 1 0 4.4 0M516.16 594.29a2.2 2.2 0 1 0 -4.4 0a2.2 2.2 0 1 0 4.4 0M632.00 539.88a2.2 2.2 0 1 0 -4.4 0a2.2 2.2 0 1 0 4.4 0M487.02 649.32a2.2 2.2 0 1 0 -4.4 0a2.2 2.2 0 1 0 4.4 0M420.05 581.74a2.2 2.2 0 1 0 -4.4 0a2.2 2.2 0 1 0 4.4 0M456.51 568.41a2.2 2.2 0 1 0 -4.4 0a2.2 2.2 0 1 0 4.4 0M448.90 630.88a2.2 2.2 0 1 0 -4.4 0a2.2 2.2 0 1 0 4.4 0M499.37 601.14a2.2 2.2 0 1 0 -4.4 0a2.2 2.2 0 1 0 4.4 0M524.08 570.76a2.2 2.2 0 1 0 -4.4 0a2.2 2.2 0 1 0 4.4 0M459.77 603.92a2.2 2.2 0 1 0 -4.4 0a2.2 2.2 0 1 0 4.4 0M542.72 602.26a2.2 2.2 0 1 0 -4.4 0a2.2 2.2 0 1 0 4.4 0M565.33 589.43a2.2 2.2 0 1 0 -4.4 0a2.2 2.2 0 1 0 4.4 0M476.03 599.73a2.2 2.2 0 1 0 -4.4 0a2.2 2.2 0 1 0 4.4 0M443.46 617.09a2.2 2.2 0 1 0 -4.4 0a2.2 2.2 0 1 0 4.4 0M617.02 597.35a2.2 2.2 0 1 0 -4.4 0a2.2 2.2 0 1 0 4.4 0M599.41 536.88a2.2 2.2 0 1 0 -4.4 0a2.2 2.2 0 1 0 4.4 0M513.10 568.99a2.2 2.2 0 1 0 -4.4 0a2.2 2.2 0 1 0 4.4 0M647.39 625.21a2.2 2.2 0 1 0 -4.4 0a2.2 2.2 0 1 0 4.4 0M421.30 638.86a2.2 2.2 0 1 0 -4.4 0a2.2 2.2 0 1 0 4.4 0M549.34 612.56a2.2 2.2 0 1 0 -4.4 0a2.2 2.2 0 1 0 4.4 0M458.85 552.72a2.2 2.2 0 1 0 -4.4 0a2.2 2.2 0 1 0 4.4 0M451.68 585.42a2.2 2.2 0 1 0 -4.4 0a2.2 2.2 0 1 0 4.4 0M558.38 622.84a2.2 2.2 0 1 0 -4.4 0a2.2 2.2 0 1 0 4.4 0M560.90 569.64a2.2 2.2 0 1 0 -4.4 0a2.2 2.2 0 1 0 4.4 0M423.90 602.00a2.2 2.2 0 1 0 -4.4 0a2.2 2.2 0 1 0 4.4 0M454.57 635.33a2.2 2.2 0 1 0 -4.4 0a2.2 2.2 0 1 0 4.4 0M549.58 577.65a2.2 2.2 0 1 0 -4.4 0a2.2 2.2 0 1 0 4.4 0M454.40 544.81a2.2 2.2 0 1 0 -4.4 0a2.2 2.2 0 1 0 4.4 0M476.24 580.45a2.2 2.2 0 1 0 -4.4 0a2.2 2.2 0 1 0 4.4 0M449.01 588.68a2.2 2.2 0 1 0 -4.4 0a2.2 2.2 0 1 0 4.4 0M520.29 617.93a2.2 2.2 0 1 0 -4.4 0a2.2 2.2 0 1 0 4.4 0M656.21 582.12a2.2 2.2 0 1 0 -4.4 0a2.2 2.2 0 1 0 4.4 0M450.70 634.61a2.2 2.2 0 1 0 -4.4 0a2.2 2.2 0 1 0 4.4 0M500.55 654.77a2.2 2.2 0 1 0 -4.4 0a2.2 2.2 0 1 0 4.4 0M418.61 598.14a2.2 2.2 0 1 0 -4.4 0a2.2 2.2 0 1 0 4.4 0M569.93 594.37a2.2 2.2 0 1 0 -4.4 0a2.2 2.2 0 1 0 4.4 0M669.33 512.90a2.2 2.2 0 1 0 -4.4 0a2.2 2.2 0 1 0 4.4 0M651.25 633.54a2.2 2.2 0 1 0 -4.4 0a2.2 2.2 0 1 0 4.4 0M477.84 590.35a2.2 2.2 0 1 0 -4.4 0a2.2 2.2 0 1 0 4.4 0M649.90 574.30a2.2 2.2 0 1 0 -4.4 0a2.2 2.2 0 1 0 4.4 0M487.18 561.12a2.2 2.2 0 1 0 -4.4 0a2.2 2.2 0 1 0 4.4 0M448.55 596.34a2.2 2.2 0 1 0 -4.4 0a2.2 2.2 0 1 0 4.4 0M484.97 619.55a2.2 2.2 0 1 0 -4.4 0a2.2 2.2 0 1 0 4.4 0M478.48 596.65a2.2 2.2 0 1 0 -4.4 0a2.2 2.2 0 1 0 4.4 0M480.16 529.20a2.2 2.2 0 1 0 -4.4 0a2.2 2.2 0 1 0 4.4 0M619.51 581.87a2.2 2.2 0 1 0 -4.4 0a2.2 2.2 0 1 0 4.4 0M533.31 665.51a2.2 2.2 0 1 0 -4.4 0a2.2 2.2 0 1 0 4.4 0M541.08 551.05a2.2 2.2 0 1 0 -4.4 0a2.2 2.2 0 1 0 4.4 0M522.45 579.62a2.2 2.2 0 1 0 -4.4 0a2.2 2.2 0 1 0 4.4 0M419.09 597.73a2.2 2.2 0 1 0 -4.4 0a2.2 2.2 0 1 0 4.4 0M427.74 596.46a2.2 2.2 0 1 0 -4.4 0a2.2 2.2 0 1 0 4.4 0M523.82 600.53a2.2 2.2 0 1 0 -4.4 0a2.2 2.2 0 1 0 4.4 0M555.92 591.05a2.2 2.2 0 1 0 -4.4 0a2.2 2.2 0 1 0 4.4 0M522.93 613.66a2.2 2.2 0 1 0 -4.4 0a2.2 2.2 0 1 0 4.4 0M433.01 586.39a2.2 2.2 0 1 0 -4.4 0a2.2 2.2 0 1 0 4.4 0M421.49 628.84a2.2 2.2 0 1 0 -4.4 0a2.2 2.2 0 1 0 4.4 0M418.73 589.98a2.2 2.2 0 1 0 -4.4 0a2.2 2.2 0 1 0 4.4 0M475.56 558.25a2.2 2.2 0 1 0 -4.4 0a2.2 2.2 0 1 0 4.4 0M420.54 579.38a2.2 2.2 0 1 0 -4.4 0a2.2 2.2 0 1 0 4.4 0M622.60 557.52a2.2 2.2 0 1 0 -4.4 0a2.2 2.2 0 1 0 4.4 0M427.59 634.47a2.2 2.2 0 1 0 -4.4 0a2.2 2.2 0 1 0 4.4 0M419.97 594.84a2.2 2.2 0 1 0 -4.4 0a2.2 2.2 0 1 0 4.4 0M519.56 572.92a2.2 2.2 0 1 0 -4.4 0a2.2 2.2 0 1 0 4.4 0M549.57 632.12a2.2 2.2 0 1 0 -4.4 0a2.2 2.2 0 1 0 4.4 0M526.10 540.83a2.2 2.2 0 1 0 -4.4 0a2.2 2.2 0 1 0 4.4 0M436.72 632.70a2.2 2.2 0 1 0 -4.4 0a2.2 2.2 0 1 0 4.4 0M671.07 588.55a2.2 2.2 0 1 0 -4.4 0a2.2 2.2 0 1 0 4.4 0M453.78 590.83a2.2 2.2 0 1 0 -4.4 0a2.2 2.2 0 1 0 4.4 0M599.91 588.48a2.2 2.2 0 1 0 -4.4 0a2.2 2.2 0 1 0 4.4 0M582.33 607.79a2.2 2.2 0 1 0 -4.4 0a2.2 2.2 0 1 0 4.4 0M425.48 582.02a2.2 2.2 0 1 0 -4.4 0a2.2 2.2 0 1 0 4.4 0M551.99 630.36a2.2 2.2 0 1 0 -4.4 0a2.2 2.2 0 1 0 4.4 0M442.43 641.73a2.2 2.2 0 1 0 -4.4 0a2.2 2.2 0 1 0 4.4 0M529.59 621.67a2.2 2.2 0 1 0 -4.4 0a2.2 2.2 0 1 0 4.4 0M514.42 599.65a2.2 2.2 0 1 0 -4.4 0a2.2 2.2 0 1 0 4.4 0M478.94 556.88a2.2 2.2 0 1 0 -4.4 0a2.2 2.2 0 1 0 4.4 0M454.46 544.83a2.2 2.2 0 1 0 -4.4 0a2.2 2.2 0 1 0 4.4 0M473.20 584.51a2.2 2.2 0 1 0 -4.4 0a2.2 2.2 0 1 0 4.4 0M610.04 588.14a2.2 2.2 0 1 0 -4.4 0a2.2 2.2 0 1 0 4.4 0M435.10 605.21a2.2 2.2 0 1 0 -4.4 0a2.2 2.2 0 1 0 4.4 0M575.40 594.11a2.2 2.2 0 1 0 -4.4 0a2.2 2.2 0 1 0 4.4 0M623.11 639.86a2.2 2.2 0 1 0 -4.4 0a2.2 2.2 0 1 0 4.4 0M494.14 584.68a2.2 2.2 0 1 0 -4.4 0a2.2 2.2 0 1 0 4.4 0M574.00 612.00a2.2 2.2 0 1 0 -4.4 0a2.2 2.2 0 1 0 4.4 0M563.83 588.56a2.2 2.2 0 1 0 -4.4 0a2.2 2.2 0 1 0 4.4 0M446.10 610.15a2.2 2.2 0 1 0 -4.4 0a2.2 2.2 0 1 0 4.4 0M430.83 620.23a2.2 2.2 0 1 0 -4.4 0a2.2 2.2 0 1 0 4.4 0M491.68 603.87a2.2 2.2 0 1 0 -4.4 0a2.2 2.2 0 1 0 4.4 0M494.54 608.32a2.2 2.2 0 1 0 -4.4 0a2.2 2.2 0 1 0 4.4 0M508.02 562.87a2.2 2.2 0 1 0 -4.4 0a2.2 2.2 0 1 0 4.4 0M595.28 585.60a2.2 2.2 0 1 0 -4.4 0a2.2 2.2 0 1 0 4.4 0M458.02 580.76a2.2 2.2 0 1 0 -4.4 0a2.2 2.2 0 1 0 4.4 0M440.09 638.89a2.2 2.2 0 1 0 -4.4 0a2.2 2.2 0 1 0 4.4 0M484.12 544.04a2.2 2.2 0 1 0 -4.4 0a2.2 2.2 0 1 0 4.4 0M509.30 593.73a2.2 2.2 0 1 0 -4.4 0a2.2 2.2 0 1 0 4.4 0M456.94 625.10a2.2 2.2 0 1 0 -4.4 0a2.2 2.2 0 1 0 4.4 0M431.35 587.40a2.2 2.2 0 1 0 -4.4 0a2.2 2.2 0 1 0 4.4 0M477.33 565.34a2.2 2.2 0 1 0 -4.4 0a2.2 2.2 0 1 0 4.4 0M419.12 643.55a2.2 2.2 0 1 0 -4.4 0a2.2 2.2 0 1 0 4.4 0M529.83 537.27a2.2 2.2 0 1 0 -4.4 0a2.2 2.2 0 1 0 4.4 0M530.39 598.87a2.2 2.2 0 1 0 -4.4 0a2.2 2.2 0 1 0 4.4 0M419.46 559.20a2.2 2.2 0 1 0 -4.4 0a2.2 2.2 0 1 0 4.4 0M587.04 590.99a2.2 2.2 0 1 0 -4.4 0a2.2 2.2 0 1 0 4.4 0M525.20 609.56a2.2 2.2 0 1 0 -4.4 0a2.2 2.2 0 1 0 4.4 0M453.48 660.65a2.2 2.2 0 1 0 -4.4 0a2.2 2.2 0 1 0 4.4 0M543.88 631.74a2.2 2.2 0 1 0 -4.4 0a2.2 2.2 0 1 0 4.4 0M463.86 598.38a2.2 2.2 0 1 0 -4.4 0a2.2 2.2 0 1 0 4.4 0M702.38 571.59a2.2 2.2 0 1 0 -4.4 0a2.2 2.2 0 1 0 4.4 0M585.14 661.95a2.2 2.2 0 1 0 -4.4 0a2.2 2.2 0 1 0 4.4 0M526.35 552.16a2.2 2.2 0 1 0 -4.4 0a2.2 2.2 0 1 0 4.4 0M546.60 549.22a2.2 2.2 0 1 0 -4.4 0a2.2 2.2 0 1 0 4.4 0M513.05 636.98a2.2 2.2 0 1 0 -4.4 0a2.2 2.2 0 1 0 4.4 0M446.14 580.17a2.2 2.2 0 1 0 -4.4 0a2.2 2.2 0 1 0 4.4 0M522.60 628.88a2.2 2.2 0 1 0 -4.4 0a2.2 2.2 0 1 0 4.4 0M627.33 599.08a2.2 2.2 0 1 0 -4.4 0a2.2 2.2 0 1 0 4.4 0M512.26 566.68a2.2 2.2 0 1 0 -4.4 0a2.2 2.2 0 1 0 4.4 0M475.04 566.66a2.2 2.2 0 1 0 -4.4 0a2.2 2.2 0 1 0 4.4 0M650.76 627.75a2.2 2.2 0 1 0 -4.4 0a2.2 2.2 0 1 0 4.4 0M420.52 609.93a2.2 2.2 0 1 0 -4.4 0a2.2 2.2 0 1 0 4.4 0M442.42 630.54a2.2 2.2 0 1 0 -4.4 0a2.2 2.2 0 1 0 4.4 0M463.18 587.21a2.2 2.2 0 1 0 -4.4 0a2.2 2.2 0 1 0 4.4 0M420.15 649.74a2.2 2.2 0 1 0 -4.4 0a2.2 2.2 0 1 0 4.4 0M502.80 684.54a2.2 2.2 0 1 0 -4.4 0a2.2 2.2 0 1 0 4.4 0M662.93 552.04a2.2 2.2 0 1 0 -4.4 0a2.2 2.2 0 1 0 4.4 0M450.76 520.32a2.2 2.2 0 1 0 -4.4 0a2.2 2.2 0 1 0 4.4 0M446.33 612.71a2.2 2.2 0 1 0 -4.4 0a2.2 2.2 0 1 0 4.4 0M455.65 572.93a2.2 2.2 0 1 0 -4.4 0a2.2 2.2 0 1 0 4.4 0M521.95 595.17a2.2 2.2 0 1 0 -4.4 0a2.2 2.2 0 1 0 4.4 0M538.28 544.86a2.2 2.2 0 1 0 -4.4 0a2.2 2.2 0 1 0 4.4 0M453.75 577.45a2.2 2.2 0 1 0 -4.4 0a2.2 2.2 0 1 0 4.4 0M735.87 593.97a2.2 2.2 0 1 0 -4.4 0a2.2 2.2 0 1 0 4.4 0M721.02 652.51a2.2 2.2 0 1 0 -4.4 0a2.2 2.2 0 1 0 4.4 0M421.54 560.89a2.2 2.2 0 1 0 -4.4 0a2.2 2.2 0 1 0 4.4 0M459.66 608.10a2.2 2.2 0 1 0 -4.4 0a2.2 2.2 0 1 0 4.4 0M456.60 642.94a2.2 2.2 0 1 0 -4.4 0a2.2 2.2 0 1 0 4.4 0M544.48 602.89a2.2 2.2 0 1 0 -4.4 0a2.2 2.2 0 1 0 4.4 0M447.45 599.51a2.2 2.2 0 1 0 -4.4 0a2.2 2.2 0 1 0 4.4 0M449.06 560.82a2.2 2.2 0 1 0 -4.4 0a2.2 2.2 0 1 0 4.4 0M441.13 635.00a2.2 2.2 0 1 0 -4.4 0a2.2 2.2 0 1 0 4.4 0M475.77 618.06a2.2 2.2 0 1 0 -4.4 0a2.2 2.2 0 1 0 4.4 0M476.49 545.65a2.2 2.2 0 1 0 -4.4 0a2.2 2.2 0 1 0 4.4 0M431.30 552.15a2.2 2.2 0 1 0 -4.4 0a2.2 2.2 0 1 0 4.4 0M750.84 553.89a2.2 2.2 0 1 0 -4.4 0a2.2 2.2 0 1 0 4.4 0M548.09 543.70a2.2 2.2 0 1 0 -4.4 0a2.2 2.2 0 1 0 4.4 0M472.64 590.01a2.2 2.2 0 1 0 -4.4 0a2.2 2.2 0 1 0 4.4 0M448.36 614.82a2.2 2.2 0 1 0 -4.4 0a2.2 2.2 0 1 0 4.4 0M436.92 576.78a2.2 2.2 0 1 0 -4.4 0a2.2 2.2 0 1 0 4.4 0M466.69 561.53a2.2 2.2 0 1 0 -4.4 0a2.2 2.2 0 1 0 4.4 0M563.77 518.55a2.2 2.2 0 1 0 -4.4 0a2.2 2.2 0 1 0 4.4 0M419.17 662.80a2.2 2.2 0 1 0 -4.4 0a2.2 2.2 0 1 0 4.4 0M541.53 586.20a2.2 2.2 0 1 0 -4.4 0a2.2 2.2 0 1 0 4.4 0M677.19 579.58a2.2 2.2 0 1 0 -4.4 0a2.2 2.2 0 1 0 4.4 0M425.98 598.28a2.2 2.2 0 1 0 -4.4 0a2.2 2.2 0 1 0 4.4 0M546.65 647.66a2.2 2.2 0 1 0 -4.4 0a2.2 2.2 0 1 0 4.4 0M540.79 572.94a2.2 2.2 0 1 0 -4.4 0a2.2 2.2 0 1 0 4.4 0M477.08 624.88a2.2 2.2 0 1 0 -4.4 0a2.2 2.2 0 1 0 4.4 0M550.96 580.33a2.2 2.2 0 1 0 -4.4 0a2.2 2.2 0 1 0 4.4 0M574.26 562.41a2.2 2.2 0 1 0 -4.4 0a2.2 2.2 0 1 0 4.4 0M428.62 552.85a2.2 2.2 0 1 0 -4.4 0a2.2 2.2 0 1 0 4.4 0M527.11 652.63a2.2 2.2 0 1 0 -4.4 0a2.2 2.2 0 1 0 4.4 0M475.07 560.28a2.2 2.2 0 1 0 -4.4 0a2.2 2.2 0 1 0 4.4 0M446.00 622.39a2.2 2.2 0 1 0 -4.4 0a2.2 2.2 0 1 0 4.4 0M440.65 641.85a2.2 2.2 0 1 0 -4.4 0a2.2 2.2 0 1 0 4.4 0M751.87 555.12a2.2 2.2 0 1 0 -4.4 0a2.2 2.2 0 1 0 4.4 0M484.63 555.71a2.2 2.2 0 1 0 -4.4 0a2.2 2.2 0 1 0 4.4 0M450.77 606.61a2.2 2.2 0 1 0 -4.4 0a2.2 2.2 0 1 0 4.4 0M532.24 573.64a2.2 2.2 0 1 0 -4.4 0a2.2 2.2 0 1 0 4.4 0M643.61 624.54a2.2 2.2 0 1 0 -4.4 0a2.2 2.2 0 1 0 4.4 0M488.61 602.62a2.2 2.2 0 1 0 -4.4 0a2.2 2.2 0 1 0 4.4 0M450.18 598.53a2.2 2.2 0 1 0 -4.4 0a2.2 2.2 0 1 0 4.4 0M505.14 609.27a2.2 2.2 0 1 0 -4.4 0a2.2 2.2 0 1 0 4.4 0M510.58 574.00a2.2 2.2 0 1 0 -4.4 0a2.2 2.2 0 1 0 4.4 0M447.14 545.84a2.2 2.2 0 1 0 -4.4 0a2.2 2.2 0 1 0 4.4 0M489.52 614.89a2.2 2.2 0 1 0 -4.4 0a2.2 2.2 0 1 0 4.4 0M475.52 598.39a2.2 2.2 0 1 0 -4.4 0a2.2 2.2 0 1 0 4.4 0M509.94 542.92a2.2 2.2 0 1 0 -4.4 0a2.2 2.2 0 1 0 4.4 0M484.71 607.60a2.2 2.2 0 1 0 -4.4 0a2.2 2.2 0 1 0 4.4 0M560.88 687.55a2.2 2.2 0 1 0 -4.4 0a2.2 2.2 0 1 0 4.4 0M462.02 579.39a2.2 2.2 0 1 0 -4.4 0a2.2 2.2 0 1 0 4.4 0M455.35 625.80a2.2 2.2 0 1 0 -4.4 0a2.2 2.2 0 1 0 4.4 0M462.52 632.36a2.2 2.2 0 1 0 -4.4 0a2.2 2.2 0 1 0 4.4 0M420.52 548.39a2.2 2.2 0 1 0 -4.4 0a2.2 2.2 0 1 0 4.4 0M497.12 514.35a2.2 2.2 0 1 0 -4.4 0a2.2 2.2 0 1 0 4.4 0M436.80 631.98a2.2 2.2 0 1 0 -4.4 0a2.2 2.2 0 1 0 4.4 0M497.88 559.76a2.2 2.2 0 1 0 -4.4 0a2.2 2.2 0 1 0 4.4 0M542.93 598.82a2.2 2.2 0 1 0 -4.4 0a2.2 2.2 0 1 0 4.4 0M498.60 594.01a2.2 2.2 0 1 0 -4.4 0a2.2 2.2 0 1 0 4.4 0M816.93 559.44a2.2 2.2 0 1 0 -4.4 0a2.2 2.2 0 1 0 4.4 0M436.53 589.28a2.2 2.2 0 1 0 -4.4 0a2.2 2.2 0 1 0 4.4 0M428.04 624.57a2.2 2.2 0 1 0 -4.4 0a2.2 2.2 0 1 0 4.4 0M436.95 612.06a2.2 2.2 0 1 0 -4.4 0a2.2 2.2 0 1 0 4.4 0M445.48 574.32a2.2 2.2 0 1 0 -4.4 0a2.2 2.2 0 1 0 4.4 0M562.50 672.58a2.2 2.2 0 1 0 -4.4 0a2.2 2.2 0 1 0 4.4 0M478.27 560.34a2.2 2.2 0 1 0 -4.4 0a2.2 2.2 0 1 0 4.4 0M432.69 649.02a2.2 2.2 0 1 0 -4.4 0a2.2 2.2 0 1 0 4.4 0M498.25 593.29a2.2 2.2 0 1 0 -4.4 0a2.2 2.2 0 1 0 4.4 0M449.14 605.03a2.2 2.2 0 1 0 -4.4 0a2.2 2.2 0 1 0 4.4 0M427.78 554.12a2.2 2.2 0 1 0 -4.4 0a2.2 2.2 0 1 0 4.4 0M763.94 584.59a2.2 2.2 0 1 0 -4.4 0a2.2 2.2 0 1 0 4.4 0M481.41 594.47a2.2 2.2 0 1 0 -4.4 0a2.2 2.2 0 1 0 4.4 0M539.60 569.93a2.2 2.2 0 1 0 -4.4 0a2.2 2.2 0 1 0 4.4 0M550.73 628.41a2.2 2.2 0 1 0 -4.4 0a2.2 2.2 0 1 0 4.4 0M466.70 604.76a2.2 2.2 0 1 0 -4.4 0a2.2 2.2 0 1 0 4.4 0M430.26 556.07a2.2 2.2 0 1 0 -4.4 0a2.2 2.2 0 1 0 4.4 0M545.84 571.73a2.2 2.2 0 1 0 -4.4 0a2.2 2.2 0 1 0 4.4 0M499.02 642.67a2.2 2.2 0 1 0 -4.4 0a2.2 2.2 0 1 0 4.4 0M515.37 573.99a2.2 2.2 0 1 0 -4.4 0a2.2 2.2 0 1 0 4.4 0M473.40 645.60a2.2 2.2 0 1 0 -4.4 0a2.2 2.2 0 1 0 4.4 0M516.44 614.55a2.2 2.2 0 1 0 -4.4 0a2.2 2.2 0 1 0 4.4 0M485.21 554.40a2.2 2.2 0 1 0 -4.4 0a2.2 2.2 0 1 0 4.4 0M743.47 676.13a2.2 2.2 0 1 0 -4.4 0a2.2 2.2 0 1 0 4.4 0M530.41 655.47a2.2 2.2 0 1 0 -4.4 0a2.2 2.2 0 1 0 4.4 0M505.82 555.85a2.2 2.2 0 1 0 -4.4 0a2.2 2.2 0 1 0 4.4 0M461.55 622.72a2.2 2.2 0 1 0 -4.4 0a2.2 2.2 0 1 0 4.4 0M498.68 552.56a2.2 2.2 0 1 0 -4.4 0a2.2 2.2 0 1 0 4.4 0M521.55 601.62a2.2 2.2 0 1 0 -4.4 0a2.2 2.2 0 1 0 4.4 0M558.59 582.22a2.2 2.2 0 1 0 -4.4 0a2.2 2.2 0 1 0 4.4 0M477.53 570.11a2.2 2.2 0 1 0 -4.4 0a2.2 2.2 0 1 0 4.4 0M456.27 617.28a2.2 2.2 0 1 0 -4.4 0a2.2 2.2 0 1 0 4.4 0M558.56 604.10a2.2 2.2 0 1 0 -4.4 0a2.2 2.2 0 1 0 4.4 0M623.20 614.48a2.2 2.2 0 1 0 -4.4 0a2.2 2.2 0 1 0 4.4 0M547.25 505.17a2.2 2.2 0 1 0 -4.4 0a2.2 2.2 0 1 0 4.4 0M555.35 590.74a2.2 2.2 0 1 0 -4.4 0a2.2 2.2 0 1 0 4.4 0M480.83 578.38a2.2 2.2 0 1 0 -4.4 0a2.2 2.2 0 1 0 4.4 0M496.71 606.43a2.2 2.2 0 1 0 -4.4 0a2.2 2.2 0 1 0 4.4 0M478.62 604.48a2.2 2.2 0 1 0 -4.4 0a2.2 2.2 0 1 0 4.4 0M527.99 549.65a2.2 2.2 0 1 0 -4.4 0a2.2 2.2 0 1 0 4.4 0M881.51 615.09a2.2 2.2 0 1 0 -4.4 0a2.2 2.2 0 1 0 4.4 0M484.19 594.50a2.2 2.2 0 1 0 -4.4 0a2.2 2.2 0 1 0 4.4 0M459.93 584.36a2.2 2.2 0 1 0 -4.4 0a2.2 2.2 0 1 0 4.4 0M430.47 611.43a2.2 2.2 0 1 0 -4.4 0a2.2 2.2 0 1 0 4.4 0M423.37 531.20a2.2 2.2 0 1 0 -4.4 0a2.2 2.2 0 1 0 4.4 0M501.19 642.50a2.2 2.2 0 1 0 -4.4 0a2.2 2.2 0 1 0 4.4 0M430.30 530.01a2.2 2.2 0 1 0 -4.4 0a2.2 2.2 0 1 0 4.4 0M547.01 609.19a2.2 2.2 0 1 0 -4.4 0a2.2 2.2 0 1 0 4.4 0M471.75 550.92a2.2 2.2 0 1 0 -4.4 0a2.2 2.2 0 1 0 4.4 0M475.71 666.32a2.2 2.2 0 1 0 -4.4 0a2.2 2.2 0 1 0 4.4 0M497.77 561.74a2.2 2.2 0 1 0 -4.4 0a2.2 2.2 0 1 0 4.4 0M558.08 564.40a2.2 2.2 0 1 0 -4.4 0a2.2 2.2 0 1 0 4.4 0M640.39 635.28a2.2 2.2 0 1 0 -4.4 0a2.2 2.2 0 1 0 4.4 0M421.29 622.44a2.2 2.2 0 1 0 -4.4 0a2.2 2.2 0 1 0 4.4 0M585.07 586.76a2.2 2.2 0 1 0 -4.4 0a2.2 2.2 0 1 0 4.4 0M717.68 552.84a2.2 2.2 0 1 0 -4.4 0a2.2 2.2 0 1 0 4.4 0M476.86 622.31a2.2 2.2 0 1 0 -4.4 0a2.2 2.2 0 1 0 4.4 0M506.32 606.67a2.2 2.2 0 1 0 -4.4 0a2.2 2.2 0 1 0 4.4 0M425.23 544.59a2.2 2.2 0 1 0 -4.4 0a2.2 2.2 0 1 0 4.4 0M433.84 634.85a2.2 2.2 0 1 0 -4.4 0a2.2 2.2 0 1 0 4.4 0M418.69 564.59a2.2 2.2 0 1 0 -4.4 0a2.2 2.2 0 1 0 4.4 0M580.18 579.12a2.2 2.2 0 1 0 -4.4 0a2.2 2.2 0 1 0 4.4 0M479.58 633.86a2.2 2.2 0 1 0 -4.4 0a2.2 2.2 0 1 0 4.4 0M485.47 619.75a2.2 2.2 0 1 0 -4.4 0a2.2 2.2 0 1 0 4.4 0M436.98 570.35a2.2 2.2 0 1 0 -4.4 0a2.2 2.2 0 1 0 4.4 0M454.77 587.63a2.2 2.2 0 1 0 -4.4 0a2.2 2.2 0 1 0 4.4 0M441.05 547.59a2.2 2.2 0 1 0 -4.4 0a2.2 2.2 0 1 0 4.4 0M538.48 615.49a2.2 2.2 0 1 0 -4.4 0a2.2 2.2 0 1 0 4.4 0M449.92 653.77a2.2 2.2 0 1 0 -4.4 0a2.2 2.2 0 1 0 4.4 0M532.68 561.37a2.2 2.2 0 1 0 -4.4 0a2.2 2.2 0 1 0 4.4 0M511.05 614.85a2.2 2.2 0 1 0 -4.4 0a2.2 2.2 0 1 0 4.4 0M498.58 590.17a2.2 2.2 0 1 0 -4.4 0a2.2 2.2 0 1 0 4.4 0M442.91 540.37a2.2 2.2 0 1 0 -4.4 0a2.2 2.2 0 1 0 4.4 0M570.13 601.42a2.2 2.2 0 1 0 -4.4 0a2.2 2.2 0 1 0 4.4 0M448.58 545.95a2.2 2.2 0 1 0 -4.4 0a2.2 2.2 0 1 0 4.4 0M450.05 634.86a2.2 2.2 0 1 0 -4.4 0a2.2 2.2 0 1 0 4.4 0M537.78 562.14a2.2 2.2 0 1 0 -4.4 0a2.2 2.2 0 1 0 4.4 0M494.73 586.23a2.2 2.2 0 1 0 -4.4 0a2.2 2.2 0 1 0 4.4 0M568.85 625.18a2.2 2.2 0 1 0 -4.4 0a2.2 2.2 0 1 0 4.4 0M478.58 642.44a2.2 2.2 0 1 0 -4.4 0a2.2 2.2 0 1 0 4.4 0M570.71 598.00a2.2 2.2 0 1 0 -4.4 0a2.2 2.2 0 1 0 4.4 0M512.11 589.18a2.2 2.2 0 1 0 -4.4 0a2.2 2.2 0 1 0 4.4 0M440.99 586.57a2.2 2.2 0 1 0 -4.4 0a2.2 2.2 0 1 0 4.4 0M435.16 578.51a2.2 2.2 0 1 0 -4.4 0a2.2 2.2 0 1 0 4.4 0M499.48 610.27a2.2 2.2 0 1 0 -4.4 0a2.2 2.2 0 1 0 4.4 0M503.30 616.41a2.2 2.2 0 1 0 -4.4 0a2.2 2.2 0 1 0 4.4 0M480.49 591.33a2.2 2.2 0 1 0 -4.4 0a2.2 2.2 0 1 0 4.4 0M491.84 613.87a2.2 2.2 0 1 0 -4.4 0a2.2 2.2 0 1 0 4.4 0M461.35 553.69a2.2 2.2 0 1 0 -4.4 0a2.2 2.2 0 1 0 4.4 0M541.23 594.46a2.2 2.2 0 1 0 -4.4 0a2.2 2.2 0 1 0 4.4 0M419.01 617.72a2.2 2.2 0 1 0 -4.4 0a2.2 2.2 0 1 0 4.4 0M469.03 660.09a2.2 2.2 0 1 0 -4.4 0a2.2 2.2 0 1 0 4.4 0M664.92 623.59a2.2 2.2 0 1 0 -4.4 0a2.2 2.2 0 1 0 4.4 0M503.87 528.70a2.2 2.2 0 1 0 -4.4 0a2.2 2.2 0 1 0 4.4 0M418.71 616.04a2.2 2.2 0 1 0 -4.4 0a2.2 2.2 0 1 0 4.4 0M479.22 624.26a2.2 2.2 0 1 0 -4.4 0a2.2 2.2 0 1 0 4.4 0M447.63 573.72a2.2 2.2 0 1 0 -4.4 0a2.2 2.2 0 1 0 4.4 0M524.33 579.14a2.2 2.2 0 1 0 -4.4 0a2.2 2.2 0 1 0 4.4 0M455.75 570.31a2.2 2.2 0 1 0 -4.4 0a2.2 2.2 0 1 0 4.4 0M463.73 608.15a2.2 2.2 0 1 0 -4.4 0a2.2 2.2 0 1 0 4.4 0M453.04 560.81a2.2 2.2 0 1 0 -4.4 0a2.2 2.2 0 1 0 4.4 0M419.91 636.56a2.2 2.2 0 1 0 -4.4 0a2.2 2.2 0 1 0 4.4 0M431.19 598.33a2.2 2.2 0 1 0 -4.4 0a2.2 2.2 0 1 0 4.4 0M469.57 622.78a2.2 2.2 0 1 0 -4.4 0a2.2 2.2 0 1 0 4.4 0M434.38 573.75a2.2 2.2 0 1 0 -4.4 0a2.2 2.2 0 1 0 4.4 0M496.33 591.42a2.2 2.2 0 1 0 -4.4 0a2.2 2.2 0 1 0 4.4 0M428.47 560.06a2.2 2.2 0 1 0 -4.4 0a2.2 2.2 0 1 0 4.4 0M482.71 529.57a2.2 2.2 0 1 0 -4.4 0a2.2 2.2 0 1 0 4.4 0M474.92 591.70a2.2 2.2 0 1 0 -4.4 0a2.2 2.2 0 1 0 4.4 0M479.37 612.44a2.2 2.2 0 1 0 -4.4 0a2.2 2.2 0 1 0 4.4 0M542.54 625.03a2.2 2.2 0 1 0 -4.4 0a2.2 2.2 0 1 0 4.4 0M494.82 602.97a2.2 2.2 0 1 0 -4.4 0a2.2 2.2 0 1 0 4.4 0M512.32 597.68a2.2 2.2 0 1 0 -4.4 0a2.2 2.2 0 1 0 4.4 0M425.35 528.96a2.2 2.2 0 1 0 -4.4 0a2.2 2.2 0 1 0 4.4 0M542.08 637.49a2.2 2.2 0 1 0 -4.4 0a2.2 2.2 0 1 0 4.4 0M499.51 633.70a2.2 2.2 0 1 0 -4.4 0a2.2 2.2 0 1 0 4.4 0M431.88 611.79a2.2 2.2 0 1 0 -4.4 0a2.2 2.2 0 1 0 4.4 0M528.60 580.32a2.2 2.2 0 1 0 -4.4 0a2.2 2.2 0 1 0 4.4 0M418.41 568.93a2.2 2.2 0 1 0 -4.4 0a2.2 2.2 0 1 0 4.4 0M677.49 625.08a2.2 2.2 0 1 0 -4.4 0a2.2 2.2 0 1 0 4.4 0M535.50 589.78a2.2 2.2 0 1 0 -4.4 0a2.2 2.2 0 1 0 4.4 0M478.25 596.04a2.2 2.2 0 1 0 -4.4 0a2.2 2.2 0 1 0 4.4 0M464.87 556.69a2.2 2.2 0 1 0 -4.4 0a2.2 2.2 0 1 0 4.4 0M510.01 562.41a2.2 2.2 0 1 0 -4.4 0a2.2 2.2 0 1 0 4.4 0M506.22 609.04a2.2 2.2 0 1 0 -4.4 0a2.2 2.2 0 1 0 4.4 0M473.88 596.81a2.2 2.2 0 1 0 -4.4 0a2.2 2.2 0 1 0 4.4 0M490.02 574.71a2.2 2.2 0 1 0 -4.4 0a2.2 2.2 0 1 0 4.4 0M466.47 652.02a2.2 2.2 0 1 0 -4.4 0a2.2 2.2 0 1 0 4.4 0M523.40 610.50a2.2 2.2 0 1 0 -4.4 0a2.2 2.2 0 1 0 4.4 0M463.75 576.27a2.2 2.2 0 1 0 -4.4 0a2.2 2.2 0 1 0 4.4 0M536.49 614.11a2.2 2.2 0 1 0 -4.4 0a2.2 2.2 0 1 0 4.4 0M490.60 600.92a2.2 2.2 0 1 0 -4.4 0a2.2 2.2 0 1 0 4.4 0M544.20 597.73a2.2 2.2 0 1 0 -4.4 0a2.2 2.2 0 1 0 4.4 0M686.10 616.47a2.2 2.2 0 1 0 -4.4 0a2.2 2.2 0 1 0 4.4 0M480.15 630.63a2.2 2.2 0 1 0 -4.4 0a2.2 2.2 0 1 0 4.4 0M453.16 602.25a2.2 2.2 0 1 0 -4.4 0a2.2 2.2 0 1 0 4.4 0M507.03 609.09a2.2 2.2 0 1 0 -4.4 0a2.2 2.2 0 1 0 4.4 0M472.70 566.61a2.2 2.2 0 1 0 -4.4 0a2.2 2.2 0 1 0 4.4 0M424.36 544.50a2.2 2.2 0 1 0 -4.4 0a2.2 2.2 0 1 0 4.4 0M593.16 595.04a2.2 2.2 0 1 0 -4.4 0a2.2 2.2 0 1 0 4.4 0M520.26 586.46a2.2 2.2 0 1 0 -4.4 0a2.2 2.2 0 1 0 4.4 0M418.96 599.23a2.2 2.2 0 1 0 -4.4 0a2.2 2.2 0 1 0 4.4 0M479.52 576.68a2.2 2.2 0 1 0 -4.4 0a2.2 2.2 0 1 0 4.4 0M420.25 589.81a2.2 2.2 0 1 0 -4.4 0a2.2 2.2 0 1 0 4.4 0M472.95 589.32a2.2 2.2 0 1 0 -4.4 0a2.2 2.2 0 1 0 4.4 0M467.66 560.38a2.2 2.2 0 1 0 -4.4 0a2.2 2.2 0 1 0 4.4 0M502.23 630.21a2.2 2.2 0 1 0 -4.4 0a2.2 2.2 0 1 0 4.4 0M474.64 549.96a2.2 2.2 0 1 0 -4.4 0a2.2 2.2 0 1 0 4.4 0M519.30 581.98a2.2 2.2 0 1 0 -4.4 0a2.2 2.2 0 1 0 4.4 0M484.09 593.02a2.2 2.2 0 1 0 -4.4 0a2.2 2.2 0 1 0 4.4 0M477.01 616.61a2.2 2.2 0 1 0 -4.4 0a2.2 2.2 0 1 0 4.4 0M557.53 599.89a2.2 2.2 0 1 0 -4.4 0a2.2 2.2 0 1 0 4.4 0M452.44 582.54a2.2 2.2 0 1 0 -4.4 0a2.2 2.2 0 1 0 4.4 0M511.12 665.92a2.2 2.2 0 1 0 -4.4 0a2.2 2.2 0 1 0 4.4 0M473.32 618.01a2.2 2.2 0 1 0 -4.4 0a2.2 2.2 0 1 0 4.4 0M459.29 575.13a2.2 2.2 0 1 0 -4.4 0a2.2 2.2 0 1 0 4.4 0M518.00 609.78a2.2 2.2 0 1 0 -4.4 0a2.2 2.2 0 1 0 4.4 0M451.96 625.12a2.2 2.2 0 1 0 -4.4 0a2.2 2.2 0 1 0 4.4 0M423.20 617.57a2.2 2.2 0 1 0 -4.4 0a2.2 2.2 0 1 0 4.4 0M503.82 588.62a2.2 2.2 0 1 0 -4.4 0a2.2 2.2 0 1 0 4.4 0M621.51 648.06a2.2 2.2 0 1 0 -4.4 0a2.2 2.2 0 1 0 4.4 0M558.97 564.67a2.2 2.2 0 1 0 -4.4 0a2.2 2.2 0 1 0 4.4 0M511.58 668.72a2.2 2.2 0 1 0 -4.4 0a2.2 2.2 0 1 0 4.4 0M532.42 616.42a2.2 2.2 0 1 0 -4.4 0a2.2 2.2 0 1 0 4.4 0M454.21 624.20a2.2 2.2 0 1 0 -4.4 0a2.2 2.2 0 1 0 4.4 0M455.04 640.39a2.2 2.2 0 1 0 -4.4 0a2.2 2.2 0 1 0 4.4 0M502.81 632.27a2.2 2.2 0 1 0 -4.4 0a2.2 2.2 0 1 0 4.4 0M600.64 592.15a2.2 2.2 0 1 0 -4.4 0a2.2 2.2 0 1 0 4.4 0M496.30 598.87a2.2 2.2 0 1 0 -4.4 0a2.2 2.2 0 1 0 4.4 0M468.75 609.03a2.2 2.2 0 1 0 -4.4 0a2.2 2.2 0 1 0 4.4 0M422.96 675.83a2.2 2.2 0 1 0 -4.4 0a2.2 2.2 0 1 0 4.4 0M521.88 642.18a2.2 2.2 0 1 0 -4.4 0a2.2 2.2 0 1 0 4.4 0M503.42 603.82a2.2 2.2 0 1 0 -4.4 0a2.2 2.2 0 1 0 4.4 0M433.02 625.47a2.2 2.2 0 1 0 -4.4 0a2.2 2.2 0 1 0 4.4 0M504.81 626.02a2.2 2.2 0 1 0 -4.4 0a2.2 2.2 0 1 0 4.4 0M785.30 566.98a2.2 2.2 0 1 0 -4.4 0a2.2 2.2 0 1 0 4.4 0M472.89 590.94a2.2 2.2 0 1 0 -4.4 0a2.2 2.2 0 1 0 4.4 0M456.87 630.86a2.2 2.2 0 1 0 -4.4 0a2.2 2.2 0 1 0 4.4 0M503.19 612.07a2.2 2.2 0 1 0 -4.4 0a2.2 2.2 0 1 0 4.4 0M479.37 604.58a2.2 2.2 0 1 0 -4.4 0a2.2 2.2 0 1 0 4.4 0M545.81 623.17a2.2 2.2 0 1 0 -4.4 0a2.2 2.2 0 1 0 4.4 0M418.95 629.60a2.2 2.2 0 1 0 -4.4 0a2.2 2.2 0 1 0 4.4 0M638.08 603.28a2.2 2.2 0 1 0 -4.4 0a2.2 2.2 0 1 0 4.4 0M530.99 570.49a2.2 2.2 0 1 0 -4.4 0a2.2 2.2 0 1 0 4.4 0M597.51 584.95a2.2 2.2 0 1 0 -4.4 0a2.2 2.2 0 1 0 4.4 0M510.10 600.71a2.2 2.2 0 1 0 -4.4 0a2.2 2.2 0 1 0 4.4 0M425.77 584.21a2.2 2.2 0 1 0 -4.4 0a2.2 2.2 0 1 0 4.4 0M426.10 569.77a2.2 2.2 0 1 0 -4.4 0a2.2 2.2 0 1 0 4.4 0M608.67 605.78a2.2 2.2 0 1 0 -4.4 0a2.2 2.2 0 1 0 4.4 0M520.72 578.80a2.2 2.2 0 1 0 -4.4 0a2.2 2.2 0 1 0 4.4 0M480.74 634.94a2.2 2.2 0 1 0 -4.4 0a2.2 2.2 0 1 0 4.4 0M449.55 607.01a2.2 2.2 0 1 0 -4.4 0a2.2 2.2 0 1 0 4.4 0M559.29 612.90a2.2 2.2 0 1 0 -4.4 0a2.2 2.2 0 1 0 4.4 0M437.29 591.36a2.2 2.2 0 1 0 -4.4 0a2.2 2.2 0 1 0 4.4 0M452.26 586.52a2.2 2.2 0 1 0 -4.4 0a2.2 2.2 0 1 0 4.4 0M457.50 602.56a2.2 2.2 0 1 0 -4.4 0a2.2 2.2 0 1 0 4.4 0M499.83 624.65a2.2 2.2 0 1 0 -4.4 0a2.2 2.2 0 1 0 4.4 0M629.46 623.84a2.2 2.2 0 1 0 -4.4 0a2.2 2.2 0 1 0 4.4 0M422.75 587.22a2.2 2.2 0 1 0 -4.4 0a2.2 2.2 0 1 0 4.4 0M469.80 549.10a2.2 2.2 0 1 0 -4.4 0a2.2 2.2 0 1 0 4.4 0M766.75 629.39a2.2 2.2 0 1 0 -4.4 0a2.2 2.2 0 1 0 4.4 0M482.79 609.77a2.2 2.2 0 1 0 -4.4 0a2.2 2.2 0 1 0 4.4 0M444.23 587.31a2.2 2.2 0 1 0 -4.4 0a2.2 2.2 0 1 0 4.4 0M488.07 618.01a2.2 2.2 0 1 0 -4.4 0a2.2 2.2 0 1 0 4.4 0M621.00 591.06a2.2 2.2 0 1 0 -4.4 0a2.2 2.2 0 1 0 4.4 0M605.22 602.51a2.2 2.2 0 1 0 -4.4 0a2.2 2.2 0 1 0 4.4 0M485.75 621.42a2.2 2.2 0 1 0 -4.4 0a2.2 2.2 0 1 0 4.4 0M469.83 566.57a2.2 2.2 0 1 0 -4.4 0a2.2 2.2 0 1 0 4.4 0M439.81 568.57a2.2 2.2 0 1 0 -4.4 0a2.2 2.2 0 1 0 4.4 0M492.81 564.81a2.2 2.2 0 1 0 -4.4 0a2.2 2.2 0 1 0 4.4 0M456.97 552.27a2.2 2.2 0 1 0 -4.4 0a2.2 2.2 0 1 0 4.4 0M458.18 612.81a2.2 2.2 0 1 0 -4.4 0a2.2 2.2 0 1 0 4.4 0M526.84 613.64a2.2 2.2 0 1 0 -4.4 0a2.2 2.2 0 1 0 4.4 0M523.68 590.22a2.2 2.2 0 1 0 -4.4 0a2.2 2.2 0 1 0 4.4 0M729.32 570.07a2.2 2.2 0 1 0 -4.4 0a2.2 2.2 0 1 0 4.4 0M456.18 610.19a2.2 2.2 0 1 0 -4.4 0a2.2 2.2 0 1 0 4.4 0M613.83 615.58a2.2 2.2 0 1 0 -4.4 0a2.2 2.2 0 1 0 4.4 0M463.97 615.95a2.2 2.2 0 1 0 -4.4 0a2.2 2.2 0 1 0 4.4 0M422.39 546.16a2.2 2.2 0 1 0 -4.4 0a2.2 2.2 0 1 0 4.4 0M607.84 682.96a2.2 2.2 0 1 0 -4.4 0a2.2 2.2 0 1 0 4.4 0M672.05 605.14a2.2 2.2 0 1 0 -4.4 0a2.2 2.2 0 1 0 4.4 0M502.69 597.02a2.2 2.2 0 1 0 -4.4 0a2.2 2.2 0 1 0 4.4 0M481.74 630.78a2.2 2.2 0 1 0 -4.4 0a2.2 2.2 0 1 0 4.4 0M445.41 583.05a2.2 2.2 0 1 0 -4.4 0a2.2 2.2 0 1 0 4.4 0M430.29 664.11a2.2 2.2 0 1 0 -4.4 0a2.2 2.2 0 1 0 4.4 0M474.78 565.61a2.2 2.2 0 1 0 -4.4 0a2.2 2.2 0 1 0 4.4 0M524.94 653.89a2.2 2.2 0 1 0 -4.4 0a2.2 2.2 0 1 0 4.4 0M538.39 669.55a2.2 2.2 0 1 0 -4.4 0a2.2 2.2 0 1 0 4.4 0M490.90 620.46a2.2 2.2 0 1 0 -4.4 0a2.2 2.2 0 1 0 4.4 0M544.83 593.61a2.2 2.2 0 1 0 -4.4 0a2.2 2.2 0 1 0 4.4 0M499.33 618.03a2.2 2.2 0 1 0 -4.4 0a2.2 2.2 0 1 0 4.4 0M586.05 618.93a2.2 2.2 0 1 0 -4.4 0a2.2 2.2 0 1 0 4.4 0M452.53 585.56a2.2 2.2 0 1 0 -4.4 0a2.2 2.2 0 1 0 4.4 0M445.09 631.42a2.2 2.2 0 1 0 -4.4 0a2.2 2.2 0 1 0 4.4 0M560.04 596.55a2.2 2.2 0 1 0 -4.4 0a2.2 2.2 0 1 0 4.4 0M645.57 584.76a2.2 2.2 0 1 0 -4.4 0a2.2 2.2 0 1 0 4.4 0M494.83 542.64a2.2 2.2 0 1 0 -4.4 0a2.2 2.2 0 1 0 4.4 0M512.75 580.68a2.2 2.2 0 1 0 -4.4 0a2.2 2.2 0 1 0 4.4 0M636.10 540.24a2.2 2.2 0 1 0 -4.4 0a2.2 2.2 0 1 0 4.4 0M463.44 579.86a2.2 2.2 0 1 0 -4.4 0a2.2 2.2 0 1 0 4.4 0M457.34 598.94a2.2 2.2 0 1 0 -4.4 0a2.2 2.2 0 1 0 4.4 0M474.69 670.66a2.2 2.2 0 1 0 -4.4 0a2.2 2.2 0 1 0 4.4 0M452.87 637.80a2.2 2.2 0 1 0 -4.4 0a2.2 2.2 0 1 0 4.4 0M556.12 604.77a2.2 2.2 0 1 0 -4.4 0a2.2 2.2 0 1 0 4.4 0M431.46 573.09a2.2 2.2 0 1 0 -4.4 0a2.2 2.2 0 1 0 4.4 0M490.19 605.27a2.2 2.2 0 1 0 -4.4 0a2.2 2.2 0 1 0 4.4 0M532.08 575.12a2.2 2.2 0 1 0 -4.4 0a2.2 2.2 0 1 0 4.4 0M617.41 629.71a2.2 2.2 0 1 0 -4.4 0a2.2 2.2 0 1 0 4.4 0M471.89 605.22a2.2 2.2 0 1 0 -4.4 0a2.2 2.2 0 1 0 4.4 0M657.38 593.61a2.2 2.2 0 1 0 -4.4 0a2.2 2.2 0 1 0 4.4 0M436.00 609.51a2.2 2.2 0 1 0 -4.4 0a2.2 2.2 0 1 0 4.4 0M423.26 592.42a2.2 2.2 0 1 0 -4.4 0a2.2 2.2 0 1 0 4.4 0M420.23 619.95a2.2 2.2 0 1 0 -4.4 0a2.2 2.2 0 1 0 4.4 0M432.95 583.00a2.2 2.2 0 1 0 -4.4 0a2.2 2.2 0 1 0 4.4 0M538.54 596.51a2.2 2.2 0 1 0 -4.4 0a2.2 2.2 0 1 0 4.4 0M544.16 598.07a2.2 2.2 0 1 0 -4.4 0a2.2 2.2 0 1 0 4.4 0M479.88 662.25a2.2 2.2 0 1 0 -4.4 0a2.2 2.2 0 1 0 4.4 0M471.16 619.75a2.2 2.2 0 1 0 -4.4 0a2.2 2.2 0 1 0 4.4 0M497.87 647.18a2.2 2.2 0 1 0 -4.4 0a2.2 2.2 0 1 0 4.4 0M513.12 649.65a2.2 2.2 0 1 0 -4.4 0a2.2 2.2 0 1 0 4.4 0M706.32 616.02a2.2 2.2 0 1 0 -4.4 0a2.2 2.2 0 1 0 4.4 0M479.66 604.25a2.2 2.2 0 1 0 -4.4 0a2.2 2.2 0 1 0 4.4 0M570.53 590.97a2.2 2.2 0 1 0 -4.4 0a2.2 2.2 0 1 0 4.4 0M466.25 561.20a2.2 2.2 0 1 0 -4.4 0a2.2 2.2 0 1 0 4.4 0M442.12 583.07a2.2 2.2 0 1 0 -4.4 0a2.2 2.2 0 1 0 4.4 0M428.02 561.72a2.2 2.2 0 1 0 -4.4 0a2.2 2.2 0 1 0 4.4 0M472.93 612.28a2.2 2.2 0 1 0 -4.4 0a2.2 2.2 0 1 0 4.4 0M542.56 610.01a2.2 2.2 0 1 0 -4.4 0a2.2 2.2 0 1 0 4.4 0M566.08 563.46a2.2 2.2 0 1 0 -4.4 0a2.2 2.2 0 1 0 4.4 0M492.43 598.22a2.2 2.2 0 1 0 -4.4 0a2.2 2.2 0 1 0 4.4 0M455.10 655.11a2.2 2.2 0 1 0 -4.4 0a2.2 2.2 0 1 0 4.4 0M462.13 625.07a2.2 2.2 0 1 0 -4.4 0a2.2 2.2 0 1 0 4.4 0M529.08 563.23a2.2 2.2 0 1 0 -4.4 0a2.2 2.2 0 1 0 4.4 0M521.34 616.82a2.2 2.2 0 1 0 -4.4 0a2.2 2.2 0 1 0 4.4 0M752.65 591.16a2.2 2.2 0 1 0 -4.4 0a2.2 2.2 0 1 0 4.4 0M461.96 595.70a2.2 2.2 0 1 0 -4.4 0a2.2 2.2 0 1 0 4.4 0M499.21 610.77a2.2 2.2 0 1 0 -4.4 0a2.2 2.2 0 1 0 4.4 0M559.13 605.25a2.2 2.2 0 1 0 -4.4 0a2.2 2.2 0 1 0 4.4 0M451.85 585.46a2.2 2.2 0 1 0 -4.4 0a2.2 2.2 0 1 0 4.4 0M545.00 593.31a2.2 2.2 0 1 0 -4.4 0a2.2 2.2 0 1 0 4.4 0M812.08 551.72a2.2 2.2 0 1 0 -4.4 0a2.2 2.2 0 1 0 4.4 0M467.76 603.02a2.2 2.2 0 1 0 -4.4 0a2.2 2.2 0 1 0 4.4 0M471.94 629.20a2.2 2.2 0 1 0 -4.4 0a2.2 2.2 0 1 0 4.4 0M432.65 590.82a2.2 2.2 0 1 0 -4.4 0a2.2 2.2 0 1 0 4.4 0M670.22 577.66a2.2 2.2 0 1 0 -4.4 0a2.2 2.2 0 1 0 4.4 0M444.57 521.11a2.2 2.2 0 1 0 -4.4 0a2.2 2.2 0 1 0 4.4 0M558.07 616.25a2.2 2.2 0 1 0 -4.4 0a2.2 2.2 0 1 0 4.4 0M532.80 607.98a2.2 2.2 0 1 0 -4.4 0a2.2 2.2 0 1 0 4.4 0M427.36 567.26a2.2 2.2 0 1 0 -4.4 0a2.2 2.2 0 1 0 4.4 0M544.66 555.40a2.2 2.2 0 1 0 -4.4 0a2.2 2.2 0 1 0 4.4 0M524.29 619.25a2.2 2.2 0 1 0 -4.4 0a2.2 2.2 0 1 0 4.4 0M472.35 574.82a2.2 2.2 0 1 0 -4.4 0a2.2 2.2 0 1 0 4.4 0M526.35 618.83a2.2 2.2 0 1 0 -4.4 0a2.2 2.2 0 1 0 4.4 0M472.69 629.88a2.2 2.2 0 1 0 -4.4 0a2.2 2.2 0 1 0 4.4 0M446.28 574.13a2.2 2.2 0 1 0 -4.4 0a2.2 2.2 0 1 0 4.4 0M584.95 592.65a2.2 2.2 0 1 0 -4.4 0a2.2 2.2 0 1 0 4.4 0M420.23 584.16a2.2 2.2 0 1 0 -4.4 0a2.2 2.2 0 1 0 4.4 0M418.39 616.65a2.2 2.2 0 1 0 -4.4 0a2.2 2.2 0 1 0 4.4 0M430.88 536.00a2.2 2.2 0 1 0 -4.4 0a2.2 2.2 0 1 0 4.4 0M613.29 570.25a2.2 2.2 0 1 0 -4.4 0a2.2 2.2 0 1 0 4.4 0M558.78 608.57a2.2 2.2 0 1 0 -4.4 0a2.2 2.2 0 1 0 4.4 0M490.71 570.67a2.2 2.2 0 1 0 -4.4 0a2.2 2.2 0 1 0 4.4 0M442.87 637.82a2.2 2.2 0 1 0 -4.4 0a2.2 2.2 0 1 0 4.4 0M436.72 601.28a2.2 2.2 0 1 0 -4.4 0a2.2 2.2 0 1 0 4.4 0M426.93 548.94a2.2 2.2 0 1 0 -4.4 0a2.2 2.2 0 1 0 4.4 0M590.44 606.74a2.2 2.2 0 1 0 -4.4 0a2.2 2.2 0 1 0 4.4 0M633.62 568.28a2.2 2.2 0 1 0 -4.4 0a2.2 2.2 0 1 0 4.4 0M436.61 603.25a2.2 2.2 0 1 0 -4.4 0a2.2 2.2 0 1 0 4.4 0M623.36 678.86a2.2 2.2 0 1 0 -4.4 0a2.2 2.2 0 1 0 4.4 0M491.71 627.73a2.2 2.2 0 1 0 -4.4 0a2.2 2.2 0 1 0 4.4 0M506.46 590.10a2.2 2.2 0 1 0 -4.4 0a2.2 2.2 0 1 0 4.4 0M471.79 547.78a2.2 2.2 0 1 0 -4.4 0a2.2 2.2 0 1 0 4.4 0M477.51 615.54a2.2 2.2 0 1 0 -4.4 0a2.2 2.2 0 1 0 4.4 0M516.38 587.85a2.2 2.2 0 1 0 -4.4 0a2.2 2.2 0 1 0 4.4 0M539.83 626.39a2.2 2.2 0 1 0 -4.4 0a2.2 2.2 0 1 0 4.4 0M556.74 627.62a2.2 2.2 0 1 0 -4.4 0a2.2 2.2 0 1 0 4.4 0M491.23 622.25a2.2 2.2 0 1 0 -4.4 0a2.2 2.2 0 1 0 4.4 0M686.02 555.59a2.2 2.2 0 1 0 -4.4 0a2.2 2.2 0 1 0 4.4 0M508.86 562.16a2.2 2.2 0 1 0 -4.4 0a2.2 2.2 0 1 0 4.4 0M469.17 577.89a2.2 2.2 0 1 0 -4.4 0a2.2 2.2 0 1 0 4.4 0M430.27 558.12a2.2 2.2 0 1 0 -4.4 0a2.2 2.2 0 1 0 4.4 0M450.89 610.53a2.2 2.2 0 1 0 -4.4 0a2.2 2.2 0 1 0 4.4 0M454.28 572.22a2.2 2.2 0 1 0 -4.4 0a2.2 2.2 0 1 0 4.4 0M436.33 590.51a2.2 2.2 0 1 0 -4.4 0a2.2 2.2 0 1 0 4.4 0M525.44 631.38a2.2 2.2 0 1 0 -4.4 0a2.2 2.2 0 1 0 4.4 0M459.35 622.97a2.2 2.2 0 1 0 -4.4 0a2.2 2.2 0 1 0 4.4 0M516.07 592.29a2.2 2.2 0 1 0 -4.4 0a2.2 2.2 0 1 0 4.4 0M767.61 584.00a2.2 2.2 0 1 0 -4.4 0a2.2 2.2 0 1 0 4.4 0M562.70 604.97a2.2 2.2 0 1 0 -4.4 0a2.2 2.2 0 1 0 4.4 0M504.85 631.35a2.2 2.2 0 1 0 -4.4 0a2.2 2.2 0 1 0 4.4 0M696.16 672.89a2.2 2.2 0 1 0 -4.4 0a2.2 2.2 0 1 0 4.4 0M846.92 575.89a2.2 2.2 0 1 0 -4.4 0a2.2 2.2 0 1 0 4.4 0M510.74 606.59a2.2 2.2 0 1 0 -4.4 0a2.2 2.2 0 1 0 4.4 0M733.51 572.63a2.2 2.2 0 1 0 -4.4 0a2.2 2.2 0 1 0 4.4 0M424.11 648.40a2.2 2.2 0 1 0 -4.4 0a2.2 2.2 0 1 0 4.4 0M550.70 636.93a2.2 2.2 0 1 0 -4.4 0a2.2 2.2 0 1 0 4.4 0M494.44 599.70a2.2 2.2 0 1 0 -4.4 0a2.2 2.2 0 1 0 4.4 0M512.78 642.40a2.2 2.2 0 1 0 -4.4 0a2.2 2.2 0 1 0 4.4 0M421.06 663.53a2.2 2.2 0 1 0 -4.4 0a2.2 2.2 0 1 0 4.4 0M442.21 570.16a2.2 2.2 0 1 0 -4.4 0a2.2 2.2 0 1 0 4.4 0M420.41 566.54a2.2 2.2 0 1 0 -4.4 0a2.2 2.2 0 1 0 4.4 0M542.22 628.54a2.2 2.2 0 1 0 -4.4 0a2.2 2.2 0 1 0 4.4 0M514.96 607.74a2.2 2.2 0 1 0 -4.4 0a2.2 2.2 0 1 0 4.4 0M643.18 639.94a2.2 2.2 0 1 0 -4.4 0a2.2 2.2 0 1 0 4.4 0M420.56 586.47a2.2 2.2 0 1 0 -4.4 0a2.2 2.2 0 1 0 4.4 0M445.61 597.35a2.2 2.2 0 1 0 -4.4 0a2.2 2.2 0 1 0 4.4 0M458.51 624.39a2.2 2.2 0 1 0 -4.4 0a2.2 2.2 0 1 0 4.4 0M447.91 622.30a2.2 2.2 0 1 0 -4.4 0a2.2 2.2 0 1 0 4.4 0M557.80 635.71a2.2 2.2 0 1 0 -4.4 0a2.2 2.2 0 1 0 4.4 0M438.72 581.95a2.2 2.2 0 1 0 -4.4 0a2.2 2.2 0 1 0 4.4 0M463.76 575.45a2.2 2.2 0 1 0 -4.4 0a2.2 2.2 0 1 0 4.4 0M512.37 582.31a2.2 2.2 0 1 0 -4.4 0a2.2 2.2 0 1 0 4.4 0M445.04 625.11a2.2 2.2 0 1 0 -4.4 0a2.2 2.2 0 1 0 4.4 0M454.03 658.53a2.2 2.2 0 1 0 -4.4 0a2.2 2.2 0 1 0 4.4 0M519.15 576.26a2.2 2.2 0 1 0 -4.4 0a2.2 2.2 0 1 0 4.4 0M660.10 604.70a2.2 2.2 0 1 0 -4.4 0a2.2 2.2 0 1 0 4.4 0M436.50 598.65a2.2 2.2 0 1 0 -4.4 0a2.2 2.2 0 1 0 4.4 0M428.69 560.98a2.2 2.2 0 1 0 -4.4 0a2.2 2.2 0 1 0 4.4 0M543.58 629.95a2.2 2.2 0 1 0 -4.4 0a2.2 2.2 0 1 0 4.4 0M422.04 557.87a2.2 2.2 0 1 0 -4.4 0a2.2 2.2 0 1 0 4.4 0M641.41 608.28a2.2 2.2 0 1 0 -4.4 0a2.2 2.2 0 1 0 4.4 0M455.47 621.77a2.2 2.2 0 1 0 -4.4 0a2.2 2.2 0 1 0 4.4 0M519.73 603.06a2.2 2.2 0 1 0 -4.4 0a2.2 2.2 0 1 0 4.4 0M505.27 581.62a2.2 2.2 0 1 0 -4.4 0a2.2 2.2 0 1 0 4.4 0M440.19 603.85a2.2 2.2 0 1 0 -4.4 0a2.2 2.2 0 1 0 4.4 0M467.03 625.11a2.2 2.2 0 1 0 -4.4 0a2.2 2.2 0 1 0 4.4 0M481.18 605.33a2.2 2.2 0 1 0 -4.4 0a2.2 2.2 0 1 0 4.4 0M485.00 681.62a2.2 2.2 0 1 0 -4.4 0a2.2 2.2 0 1 0 4.4 0M608.01 617.83a2.2 2.2 0 1 0 -4.4 0a2.2 2.2 0 1 0 4.4 0M569.64 585.13a2.2 2.2 0 1 0 -4.4 0a2.2 2.2 0 1 0 4.4 0M439.03 604.01a2.2 2.2 0 1 0 -4.4 0a2.2 2.2 0 1 0 4.4 0M528.15 573.28a2.2 2.2 0 1 0 -4.4 0a2.2 2.2 0 1 0 4.4 0M715.14 582.78a2.2 2.2 0 1 0 -4.4 0a2.2 2.2 0 1 0 4.4 0M630.49 579.61a2.2 2.2 0 1 0 -4.4 0a2.2 2.2 0 1 0 4.4 0M528.61 577.24a2.2 2.2 0 1 0 -4.4 0a2.2 2.2 0 1 0 4.4 0M504.71 653.65a2.2 2.2 0 1 0 -4.4 0a2.2 2.2 0 1 0 4.4 0M457.71 598.43a2.2 2.2 0 1 0 -4.4 0a2.2 2.2 0 1 0 4.4 0M467.65 540.64a2.2 2.2 0 1 0 -4.4 0a2.2 2.2 0 1 0 4.4 0M423.10 612.34a2.2 2.2 0 1 0 -4.4 0a2.2 2.2 0 1 0 4.4 0M494.60 583.06a2.2 2.2 0 1 0 -4.4 0a2.2 2.2 0 1 0 4.4 0M452.90 590.14a2.2 2.2 0 1 0 -4.4 0a2.2 2.2 0 1 0 4.4 0M426.43 577.53a2.2 2.2 0 1 0 -4.4 0a2.2 2.2 0 1 0 4.4 0M440.81 607.40a2.2 2.2 0 1 0 -4.4 0a2.2 2.2 0 1 0 4.4 0M444.18 617.66a2.2 2.2 0 1 0 -4.4 0a2.2 2.2 0 1 0 4.4 0M515.76 594.37a2.2 2.2 0 1 0 -4.4 0a2.2 2.2 0 1 0 4.4 0M492.27 588.07a2.2 2.2 0 1 0 -4.4 0a2.2 2.2 0 1 0 4.4 0M440.72 604.60a2.2 2.2 0 1 0 -4.4 0a2.2 2.2 0 1 0 4.4 0M483.36 593.40a2.2 2.2 0 1 0 -4.4 0a2.2 2.2 0 1 0 4.4 0M575.68 579.42a2.2 2.2 0 1 0 -4.4 0a2.2 2.2 0 1 0 4.4 0M457.16 623.34a2.2 2.2 0 1 0 -4.4 0a2.2 2.2 0 1 0 4.4 0M424.60 558.46a2.2 2.2 0 1 0 -4.4 0a2.2 2.2 0 1 0 4.4 0M432.56 522.25a2.2 2.2 0 1 0 -4.4 0a2.2 2.2 0 1 0 4.4 0M710.88 543.88a2.2 2.2 0 1 0 -4.4 0a2.2 2.2 0 1 0 4.4 0M425.16 611.95a2.2 2.2 0 1 0 -4.4 0a2.2 2.2 0 1 0 4.4 0M525.47 660.13a2.2 2.2 0 1 0 -4.4 0a2.2 2.2 0 1 0 4.4 0M802.66 601.20a2.2 2.2 0 1 0 -4.4 0a2.2 2.2 0 1 0 4.4 0M537.50 569.86a2.2 2.2 0 1 0 -4.4 0a2.2 2.2 0 1 0 4.4 0M443.86 571.43a2.2 2.2 0 1 0 -4.4 0a2.2 2.2 0 1 0 4.4 0M475.97 638.99a2.2 2.2 0 1 0 -4.4 0a2.2 2.2 0 1 0 4.4 0M510.98 635.19a2.2 2.2 0 1 0 -4.4 0a2.2 2.2 0 1 0 4.4 0M521.04 589.64a2.2 2.2 0 1 0 -4.4 0a2.2 2.2 0 1 0 4.4 0M527.84 574.73a2.2 2.2 0 1 0 -4.4 0a2.2 2.2 0 1 0 4.4 0M605.52 566.47a2.2 2.2 0 1 0 -4.4 0a2.2 2.2 0 1 0 4.4 0M463.57 570.79a2.2 2.2 0 1 0 -4.4 0a2.2 2.2 0 1 0 4.4 0M512.13 632.58a2.2 2.2 0 1 0 -4.4 0a2.2 2.2 0 1 0 4.4 0M489.40 643.69a2.2 2.2 0 1 0 -4.4 0a2.2 2.2 0 1 0 4.4 0M449.13 663.02a2.2 2.2 0 1 0 -4.4 0a2.2 2.2 0 1 0 4.4 0M443.94 580.66a2.2 2.2 0 1 0 -4.4 0a2.2 2.2 0 1 0 4.4 0M519.75 568.51a2.2 2.2 0 1 0 -4.4 0a2.2 2.2 0 1 0 4.4 0M495.79 584.92a2.2 2.2 0 1 0 -4.4 0a2.2 2.2 0 1 0 4.4 0M443.27 633.39a2.2 2.2 0 1 0 -4.4 0a2.2 2.2 0 1 0 4.4 0M470.14 545.55a2.2 2.2 0 1 0 -4.4 0a2.2 2.2 0 1 0 4.4 0M615.88 612.17a2.2 2.2 0 1 0 -4.4 0a2.2 2.2 0 1 0 4.4 0M491.08 539.46a2.2 2.2 0 1 0 -4.4 0a2.2 2.2 0 1 0 4.4 0M521.49 580.71a2.2 2.2 0 1 0 -4.4 0a2.2 2.2 0 1 0 4.4 0M472.19 554.95a2.2 2.2 0 1 0 -4.4 0a2.2 2.2 0 1 0 4.4 0M437.64 587.09a2.2 2.2 0 1 0 -4.4 0a2.2 2.2 0 1 0 4.4 0M464.28 598.11a2.2 2.2 0 1 0 -4.4 0a2.2 2.2 0 1 0 4.4 0M569.77 629.09a2.2 2.2 0 1 0 -4.4 0a2.2 2.2 0 1 0 4.4 0M420.81 615.96a2.2 2.2 0 1 0 -4.4 0a2.2 2.2 0 1 0 4.4 0M430.09 597.52a2.2 2.2 0 1 0 -4.4 0a2.2 2.2 0 1 0 4.4 0M620.25 591.76a2.2 2.2 0 1 0 -4.4 0a2.2 2.2 0 1 0 4.4 0M449.90 599.64a2.2 2.2 0 1 0 -4.4 0a2.2 2.2 0 1 0 4.4 0M448.94 603.51a2.2 2.2 0 1 0 -4.4 0a2.2 2.2 0 1 0 4.4 0M485.58 591.16a2.2 2.2 0 1 0 -4.4 0a2.2 2.2 0 1 0 4.4 0M446.80 615.89a2.2 2.2 0 1 0 -4.4 0a2.2 2.2 0 1 0 4.4 0M749.98 609.47a2.2 2.2 0 1 0 -4.4 0a2.2 2.2 0 1 0 4.4 0M494.77 648.00a2.2 2.2 0 1 0 -4.4 0a2.2 2.2 0 1 0 4.4 0M445.35 568.88a2.2 2.2 0 1 0 -4.4 0a2.2 2.2 0 1 0 4.4 0M442.80 594.38a2.2 2.2 0 1 0 -4.4 0a2.2 2.2 0 1 0 4.4 0M439.35 600.36a2.2 2.2 0 1 0 -4.4 0a2.2 2.2 0 1 0 4.4 0M471.77 623.91a2.2 2.2 0 1 0 -4.4 0a2.2 2.2 0 1 0 4.4 0M497.62 602.48a2.2 2.2 0 1 0 -4.4 0a2.2 2.2 0 1 0 4.4 0M563.54 629.77a2.2 2.2 0 1 0 -4.4 0a2.2 2.2 0 1 0 4.4 0M464.98 631.45a2.2 2.2 0 1 0 -4.4 0a2.2 2.2 0 1 0 4.4 0M533.74 661.96a2.2 2.2 0 1 0 -4.4 0a2.2 2.2 0 1 0 4.4 0M445.49 563.25a2.2 2.2 0 1 0 -4.4 0a2.2 2.2 0 1 0 4.4 0M463.61 590.64a2.2 2.2 0 1 0 -4.4 0a2.2 2.2 0 1 0 4.4 0M589.12 635.50a2.2 2.2 0 1 0 -4.4 0a2.2 2.2 0 1 0 4.4 0M704.07 553.85a2.2 2.2 0 1 0 -4.4 0a2.2 2.2 0 1 0 4.4 0M439.57 576.70a2.2 2.2 0 1 0 -4.4 0a2.2 2.2 0 1 0 4.4 0M517.71 574.54a2.2 2.2 0 1 0 -4.4 0a2.2 2.2 0 1 0 4.4 0M523.75 606.50a2.2 2.2 0 1 0 -4.4 0a2.2 2.2 0 1 0 4.4 0M424.95 610.53a2.2 2.2 0 1 0 -4.4 0a2.2 2.2 0 1 0 4.4 0M565.30 597.76a2.2 2.2 0 1 0 -4.4 0a2.2 2.2 0 1 0 4.4 0M495.40 582.29a2.2 2.2 0 1 0 -4.4 0a2.2 2.2 0 1 0 4.4 0M463.50 568.71a2.2 2.2 0 1 0 -4.4 0a2.2 2.2 0 1 0 4.4 0M606.60 544.52a2.2 2.2 0 1 0 -4.4 0a2.2 2.2 0 1 0 4.4 0M467.06 615.25a2.2 2.2 0 1 0 -4.4 0a2.2 2.2 0 1 0 4.4 0M437.62 632.03a2.2 2.2 0 1 0 -4.4 0a2.2 2.2 0 1 0 4.4 0M745.37 589.27a2.2 2.2 0 1 0 -4.4 0a2.2 2.2 0 1 0 4.4 0M593.59 498.82a2.2 2.2 0 1 0 -4.4 0a2.2 2.2 0 1 0 4.4 0M570.91 610.47a2.2 2.2 0 1 0 -4.4 0a2.2 2.2 0 1 0 4.4 0M558.50 557.69a2.2 2.2 0 1 0 -4.4 0a2.2 2.2 0 1 0 4.4 0M551.43 601.46a2.2 2.2 0 1 0 -4.4 0a2.2 2.2 0 1 0 4.4 0M491.22 615.71a2.2 2.2 0 1 0 -4.4 0a2.2 2.2 0 1 0 4.4 0M503.06 619.38a2.2 2.2 0 1 0 -4.4 0a2.2 2.2 0 1 0 4.4 0M593.98 604.71a2.2 2.2 0 1 0 -4.4 0a2.2 2.2 0 1 0 4.4 0M520.71 538.59a2.2 2.2 0 1 0 -4.4 0a2.2 2.2 0 1 0 4.4 0M545.76 584.52a2.2 2.2 0 1 0 -4.4 0a2.2 2.2 0 1 0 4.4 0M650.06 577.64a2.2 2.2 0 1 0 -4.4 0a2.2 2.2 0 1 0 4.4 0M462.66 566.48a2.2 2.2 0 1 0 -4.4 0a2.2 2.2 0 1 0 4.4 0M602.02 522.51a2.2 2.2 0 1 0 -4.4 0a2.2 2.2 0 1 0 4.4 0M523.67 567.46a2.2 2.2 0 1 0 -4.4 0a2.2 2.2 0 1 0 4.4 0M529.69 646.74a2.2 2.2 0 1 0 -4.4 0a2.2 2.2 0 1 0 4.4 0M427.56 630.82a2.2 2.2 0 1 0 -4.4 0a2.2 2.2 0 1 0 4.4 0M484.14 653.05a2.2 2.2 0 1 0 -4.4 0a2.2 2.2 0 1 0 4.4 0M511.72 694.72a2.2 2.2 0 1 0 -4.4 0a2.2 2.2 0 1 0 4.4 0M489.67 551.24a2.2 2.2 0 1 0 -4.4 0a2.2 2.2 0 1 0 4.4 0M460.71 611.77a2.2 2.2 0 1 0 -4.4 0a2.2 2.2 0 1 0 4.4 0M518.46 583.91a2.2 2.2 0 1 0 -4.4 0a2.2 2.2 0 1 0 4.4 0M494.24 559.65a2.2 2.2 0 1 0 -4.4 0a2.2 2.2 0 1 0 4.4 0M542.34 613.98a2.2 2.2 0 1 0 -4.4 0a2.2 2.2 0 1 0 4.4 0M456.08 603.34a2.2 2.2 0 1 0 -4.4 0a2.2 2.2 0 1 0 4.4 0M489.50 585.35a2.2 2.2 0 1 0 -4.4 0a2.2 2.2 0 1 0 4.4 0M537.25 590.04a2.2 2.2 0 1 0 -4.4 0a2.2 2.2 0 1 0 4.4 0M537.97 623.31a2.2 2.2 0 1 0 -4.4 0a2.2 2.2 0 1 0 4.4 0M583.09 572.97a2.2 2.2 0 1 0 -4.4 0a2.2 2.2 0 1 0 4.4 0M629.17 573.84a2.2 2.2 0 1 0 -4.4 0a2.2 2.2 0 1 0 4.4 0M547.54 604.28a2.2 2.2 0 1 0 -4.4 0a2.2 2.2 0 1 0 4.4 0M447.01 639.18a2.2 2.2 0 1 0 -4.4 0a2.2 2.2 0 1 0 4.4 0M443.18 575.67a2.2 2.2 0 1 0 -4.4 0a2.2 2.2 0 1 0 4.4 0M437.49 549.87a2.2 2.2 0 1 0 -4.4 0a2.2 2.2 0 1 0 4.4 0M423.71 549.53a2.2 2.2 0 1 0 -4.4 0a2.2 2.2 0 1 0 4.4 0M512.91 565.66a2.2 2.2 0 1 0 -4.4 0a2.2 2.2 0 1 0 4.4 0M585.99 616.62a2.2 2.2 0 1 0 -4.4 0a2.2 2.2 0 1 0 4.4 0M450.03 616.55a2.2 2.2 0 1 0 -4.4 0a2.2 2.2 0 1 0 4.4 0M446.16 616.79a2.2 2.2 0 1 0 -4.4 0a2.2 2.2 0 1 0 4.4 0M565.29 606.93a2.2 2.2 0 1 0 -4.4 0a2.2 2.2 0 1 0 4.4 0M516.24 571.72a2.2 2.2 0 1 0 -4.4 0a2.2 2.2 0 1 0 4.4 0M446.22 589.84a2.2 2.2 0 1 0 -4.4 0a2.2 2.2 0 1 0 4.4 0M534.10 659.22a2.2 2.2 0 1 0 -4.4 0a2.2 2.2 0 1 0 4.4 0M423.51 659.45a2.2 2.2 0 1 0 -4.4 0a2.2 2.2 0 1 0 4.4 0M441.04 596.48a2.2 2.2 0 1 0 -4.4 0a2.2 2.2 0 1 0 4.4 0M448.77 592.01a2.2 2.2 0 1 0 -4.4 0a2.2 2.2 0 1 0 4.4 0M734.07 670.55a2.2 2.2 0 1 0 -4.4 0a2.2 2.2 0 1 0 4.4 0M485.41 626.58a2.2 2.2 0 1 0 -4.4 0a2.2 2.2 0 1 0 4.4 0M468.25 596.69a2.2 2.2 0 1 0 -4.4 0a2.2 2.2 0 1 0 4.4 0M582.47 550.37a2.2 2.2 0 1 0 -4.4 0a2.2 2.2 0 1 0 4.4 0M522.29 664.98a2.2 2.2 0 1 0 -4.4 0a2.2 2.2 0 1 0 4.4 0M479.26 637.52a2.2 2.2 0 1 0 -4.4 0a2.2 2.2 0 1 0 4.4 0M549.26 631.40a2.2 2.2 0 1 0 -4.4 0a2.2 2.2 0 1 0 4.4 0M618.52 595.38a2.2 2.2 0 1 0 -4.4 0a2.2 2.2 0 1 0 4.4 0M438.82 585.40a2.2 2.2 0 1 0 -4.4 0a2.2 2.2 0 1 0 4.4 0M551.28 605.21a2.2 2.2 0 1 0 -4.4 0a2.2 2.2 0 1 0 4.4 0M474.65 651.20a2.2 2.2 0 1 0 -4.4 0a2.2 2.2 0 1 0 4.4 0M425.60 618.87a2.2 2.2 0 1 0 -4.4 0a2.2 2.2 0 1 0 4.4 0M456.07 616.68a2.2 2.2 0 1 0 -4.4 0a2.2 2.2 0 1 0 4.4 0M460.31 602.21a2.2 2.2 0 1 0 -4.4 0a2.2 2.2 0 1 0 4.4 0M455.80 541.38a2.2 2.2 0 1 0 -4.4 0a2.2 2.2 0 1 0 4.4 0M586.25 615.94a2.2 2.2 0 1 0 -4.4 0a2.2 2.2 0 1 0 4.4 0M448.56 595.21a2.2 2.2 0 1 0 -4.4 0a2.2 2.2 0 1 0 4.4 0M523.57 621.68a2.2 2.2 0 1 0 -4.4 0a2.2 2.2 0 1 0 4.4 0M708.74 634.48a2.2 2.2 0 1 0 -4.4 0a2.2 2.2 0 1 0 4.4 0M440.21 575.08a2.2 2.2 0 1 0 -4.4 0a2.2 2.2 0 1 0 4.4 0M422.55 631.72a2.2 2.2 0 1 0 -4.4 0a2.2 2.2 0 1 0 4.4 0M567.15 505.97a2.2 2.2 0 1 0 -4.4 0a2.2 2.2 0 1 0 4.4 0M418.29 593.66a2.2 2.2 0 1 0 -4.4 0a2.2 2.2 0 1 0 4.4 0M506.06 594.05a2.2 2.2 0 1 0 -4.4 0a2.2 2.2 0 1 0 4.4 0M452.31 599.92a2.2 2.2 0 1 0 -4.4 0a2.2 2.2 0 1 0 4.4 0M442.48 535.38a2.2 2.2 0 1 0 -4.4 0a2.2 2.2 0 1 0 4.4 0M443.35 576.02a2.2 2.2 0 1 0 -4.4 0a2.2 2.2 0 1 0 4.4 0M449.08 606.41a2.2 2.2 0 1 0 -4.4 0a2.2 2.2 0 1 0 4.4 0M465.73 635.77a2.2 2.2 0 1 0 -4.4 0a2.2 2.2 0 1 0 4.4 0M501.79 629.39a2.2 2.2 0 1 0 -4.4 0a2.2 2.2 0 1 0 4.4 0M474.20 620.99a2.2 2.2 0 1 0 -4.4 0a2.2 2.2 0 1 0 4.4 0M495.00 557.66a2.2 2.2 0 1 0 -4.4 0a2.2 2.2 0 1 0 4.4 0M631.70 605.35a2.2 2.2 0 1 0 -4.4 0a2.2 2.2 0 1 0 4.4 0M548.73 622.80a2.2 2.2 0 1 0 -4.4 0a2.2 2.2 0 1 0 4.4 0M484.97 570.02a2.2 2.2 0 1 0 -4.4 0a2.2 2.2 0 1 0 4.4 0M518.55 552.56a2.2 2.2 0 1 0 -4.4 0a2.2 2.2 0 1 0 4.4 0M440.28 621.45a2.2 2.2 0 1 0 -4.4 0a2.2 2.2 0 1 0 4.4 0M612.78 608.52a2.2 2.2 0 1 0 -4.4 0a2.2 2.2 0 1 0 4.4 0M533.37 584.34a2.2 2.2 0 1 0 -4.4 0a2.2 2.2 0 1 0 4.4 0M487.25 599.33a2.2 2.2 0 1 0 -4.4 0a2.2 2.2 0 1 0 4.4 0M526.54 582.05a2.2 2.2 0 1 0 -4.4 0a2.2 2.2 0 1 0 4.4 0M474.25 541.34a2.2 2.2 0 1 0 -4.4 0a2.2 2.2 0 1 0 4.4 0M489.04 599.72a2.2 2.2 0 1 0 -4.4 0a2.2 2.2 0 1 0 4.4 0M468.77 604.98a2.2 2.2 0 1 0 -4.4 0a2.2 2.2 0 1 0 4.4 0M448.35 579.14a2.2 2.2 0 1 0 -4.4 0a2.2 2.2 0 1 0 4.4 0M615.80 602.84a2.2 2.2 0 1 0 -4.4 0a2.2 2.2 0 1 0 4.4 0M535.15 573.82a2.2 2.2 0 1 0 -4.4 0a2.2 2.2 0 1 0 4.4 0M463.60 604.69a2.2 2.2 0 1 0 -4.4 0a2.2 2.2 0 1 0 4.4 0M512.86 584.55a2.2 2.2 0 1 0 -4.4 0a2.2 2.2 0 1 0 4.4 0M553.36 646.58a2.2 2.2 0 1 0 -4.4 0a2.2 2.2 0 1 0 4.4 0M530.28 596.11a2.2 2.2 0 1 0 -4.4 0a2.2 2.2 0 1 0 4.4 0M712.08 608.90a2.2 2.2 0 1 0 -4.4 0a2.2 2.2 0 1 0 4.4 0M450.76 637.51a2.2 2.2 0 1 0 -4.4 0a2.2 2.2 0 1 0 4.4 0M420.26 610.52a2.2 2.2 0 1 0 -4.4 0a2.2 2.2 0 1 0 4.4 0M433.60 584.66a2.2 2.2 0 1 0 -4.4 0a2.2 2.2 0 1 0 4.4 0M469.10 592.68a2.2 2.2 0 1 0 -4.4 0a2.2 2.2 0 1 0 4.4 0M659.49 578.21a2.2 2.2 0 1 0 -4.4 0a2.2 2.2 0 1 0 4.4 0M649.03 566.96a2.2 2.2 0 1 0 -4.4 0a2.2 2.2 0 1 0 4.4 0M458.88 568.22a2.2 2.2 0 1 0 -4.4 0a2.2 2.2 0 1 0 4.4 0M462.65 608.25a2.2 2.2 0 1 0 -4.4 0a2.2 2.2 0 1 0 4.4 0M455.84 642.42a2.2 2.2 0 1 0 -4.4 0a2.2 2.2 0 1 0 4.4 0M629.77 610.16a2.2 2.2 0 1 0 -4.4 0a2.2 2.2 0 1 0 4.4 0M545.85 559.62a2.2 2.2 0 1 0 -4.4 0a2.2 2.2 0 1 0 4.4 0M564.88 601.87a2.2 2.2 0 1 0 -4.4 0a2.2 2.2 0 1 0 4.4 0M460.86 650.23a2.2 2.2 0 1 0 -4.4 0a2.2 2.2 0 1 0 4.4 0M475.45 582.29a2.2 2.2 0 1 0 -4.4 0a2.2 2.2 0 1 0 4.4 0M576.68 590.40a2.2 2.2 0 1 0 -4.4 0a2.2 2.2 0 1 0 4.4 0M485.14 609.17a2.2 2.2 0 1 0 -4.4 0a2.2 2.2 0 1 0 4.4 0M483.14 592.67a2.2 2.2 0 1 0 -4.4 0a2.2 2.2 0 1 0 4.4 0M534.99 548.90a2.2 2.2 0 1 0 -4.4 0a2.2 2.2 0 1 0 4.4 0M694.11 549.23a2.2 2.2 0 1 0 -4.4 0a2.2 2.2 0 1 0 4.4 0M513.48 613.68a2.2 2.2 0 1 0 -4.4 0a2.2 2.2 0 1 0 4.4 0M491.80 596.01a2.2 2.2 0 1 0 -4.4 0a2.2 2.2 0 1 0 4.4 0M479.59 646.05a2.2 2.2 0 1 0 -4.4 0a2.2 2.2 0 1 0 4.4 0M565.49 617.65a2.2 2.2 0 1 0 -4.4 0a2.2 2.2 0 1 0 4.4 0M548.55 531.85a2.2 2.2 0 1 0 -4.4 0a2.2 2.2 0 1 0 4.4 0M545.25 547.91a2.2 2.2 0 1 0 -4.4 0a2.2 2.2 0 1 0 4.4 0M464.84 602.51a2.2 2.2 0 1 0 -4.4 0a2.2 2.2 0 1 0 4.4 0M536.65 621.25a2.2 2.2 0 1 0 -4.4 0a2.2 2.2 0 1 0 4.4 0M552.65 640.31a2.2 2.2 0 1 0 -4.4 0a2.2 2.2 0 1 0 4.4 0M441.24 524.06a2.2 2.2 0 1 0 -4.4 0a2.2 2.2 0 1 0 4.4 0M483.56 594.64a2.2 2.2 0 1 0 -4.4 0a2.2 2.2 0 1 0 4.4 0M478.01 617.00a2.2 2.2 0 1 0 -4.4 0a2.2 2.2 0 1 0 4.4 0M444.33 560.26a2.2 2.2 0 1 0 -4.4 0a2.2 2.2 0 1 0 4.4 0M484.64 634.45a2.2 2.2 0 1 0 -4.4 0a2.2 2.2 0 1 0 4.4 0M486.95 571.42a2.2 2.2 0 1 0 -4.4 0a2.2 2.2 0 1 0 4.4 0M535.42 547.20a2.2 2.2 0 1 0 -4.4 0a2.2 2.2 0 1 0 4.4 0M597.08 605.32a2.2 2.2 0 1 0 -4.4 0a2.2 2.2 0 1 0 4.4 0M432.98 548.73a2.2 2.2 0 1 0 -4.4 0a2.2 2.2 0 1 0 4.4 0M438.77 576.26a2.2 2.2 0 1 0 -4.4 0a2.2 2.2 0 1 0 4.4 0" stroke="#111" stroke-width="2.2" fill="none"/><path d="M415.88 594.26 L416.14 594.28 L416.24 594.29 L416.49 594.31 L416.75 594.33 L416.89 594.34 L417.07 594.36 L417.77 594.42 L418.03 594.44 L418.06 594.44 L418.32 594.46 L418.61 594.49 L418.87 594.51 L419.29 594.54 L419.84 594.59 L420.19 594.62 L420.76 594.67 L421.06 594.69 L421.51 594.73 L421.91 594.76 L422.34 594.80 L422.75 594.83 L423.15 594.86 L423.51 594.89 L423.78 594.92 L424.73 594.99 L425.36 595.05 L425.58 595.06 L426.12 595.11 L426.42 595.13 L427.39 595.21 L428.06 595.26 L428.10 595.26 L428.68 595.31 L429.03 595.34 L429.26 595.35 L430.35 595.44 L430.49 595.45 L430.78 595.47 L431.24 595.51 L431.64 595.54 L432.36 595.59 L432.96 595.64 L433.80 595.70 L434.33 595.74 L434.52 595.75 L434.75 595.77 L435.24 595.81 L435.44 595.82 L436.62 595.91 L437.37 595.96 L437.98 596.00 L438.08 596.01 L438.53 596.04 L438.84 596.06 L439.04 596.08 L440.01 596.15 L440.28 596.16 L440.56 596.18 L440.71 596.19 L441.06 596.22 L441.26 596.23 L441.74 596.26 L442.03 596.28 L442.84 596.34 L443.21 596.36 L443.34 596.37 L443.80 596.40 L443.96 596.41 L444.08 596.42 L444.60 596.46 L445.25 596.50 L446.15 596.56 L446.36 596.57 L446.70 596.60 L446.86 596.61 L446.94 596.61 L447.72 596.66 L447.98 596.68 L448.56 596.72 L448.69 596.73 L449.56 596.78 L449.80 596.80 L450.11 596.82 L450.67 596.86 L450.84 596.87 L451.54 596.92 L451.83 596.94 L452.08 596.95 L452.37 596.97 L452.84 597.00 L453.24 597.03 L453.45 597.04 L453.64 597.06 L453.91 597.08 L454.07 597.09 L454.53 597.12 L454.77 597.13 L455.14 597.16 L455.51 597.19 L456.31 597.24 L456.68 597.27 L457.46 597.33 L457.73 597.35 L458.27 597.38 L458.66 597.41 L459.35 597.46 L459.76 597.49 L459.93 597.51 L460.46 597.55 L460.98 597.59 L461.30 597.61 L461.41 597.62 L461.56 597.63 L462.08 597.67 L462.78 597.73 L463.53 597.79 L464.27 597.84 L464.81 597.89 L464.96 597.90 L465.46 597.94 L466.05 597.98 L466.83 598.04 L467.02 598.05 L467.63 598.10 L469.55 598.20 L469.69 598.20 L470.15 598.20 L470.50 598.19 L470.75 598.19 L471.12 598.19 L471.71 598.19 L472.15 598.19 L472.44 598.19 L472.58 598.19 L472.84 598.19 L473.32 598.19 L473.51 598.19 L473.83 598.19 L474.29 598.18 L474.88 598.17 L475.30 598.16 L475.64 598.16 L476.07 598.15 L476.38 598.14 L477.02 598.13 L477.17 598.13 L477.38 598.13 L477.56 598.13 L477.96 598.12 L478.43 598.11 L478.98 598.10 L479.44 598.09 L480.51 598.07 L481.13 598.05 L481.89 598.04 L481.99 598.03 L482.44 598.02 L482.77 598.02 L483.01 598.01 L483.38 598.00 L484.23 597.98 L484.98 597.96 L486.41 597.93 L487.30 597.90 L487.44 597.90 L487.99 597.89 L488.70 597.87 L489.03 597.86 L489.51 597.84 L489.93 597.83 L490.24 597.83 L491.24 597.80 L492.04 597.78 L492.34 597.77 L492.57 597.76 L492.80 597.76 L493.59 597.74 L494.51 597.72 L494.92 597.72 L495.67 597.70 L496.38 597.69 L496.82 597.68 L497.13 597.67 L497.31 597.67 L498.37 597.67 L498.99 597.67 L499.59 597.68 L500.03 597.68 L500.60 597.68 L500.86 597.68 L501.22 597.68 L502.51 597.69 L502.94 597.70 L503.86 597.71 L504.26 597.71 L505.82 597.73 L507.23 597.75 L507.81 597.76 L508.54 597.76 L508.92 597.76 L509.91 597.77 L510.12 597.77 L510.55 597.78 L510.71 597.78 L510.90 597.78 L511.28 597.78 L511.73 597.78 L513.17 597.78 L513.56 597.77 L514.04 597.77 L514.24 597.77 L515.48 597.76 L515.73 597.76 L516.35 597.76 L517.36 597.74 L518.06 597.72 L518.51 597.72 L518.84 597.71 L519.35 597.70 L520.09 597.69 L520.73 597.67 L521.37 597.66 L521.55 597.66 L522.09 597.64 L522.74 597.63 L523.27 597.62 L524.05 597.60 L524.15 597.60 L524.64 597.58 L525.64 597.56 L525.95 597.55 L526.88 597.53 L527.49 597.51 L528.19 597.49 L529.49 597.45 L530.04 597.44 L530.60 597.42 L531.17 597.40 L531.90 597.38 L533.22 597.34 L533.58 597.33 L534.82 597.29 L535.51 597.27 L535.86 597.26 L536.28 597.25 L537.40 597.22 L538.38 597.19 L539.03 597.18 L539.88 597.15 L540.21 597.14 L540.52 597.14 L541.68 597.11 L542.28 597.10 L542.80 597.09 L543.57 597.07 L543.65 597.07 L544.45 597.05 L545.05 597.04 L545.89 597.02 L546.35 597.02 L547.06 597.00 L547.38 596.99 L548.76 596.97 L549.23 596.96 L549.79 596.95 L551.07 596.93 L551.75 596.92 L553.15 596.90 L553.72 596.89 L554.54 596.87 L555.60 596.86 L556.15 596.86 L556.36 596.86 L556.77 596.85 L557.84 596.84 L559.95 596.83 L561.03 596.82 L561.63 596.81 L563.09 596.80 L563.29 596.80 L564.95 596.77 L566.65 596.75 L567.73 596.73 L568.51 596.72 L571.29 596.66 L573.20 596.61 L574.48 596.58 L578.18 596.48 L580.27 596.42 L582.87 596.34 L583.85 596.31 L585.59 596.26 L588.24 596.17 L591.39 596.06 L593.08 596.01 L595.17 595.93 L597.71 595.84 L600.39 595.74 L604.40 595.60 L605.81 595.55 L610.58 595.39 L612.88 595.32 L614.82 595.26 L617.31 595.19 L619.31 595.14 L621.00 595.09 L623.60 595.03 L626.30 594.97 L627.57 594.94 L629.50 594.90 L631.42 594.86 L635.29 594.78 L639.21 594.69 L643.37 594.60 L647.70 594.48 L649.05 594.44 L657.29 594.15 L660.73 594.01 L668.02 593.69 L674.99 593.36 L683.82 592.93 L691.91 592.57 L700.18 592.27 L706.54 592.10 L712.94 591.97 L727.12 591.79 L733.67 591.74 L743.17 591.69 L749.67 591.66 L761.74 591.60 L783.10 591.48 L814.73 591.21 L908.68 590.17 L908.68 590.17" stroke="#DF536B" stroke-width="0.9" fill="none"/><rect x="349.2" y="461.2" width="581.00" height="266.90" stroke="#111" stroke-width="0.8" fill="none"/><path d="M370.72 728.1v6M460.55 728.1v6M550.38 728.1v6M640.22 728.1v6M730.05 728.1v6M819.88 728.1v6M909.71 728.1v6M349.2 663.29h-6M349.2 596.94h-6M349.2 530.58h-6M349.2 464.22h-6" stroke="#111" stroke-width="0.8"/><g style="font-family:'Liberation Sans',sans-serif"><text x="370.72" y="749.30" font-size="9.79" text-anchor="middle" fill="#000">0.000</text><text x="460.55" y="749.30" font-size="9.79" text-anchor="middle" fill="#000">0.002</text><text x="550.38" y="749.30" font-size="9.79" text-anchor="middle" fill="#000">0.004</text><text x="640.22" y="749.30" font-size="9.79" text-anchor="middle" fill="#000">0.006</text><text x="730.05" y="749.30" font-size="9.79" text-anchor="middle" fill="#000">0.008</text><text x="819.88" y="749.30" font-size="9.79" text-anchor="middle" fill="#000">0.010</text><text x="909.71" y="749.30" font-size="9.79" text-anchor="middle" fill="#000">0.012</text><text x="334.80" y="663.29" font-size="9.79" text-anchor="middle" fill="#000" transform="rotate(-90 334.80 663.29)">-2</text><text x="334.80" y="596.94" font-size="9.79" text-anchor="middle" fill="#000" transform="rotate(-90 334.80 596.94)">0</text><text x="334.80" y="530.58" font-size="9.79" text-anchor="middle" fill="#000" transform="rotate(-90 334.80 530.58)">2</text><text x="334.80" y="464.22" font-size="9.79" text-anchor="middle" fill="#000" transform="rotate(-90 334.80 464.22)">4</text><text x="639.70" y="456.00" font-size="9.79" text-anchor="middle" fill="#000">Residuals vs Leverage</text><text x="639.70" y="772.80" font-size="9.79" text-anchor="middle" fill="#000">Leverage</text><text x="639.70" y="784.50" font-size="9.79" text-anchor="middle" fill="#000">lm(y ~ x1 + x2)</text><text x="311.30" y="594.65" font-size="9.79" text-anchor="middle" fill="#000" transform="rotate(-90 311.30 594.65)">Standardized residuals</text><path d="M358.7 719.35H379.8" stroke="#DF536B" stroke-width="0.9" stroke-dasharray="3.9 2.9"/><text x="389.20" y="722.90" font-size="9.79" text-anchor="start" fill="#000">Cook's distance</text><text x="737.97" y="680.43" font-size="7.34" text-anchor="end" fill="#000">439</text><text x="594.59" y="501.42" font-size="7.34" text-anchor="start" fill="#000">867</text><text x="663.83" y="515.50" font-size="7.34" text-anchor="end" fill="#000">265</text></g></svg>
<div class="a" style="left:2px;top:914px;width:1532px;height:1px;background:#1b1f23;"></div>
<svg class="a" style="left:9px;top:915px;" width="14" height="16" viewBox="0 0 14 16" fill="none"><path d="M3.2 6.8L6.4 9.8 3.2 13M9.8 3.2L6.6 6.3 9.8 9.5" stroke="#e6f0ff" stroke-width="1.15" fill="none"/></svg>
<svg class="a" style="left:36.5px;top:917.5px;" width="12" height="12" viewBox="0 0 12 12" fill="none"><circle cx="6" cy="6" r="5.2" stroke="#c3c8cd" stroke-width="1"/><path d="M3.8 3.8l4.4 4.4M8.2 3.8L3.8 8.2" stroke="#c3c8cd" stroke-width="1"/></svg>
<div class="t" style="left:51.5px;top:917.04px;font-size:10.6px;line-height:12.72px;color:#d1d5da;font-weight:400;font-family:'Liberation Sans',sans-serif;">0</div>
<svg class="a" style="left:61.5px;top:917.5px;" width="12" height="11.5" viewBox="0 0 12 11.5" fill="none"><path d="M6 1L11.2 10.5H0.8z" stroke="#c3c8cd" stroke-width="1" stroke-linejoin="round"/><path d="M6 4.2v3.3M6 8.4v.8" stroke="#c3c8cd" stroke-width="1"/></svg>
<div class="t" style="left:76px;top:917.04px;font-size:10.6px;line-height:12.72px;color:#d1d5da;font-weight:400;font-family:'Liberation Sans',sans-serif;">0</div>
<div class="t" style="left:1181px;top:917.27px;font-size:10.55px;line-height:12.66px;color:#d1d5da;font-weight:400;font-family:'Liberation Sans',sans-serif;">R 4.1.3: 25159</div>
<div class="t" style="left:1263.4px;top:917.30px;font-size:10.5px;line-height:12.6px;color:#d1d5da;font-weight:400;font-family:'Liberation Sans',sans-serif;">Ln 14, Col 1</div>
<div class="t" style="left:1332.5px;top:917.30px;font-size:10.5px;line-height:12.6px;color:#d1d5da;font-weight:400;font-family:'Liberation Sans',sans-serif;">Spaces: 2</div>
<div class="t" style="left:1394px;top:917.30px;font-size:10.5px;line-height:12.6px;color:#d1d5da;font-weight:400;font-family:'Liberation Sans',sans-serif;">UTF-8</div>
<div class="t" style="left:1438.6px;top:917.30px;font-size:10.5px;line-height:12.6px;color:#d1d5da;font-weight:400;font-family:'Liberation Sans',sans-serif;">LF</div>
<div class="t" style="left:1464px;top:917.30px;font-size:10.5px;line-height:12.6px;color:#d1d5da;font-weight:400;font-family:'Liberation Sans',sans-serif;">R</div>
<svg class="a" style="left:1484.5px;top:917.5px;" width="13" height="12" viewBox="0 0 13 12" fill="none"><path d="M4.5 1.2h7.5v6H9.5L8 8.5" stroke="#c3c8cd" stroke-width="1" fill="none"/><circle cx="5" cy="7.2" r="1.8" stroke="#c3c8cd" stroke-width="1"/><path d="M1.5 11.5c.5-1.8 1.8-2.6 3.5-2.6s3 .8 3.5 2.6" stroke="#c3c8cd" stroke-width="1"/></svg>
<svg class="a" style="left:1511.5px;top:917.5px;" width="12" height="12" viewBox="0 0 12 12" fill="none"><path d="M2.5 9V5.5a3.5 3.5 0 0 1 7 0V9l1 1h-9z M5 10.8a1 1 0 0 0 2 0" stroke="#c3c8cd" stroke-width="1" stroke-linejoin="round"/></svg>
</body></html>
